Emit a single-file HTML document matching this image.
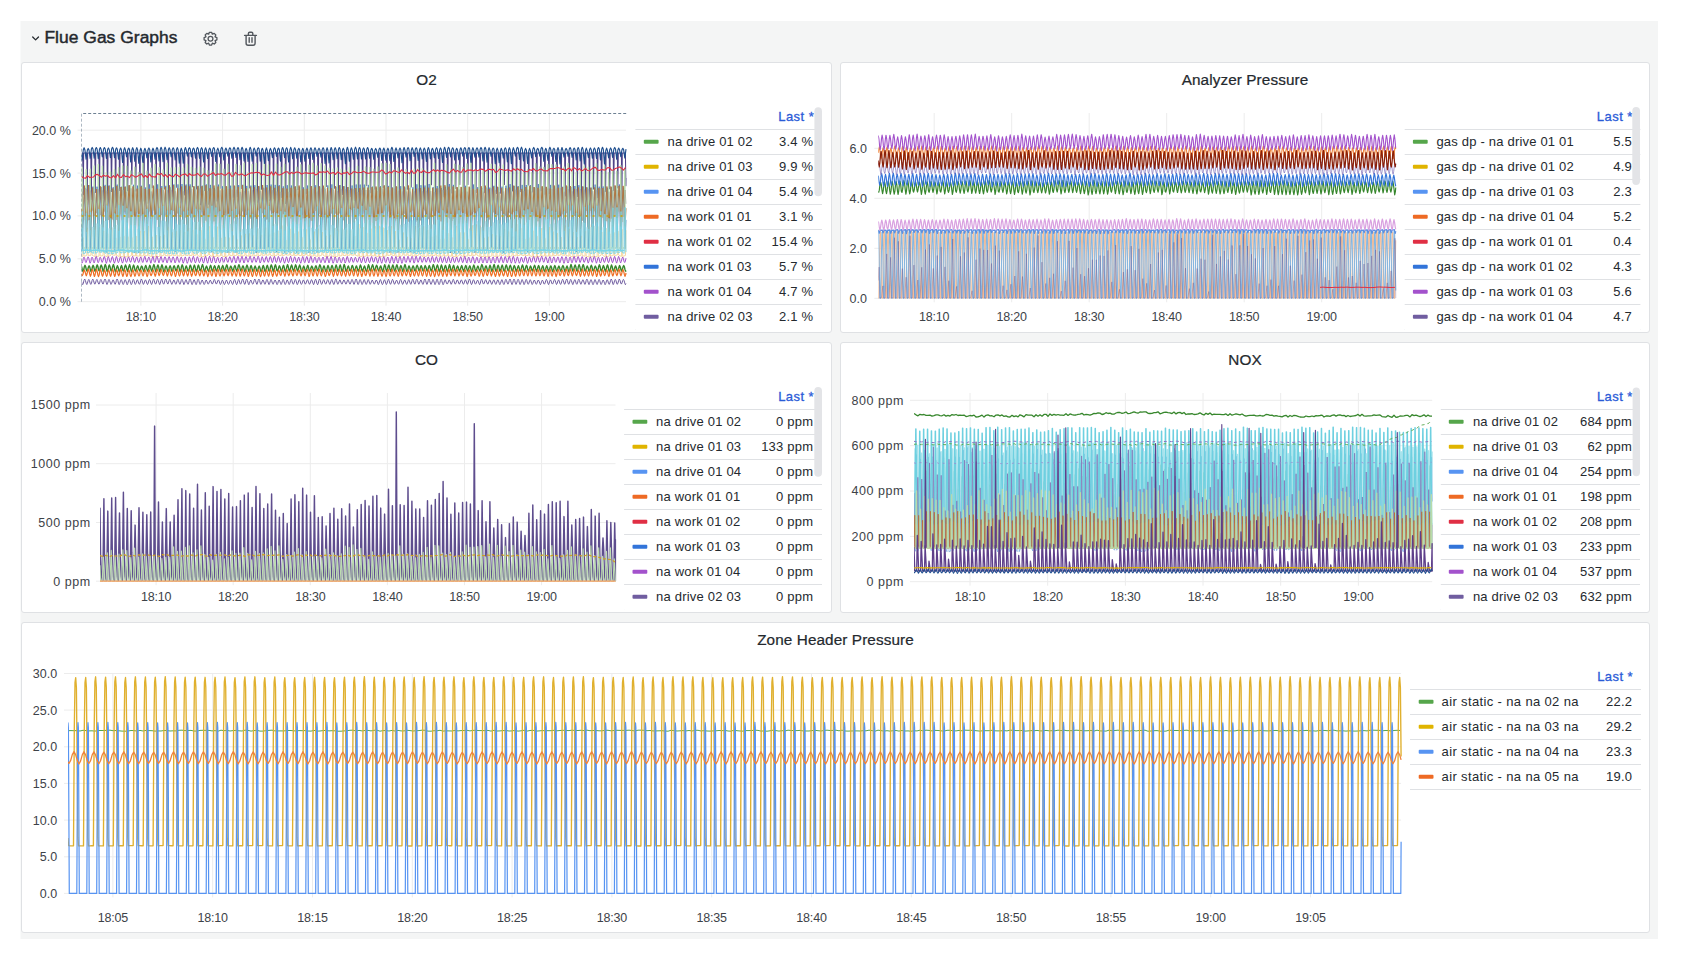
<!DOCTYPE html><html><head><meta charset="utf-8"><style>html,body{margin:0;padding:0;background:#fff;width:1682px;height:972px;overflow:hidden}svg{display:block}text{font-family:"Liberation Sans", sans-serif}</style></head><body>
<svg width="1682" height="972" viewBox="0 0 1682 972">
<rect x="20.5" y="21" width="1637.5" height="918" fill="#f4f5f5"/>
<path d="M32.7 37.0 L35.6 39.9 L38.5 37.0" fill="none" stroke="#24292e" stroke-width="1.3" stroke-linecap="round" stroke-linejoin="round"/>
<text x="44.4" y="43.2" font-size="17.4" text-anchor="start" fill="#24292e" font-weight="400" letter-spacing="0.05" stroke="#24292e" stroke-width="0.45">Flue Gas Graphs</text>
<path d="M208.66 34.16 L209.37 32.30 L211.63 32.30 L212.34 34.16 L212.41 34.19 L214.23 33.38 L215.82 34.97 L215.01 36.79 L215.04 36.86 L216.90 37.57 L216.90 39.83 L215.04 40.54 L215.01 40.61 L215.82 42.43 L214.23 44.02 L212.41 43.21 L212.34 43.24 L211.63 45.10 L209.37 45.10 L208.66 43.24 L208.59 43.21 L206.77 44.02 L205.18 42.43 L205.99 40.61 L205.96 40.54 L204.10 39.83 L204.10 37.57 L205.96 36.86 L205.99 36.79 L205.18 34.97 L206.77 33.38 L208.59 34.19Z" fill="none" stroke="#52575d" stroke-width="1.3" stroke-linejoin="round"/>
<circle cx="210.5" cy="38.7" r="2.4" fill="none" stroke="#52575d" stroke-width="1.3"/>
<g fill="none" stroke="#52575d" stroke-width="1.4" stroke-linecap="round" stroke-linejoin="round"><path d="M244.6 35.4 H256.4"/><path d="M248.4 35.2 V33.6 Q248.4 32.3 249.7 32.3 H251.5 Q252.8 32.3 252.8 33.6 V35.2"/><path d="M246.1 35.6 V43.3 Q246.1 45.3 248.1 45.3 H253.1 Q255.1 45.3 255.1 43.3 V35.6"/><path d="M249.2 37.8 V42.3"/><path d="M252 37.8 V42.3"/></g>
<rect x="21.5" y="62.5" width="810" height="270" rx="2.5" fill="#fff" stroke="#dfe1e4" stroke-width="1"/>
<rect x="840.5" y="62.5" width="809" height="270" rx="2.5" fill="#fff" stroke="#dfe1e4" stroke-width="1"/>
<rect x="21.5" y="342.5" width="810" height="270" rx="2.5" fill="#fff" stroke="#dfe1e4" stroke-width="1"/>
<rect x="840.5" y="342.5" width="809" height="270" rx="2.5" fill="#fff" stroke="#dfe1e4" stroke-width="1"/>
<rect x="21.5" y="622.5" width="1628" height="310" rx="2.5" fill="#fff" stroke="#dfe1e4" stroke-width="1"/>
<text x="426.5" y="84.7" font-size="15.3" text-anchor="middle" fill="#24292e" font-weight="400" letter-spacing="0.1" stroke="#24292e" stroke-width="0.22">O2</text>
<text x="1245.0" y="84.7" font-size="15.3" text-anchor="middle" fill="#24292e" font-weight="400" letter-spacing="0.1" stroke="#24292e" stroke-width="0.22">Analyzer Pressure</text>
<text x="426.5" y="364.7" font-size="15.3" text-anchor="middle" fill="#24292e" font-weight="400" letter-spacing="0.1" stroke="#24292e" stroke-width="0.22">CO</text>
<text x="1245.0" y="364.7" font-size="15.3" text-anchor="middle" fill="#24292e" font-weight="400" letter-spacing="0.1" stroke="#24292e" stroke-width="0.22">NOX</text>
<text x="835.5" y="644.7" font-size="15.3" text-anchor="middle" fill="#24292e" font-weight="400" letter-spacing="0.1" stroke="#24292e" stroke-width="0.22">Zone Header Pressure</text>
<line x1="77.5" y1="130.2" x2="626" y2="130.2" stroke="#ececec" stroke-width="1"/>
<text x="70.8" y="134.6" font-size="12.5" text-anchor="end" fill="#3d4248" font-weight="400" letter-spacing="0">20.0 %</text>
<line x1="77.5" y1="173.1" x2="626" y2="173.1" stroke="#ececec" stroke-width="1"/>
<text x="70.8" y="177.5" font-size="12.5" text-anchor="end" fill="#3d4248" font-weight="400" letter-spacing="0">15.0 %</text>
<line x1="77.5" y1="215.9" x2="626" y2="215.9" stroke="#ececec" stroke-width="1"/>
<text x="70.8" y="220.3" font-size="12.5" text-anchor="end" fill="#3d4248" font-weight="400" letter-spacing="0">10.0 %</text>
<line x1="77.5" y1="258.8" x2="626" y2="258.8" stroke="#ececec" stroke-width="1"/>
<text x="70.8" y="263.2" font-size="12.5" text-anchor="end" fill="#3d4248" font-weight="400" letter-spacing="0">5.0 %</text>
<line x1="77.5" y1="301.7" x2="626" y2="301.7" stroke="#ececec" stroke-width="1"/>
<text x="70.8" y="306.1" font-size="12.5" text-anchor="end" fill="#3d4248" font-weight="400" letter-spacing="0">0.0 %</text>
<line x1="140.9" y1="113" x2="140.9" y2="305.7" stroke="#ececec" stroke-width="1"/>
<text x="140.9" y="320.6" font-size="12.5" text-anchor="middle" fill="#3d4248" font-weight="400" letter-spacing="-0.2">18:10</text>
<line x1="222.6" y1="113" x2="222.6" y2="305.7" stroke="#ececec" stroke-width="1"/>
<text x="222.6" y="320.6" font-size="12.5" text-anchor="middle" fill="#3d4248" font-weight="400" letter-spacing="-0.2">18:20</text>
<line x1="304.3" y1="113" x2="304.3" y2="305.7" stroke="#ececec" stroke-width="1"/>
<text x="304.3" y="320.6" font-size="12.5" text-anchor="middle" fill="#3d4248" font-weight="400" letter-spacing="-0.2">18:30</text>
<line x1="386.0" y1="113" x2="386.0" y2="305.7" stroke="#ececec" stroke-width="1"/>
<text x="386.0" y="320.6" font-size="12.5" text-anchor="middle" fill="#3d4248" font-weight="400" letter-spacing="-0.2">18:40</text>
<line x1="467.7" y1="113" x2="467.7" y2="305.7" stroke="#ececec" stroke-width="1"/>
<text x="467.7" y="320.6" font-size="12.5" text-anchor="middle" fill="#3d4248" font-weight="400" letter-spacing="-0.2">18:50</text>
<line x1="549.4" y1="113" x2="549.4" y2="305.7" stroke="#ececec" stroke-width="1"/>
<text x="549.4" y="320.6" font-size="12.5" text-anchor="middle" fill="#3d4248" font-weight="400" letter-spacing="-0.2">19:00</text>
<line x1="874.3" y1="148.3" x2="1395.8" y2="148.3" stroke="#ececec" stroke-width="1"/>
<text x="867.0" y="152.7" font-size="12.5" text-anchor="end" fill="#3d4248" font-weight="400" letter-spacing="0">6.0</text>
<line x1="874.3" y1="198.3" x2="1395.8" y2="198.3" stroke="#ececec" stroke-width="1"/>
<text x="867.0" y="202.7" font-size="12.5" text-anchor="end" fill="#3d4248" font-weight="400" letter-spacing="0">4.0</text>
<line x1="874.3" y1="248.3" x2="1395.8" y2="248.3" stroke="#ececec" stroke-width="1"/>
<text x="867.0" y="252.7" font-size="12.5" text-anchor="end" fill="#3d4248" font-weight="400" letter-spacing="0">2.0</text>
<line x1="874.3" y1="298.3" x2="1395.8" y2="298.3" stroke="#ececec" stroke-width="1"/>
<text x="867.0" y="302.7" font-size="12.5" text-anchor="end" fill="#3d4248" font-weight="400" letter-spacing="0">0.0</text>
<line x1="934.2" y1="113" x2="934.2" y2="302.3" stroke="#ececec" stroke-width="1"/>
<text x="934.2" y="320.6" font-size="12.5" text-anchor="middle" fill="#3d4248" font-weight="400" letter-spacing="-0.2">18:10</text>
<line x1="1011.7" y1="113" x2="1011.7" y2="302.3" stroke="#ececec" stroke-width="1"/>
<text x="1011.7" y="320.6" font-size="12.5" text-anchor="middle" fill="#3d4248" font-weight="400" letter-spacing="-0.2">18:20</text>
<line x1="1089.2" y1="113" x2="1089.2" y2="302.3" stroke="#ececec" stroke-width="1"/>
<text x="1089.2" y="320.6" font-size="12.5" text-anchor="middle" fill="#3d4248" font-weight="400" letter-spacing="-0.2">18:30</text>
<line x1="1166.7" y1="113" x2="1166.7" y2="302.3" stroke="#ececec" stroke-width="1"/>
<text x="1166.7" y="320.6" font-size="12.5" text-anchor="middle" fill="#3d4248" font-weight="400" letter-spacing="-0.2">18:40</text>
<line x1="1244.2" y1="113" x2="1244.2" y2="302.3" stroke="#ececec" stroke-width="1"/>
<text x="1244.2" y="320.6" font-size="12.5" text-anchor="middle" fill="#3d4248" font-weight="400" letter-spacing="-0.2">18:50</text>
<line x1="1321.7" y1="113" x2="1321.7" y2="302.3" stroke="#ececec" stroke-width="1"/>
<text x="1321.7" y="320.6" font-size="12.5" text-anchor="middle" fill="#3d4248" font-weight="400" letter-spacing="-0.2">19:00</text>
<line x1="96" y1="405.0" x2="615.5" y2="405.0" stroke="#ececec" stroke-width="1"/>
<text x="90.8" y="409.4" font-size="12.5" text-anchor="end" fill="#3d4248" font-weight="400" letter-spacing="0.55">1500 ppm</text>
<line x1="96" y1="463.7" x2="615.5" y2="463.7" stroke="#ececec" stroke-width="1"/>
<text x="90.8" y="468.1" font-size="12.5" text-anchor="end" fill="#3d4248" font-weight="400" letter-spacing="0.55">1000 ppm</text>
<line x1="96" y1="522.5" x2="615.5" y2="522.5" stroke="#ececec" stroke-width="1"/>
<text x="90.8" y="526.9" font-size="12.5" text-anchor="end" fill="#3d4248" font-weight="400" letter-spacing="0.55">500 ppm</text>
<line x1="96" y1="581.2" x2="615.5" y2="581.2" stroke="#ececec" stroke-width="1"/>
<text x="90.8" y="585.6" font-size="12.5" text-anchor="end" fill="#3d4248" font-weight="400" letter-spacing="0.55">0 ppm</text>
<line x1="156.1" y1="393" x2="156.1" y2="585.2" stroke="#ececec" stroke-width="1"/>
<text x="156.1" y="600.8" font-size="12.5" text-anchor="middle" fill="#3d4248" font-weight="400" letter-spacing="-0.2">18:10</text>
<line x1="233.2" y1="393" x2="233.2" y2="585.2" stroke="#ececec" stroke-width="1"/>
<text x="233.2" y="600.8" font-size="12.5" text-anchor="middle" fill="#3d4248" font-weight="400" letter-spacing="-0.2">18:20</text>
<line x1="310.3" y1="393" x2="310.3" y2="585.2" stroke="#ececec" stroke-width="1"/>
<text x="310.3" y="600.8" font-size="12.5" text-anchor="middle" fill="#3d4248" font-weight="400" letter-spacing="-0.2">18:30</text>
<line x1="387.4" y1="393" x2="387.4" y2="585.2" stroke="#ececec" stroke-width="1"/>
<text x="387.4" y="600.8" font-size="12.5" text-anchor="middle" fill="#3d4248" font-weight="400" letter-spacing="-0.2">18:40</text>
<line x1="464.5" y1="393" x2="464.5" y2="585.2" stroke="#ececec" stroke-width="1"/>
<text x="464.5" y="600.8" font-size="12.5" text-anchor="middle" fill="#3d4248" font-weight="400" letter-spacing="-0.2">18:50</text>
<line x1="541.6" y1="393" x2="541.6" y2="585.2" stroke="#ececec" stroke-width="1"/>
<text x="541.6" y="600.8" font-size="12.5" text-anchor="middle" fill="#3d4248" font-weight="400" letter-spacing="-0.2">19:00</text>
<line x1="910" y1="400.3" x2="1432.2" y2="400.3" stroke="#ececec" stroke-width="1"/>
<text x="904.0" y="404.7" font-size="12.5" text-anchor="end" fill="#3d4248" font-weight="400" letter-spacing="0.55">800 ppm</text>
<line x1="910" y1="445.7" x2="1432.2" y2="445.7" stroke="#ececec" stroke-width="1"/>
<text x="904.0" y="450.1" font-size="12.5" text-anchor="end" fill="#3d4248" font-weight="400" letter-spacing="0.55">600 ppm</text>
<line x1="910" y1="491.0" x2="1432.2" y2="491.0" stroke="#ececec" stroke-width="1"/>
<text x="904.0" y="495.4" font-size="12.5" text-anchor="end" fill="#3d4248" font-weight="400" letter-spacing="0.55">400 ppm</text>
<line x1="910" y1="536.4" x2="1432.2" y2="536.4" stroke="#ececec" stroke-width="1"/>
<text x="904.0" y="540.8" font-size="12.5" text-anchor="end" fill="#3d4248" font-weight="400" letter-spacing="0.55">200 ppm</text>
<line x1="910" y1="581.7" x2="1432.2" y2="581.7" stroke="#ececec" stroke-width="1"/>
<text x="904.0" y="586.1" font-size="12.5" text-anchor="end" fill="#3d4248" font-weight="400" letter-spacing="0.55">0 ppm</text>
<line x1="970.0" y1="393" x2="970.0" y2="585.7" stroke="#ececec" stroke-width="1"/>
<text x="970.0" y="600.8" font-size="12.5" text-anchor="middle" fill="#3d4248" font-weight="400" letter-spacing="-0.2">18:10</text>
<line x1="1047.7" y1="393" x2="1047.7" y2="585.7" stroke="#ececec" stroke-width="1"/>
<text x="1047.7" y="600.8" font-size="12.5" text-anchor="middle" fill="#3d4248" font-weight="400" letter-spacing="-0.2">18:20</text>
<line x1="1125.4" y1="393" x2="1125.4" y2="585.7" stroke="#ececec" stroke-width="1"/>
<text x="1125.4" y="600.8" font-size="12.5" text-anchor="middle" fill="#3d4248" font-weight="400" letter-spacing="-0.2">18:30</text>
<line x1="1203.0" y1="393" x2="1203.0" y2="585.7" stroke="#ececec" stroke-width="1"/>
<text x="1203.0" y="600.8" font-size="12.5" text-anchor="middle" fill="#3d4248" font-weight="400" letter-spacing="-0.2">18:40</text>
<line x1="1280.7" y1="393" x2="1280.7" y2="585.7" stroke="#ececec" stroke-width="1"/>
<text x="1280.7" y="600.8" font-size="12.5" text-anchor="middle" fill="#3d4248" font-weight="400" letter-spacing="-0.2">18:50</text>
<line x1="1358.4" y1="393" x2="1358.4" y2="585.7" stroke="#ececec" stroke-width="1"/>
<text x="1358.4" y="600.8" font-size="12.5" text-anchor="middle" fill="#3d4248" font-weight="400" letter-spacing="-0.2">19:00</text>
<line x1="64" y1="673.5" x2="1401.1" y2="673.5" stroke="#ececec" stroke-width="1"/>
<text x="57.2" y="677.9" font-size="12.5" text-anchor="end" fill="#3d4248" font-weight="400" letter-spacing="0">30.0</text>
<line x1="64" y1="710.1" x2="1401.1" y2="710.1" stroke="#ececec" stroke-width="1"/>
<text x="57.2" y="714.5" font-size="12.5" text-anchor="end" fill="#3d4248" font-weight="400" letter-spacing="0">25.0</text>
<line x1="64" y1="746.8" x2="1401.1" y2="746.8" stroke="#ececec" stroke-width="1"/>
<text x="57.2" y="751.2" font-size="12.5" text-anchor="end" fill="#3d4248" font-weight="400" letter-spacing="0">20.0</text>
<line x1="64" y1="783.4" x2="1401.1" y2="783.4" stroke="#ececec" stroke-width="1"/>
<text x="57.2" y="787.8" font-size="12.5" text-anchor="end" fill="#3d4248" font-weight="400" letter-spacing="0">15.0</text>
<line x1="64" y1="820.1" x2="1401.1" y2="820.1" stroke="#ececec" stroke-width="1"/>
<text x="57.2" y="824.5" font-size="12.5" text-anchor="end" fill="#3d4248" font-weight="400" letter-spacing="0">10.0</text>
<line x1="64" y1="856.8" x2="1401.1" y2="856.8" stroke="#ececec" stroke-width="1"/>
<text x="57.2" y="861.1" font-size="12.5" text-anchor="end" fill="#3d4248" font-weight="400" letter-spacing="0">5.0</text>
<line x1="64" y1="893.4" x2="1401.1" y2="893.4" stroke="#ececec" stroke-width="1"/>
<text x="57.2" y="897.8" font-size="12.5" text-anchor="end" fill="#3d4248" font-weight="400" letter-spacing="0">0.0</text>
<line x1="112.9" y1="673" x2="112.9" y2="897.4" stroke="#ececec" stroke-width="1"/>
<text x="112.9" y="921.6" font-size="12.5" text-anchor="middle" fill="#3d4248" font-weight="400" letter-spacing="-0.2">18:05</text>
<line x1="212.7" y1="673" x2="212.7" y2="897.4" stroke="#ececec" stroke-width="1"/>
<text x="212.7" y="921.6" font-size="12.5" text-anchor="middle" fill="#3d4248" font-weight="400" letter-spacing="-0.2">18:10</text>
<line x1="312.5" y1="673" x2="312.5" y2="897.4" stroke="#ececec" stroke-width="1"/>
<text x="312.5" y="921.6" font-size="12.5" text-anchor="middle" fill="#3d4248" font-weight="400" letter-spacing="-0.2">18:15</text>
<line x1="412.3" y1="673" x2="412.3" y2="897.4" stroke="#ececec" stroke-width="1"/>
<text x="412.3" y="921.6" font-size="12.5" text-anchor="middle" fill="#3d4248" font-weight="400" letter-spacing="-0.2">18:20</text>
<line x1="512.1" y1="673" x2="512.1" y2="897.4" stroke="#ececec" stroke-width="1"/>
<text x="512.1" y="921.6" font-size="12.5" text-anchor="middle" fill="#3d4248" font-weight="400" letter-spacing="-0.2">18:25</text>
<line x1="611.9" y1="673" x2="611.9" y2="897.4" stroke="#ececec" stroke-width="1"/>
<text x="611.9" y="921.6" font-size="12.5" text-anchor="middle" fill="#3d4248" font-weight="400" letter-spacing="-0.2">18:30</text>
<line x1="711.7" y1="673" x2="711.7" y2="897.4" stroke="#ececec" stroke-width="1"/>
<text x="711.7" y="921.6" font-size="12.5" text-anchor="middle" fill="#3d4248" font-weight="400" letter-spacing="-0.2">18:35</text>
<line x1="811.5" y1="673" x2="811.5" y2="897.4" stroke="#ececec" stroke-width="1"/>
<text x="811.5" y="921.6" font-size="12.5" text-anchor="middle" fill="#3d4248" font-weight="400" letter-spacing="-0.2">18:40</text>
<line x1="911.3" y1="673" x2="911.3" y2="897.4" stroke="#ececec" stroke-width="1"/>
<text x="911.3" y="921.6" font-size="12.5" text-anchor="middle" fill="#3d4248" font-weight="400" letter-spacing="-0.2">18:45</text>
<line x1="1011.1" y1="673" x2="1011.1" y2="897.4" stroke="#ececec" stroke-width="1"/>
<text x="1011.1" y="921.6" font-size="12.5" text-anchor="middle" fill="#3d4248" font-weight="400" letter-spacing="-0.2">18:50</text>
<line x1="1110.9" y1="673" x2="1110.9" y2="897.4" stroke="#ececec" stroke-width="1"/>
<text x="1110.9" y="921.6" font-size="12.5" text-anchor="middle" fill="#3d4248" font-weight="400" letter-spacing="-0.2">18:55</text>
<line x1="1210.7" y1="673" x2="1210.7" y2="897.4" stroke="#ececec" stroke-width="1"/>
<text x="1210.7" y="921.6" font-size="12.5" text-anchor="middle" fill="#3d4248" font-weight="400" letter-spacing="-0.2">19:00</text>
<line x1="1310.5" y1="673" x2="1310.5" y2="897.4" stroke="#ececec" stroke-width="1"/>
<text x="1310.5" y="921.6" font-size="12.5" text-anchor="middle" fill="#3d4248" font-weight="400" letter-spacing="-0.2">19:05</text>
<clipPath id="c1"><rect x="81.5" y="113" width="545.5" height="189"/></clipPath>
<g clip-path="url(#c1)"><path d="M81.5 301.7V113.4H626.6" fill="none" stroke="#5d7387" stroke-width="1" stroke-dasharray="3 2"/><path d="M81.5 153l1.2 0 .5 41.7 .5-41.7 3.1 0 .4 46.7 .5-46.7 3.1 0 .5 46.4 .5-46.4 3 0 .5 39.5 .5-39.5 3.1 0 .5 53.1 .5-53.1 3.1 0 .4 52.6 .5-52.6 3.1 0 .5 58.7 .5-58.7 3 0 .5 38.5 .5-38.5 3.1 0 .5 54.5 .5-54.5 3.1 0 .4 37.5 .5-37.5 3.1 0 .5 58.9 .5-58.9 3 0 .5 37.9 .5-37.9 3.1 0 .5 31.2 .5-31.2 3 0 .5 38.1 .5-38.1 3.1 0 .5 48.2 .5-48.2 3 0 .5 47.9 .5-47.9 3.1 0 .5 50.2 .5-50.2 3.1 0 .4 34.7 .5-34.7 3.1 0 .5 60.5 .5-60.5 3.1 0 .4 52.9 .5-52.9 3.1 0 .5 36.1 .5-36.1 3.1 0 .4 53 .5-53 3.1 0 .5 44 .5-44 3 0 .5 34.2 .5-34.2 3.1 0 .5 49.8 .5-49.8 3 0 .5 41.9 .5-41.9 3.1 0 .5 57.4 .5-57.4 3.1 0 .4 33.8 .5-33.8 3.1 0 .5 35.9 .5-35.9 3 0 .5 51.7 .5-51.7 3.1 0 .5 37.5 .5-37.5 3 0 .5 51.2 .5-51.2 3.1 0 .5 57.2 .5-57.2 3.1 0 .4 47.9 .5-47.9 3.1 0 .5 35.3 .5-35.3 3 0 .5 59.3 .5-59.3 3.1 0 .5 57.2 .5-57.2 3.1 0 .4 44.3 .5-44.3 3.1 0 .5 43.7 .5-43.7 3 0 .5 35.6 .5-35.6 3.1 0 .5 58.1 .5-58.1 3.1 0 .4 35 .5-35 3.1 0 .5 48.3 .5-48.3 3.1 0 .4 49.3 .5-49.3 3.1 0 .5 36.2 .5-36.2 3 0 .5 51.9 .5-51.9 3.1 0 .5 47.5 .5-47.5 3.1 0 .4 45.7 .5-45.7 3.1 0 .5 55.6 .5-55.6 3 0 .5 44.5 .5-44.5 3.1 0 .5 50.5 .5-50.5 3 0 .5 44.3 .5-44.3 3.1 0 .5 60 .5-60 3 0 .5 36.5 .5-36.5 3.1 0 .5 61.6 .5-61.6 3 0 .5 40.5 .5-40.5 3.1 0 .5 57.5 .5-57.5 3.1 0 .4 55.3 .5-55.3 3.1 0 .5 62.1 .5-62.1 3 0 .5 60.8 .5-60.8 3.1 0 .5 33.4 .5-33.4 3.1 0 .4 53.4 .5-53.4 3.1 0 .5 35.2 .5-35.2 3 0 .5 49.8 .5-49.8 3.1 0 .5 41.5 .5-41.5 3 0 .5 61 .5-61 3.1 0 .5 43.7 .5-43.7 3 0 .5 47.4 .5-47.4 3.1 0 .5 62.9 .5-62.9 3 0 .5 60.6 .5-60.6 3.1 0 .5 32.5 .5-32.5 3 0 .5 39.8 .5-39.8 3.1 0 .5 36.2 .5-36.2 3 0 .5 52.6 .5-52.6 3.1 0 .5 34.4 .5-34.4 3 0 .5 57.7 .5-57.7 3.1 0 .5 57.6 .5-57.6 3 0 .5 48 .5-48 3.1 0 .5 53.7 .5-53.7 3 0 .5 59.4 .5-59.4 3.1 0 .5 36.2 .5-36.2 3.1 0 .4 34 .5-34 3.1 0 .5 48.2 .5-48.2 3 0 .5 47.9 .5-47.9 3.1 0 .5 55.8 .5-55.8 3 0 .5 52.7 .5-52.7 3.1 0 .5 31.7 .5-31.7 3 0 .5 60.9 .5-60.9 3.1 0 .5 62.9 .5-62.9 3 0 .5 43.7 .5-43.7 3.1 0 .5 53.8 .5-53.8 3 0 .5 40 .5-40 3.1 0 .5 35.5 .5-35.5 3 0 .5 31.6 .5-31.6 3.1 0 .5 53.9 .5-53.9 3 0 .5 31.5 .5-31.5 3.1 0 .5 60.6 .5-60.6 3 0 .5 39.6 .5-39.6 3.1 0 .5 47 .5-47 3 0 .5 39.8 .5-39.8 3.1 0 .5 50.4 .5-50.4 3 0 .5 47.2 .5-47.2 3.1 0 .5 40.4 .5-40.4 3 0 .5 40.2 .5-40.2 3.1 0 .5 31.5 .5-31.5 3 0 .5 58.9 .5-58.9 3.1 0 .5 37.9 .5-37.9 3 0 .5 62.6 .5-62.6 3.1 0 .5 38.6 .5-38.6 3 0 .5 57.5 .5-57.5 3.1 0 .5 31.9 .5-31.9 3 0 .5 39 .5-39 3.1 0 .5 53.2 .5-53.2 3.1 0 .4 37.7 .5-37.7 3.1 0 .5 41.3 .5-41.3 3.1 0 .4 40.6 .5-40.6 3.1 0 .5 58 .5-58 3 0 .5 60.8 .5-60.8 3.1 0 .5 48.2 .5-48.2 3 0 .5 42.9 .5-42.9 3.1 0 .5 52 .5-52 3.1 0 .4 60.7 .5-60.7 3.1 0 .5 43.5 .5-43.5 3.1 0 .4 61.6 .5-61.6 3.1 0 .5 61.9 .5-61.9 3.1 0 .4 59.3 .5-59.3 3.1 0 .5 35.9 .5-35.9 3.1 0 .4 44.8 .5-44.8 3.1 0 .5 60.7 .5-60.7 3 0 .5 38.6 .5-38.6 3.1 0 .5 35.8 .5-35.8 3 0 .5 37.5 .5-37.5 3.1 0 .5 35 .5-35 3.1 0 .4 56.1 .5-56.1 3.1 0 .5 32.8 .1-7.7" fill="none" stroke="#4f4388" stroke-width="1.05" stroke-linejoin="round"/><path d="M81.5 248l.2 0 .4-80.5 .4 80.5 3.3 0 .4-78.4 .4 78.4 3.2 0 .4-78.7 .4 78.7 3.2 0 .5-82 .4 82 3.2 0 .4-83.6 .4 83.6 3.3 0 .4-81.9 .4 81.9 3.2 0 .4-75.4 .4 75.4 3.2 0 .5-76.1 .4 76.1 3.2 0 .4-78.3 .4 78.3 3.3 0 .4-80.4 .4 80.4 3.2 0 .4-82 .4 82 3.2 0 .5-81.9 .4 81.9 3.2 0 .4-77.1 .4 77.1 3.2 0 .5-80.8 .4 80.8 3.2 0 .4-75.5 .4 75.5 3.2 0 .5-84.6 .4 84.6 3.2 0 .4-76.7 .4 76.7 3.3 0 .4-79.8 .4 79.8 3.2 0 .4-83.5 .4 83.5 3.3 0 .4-80.4 .4 80.4 3.2 0 .4-78 .4 78 3.3 0 .4-84.9 .4 84.9 3.2 0 .4-80.1 .4 80.1 3.2 0 .5-80.2 .4 80.2 3.2 0 .4-80.5 .4 80.5 3.2 0 .5-80 .4 80 3.2 0 .4-83.6 .4 83.6 3.3 0 .4-80.9 .4 80.9 3.2 0 .4-79.6 .4 79.6 3.2 0 .5-81 .4 81 3.2 0 .4-79.9 .4 79.9 3.2 0 .5-77.2 .4 77.2 3.2 0 .4-76.8 .4 76.8 3.3 0 .4-84 .4 84 3.2 0 .4-83.8 .4 83.8 3.2 0 .5-78.7 .4 78.7 3.2 0 .4-83.9 .4 83.9 3.3 0 .4-75.6 .4 75.6 3.2 0 .4-83.5 .4 83.5 3.2 0 .5-82.4 .4 82.4 3.2 0 .4-84.9 .4 84.9 3.3 0 .4-75.8 .4 75.8 3.2 0 .4-83.5 .4 83.5 3.3 0 .4-84.6 .4 84.6 3.2 0 .4-77.7 .4 77.7 3.2 0 .5-84.6 .4 84.6 3.2 0 .4-83 .4 83 3.3 0 .4-75.8 .4 75.8 3.2 0 .4-84 .4 84 3.2 0 .5-80.8 .4 80.8 3.2 0 .4-83.8 .4 83.8 3.2 0 .5-76.6 .4 76.6 3.2 0 .4-76.2 .4 76.2 3.2 0 .5-80.7 .4 80.7 3.2 0 .4-83.2 .4 83.2 3.2 0 .5-76.7 .4 76.7 3.2 0 .4-82.9 .4 82.9 3.3 0 .4-84.8 .4 84.8 3.2 0 .4-82.1 .4 82.1 3.2 0 .5-84.2 .4 84.2 3.2 0 .4-82 .4 82 3.3 0 .4-79.7 .4 79.7 3.2 0 .4-79.1 .4 79.1 3.2 0 .5-80.1 .4 80.1 3.2 0 .4-78.7 .4 78.7 3.2 0 .5-77.8 .4 77.8 3.2 0 .4-80.4 .4 80.4 3.2 0 .5-77.7 .4 77.7 3.2 0 .4-81.7 .4 81.7 3.2 0 .5-77.9 .4 77.9 3.2 0 .4-81.1 .4 81.1 3.2 0 .5-80.5 .4 80.5 3.2 0 .4-78.7 .4 78.7 3.2 0 .5-81 .4 81 3.2 0 .4-84.4 .4 84.4 3.2 0 .5-84.8 .4 84.8 3.2 0 .4-83.5 .4 83.5 3.2 0 .5-78.1 .4 78.1 3.2 0 .4-80 .4 80 3.2 0 .5-76.5 .4 76.5 3.2 0 .4-78.6 .4 78.6 3.3 0 .4-75.8 .4 75.8 3.2 0 .4-78.8 .4 78.8 3.2 0 .5-79.9 .4 79.9 3.2 0 .4-79.2 .4 79.2 3.2 0 .5-77.9 .4 77.9 3.2 0 .4-75.9 .4 75.9 3.2 0 .5-84.8 .4 84.8 3.2 0 .4-77.7 .4 77.7 3.2 0 .5-76.9 .4 76.9 3.2 0 .4-83.4 .4 83.4 3.2 0 .5-78.9 .4 78.9 3.2 0 .4-83.8 .4 83.8 3.2 0 .5-82.7 .4 82.7 3.2 0 .4-80.6 .4 80.6 3.2 0 .5-84.1 .4 84.1 3.2 0 .4-84.7 .4 84.7 3.2 0 .5-78.2 .4 78.2 3.2 0 .4-77.3 .4 77.3 3.2 0 .5-77.5 .4 77.5 3.2 0 .4-76.4 .4 76.4 3.2 0 .5-83.8 .4 83.8 3.2 0 .4-83.1 .4 83.1 3.2 0 .5-81.3 .4 81.3 3.2 0 .4-83.1 .4 83.1 3.2 0 .5-75.5 .4 75.5 3.2 0 .4-77.2 .4 77.2 3.2 0 .5-80.9 .4 80.9 3.2 0 .4-79.5 .4 79.5 3.2 0 .5-75.1 .4 75.1 3.2 0 .4-78.5 .4 78.5 3.2 0 .5-75.4 .4 75.4 3.2 0 .4-84.4 .4 84.4 3.3 0 .4-81 .4 81 3.2 0 .4-80.5 .4 80.5 3.3 0 .4-83.6 .4 83.6 3.2 0 .4-83.3 .4 83.3 3.2 0 .5-83 .4 83 3.2 0 .4-78.9 .4 78.9 3.2 0 .5-80.9 .4 80.9 3.2 0 .4-84.5 .4 84.5 3.3 0 .4-79.8 .4 79.8 3.2 0 .4-75.3 .4 75.3 3.3 0 .4-78.9 .4 78.9 3.2 0 .4-82 .4 82 3.3 0 .4-80.7 .4 80.7 3.2 0 .4-78.9 .4 78.9 3.3 0 .4-84.2 .4 84.2 3.2 0 .4-75.8 .4 75.8 3.2 0 .5-82 .4 82 3.2 0 .4-75.4 .4 75.4 3.2 0 .5-77.8 .4 77.8 3.2 0 .4-76.9 .4 76.9 3.3 0 .4-82.4 .4 82.4 3.2 0 .4-78.5 .4 78.5 .8 0" fill="none" stroke="#b7dbab" stroke-width="1.4" stroke-linejoin="round"/><path d="M81.5 256l1.3 .4 .6-18.8 .6 18.8 2.8-1 .7-27.7 .6 27.7 2.8-.1 .6-27.7 .6 27.7 2.8 1.2 .7-30.4 .6 30.4 2.8-.4 .6-28.7 .6 28.7 2.8-.5 .7-24.7 .6 24.7 2.8 1.1 .6-23 .6 23 2.8-1.7 .7-26.6 .6 26.6 2.8 .3 .6-17.4 .6 17.4 2.8 1.3 .7-19.7 .6 19.7 2.8 .1 .6-20.8 .6 20.8 2.8 .2 .7-20.2 .6 20.2 2.8-1.4 .6-17.9 .6 17.9 2.8 .5 .7-19.9 .6 19.9 2.8 .1 .6-25.2 .6 25.2 2.9-.4 .6-24.8 .6 24.8 2.8-.1 .6-29.7 .6 29.7 2.8 1 .7-19.8 .6 19.8 2.8 .4 .6-21.9 .6 21.9 2.9-.9 .6-20.1 .6 20.1 2.8-.8 .6-20.5 .6 20.5 2.8 .6 .7-29.1 .6 29.1 2.8-.5 .6-23 .6 23 2.8 .1 .7-24.1 .6 24.1 2.8 .7 .6-25.9 .6 25.9 2.9-.9 .6-23.4 .6 23.4 2.8 .2 .6-27.7 .6 27.7 2.8-.1 .7-25.5 .6 25.5 2.8-.3 .6-20.7 .6 20.7 2.8 1.8 .7-26.7 .6 26.7 2.8-.5 .6-17.5 .6 17.5 2.8-1.3 .7-28.8 .6 28.8 2.8 1.5 .6-19.2 .6 19.2 2.8-.3 .7-29.7 .6 29.7 2.8-.5 .6-17.9 .6 17.9 2.9 1 .6-19.9 .6 19.9 2.8-1.4 .6-17.7 .6 17.7 2.8 .3 .7-20.2 .6 20.2 2.8-.4 .6-15.8 .6 15.8 2.9 .9 .6-20.6 .6 20.6 2.8-.8 .6-21.5 .6 21.5 2.8 .8 .7-22.7 .6 22.7 2.8-.5 .6-20.1 .6 20.1 2.8 0 .7-27 .6 27 2.8-.4 .6-20.4 .6 20.4 2.9-.1 .6-27.6 .6 27.6 2.8-.1 .6-20.8 .6 20.8 2.8 1 .7-23.4 .6 23.4 2.8-1 .6-24.1 .6 24.1 2.8 .6 .7-30.2 .6 30.2 2.8-.7 .6-15 .6 15 2.8 .2 .7-26.4 .6 26.4 2.8 .3 .6-21.9 .6 21.9 2.8-.3 .7-23.7 .6 23.7 2.8 .5 .6-18.3 .6 18.3 2.9-.7 .6-25.6 .6 25.6 2.8 1 .6-16.5 .6 16.5 2.8 0 .7-24.4 .6 24.4 2.8 .3 .6-27.6 .6 27.6 2.9-1.2 .6-23.1 .6 23.1 2.8 1.7 .6-21 .6 21 2.8-1.3 .7-20.6 .6 20.6 2.8 1.2 .6-28.6 .6 28.6 2.8-.5 .7-26.5 .6 26.5 2.8-.7 .6-26.9 .6 26.9 2.9-.1 .6-25.8 .6 25.8 2.8-.3 .6-24.7 .6 24.7 2.8 .1 .7-19.1 .6 19.1 2.8 1 .6-32.1 .6 32.1 2.8 .3 .7-29.5 .6 29.5 2.8-.5 .6-23.1 .6 23.1 2.9-.3 .6-27.1 .6 27.1 2.8 .2 .6-29.7 .6 29.7 2.8 .8 .7-30.9 .6 30.9 2.8-.1 .6-29.1 .6 29.1 2.9-1 .6-25.4 .6 25.4 2.8-.5 .6-29 .6 29 2.8 .6 .7-24.6 .6 24.6 2.8 1.1 .6-17 .6 17 2.9-1.7 .6-22.5 .6 22.5 2.8 .2 .6-18.4 .6 18.4 2.9 .3 .6-17.3 .6 17.3 2.8 .5 .6-30.1 .6 30.1 2.8-1.1 .7-27 .6 27 2.8 1.7 .6-30.3 .6 30.3 2.9-.7 .6-26.1 .6 26.1 2.8-.3 .6-18.9 .6 18.9 2.8-.3 .7-19.9 .6 19.9 2.8 .9 .6-17.3 .6 17.3 2.8-.3 .7-17.3 .6 17.3 2.8-.1 .6-22.7 .6 22.7 2.9 .3 .6-18.8 .6 18.8 2.8 .6 .6-31 .6 31 2.8-1.5 .7-22.8 .6 22.8 2.8 1.3 .6-24.1 .6 24.1 2.9-1 .6-16.2 .6 16.2 2.8 0 .6-30.2 .6 30.2 2.8-.5 .7-30.6 .6 30.6 2.8 1.4 .6-30.8 .6 30.8 2.9-.1 .6-18.5 .6 18.5 2.8 .6 .6-20.1 .6 20.1 2.8-1.2 .7-21.8 .6 21.8 2.8 .9 .6-21.2 .6 21.2 2.8-1.1 .7-19.4 .6 19.4 2.8-.4 .6-26.3 .6 26.3 2.9 1.8 .6-25.5 .6 25.5 2.8-1.5 .6-18.9 .6 18.9 2.8 .4 .7-31.8 .6 31.8 2.8-.8 .6-27 .6 27 2.8 .6 .7-16.7 .6 16.7 2.8-.2 .6-17.9 .6 17.9 2.8 1.2 .7-26 .6 26 2.8 .3 .6-20.8 .6 20.8 2.8-1 .7-27.8 .6 27.8 2.8-.1 .6-17.5 .6 17.5 2.8 .2 .7-29 .6 29 2.8-.3 .6-24.2 .6 24.2 2.8-.4 .7-22.2 .6 22.2 2.8-.3 .6-18 .6 18 2.9 .3 .6-29.8 .6 29.8 2.8 .8 .6-27.3 .6 27.3 2.8 .6 .7-24.8 .6 24.8 2.8-.8 .6-18.6 .6 18.6 2.8-.6 .7-19.5 .6 19.5 2.8 .9 .6-25.4 .6 25.4 2.8 .6 .7-32.5 .6 32.5 2.8-.2 .6-30.4 .6 30.4 2.8 0 .7-30.2 .6 30.2 2.8-1.6 .6-23.1 .6 23.1 2.8 1.8 .7-28.8 .6 28.8 2.8-.9 .6-22.3 .6 22.3 2.8-.5 .7-23 .6 23 2.8-.5 .6-23.8 .6 23.8 2.8 1.5 .7-27.1 .6 27.1 2.8-1.1 .5-25.2" fill="none" stroke="#f4d598" stroke-width="0.9" stroke-linejoin="round"/><path d="M81.5 224.5l.5 26.4 2.8-63.1 1.2 60.8 2.9-63.6 1.2 66.4 2.8-64.8 1.3 62.2 2.8-62.1 1.2 62.7 2.8-62.3 1.2 60.6 2.9-62.8 1.2 67.5 2.8-67 1.2 63.2 2.9-61.4 1.2 63.6 2.8-66.2 1.2 65.7 2.9-63.6 1.2 61.3 2.8-61.4 1.2 61.1 2.9-62.4 1.2 62.2 2.8-62.7 1.3 68.1 2.8-67.3 1.2 67.3 2.8-67.1 1.3 64.8 2.8-63.1 1.2 63.6 2.8-66.7 1.2 66.1 2.9-64 1.2 61.6 2.8-63.7 1.2 67.8 2.9-66.1 1.2 62.1 2.8-62.4 1.3 62.5 2.8-61.1 1.2 62.8 2.8-65.6 1.2 67.5 2.9-67.5 1.2 64.3 2.8-64.6 1.2 67.3 2.9-66.9 1.2 65.7 2.8-65.8 1.2 65.5 2.9-63.2 1.2 63.5 2.8-64.4 1.2 64.1 2.9-64.2 1.2 64.9 2.8-66.2 1.3 65.4 2.8-64.9 1.2 67.3 2.8-64.4 1.3 59.6 2.8-62.8 1.2 66.6 2.8-64.9 1.3 60.8 2.8-60.3 1.2 65.9 2.8-67 1.2 63.4 2.9-62.8 1.2 66.3 2.8-67.5 1.2 63.7 2.9-64 1.2 66 2.8-64.9 1.2 62.6 2.9-62.9 1.2 61.6 2.8-62 1.2 67.7 2.9-66.6 1.2 62.4 2.8-61 1.2 61.4 2.9-64.1 1.2 62.2 2.8-62.6 1.3 63.6 2.8-63.3 1.2 67.3 2.8-67.1 1.2 63.4 2.9-62.1 1.2 66.1 2.8-67.3 1.2 66.4 2.9-66.1 1.2 64.9 2.8-64 1.2 66.3 2.9-65.7 1.2 63 2.8-62.6 1.3 61.8 2.8-63.7 1.2 67.3 2.8-66.6 1.3 65.4 2.8-66.3 1.2 67.2 2.8-66 1.2 62 2.9-60.8 1.2 62.1 2.8-64.4 1.2 63.2 2.9-64.2 1.2 63.8 2.8-61.4 1.2 61 2.9-62.8 1.2 64.7 2.8-63.5 1.2 63.1 2.9-62.2 1.2 61.4 2.8-63 1.2 64.1 2.9-65.1 1.2 63.8 2.8-63.7 1.2 66.8 2.9-66.8 1.2 66.4 2.8-66.1 1.3 66 2.8-64.3 1.2 62.5 2.8-61.4 1.2 63.2 2.9-64.7 1.2 61.1 2.8-61.7 1.3 63 2.8-62.7 1.2 66.7 2.8-65.1 1.2 59.9 2.9-60.7 1.2 65.9 2.8-66.4 1.2 61.4 2.9-60.1 1.2 62.1 2.8-61.7 1.3 64.3 2.8-64.9 1.2 65.3 2.8-68.3 1.2 67.5 2.9-66.6 1.2 62.6 2.8-62.3 1.2 65 2.9-66.5 1.2 65.7 2.8-62.6 1.2 62.9 2.9-63.9 1.2 62.7 2.8-60.9 1.2 60.6 2.9-61.8 1.2 64.2 2.8-66.9 1.3 69 2.8-68.1 1.2 68 2.8-65.2 1.2 64.7 2.9-65 1.2 62 2.8-63.6 1.3 63.3 2.8-61.4 1.2 59.5 2.8-62.7 1.2 68.2 2.9-65.5 1.2 64 2.8-63.3 1.2 62.2 2.9-62.8 1.2 62.4 2.8-62.1 1.2 59.8 2.9-61.6 1.2 64.7 2.8-63.3 1.2 62.3 2.9-62.8 1.2 66.1 2.8-67.1 1.2 62.5 2.9-64.1 1.2 68.1 2.8-66.3 1.2 63.4 2.9-63.2 1.2 61.6 2.8-62.8 1.3 63.5 2.8-63.4 1.2 67.2 2.8-67.2 1.2 62.5 2.9-60 1.2 62.8 2.8-66.2 1.2 67 2.9-64.4 1.2 64.2 2.8-63.8 1.3 62.4 2.8-64.6 1.2 66.6 2.8-65 1.2 64.7 2.9-66.5 1.2 64.5 2.8-62.4 1.3 62.5 2.8-62.9 1.2 63.4 2.8-62.8 1.2 62.1 2.9-63.1 1.2 66 2.8-66.8 1.2 62.9 2.9-61.6 1.2 61.3 2.8-60.4 1.2 61.2 2.9-61 1.2 62.6 2.8-65.6 1.3 65.5 2.8-63.4 1.2 63.2 2.8-63.4 1.2 62.7 2.9-61.4 1.2 60.2 2.8-60.8 1.2 59.9 2.9-61.1 1.2 61.4 2.8-62.9 1.2 66 2.9-62.9 1.2 61.3 1.3-29" fill="none" stroke="#4a7fb8" stroke-width="0.8" stroke-linejoin="round"/><path d="M81.5 208.8l.9 19 2-42.2 2.1 46.2 2-46.7 2 45 2-42.4 2.1 42 2-40.7 2 30.8 2-33.4 2.1 40.9 2-41.2 2 34.1 2-34.3 2.1 43.8 2-41.2 2 40.3 2-42.9 2 44.9 2.1-43.8 2 32.7 2-32.9 2.1 35.9 2-37.4 2 39.7 2-38.6 2.1 38.7 2-36.4 2 37.6 2-39.7 2.1 43.2 2-40.8 2 34.8 2-35 2 27.5 2.1-30.7 2 33.2 2-30 2.1 38.2 2-39.1 2 32.7 2-33.6 2 43.2 2.1-44.8 2 32.5 2-32.7 2.1 38.3 2-35.1 2 36.5 2-38.3 2.1 37.4 2-38.3 2 45.5 2-44.8 2.1 33.4 2-33.6 2 43 2-42.9 2 44.2 2.1-44.2 2 36.8 2-37.8 2 45.2 2.1-42.3 2 35.4 2-38.1 2.1 38.4 2-37.4 2 42.9 2-40.7 2.1 39.2 2-41.8 2 30.6 2-28.1 2 42.5 2.1-45.5 2 38.4 2-37.1 2 44.7 2.1-46.4 2 31.8 2-28.6 2 36.7 2.1-38.3 2 41.6 2-41 2.1 39.7 2-41.1 2 31.4 2-32.4 2 36.3 2.1-33.7 2 34.5 2-35.7 2.1 39.5 2-38.1 2 37.7 2-39.3 2.1 42.9 2-40.9 2 42.1 2-41.7 2 27.6 2.1-28.5 2 33.9 2-35 2 37.7 2.1-38.7 2 34.4 2-31.1 2 32.4 2.1-32.6 2 38.3 2-40.7 2 34.8 2.1-33.7 2 39.8 2-40.8 2.1 30.5 2-31.2 2 44.1 2-41.9 2 29.8 2.1-29.4 2 36.9 2-38.9 2 44 2.1-44.8 2 32.1 2-31.2 2 41.4 2.1-40.6 2 36.5 2-35.1 2.1 33.7 2-34.1 2 27.9 2-28 2.1 30.4 2-30.9 2 41.8 2-41.8 2.1 37.7 2-38.1 2 40.8 2-41.5 2 33.2 2.1-32.5 2 37.1 2-38.8 2 39 2.1-37.6 2 31.6 2-30.7 2 40.7 2.1-42.1 2 43.4 2-40.9 2.1 37.7 2-40 2 33.8 2-34.9 2.1 34.9 2-31.4 2 28 2-28.3 2 38.5 2.1-39.1 2 29.5 2-30 2 31.7 2.1-31.6 2 41 2-40.8 2.1 36.7 2-36.1 2 31.2 2-34.1 2.1 44.2 2-44.6 2 37.5 2-36 2.1 43.3 2-43.5 2 38.6 2-38.1 2 36.7 2.1-36.8 2 36.6 2-36.1 2 35.5 2.1-36.2 2 44.1 2-41.9 2 31.1 2.1-31.2 2 27.6 2-30.1 2.1 44.1 2-44.7 2 41 2-37.7 2 36.8 2.1-39 2 29.7 2-29.7 2 36.6 2.1-35.2 2 34 2-34 2 34.3 2.1-35 2 40.6 2-42.4 2.1 45.6 2-44.5 2 36.9 2-34.8 2.1 36.2 2-38 2 32.3 2-33.5 2 42.3 2.1-41.2 2 39.5 2-38.7 2 39.1 2.1-40.6 2 43.5 2-43 2 32 2.1-30.3 2 41.9 2-44.9 2 44.7 2.1-42.4 2 32.5 2-33 2.1 43.5 2-45.2 2 41 2-40.6 2 32.4 2.1-29.6 2 43.1 2-44.3 2 41.1 2.1-42.1 2 36.3 2-35.4 2 41.5 2.1-41.2 2 35.7 2-36 2.1 34.9 2-34.2 2 41.7 2-41.8 2 33 2.1-34.6 2 45.2 2-45.2 2 40.1 2.1-41.2 2 32.7 2-32.2 2 40.9 2.1-40.9 2 40.6 .9-18.3" fill="none" stroke="#b07840" stroke-width="1.0" stroke-linejoin="round"/><path d="M81.5 201.6l.9-9.9 2 28.4 2-31.2 2.1 31.6 2-30 2 20 2-18.7 2.1 21.3 2-23.9 2 25.9 2-24.7 2.1 21.1 2-20.8 2 29.3 2-30 2.1 29.5 2-29 2 29.4 2-31.2 2 25.6 2.1-24.4 2 21.3 2-19.3 2 25.7 2.1-29.2 2 28.6 2-27.3 2.1 22.6 2-23.7 2 26.9 2-27.2 2.1 28.5 2-26.7 2 21.4 2-20 2 19 2.1-21.8 2 31.1 2-30.9 2.1 26.2 2-24.9 2 25 2-25.2 2 26.1 2.1-26.2 2 20.8 2-19.4 2.1 22.1 2-25.2 2 26.7 2-23.6 2.1 26.2 2-27.7 2 25.9 2-26.8 2.1 28.5 2-28 2 21.4 2-22.3 2 22.6 2.1-20.4 2 29.9 2-29.6 2 21.6 2.1-24 2 32.8 2-31.9 2.1 22.5 2-21.7 2 27.1 2-27.2 2.1 25.2 2-26.2 2 26.7 2-26.1 2 28.4 2.1-28.4 2 24.5 2-22.4 2 19.4 2.1-20.3 2 24 2-23.8 2 27.3 2.1-28.2 2 27 2-28.4 2.1 21.3 2-19.2 2 22.1 2-24.7 2 31.3 2.1-29.3 2 20 2-20.3 2.1 21.9 2-20.5 2 21.8 2-21.5 2.1 25.6 2-29.1 2 26.6 2-23 2 26.5 2.1-29.8 2 25.8 2-25.3 2 22 2.1-20.7 2 27.9 2-29.4 2 27.7 2.1-25.2 2 29.3 2-32 2 22.2 2.1-19.3 2 22.3 2-25.2 2.1 30.9 2-30.5 2 29.5 2-27.8 2 22.7 2.1-23.7 2 23.7 2-22.3 2 22.2 2.1-24.3 2 31.2 2-31.2 2 26.1 2.1-25.1 2 19.9 2-20.9 2.1 29.8 2-27 2 22.2 2-24.2 2.1 20.8 2-20.7 2 24.3 2-24.3 2.1 23.6 2-24.3 2 31.7 2-29.9 2 23.2 2.1-26 2 22.3 2-22.2 2 23.2 2.1-21.3 2 26 2-27.8 2 32 2.1-29.8 2 27.8 2-26.9 2.1 22.2 2-22.2 2 30.1 2-30.1 2.1 18.9 2-19.1 2 30.4 2-33.4 2 32 2.1-29.1 2 19.1 2-19.6 2 28.3 2.1-28.1 2 19.7 2-18.8 2.1 19 2-22.6 2 33.1 2-31.5 2.1 22.2 2-22.5 2 27.9 2-28.4 2.1 31.9 2-30.3 2 23.9 2-25.1 2 21.9 2.1-19.5 2 21.8 2-22 2 24.8 2.1-26.4 2 22 2-22.1 2 21.2 2.1-21.4 2 27.6 2-25.7 2.1 21 2-24 2 30.8 2-31 2 23.8 2.1-22.4 2 25.2 2-23.1 2 18.8 2.1-19.3 2 24.1 2-27 2 24.3 2.1-21.3 2 20.5 2-22.4 2.1 20.8 2-20.6 2 28.5 2-27.5 2.1 23.2 2-24.4 2 30.2 2-28.4 2 23.8 2.1-27.1 2 33.1 2-31.9 2 26.3 2.1-27.5 2 22.1 2-21.8 2 28 2.1-27.5 2 30.5 2-30.9 2 29.3 2.1-29.8 2 26.2 2-22.5 2.1 21.3 2-23.8 2 21.1 2-18.9 2 24.4 2.1-26.9 2 27.7 2-27.6 2 31.6 2.1-31 2 21.1 2-21.9 2 21.7 2.1-19.5 2 20.1 2-21.3 2.1 27.2 2-28.7 2 29.3 2-27.2 2 30.7 2.1-29.5 2 30 2-31.6 2 25.7 2.1-26.1 2 21.9 2-21.2 2 31.6 2.1-32 .9 13.8" fill="none" stroke="#a8b0a0" stroke-width="0.8" stroke-linejoin="round"/><path d="M81.5 253.8l0 0 .7-42.3 .4 0 .7 42.3 2.2-.8 .8-39.8 .3 0 .8 39.8 2.2-.6 .7-40.2 .4 0 .7 40.2 2.3 .9 .7-37.2 .3 0 .8 37.2 2.2-1.1 .7-43 .4 0 .7 43 2.3 0 .7-35.9 .3 0 .8 35.9 2.2 1.2 .7-47.8 .4 0 .7 47.8 2.2 .6 .8-35.5 .3 0 .8 35.5 2.2-.7 .7-39.7 .4 0 .7 39.7 2.2-1 .8-47.1 .3 0 .8 47.1 2.2 .8 .7-47.3 .4 0 .7 47.3 2.2-.7 .8-44 .3 0 .8 44 2.2-.3 .7-40.6 .4 0 .7 40.6 2.3 .8 .7-36.1 .3 0 .8 36.1 2.2 .1 .7-39 .4 0 .7 39 2.2 0 .8-38.7 .3 0 .8 38.7 2.2-.1 .7-44 .4 0 .7 44 2.2 1.1 .8-35.1 .3 0 .8 35.1 2.2-.3 .7-38.8 .4 0 .7 38.8 2.2-1.1 .8-44.4 .3 0 .8 44.4 2.2 0 .7-46.6 .4 0 .7 46.6 2.3 .9 .7-42.9 .3 0 .8 42.9 2.2 .2 .7-43.3 .4 0 .7 43.3 2.2 .2 .8-37 .3 0 .8 37 2.2-1.9 .7-44.1 .4 0 .7 44.1 2.3 1.8 .7-42.2 .3 0 .8 42.2 2.2 .2 .7-43.4 .4 0 .7 43.4 2.2-1.9 .8-38.3 .3 0 .8 38.3 2.2 1.5 .7-44.8 .4 0 .7 44.8 2.2-1.4 .8-42.5 .3 0 .8 42.5 2.2 1.7 .7-38.3 .4 0 .7 38.3 2.3-1.7 .7-43.8 .3 0 .8 43.8 2.2 0 .7-46.4 .4 0 .7 46.4 2.3 1.4 .7-46.1 .3 0 .8 46.1 2.2-.5 .7-41.8 .4 0 .7 41.8 2.2-.7 .8-37.2 .3 0 .8 37.2 2.2-.1 .7-38.3 .4 0 .7 38.3 2.2-.1 .8-41.3 .3 0 .8 41.3 2.2 .2 .7-43.6 .4 0 .7 43.6 2.2 1.5 .8-37.7 .3 0 .8 37.7 2.2-1.3 .7-35.2 .4 0 .7 35.2 2.2-.2 .8-41.9 .3 0 .8 41.9 2.2 1.3 .7-39.7 .4 0 .7 39.7 2.3-1.5 .7-33.3 .3 0 .8 33.3 2.2 .2 .7-43.8 .4 0 .7 43.8 2.3 1.1 .7-43.9 .3 0 .8 43.9 2.2-.9 .7-46.6 .4 0 .7 46.6 2.3-.4 .7-39 .3 0 .8 39 2.2 .3 .7-39.1 .4 0 .7 39.1 2.2 .2 .8-41.4 .3 0 .8 41.4 2.2 1.2 .7-42.1 .4 0 .7 42.1 2.2-.8 .8-36 .3 0 .8 36 2.2-.7 .7-45.2 .4 0 .7 45.2 2.2 1.4 .8-37.4 .3 0 .8 37.4 2.2-1.3 .7-44.8 .4 0 .7 44.8 2.2 1 .8-35.3 .3 0 .8 35.3 2.2-1.1 .7-34.1 .4 0 .7 34.1 2.3 1.4 .7-40.4 .3 0 .8 40.4 2.2-1 .7-46.3 .4 0 .7 46.3 2.2-.7 .8-33.6 .3 0 .8 33.6 2.2 .4 .7-37.6 .4 0 .7 37.6 2.2 0 .8-36 .3 0 .8 36 2.2 .7 .7-44.1 .4 0 .7 44.1 2.2-.8 .8-37.3 .3 0 .8 37.3 2.2-.3 .7-43.9 .4 0 .7 43.9 2.3 1 .7-36.2 .3 0 .8 36.2 2.2 .1 .7-44.3 .4 0 .7 44.3 2.2 .6 .8-45.9 .3 0 .8 45.9 2.2-1.8 .7-43.2 .4 0 .7 43.2 2.2 .9 .8-47.1 .3 0 .8 47.1 2.2-.5 .7-42.2 .4 0 .7 42.2 2.3 .7 .7-46.3 .3 0 .8 46.3 2.2-.4 .7-35.2 .4 0 .7 35.2 2.2 1.3 .8-39.8 .3 0 .8 39.8 2.2-.6 .7-40.2 .4 0 .7 40.2 2.2-1.1 .8-46.8 .3 0 .8 46.8 2.2-.3 .7-34.3 .4 0 .7 34.3 2.2 1.4 .8-34.9 .3 0 .8 34.9 2.2-1.4 .7-38.1 .4 0 .7 38.1 2.2 1 .8-37.8 .3 0 .8 37.8 2.2-.4 .7-33.6 .4 0 .7 33.6 2.3-.4 .7-39.6 .3 0 .8 39.6 2.2 1.3 .7-35.9 .4 0 .7 35.9 2.2 0 .8-38.6 .3 0 .8 38.6 2.2 .1 .7-35.8 .4 0 .7 35.8 2.3-.9 .7-38.1 .3 0 .8 38.1 2.2 1.1 .7-36.6 .4 0 .7 36.6 2.2-1 .8-36.7 .3 0 .8 36.7 2.2 .9 .7-40.7 .4 0 .7 40.7 2.2-.5 .8-42.8 .3 0 .8 42.8 2.2 0 .7-39.7 .4 0 .7 39.7 2.3-1 .7-38.2 .3 0 .8 38.2 2.2 1.8 .7-36.7 .4 0 .7 36.7 2.2-.5 .8-43.1 .3 0 .8 43.1 2.2 0 .7-40.4 .4 0 .7 40.4 2.2-.6 .8-36.2 .3 0 .8 36.2 2.2-.7 .7-36.7 .4 0 .7 36.7 2.2-.1 .8-38.7 .3 0 .8 38.7 2.2 .9 .7-44.8 .4 0 .7 44.8 2.2 .4 .8-41.4 .3 0 .8 41.4 2.2-.2 .7-35.3 .4 0 .7 35.3 2.2-.7 .8-47.3 .3 0 .8 47.3 2.2 .1 .7-38.1 .4 0 .7 38.1 2.2-.2 .8-45 .3 0 .8 45 2.2 1.4 .7-39.6 .4 0 .7 39.6 2.3-.9 .7-35.4 .3 0 .8 35.4 2.2-.2 .7-38.4 .4 0 .7 38.4 2.2-.3 .8-41.4 .3 0 .8 41.4 2.2 1.2 .7-35.8 .4 0 .7 35.8 2.3 .2 .7-43.4 .3 0 .8 43.4 2.2-.6 .7-43.8 .4 0 .7 43.8 2.2-.9 .8-40.3 .3 0 .8 40.3 2.2 1.4 .7-36.8 .4 0 .7 36.8 2.2-.3 .8-35.1 .3 0 .8 35.1 2.2-.8 .7-45.2 .4 0 .7 45.2 2.2 .3 .8-44 .3 0 .8 44 2.2-.5 .7-41.6 .4 0 .7 41.6 2.2 .9 .8-41.4 .3 0 .8 41.4 2.2-.7 .7-35.9 .4 0 .7 35.9 2.3 1.4 .7-42.7 .3 0 .8 42.7 2.2-1.9 .7-46.7 .4 0 .7 46.7 2.2 1.6 .8-48.1 .3 0 .8 48.1 2.2-.3 .7-40.4 .4 0 .7 40.4 2.2-.8 .8-36.5 .3 0 .8 36.5 2.2-.6 .7-45.1 .4 0 .7 45.1 2.3 .9 .7-47.6 .3 0 .8 47.6 2.2 .8 .7-45.4 .4 0 .7 45.4 2.3-1.4 .7-46.6 .3 0 .8 46.6 2.2 1 .7-42 .4 0 .7 42 2.2 0 .8-39.1 .3 0 .8 39.1 2.2 .3 .7-35.2 .4 0 .7 35.2 2.2-.2 .8-45.6 .3 0 .8 45.6 2.2-.4 .7-45.5 .4 0 .7 45.5 2.2-1 .8-40.4 .3 0 .8 40.4 2.2 1.4 .7-45.9 .4 0 .7 44.6" fill="none" stroke="#7ad5e6" stroke-width="0.9" stroke-linejoin="round"/><path d="M81.5 244.2l.2 5.7 2.2 .4 .7-34 .4 0 .7 34 2.3-1.3 .7-29 .3 0 .8 29 2.2 .5 .7-22.5 .4 0 .7 22.5 2.3 .9 .7-26.8 .3 0 .8 26.8 2.2-.3 .7-25.5 .4 0 .7 25.5 2.3-.8 .7-28.3 .3 0 .8 28.3 2.2 0 .7-20.8 .4 0 .7 20.8 2.2-.2 .8-22 .3 0 .8 22 2.2 0 .7-24.1 .4 0 .7 24.1 2.2 .6 .8-29.2 .3 0 .8 29.2 2.2 1 .7-36.4 .4 0 .7 36.4 2.2-1.6 .8-20.5 .3 0 .8 20.5 2.2 .9 .7-34.5 .4 0 .7 34.5 2.3 1 .7-21.9 .3 0 .8 21.9 2.2-1.8 .7-28.4 .4 0 .7 28.4 2.3 .1 .7-30.3 .3 0 .8 30.3 2.2 .9 .7-33.6 .4 0 .7 33.6 2.3 .2 .7-35.6 .3 0 .8 35.6 2.2-1.1 .7-22.2 .4 0 .7 22.2 2.3 .5 .7-29.1 .3 0 .8 29.1 2.2 .4 .7-28.6 .4 0 .7 28.6 2.2-.4 .8-35.3 .3 0 .8 35.3 2.2 .7 .7-21 .4 0 .7 21 2.3 .5 .7-26.4 .3 0 .8 26.4 2.2-1.3 .7-29.9 .4 0 .7 29.9 2.3 .7 .7-25.6 .3 0 .8 25.6 2.2-1.2 .7-31.4 .4 0 .7 31.4 2.2 .5 .8-27.5 .3 0 .8 27.5 2.2 .9 .7-28.6 .4 0 .7 28.6 2.2-1.5 .8-21.9 .3 0 .8 21.9 2.2 .8 .7-27.6 .4 0 .7 27.6 2.2-.5 .8-28.6 .3 0 .8 28.6 2.2 .4 .7-23.4 .4 0 .7 23.4 2.3-.6 .7-26.4 .3 0 .8 26.4 2.2 .2 .7-24.3 .4 0 .7 24.3 2.3-.3 .7-30.7 .3 0 .8 30.7 2.2 .6 .7-25.5 .4 0 .7 25.5 2.3-.6 .7-27.8 .3 0 .8 27.8 2.2 .3 .7-30.9 .4 0 .7 30.9 2.2 .6 .8-20.7 .3 0 .8 20.7 2.2 0 .7-20.7 .4 0 .7 20.7 2.2-.7 .8-20.5 .3 0 .8 20.5 2.2 .4 .7-32.7 .4 0 .7 32.7 2.3 .8 .7-21.9 .3 0 .8 21.9 2.2-1.5 .7-30.7 .4 0 .7 30.7 2.2 1.5 .8-31 .3 0 .8 31 2.2-1 .7-35.4 .4 0 .7 35.4 2.2-.4 .8-25.2 .3 0 .8 25.2 2.2 1.9 .7-21 .4 0 .7 21 2.3-1 .7-35.6 .3 0 .8 35.6 2.2-.4 .7-23 .4 0 .7 23 2.2 1.1 .8-26.5 .3 0 .8 26.5 2.2-1.2 .7-27.1 .4 0 .7 27.1 2.2 .5 .8-26 .3 0 .8 26 2.2-.5 .7-20.4 .4 0 .7 20.4 2.2 1.3 .8-34.2 .3 0 .8 34.2 2.2-1.2 .7-21.6 .4 0 .7 21.6 2.3 0 .7-20.5 .3 0 .8 20.5 2.2 .4 .7-24.9 .4 0 .7 24.9 2.3 .4 .7-33 .3 0 .8 33 2.2-.8 .7-31.5 .4 0 .7 31.5 2.2 .8 .8-25.3 .3 0 .8 25.3 2.2-1.1 .7-21.1 .4 0 .7 21.1 2.2 .5 .8-31.9 .3 0 .8 31.9 2.2 .1 .7-20.2 .4 0 .7 20.2 2.2 .2 .8-26.1 .3 0 .8 26.1 2.2 .7 .7-21.4 .4 0 .7 21.4 2.2-.3 .8-29.8 .3 0 .8 29.8 2.2-.3 .7-21.8 .4 0 .7 21.8 2.3 .4 .7-27.3 .3 0 .8 27.3 2.2-.9 .7-29.8 .4 0 .7 29.8 2.3 .8 .7-27.5 .3 0 .8 27.5 2.2-1.5 .7-23.6 .4 0 .7 23.6 2.2 1.8 .8-24 .3 0 .8 24 2.2 0 .7-22.2 .4 0 .7 22.2 2.2-.7 .8-23.5 .3 0 .8 23.5 2.2-.3 .7-34.2 .4 0 .7 34.2 2.3-.1 .7-30.7 .3 0 .8 30.7 2.2 1.2 .7-25.9 .4 0 .7 25.9 2.3-.8 .7-26.1 .3 0 .8 26.1 2.2-.9 .7-26.7 .4 0 .7 26.7 2.3 1.2 .7-30.1 .3 0 .8 30.1 2.2-.9 .7-29 .4 0 .7 29 2.2 .1 .8-24.6 .3 0 .8 24.6 2.2-.3 .7-33.9 .4 0 .7 33.9 2.2 .3 .8-24.5 .3 0 .8 24.5 2.2 .9 .7-25.9 .4 0 .7 25.9 2.2 .4 .8-31.1 .3 0 .8 31.1 2.2-1.8 .7-27.3 .4 0 .7 27.3 2.3 .8 .7-33 .3 0 .8 33 2.2 .4 .7-30.8 .4 0 .7 30.8 2.3-.8 .7-30.3 .3 0 .8 30.3 2.2 1.4 .7-36.8 .4 0 .7 36.8 2.2-1.2 .8-31.2 .3 0 .8 31.2 2.2-.3 .7-28.5 .4 0 .7 28.5 2.2 0 .8-20.7 .3 0 .8 20.7 2.2 .6 .7-24.8 .4 0 .7 24.8 2.3-.7 .7-27.9 .3 0 .8 27.9 2.2 .9 .7-22.7 .4 0 .7 22.7 2.3-.7 .7-28.1 .3 0 .8 28.1 2.2 1.2 .7-23.4 .4 0 .7 23.4 2.2-1.2 .8-26.9 .3 0 .8 26.9 2.2 1 .7-30.2 .4 0 .7 30.2 2.2-.2 .8-25.7 .3 0 .8 25.7 2.2 .6 .7-28 .4 0 .7 28 2.2-.5 .8-30.8 .3 0 .8 30.8 2.2 .1 .7-31.3 .4 0 .7 31.3 2.2-.5 .8-30.2 .3 0 .8 30.2 2.2-.4 .7-33.4 .4 0 .7 33.4 2.3-.1 .7-26.8 .3 0 .8 26.8 2.2 0 .7-34.8 .4 0 .7 34.8 2.2 1.1 .8-32 .3 0 .8 32 2.2 .3 .7-27.3 .4 0 .7 27.3 2.2-1.1 .8-21.8 .3 0 .8 21.8 2.2 1 .7-31.7 .4 0 .7 31.7 2.2-1.5 .8-25 .3 0 .8 25 2.2 1.4 .7-27 .4 0 .7 27 2.3-.1 .7-30 .3 0 .8 30 2.2-.4 .7-32 .4 0 .7 32 2.3-.4 .7-29.7 .3 0 .8 29.7 2.2 0 .7-29.4 .4 0 .7 29.4 2.2 .8 .8-33.9 .3 0 .8 33.9 2.2-1.2 .7-31.3 .4 0 .7 31.3 2.2 1.5 .8-28.5 .3 0 .8 28.5 2.2-1.8 .7-21.7 .4 0 .7 21.7 2.2 1.6 .8-23.6 .3 0 .8 23.6 2.2-1 .7-23.9 .4 0 .7 23.9 2.2-.1 .8-33.4 .3 0 .8 33.4 2.2 1.1 .7-23.4 .4 0 .7 23.4 2.2-1.3 .8-21.3 .3 0 .8 21.3 2.2-.4 .7-30.1 .4 0 .7 30.1 2.2 0 .8-32.3 .3 0 .8 32.3 2.2 .3 .7-23.8 .4 0 .7 23.8 2.2 .3 .8-32.6 .3 0 .8 32.6 1.6-.2" fill="none" stroke="#a6e0ea" stroke-width="0.7" stroke-linejoin="round"/><path d="M81.5 250.5l3-.3 3-.3 3 .8 3-.5 3 0 3 .2 3 .3 3 .4 3-.6 3 .6 3 0 3-.9 3-.2 3 .1 3 .8 3-.3 3 .4 3 .1 3-.4 3-.2 3-.5 3-.1 3 1 3-.2 3 .1 3-.2 3 .1 3 0 3 .3 3-1 3 .5 3-.2 3 .6 3 .1 3-.8 3-.2 3 .2 3 .1 3 .5 3-.4 3 .4 3-.5 3 .2 3-.4 3 .6 3-.2 3 .4 3 .1 3-.5 3-.5 3 1 3 0 3-.5 3 0 3 .5 3-.8 3 0 3 .5 3 0 3 0 3 .2 3-.4 3-.1 3-.2 3 0 3 .1 3 .1 3 .4 3-.2 3-.1 3-.1 3 .3 3-.3 3 .5 3-.2 3 0 3-.4 3 .2 3 .3 3 .2 3-.5 3-.2 3 .4 3-.7 3 .3 3-.4 3 .7 3-.4 3 .2 3 .4 3-.1 3-.8 3 .5 3-.5 3 1 3-.4 3 .4 3-.7 3 .7 3-.8 3 .8 3-.5 3-.4 3 1 3-.1 3-.8 3 .5 3-.1 3-.4 3 .3 3 .7 3-.7 3 .4 3 0 3 0 3-.2 3 .4 3-.7 3 .2 3-.1 3-.4 3 .5 3 .3 3-.2 3-.5 3 .1 3 .3 3-.5 3 .1 3 .7 3-.8 3 0 3 .1 3 .4 3-.6 3 .8 3-.1 3 .2 3 0 3 0 3-.3 3-.2 3 .3 3-.5 3 .1 3 .5 3-.1 3-.5 3 .3 3 .2 3-.4 3 .5 3-.6 3 0 3 .3 3-.2 3 .6 3-.4 3-.2 3 .7 3 0 3-.1 3-.8 3 .2 3-.2 3 .8 3-.3 3-.5 3 1 3-1 3 0 3 1 3-.6 3 .5 3-.3 3-.5 3 .4 3 .3 3-.9 3 .9 3-.5" fill="none" stroke="#7ad5e6" stroke-width="1.6" stroke-linejoin="round"/><path d="M81.5 176.6l2 1.1 2 .6 2-2.7 2 1.8 2-.2 2-.2 2-2.3 2-.3 2 1.4 2 1.4 2-2 2 1 2-.8 2 2.1 2 .3 2-2.2 2 2.4 2-3.8 2 3 2 .2 2-2.9 2 2.2 2-.6 2 1.5 2-3 2 1.3 2 1.3 2-1 2-1.3 2-1 2 3.4 2-1.8 2 2 2-3.4 2 2.6 2 0 2 .4 2-3.6 2 1.3 2-1.3 2 2.8 2-1.6 2 2.4 2-2.4 2 1.6 2 .3 2-2.5 2 1.2 2 1.6 2-1.8 2-.7 2-.4 2 2.1 2-2.4 2 1.6 2-.2 2-.1 2-1.7 2 2.1 2 1 2-2.4 2 0 2 2.3 2-1.4 2-1.2 2-1.1 2 2.9 2-1.6 2 .4 2-.8 2 1.4 2 .4 2-1.7 2-1 2 3.6 2-.3 2-3.6 2 2.2 2 .4 2-1.1 2 1.2 2 .9 2-1.5 2-.8 2-.8 2 .2 2-.5 2-.1 2 .3 2 2.5 2-1.2 2 1 2 .5 2-.5 2-3.1 2 3.5 2-3.4 2 2.7 2 .2 2-.7 2-1.1 2-1.3 2 0 2 2.2 2-1.6 2 1.1 2-1.1 2-.4 2 .5 2 1.7 2-1 2-.4 2 .3 2 .3 2-.2 2-.3 2 2 2-.9 2-2.1 2 .4 2-.6 2 .7 2-1.4 2 2.8 2-.7 2-.6 2 1.8 2-2.2 2 .9 2 1.4 2-1.5 2 .2 2-1 2 2.5 2-1 2-1.9 2 .2 2 .9 2-.3 2 0 2-1.4 2 1.5 2 .5 2 .2 2-1.3 2 0 2 .2 2 .1 2-.3 2-1.9 2 1 2 2.9 2-.7 2-1.5 2 1.2 2-2.2 2 .2 2 .9 2 .7 2-2.7 2 1.8 2 1.7 2-1.2 2 1.5 2-3.6 2 3.2 2-.4 2-3.2 2 2 2 .8 2-2.1 2 1.6 2 .8 2-.2 2-1.5 2-1.5 2 1.9 2-1.5 2 1.4 2-1.1 2 .3 2 .7 2 1.1 2 .6 2-2.3 2-1.6 2 2.9 2-1.7 2 1.7 2 .2 2-3.2 2 2.8 2-1.8 2 .1 2 0 2 .8 2-1.2 2 1 2-.9 2-.7 2 .5 2 1.7 2-1.5 2-.5 2 .6 2-.6 2 3.1 2-.9 2-2.5 2 .5 2 .5 2 .4 2-.6 2 .5 2 .9 2-2.4 2 1.6 2-1.6 2 1.4 2-.9 2 1.9 2 .3 2 .3 2-2.2 2 .8 2-1.9 2 2.2 2 .2 2-1.4 2-.5 2 1.8 2-.1 2 .2 2-2.1 2-.2 2 0 2-.3 2-.8 2 .5 2 1.4 2-.3 2 1.9 2-2.1 2-.9 2 3 2-3.4 2 1 2 1.7 2-1.8 2 2.5 2-.9 2-1.8 2 2.2 2 .2 2-1.6 2-1.5 2-.2 2 2.8 2 .2 2-.9 2 .4 2 .1 2-2.3 2-.1 2 2.6 2-.2 2-1.6 2-.7 2-.8 2 1.3 2 2 2-2.9" fill="none" stroke="#e02f44" stroke-width="1.1" stroke-linejoin="round"/><path d="M81.5 216H626" fill="none" stroke="#cca300" stroke-width="1.5" stroke-dasharray="2 5"/><path d="M81.5 155.2l.6 5 1.2-10.5 .8-1.9 .8 1.9 1.2 9.4 1.3-9.1 .8-1.6 .8 1.6 1.2 8.3 1.2-9.3 .8-1.6 .8 1.6 1.2 9.1 1.3-9 .8-1.6 .8 1.6 1.2 9.5 1.2-9.4 .8-1.7 .8 1.7 1.2 7.7 1.3-7.9 .8-1.4 .8 1.4 1.2 9.5 1.2-9 .8-1.6 .8 1.6 1.2 8.1 1.3-8.8 .8-1.5 .8 1.5 1.2 8.8 1.2-8.3 .8-1.4 .8 1.4 1.2 9.8 1.3-9.4 .8-1.6 .8 1.6 1.2 12.7 1.2-12.5 .8-2.2 .8 2.2 1.2 6.9 1.3-7.4 .8-1.3 .8 1.3 1.2 12.6 1.2-12.2 .8-2.1 .8 2.1 1.3 11.5 1.2-11.7 .8-2 .8 2 1.2 13.7 1.2-12.8 .8-2.3 .8 2.3 1.2 11.8 1.3-11.9 .8-2.1 .8 2.1 1.2 7.5 1.2-8.5 .8-1.5 .8 1.5 1.2 12.5 1.3-11.7 .8-2 .8 2 1.2 8.9 1.2-10 .8-1.7 .8 1.7 1.3 11.9 1.2-11.6 .8-2.1 .8 2.1 1.2 12.2 1.2-12.2 .8-2.2 .8 2.2 1.2 10.2 1.3-10 .8-1.8 .8 1.8 1.2 7.4 1.2-7.8 .8-1.4 .8 1.4 1.2 10.8 1.3-10.5 .8-1.9 .8 1.9 1.2 13.7 1.2-12.7 .8-2.3 .8 2.3 1.2 12.6 1.3-13.3 .8-2.3 .8 2.3 1.2 6.4 1.2-7.3 .8-1.2 .8 1.2 1.2 8 1.3-7.5 .8-1.4 .8 1.4 1.2 8.7 1.2-9.1 .8-1.6 .8 1.6 1.2 9.3 1.3-9 .8-1.6 .8 1.6 1.2 12.6 1.2-12 .8-2.1 .8 2.1 1.2 8.5 1.3-8.8 .8-1.6 .8 1.6 1.2 6.8 1.2-7.6 .8-1.3 .8 1.3 1.3 12.7 1.2-11.4 .8-2 .8 2 1.2 6.7 1.2-8.1 .8-1.4 .8 1.4 1.2 11.3 1.3-10.2 .8-1.8 .8 1.8 1.2 6.3 1.2-7.1 .8-1.3 .8 1.3 1.2 9.2 1.3-9.3 .8-1.6 .8 1.6 1.2 8.5 1.2-8.4 .8-1.5 .8 1.5 1.2 10.7 1.3-10.5 .8-1.9 .8 1.9 1.2 11.8 1.2-10.8 .8-1.9 .8 1.9 1.2 11.3 1.3-12.1 .8-2.1 .8 2.1 1.2 11.8 1.2-11.3 .8-1.9 .8 1.9 1.2 6.2 1.3-7.2 .8-1.2 .8 1.2 1.2 12.3 1.2-10.9 .8-2 .8 2 1.3 13.1 1.2-13.2 .8-2.3 .8 2.3 1.2 10.5 1.2-10.5 .8-1.8 .8 1.8 1.2 7.5 1.3-8.4 .8-1.5 .8 1.5 1.2 7.2 1.2-7.1 .8-1.3 .8 1.3 1.2 11.8 1.3-11.7 .8-2 .8 2 1.2 8.1 1.2-8.3 .8-1.5 .8 1.5 1.2 12.7 1.3-12.4 .8-2.2 .8 2.2 1.2 9 1.2-9.2 .8-1.6 .8 1.6 1.3 8.7 1.2-8.4 .8-1.4 .8 1.4 1.2 12.1 1.2-11.4 .8-2.1 .8 2.1 1.3 10.7 1.2-11.1 .8-2 .8 2 1.2 8.3 1.2-8.9 .8-1.6 .8 1.6 1.2 10 1.3-9.9 .8-1.7 .8 1.7 1.2 7 1.2-7 .8-1.3 .8 1.3 1.2 7.7 1.3-8 .8-1.5 .8 1.5 1.2 14.2 1.2-13.2 .8-2.4 .8 2.4 1.2 12.7 1.3-13.1 .8-2.3 .8 2.3 1.2 9.9 1.2-10.2 .8-1.8 .8 1.8 1.2 9.1 1.3-9.3 .8-1.7 .8 1.7 1.2 10.3 1.2-9.7 .8-1.7 .8 1.7 1.3 13.9 1.2-14 .8-2.5 .8 2.5 1.2 11.5 1.2-11.4 .8-2.1 .8 2.1 1.2 9.4 1.3-10.2 .8-1.9 .8 1.9 1.2 9.8 1.2-9.6 .8-1.7 .8 1.7 1.2 9.6 1.3-9.3 .8-1.7 .8 1.7 1.2 9.3 1.2-9.6 .8-1.7 .8 1.7 1.2 8.9 1.3-8.4 .8-1.4 .8 1.4 1.2 9.3 1.2-9.1 .8-1.6 .8 1.6 1.3 7.3 1.2-7.9 .8-1.4 .8 1.4 1.2 11 1.2-10.5 .8-1.8 .8 1.8 1.3 10.2 1.2-10.1 .8-1.8 .8 1.8 1.2 10.7 1.2-11.4 .8-2 .8 2 1.2 12.2 1.3-11.5 .8-2.1 .8 2.1 1.2 8 1.2-8.4 .8-1.5 .8 1.5 1.2 13.1 1.3-12.9 .8-2.3 .8 2.3 1.2 7.4 1.2-8.2 .8-1.5 .8 1.5 1.2 11.7 1.3-11 .8-2 .8 2 1.2 6.9 1.2-7.5 .8-1.4 .8 1.4 1.2 11.3 1.3-10.6 .8-1.9 .8 1.9 1.2 9 1.2-9.1 .8-1.6 .8 1.6 1.3 11.7 1.2-11.8 .8-2.1 .8 2.1 1.2 9.2 1.2-8.9 .8-1.6 .8 1.6 1.2 7.9 1.3-8.6 .8-1.5 .8 1.5 1.2 9.2 1.2-8.9 .8-1.6 .8 1.6 1.2 12.9 1.3-12.8 .8-2.3 .8 2.3 1.2 7.9 1.2-8.7 .8-1.5 .8 1.5 1.2 8.2 1.3-7.8 .8-1.4 .8 1.4 1.2 10.7 1.2-9.8 .8-1.8 .8 1.8 1.3 9.5 1.2-10 .8-1.8 .8 1.8 1.2 6.6 1.2-7.4 .8-1.3 .8 1.3 1.3 9.7 1.2-9.4 .8-1.6 .8 1.6 1.2 13.2 1.2-12.4 .8-2.2 .8 2.2 1.2 7.2 1.3-7.9 .8-1.4 .8 1.4 1.2 8 1.2-8.3 .8-1.5 .8 1.5 1.2 12 1.3-11.6 .8-2 .8 2 1.2 12.8 1.2-12.2 .8-2.2 .8 2.2 1.2 6.6 1.3-7.2 .8-1.3 .8 1.3 1.2 14.4 1.2-13.3 .8-2.3 .8 2.3 1.2 12.3 1.3-12.2 .8-2.2 .8 2.2 1.2 7.7 1.2-8.9 .8-1.5 .8 1.5 1.3 12.6 1.2-12.1 .8-2.1 .8 2.1 1.2 13.9 1.2-13.6 .8-2.4 .8 2.4 1.2 6.1 1.3-7.6 .8-1.3 .8 1.3 1.2 10.8 1.2-10.3 .8-1.9 .8 1.9 1.2 11.8 1.3-10.6 .8-1.9 .8 1.9 1.2 13.2 1.2-12.9 .8-2.2 .8 2.2 1.2 7.4 1.3-9 .8-1.6 .8 1.6 1.2 7.6 1.2-7 .8-1.3 .8 1.3 1.3 6.6 1.2-7.6 .8-1.3 .8 1.3 1.2 12.7 1.2-11 .8-2 .8 2 1.3 10 1.2-11.1 .8-1.9 .8 1.9 1.2 7.1 1.2-6.9 .8-1.2 .8 1.2 1.2 12.1 1.3-11.8 .8-2.1 .8 2.1 1.2 14.2 1.2-13.9 .8-2.5 .8 2.5 1.2 7.2 1.3-7.5 .8-1.3 .8 1.3 1.2 6.7 1.2-7.4 .8-1.4 .8 1.4 1.2 8.4 1.3-8 .8-1.4 .8 1.4 1.2 10.5 1.2-10.5 .8-1.9 .8 1.9 1.2 11.6 1.3-11.6 .8-2.1 .8 2.1 1.2 14.5 1.2-13.4 .8-2.4 .8 2.4 1.3 7.2 1.2-8.3 .8-1.5 .8 1.5 1.2 8.8 1.2-8.8 .8-1.5 .8 1.5 1.3 9.1 1.2-9.4 .8-1.6 .8 1.6 1.2 10.8 1.2-10.7 .8-1.9 .8 1.9 1.2 14.7 1.3-13.4 .8-2.4 .8 2.4 1.2 7.3 1.2-8.4 .8-1.5 .8 1.5 1.2 8 1.3-8.5 .8-1.5 .8 1.5 1.2 10.2 1.2-9.4 .8-1.6 .8 1.6 1.3 6.9 1.2-7 .8-1.3 .8 1.3 1.2 8.4 1.2-8.9" fill="none" stroke="#1f4f8f" stroke-width="1.15" stroke-linejoin="round"/><path d="M81.5 262l.5 1.1 .7-1.5 .6-3 .7-1.5 .7 1.5 .7 3 .6 1 .7-1.5 .7-2.8 .7-1.5 .7 1.5 .6 2.8 .7 2.1 .7-1.5 .6-3.1 .7-1.5 .7 1.5 .7 3.1 .7 1.2 .6-1.7 .7-3.2 .7-1.6 .7 1.6 .6 3.2 .7 1.5 .7-1.4 .6-2.7 .7-1.4 .7 1.4 .7 2.7 .6 1.1 .7-1.5 .7-2.9 .7-1.5 .7 1.5 .6 2.9 .7 2.4 .7-1.7 .6-3.3 .7-1.7 .7 1.7 .7 3.3 .6 .9 .7-1.5 .7-3 .7-1.5 .6 1.5 .7 3 .7 2.2 .7-1.7 .7-3.3 .6-1.7 .7 1.7 .7 3.3 .6 1.2 .7-1.4 .7-3 .7-1.5 .6 1.5 .7 3 .7 1.8 .7-1.6 .6-3.2 .7-1.6 .7 1.6 .7 3.2 .6 .9 .7-1.4 .7-2.8 .7-1.4 .6 1.4 .7 2.8 .7 1.3 .7-1.5 .6-3 .7-1.5 .7 1.5 .7 3 .7 1.7 .6-1.4 .7-2.8 .7-1.4 .6 1.4 .7 2.8 .7 1.5 .7-1.4 .6-2.9 .7-1.4 .7 1.4 .7 2.9 .7 1.3 .6-1.6 .7-3 .7-1.6 .6 1.6 .7 3 .7 1.4 .7-1.3 .7-2.7 .6-1.4 .7 1.4 .7 2.7 .6 2.2 .7-1.7 .7-3.4 .7-1.7 .6 1.7 .7 3.4 .7 1 .7-1.5 .6-3.2 .7-1.6 .7 1.6 .7 3.2 .6 1.9 .7-1.6 .7-3.2 .7-1.6 .6 1.6 .7 3.2 .7 1.1 .7-1.4 .6-2.8 .7-1.4 .7 1.4 .7 2.8 .7 1.9 .6-1.6 .7-3.1 .7-1.6 .7 1.6 .6 3.1 .7 1.2 .7-1.5 .6-2.8 .7-1.4 .7 1.4 .7 2.8 .6 1.9 .7-1.6 .7-3.1 .7-1.6 .6 1.6 .7 3.1 .7 1.2 .7-1.4 .6-2.6 .7-1.4 .7 1.4 .7 2.6 .6 2.1 .7-1.6 .7-3.1 .7-1.6 .6 1.6 .7 3.1 .7 1.7 .7-1.6 .7-3.3 .6-1.6 .7 1.6 .7 3.3 .6 .9 .7-1.5 .7-3.2 .7-1.6 .6 1.6 .7 3.2 .7 1.8 .7-1.5 .6-3.1 .7-1.6 .7 1.6 .7 3.1 .6 1.3 .7-1.3 .7-2.8 .7-1.4 .6 1.4 .7 2.8 .7 1.7 .7-1.7 .6-3.4 .7-1.7 .7 1.7 .7 3.4 .7 1.8 .6-1.8 .7-3.5 .7-1.7 .6 1.7 .7 3.5 .7 1.6 .7-1.7 .6-3.2 .7-1.6 .7 1.6 .7 3.2 .7 1.7 .6-1.4 .7-3 .7-1.4 .6 1.4 .7 3 .7 1.2 .7-1.4 .6-3 .7-1.4 .7 1.4 .7 3 .7 1 .6-1.4 .7-2.8 .7-1.3 .6 1.3 .7 2.8 .7 1.4 .7-1.4 .6-2.9 .7-1.4 .7 1.4 .7 2.9 .6 1.6 .7-1.6 .7-3.1 .7-1.6 .6 1.6 .7 3.1 .7 2 .7-1.6 .6-3.4 .7-1.7 .7 1.7 .7 3.4 .6 1.2 .7-1.6 .7-3.1 .7-1.6 .6 1.6 .7 3.1 .7 2 .7-1.7 .6-3.2 .7-1.6 .7 1.6 .7 3.2 .6 1 .7-1.5 .7-3 .7-1.6 .6 1.6 .7 3 .7 1.7 .7-1.4 .6-2.9 .7-1.5 .7 1.5 .7 2.9 .6 1.2 .7-1.5 .7-3.1 .7-1.5 .6 1.5 .7 3.1 .7 2.2 .7-1.6 .7-3.1 .6-1.6 .7 1.6 .7 3.1 .6 1 .7-1.4 .7-3 .7-1.5 .6 1.5 .7 3 .7 1.4 .7-1.5 .6-2.9 .7-1.5 .7 1.5 .7 2.9 .7 1.8 .6-1.6 .7-3.1 .7-1.6 .7 1.6 .6 3.1 .7 1.4 .7-1.5 .7-3.1 .6-1.5 .7 1.5 .7 3.1 .6 1.6 .7-1.5 .7-2.9 .7-1.4 .6 1.4 .7 2.9 .7 2.1 .7-1.6 .7-3.2 .6-1.6 .7 1.6 .7 3.2 .6 1.1 .7-1.6 .7-3.3 .7-1.6 .6 1.6 .7 3.3 .7 1.4 .7-1.4 .7-2.9 .6-1.4 .7 1.4 .7 2.9 .6 1.6 .7-1.4 .7-2.8 .7-1.5 .6 1.5 .7 2.8 .7 1.9 .7-1.7 .7-3.3 .6-1.7 .7 1.7 .7 3.3 .7 1.2 .6-1.6 .7-3.1 .7-1.5 .6 1.5 .7 3.1 .7 1.9 .7-1.7 .6-3.3 .7-1.7 .7 1.7 .7 3.3 .7 1.3 .6-1.4 .7-2.7 .7-1.4 .7 1.4 .6 2.7 .7 1.5 .7-1.4 .6-2.8 .7-1.3 .7 1.3 .7 2.8 .6 1.4 .7-1.4 .7-2.8 .7-1.5 .6 1.5 .7 2.8 .7 1.5 .7-1.7 .7-3.2 .6-1.6 .7 1.6 .7 3.2 .6 1.8 .7-1.6 .7-3.3 .7-1.6 .6 1.6 .7 3.3 .7 1.9 .7-1.6 .7-3.1 .6-1.6 .7 1.6 .7 3.1 .6 1.2 .7-1.4 .7-2.9 .7-1.4 .6 1.4 .7 2.9 .7 1.4 .7-1.4 .7-2.8 .6-1.4 .7 1.4 .7 2.8 .6 1.6 .7-1.6 .7-3.4 .7-1.6 .6 1.6 .7 3.4 .7 1.2 .7-1.4 .7-2.8 .6-1.4 .7 1.4 .7 2.8 .6 1.2 .7-1.3 .7-2.6 .7-1.3 .6 1.3 .7 2.6 .7 1.2 .7-1.3 .7-2.7 .6-1.4 .7 1.4 .7 2.7 .6 1.9 .7-1.6 .7-3.1 .7-1.6 .6 1.6 .7 3.1 .7 1.6 .7-1.5 .7-3.1 .6-1.5 .7 1.5 .7 3.1 .7 1.3 .6-1.6 .7-3.1 .7-1.5 .6 1.5 .7 3.1 .7 1.2 .7-1.3 .6-2.8 .7-1.3 .7 1.3 .7 2.8 .6 2.2 .7-1.7 .7-3.3 .7-1.6 .6 1.6 .7 3.3 .7 1.7 .7-1.7 .7-3.3 .6-1.6 .7 1.6 .7 3.3 .7 1.1 .6-1.4 .7-2.8 .7-1.4 .6 1.4 .7 2.8 .7 2 .7-1.7 .7-3.5 .6-1.7 .7 1.7 .7 3.5 .6 1.7 .7-1.7 .7-3.3 .7-1.7 .6 1.7 .7 3.3 .7 1.6 .7-1.7 .6-3.3 .7-1.6 .7 1.6 .7 3.3 .6 1.9 .7-1.7 .7-3.4 .7-1.7 .6 1.7 .7 3.4 .7 .9 .7-1.6 .7-3.1 .6-1.5 .7 1.5 .7 3.1 .7 1.5 .6-1.5 .7-3.1 .7-1.5 .7 1.5 .6 3.1 .7 2.2 .7-1.7 .6-3.5 .7-1.7 .7 1.7 .7 3.5 .6 1 .7-1.5 .7-3 .7-1.5 .6 1.5 .7 3 .7 1.5 .7-1.3 .7-2.8 .6-1.3 .7 1.3 .7 2.8 .6 1.2 .7-1.3 .7-2.8 .7-1.3 .6 1.3 .7 2.8 .7 1.6 .7-1.5 .7-3.2 .6-1.6 .7 1.6 .7 3.2 .6 1.4 .7-1.4 .7-2.9 .7-1.5 .6 1.5 .7 2.9 .7 1.4 .7-1.4 .7-3 .6-1.5 .7 1.5 .7 3 .6 1.6 .7-1.5 .7-3 .7-1.5 .6 1.5 .7 3 .7 1.8 .7-1.6 .7-3.3 .6-1.6 .7 1.6 .7 3.3 .7 1.5 .6-1.5 .7-3 .7-1.5 .6 1.5 .7 3 .7 1.2 .7-1.4 .6-2.8 .7-1.4 .7 1.4 .7 2.8 .6 1.2 .7-1.4 .7-2.9 .7-1.4 .6 1.4 .7 2.9 .7 1.7 .7-1.6 .7-3.2 .6-1.6 .7 1.6 .7 3.2 .7 1.9 .6-1.5 .7-3 .7-1.4 .6 1.4 .7 3 .7 1.3 .7-1.6 .6-3.1 .7-1.5 .7 1.5 .7 3.1 .6 2 .7-1.5 .7-3 .7-1.5 .6 1.5 .7 3 .7 1.2 .7-1.5 .6-3.1 .7-1.5 .7 1.5 .7 3.1 .6 1.5 .7-1.5 .7-3 .7-1.5 .6 1.5 .7 3 .7 1.6 .7-1.6 .7-3.1 .6-1.6 .7 1.6 .7 3.1 .6 1.7 .7-1.6 .7-3 .7-1.6 .6 1.6 .7 3 .7 1.4 .7-1.5 .6-3.1 .7-1.6 .7 1.6 .7 3.1 .6 1.3 .7-1.6 .7-3.1 .7-1.6 .6 1.6 .7 3.1 .7 1.7 .7-1.6 .7-3.1 .6-1.6 .7 1.6 .7 3.1 .6 1.6 .7-1.6 .7-3.2 .7-1.6 .6 1.6 .7 3.2 .7 2 .7-1.7 .6-3.5 .7-1.7 .7 1.7 .7 3.5 .6 1.7 .7-1.6 .7-3.2 .7-1.6 .6 1.6 .7 3.2 .7 1.6 .7-1.5 .7-3.1 .6-1.5 .7 1.5 .7 3.1 .7 .8 .6-1.5 .7-3 .7-1.5 .7 1.5 .6 3 .7 2.3 .7-1.6 .7-3.2 .6-1.6 .7 1.6 .7 3.2 .6 .7 .7-1.5 .7-3 .7-1.4 .6 1.4 .7 3 .7 1.5 .7-1.5 .6-2.9 .7-1.5 .7 1.5 .7 2.9 .6 1.5 .7-1.6 .7-3 .7-1.6 .7 1.6 .6 3 .7 1.5 .7-1.4 .7-2.8 .6-1.4 .7 1.4 .7 2.8 .7 2.1 .6-1.6 .7-3.1 .7-1.6 .7 1.6 .6 3.1 .7 1.6 .7-1.6 .6-3 .7-1.5 .7 1.5 .7 3 .6 1 .7-1.3 .7-2.8 .7-1.4 .6 1.4 .7 2.8 .7 1.7 .7-1.5 .6-3.1 .7-1.6 .7 1.6 .7 3.1 .7 2 .6-1.7 .7-3.3 .7-1.6 .7 1.6 .6 3.3 .7 1.4 .7-1.5 .7-3 .6-1.5 .7 1.5 .7 3 .6 1.3 .7-1.6 .7-3.2 .7-1.6 .7 1.6 .6 3.2 .7 1.3 .7-1.5 .6-3 .7-1.5 .7 1.5 .7 3 .6 1.5 .7-1.5 .7-2.9 .7-1.5 .7 1.5 .6 2.9 .7 1.4 .7-1.4 .7-2.7 .6-1.3 .7 1.3 .7 2.7 .6 2.1 .7-1.6 .7-3.1 .7-1.6 .7 1.6 .6 3.1 .7 .9 .7-1.5 .6-3 .7-1.5 .7 1.5 .7 3 .7 2.3 .6-1.5 .7-3.1 .7-1.5 .7 1.5 .6 3.1 .7 1.3 .7-1.5 .7-2.9 .6-1.5 .7 1.5 .7 2.9 .6 1 .7-1.5 .7-3 .7-1.5 .6 1.5 .7 3 .7 1.7 .7-1.5 .7-3 .6-1.5 .7 1.5 .7 3 .6 1.5 .7-1.6 .7-3.1 .7-1.6 .6 1.6 .7 3.1 .7 2 .7-1.7 .7-3.3 .6-1.7 .7 1.7 .7 3.3 .6 1.5 .7-1.5 .7-2.9 .7-1.5 .7 1.5 .6 2.9 .7 1.1 .7-1.5 .6-2.8" fill="none" stroke="#a352cc" stroke-width="1.0" stroke-linejoin="round"/><path d="M81.5 266.7l.2 .3 .6 2.7 .7 1.8 .7-1.5 .6-3.2 .7-1.5 .7 1.5 .7 3.2 .6 1.1 .7-1.3 .7-2.7 .7-1.3 .7 1.3 .6 2.7 .7 1.9 .7-1.6 .6-3.2 .7-1.6 .7 1.6 .7 3.2 .7 1.3 .6-1.6 .7-3.3 .7-1.6 .7 1.6 .6 3.3 .7 1.1 .7-1.4 .6-3 .7-1.4 .7 1.4 .7 3 .6 2 .7-1.7 .7-3.5 .7-1.7 .7 1.7 .6 3.5 .7 1.9 .7-1.7 .6-3.4 .7-1.7 .7 1.7 .7 3.4 .6 1.1 .7-1.6 .7-3.3 .7-1.6 .6 1.6 .7 3.3 .7 2.4 .7-1.6 .7-3.1 .6-1.5 .7 1.5 .7 3.1 .6 1.5 .7-1.6 .7-3.1 .7-1.6 .6 1.6 .7 3.1 .7 .7 .7-1.4 .6-3 .7-1.5 .7 1.5 .7 3 .6 1.9 .7-1.7 .7-3.3 .7-1.7 .6 1.7 .7 3.3 .7 2.2 .7-1.7 .6-3.4 .7-1.7 .7 1.7 .7 3.4 .7 .9 .6-1.4 .7-2.6 .7-1.3 .6 1.3 .7 2.6 .7 1.3 .7-1.2 .6-2.6 .7-1.2 .7 1.2 .7 2.6 .7 1.6 .6-1.5 .7-3 .7-1.5 .6 1.5 .7 3 .7 1.3 .7-1.4 .7-3 .6-1.5 .7 1.5 .7 3 .6 1.3 .7-1.6 .7-3.3 .7-1.6 .6 1.6 .7 3.3 .7 2.3 .7-1.8 .6-3.4 .7-1.7 .7 1.7 .7 3.4 .6 1.7 .7-1.7 .7-3.5 .7-1.7 .6 1.7 .7 3.5 .7 1.9 .7-1.5 .6-3 .7-1.5 .7 1.5 .7 3 .7 1.3 .6-1.5 .7-3 .7-1.5 .7 1.5 .6 3 .7 1.3 .7-1.5 .6-2.9 .7-1.4 .7 1.4 .7 2.9 .6 1 .7-1.4 .7-2.9 .7-1.4 .6 1.4 .7 2.9 .7 2.1 .7-1.7 .6-3.5 .7-1.7 .7 1.7 .7 3.5 .6 1.8 .7-1.5 .7-2.9 .7-1.5 .6 1.5 .7 2.9 .7 1 .7-1.5 .7-3.2 .6-1.5 .7 1.5 .7 3.2 .6 1.6 .7-1.6 .7-3.1 .7-1.6 .6 1.6 .7 3.1 .7 2.1 .7-1.7 .6-3.4 .7-1.7 .7 1.7 .7 3.4 .6 .7 .7-1.5 .7-3.2 .7-1.6 .6 1.6 .7 3.2 .7 2.2 .7-1.4 .6-2.7 .7-1.4 .7 1.4 .7 2.7 .7 1.2 .6-1.5 .7-3.1 .7-1.5 .6 1.5 .7 3.1 .7 1.6 .7-1.5 .6-2.9 .7-1.4 .7 1.4 .7 2.9 .7 1.1 .6-1.4 .7-2.8 .7-1.4 .6 1.4 .7 2.8 .7 1.8 .7-1.5 .6-3 .7-1.5 .7 1.5 .7 3 .7 1.1 .6-1.6 .7-3.2 .7-1.5 .6 1.5 .7 3.2 .7 1.7 .7-1.3 .6-2.6 .7-1.3 .7 1.3 .7 2.6 .6 1.3 .7-1.4 .7-2.9 .7-1.4 .6 1.4 .7 2.9 .7 1.4 .7-1.6 .6-3.3 .7-1.6 .7 1.6 .7 3.3 .6 1.4 .7-1.3 .7-2.6 .7-1.3 .6 1.3 .7 2.6 .7 2 .7-1.7 .6-3.3 .7-1.6 .7 1.6 .7 3.3 .6 1.6 .7-1.5 .7-3 .7-1.5 .6 1.5 .7 3 .7 1.7 .7-1.4 .6-2.9 .7-1.5 .7 1.5 .7 2.9 .6 .9 .7-1.3 .7-2.6 .7-1.3 .6 1.3 .7 2.6 .7 1.9 .7-1.6 .7-3.3 .6-1.6 .7 1.6 .7 3.3 .6 1.5 .7-1.6 .7-3.3 .7-1.6 .6 1.6 .7 3.3 .7 1.1 .7-1.6 .6-3.2 .7-1.6 .7 1.6 .7 3.2 .7 2.1 .6-1.8 .7-3.5 .7-1.7 .7 1.7 .6 3.5 .7 1 .7-1.3 .7-2.6 .6-1.3 .7 1.3 .7 2.6 .6 2 .7-1.6 .7-3.2 .7-1.6 .6 1.6 .7 3.2 .7 1.6 .7-1.8 .7-3.5 .6-1.8 .7 1.8 .7 3.5 .6 1.3 .7-1.6 .7-3.1 .7-1.5 .6 1.5 .7 3.1 .7 1.7 .7-1.6 .7-3.3 .6-1.6 .7 1.6 .7 3.3 .6 1.3 .7-1.5 .7-3 .7-1.5 .6 1.5 .7 3 .7 2.3 .7-1.4 .7-2.9 .6-1.4 .7 1.4 .7 2.9 .7 1.2 .6-1.5 .7-3.2 .7-1.6 .6 1.6 .7 3.2 .7 1.1 .7-1.3 .6-2.6 .7-1.3 .7 1.3 .7 2.6 .7 1.5 .6-1.4 .7-2.9 .7-1.4 .7 1.4 .6 2.9 .7 .9 .7-1.5 .6-3 .7-1.6 .7 1.6 .7 3 .6 2.3 .7-1.5 .7-2.9 .7-1.5 .6 1.5 .7 2.9 .7 1.6 .7-1.6 .7-3.2 .6-1.5 .7 1.5 .7 3.2 .6 1.1 .7-1.4 .7-3 .7-1.5 .6 1.5 .7 3 .7 1.8 .7-1.6 .7-3.4 .6-1.7 .7 1.7 .7 3.4 .6 1.3 .7-1.6 .7-3.2 .7-1.7 .6 1.7 .7 3.2 .7 1.9 .7-1.8 .7-3.6 .6-1.8 .7 1.8 .7 3.6 .6 1.7 .7-1.4 .7-2.8 .7-1.4 .6 1.4 .7 2.8 .7 .7 .7-1.3 .7-2.8 .6-1.4 .7 1.4 .7 2.8 .6 1.9 .7-1.4 .7-2.8 .7-1.4 .6 1.4 .7 2.8 .7 1.4 .7-1.7 .7-3.2 .6-1.7 .7 1.7 .7 3.2 .6 1.5 .7-1.3 .7-2.6 .7-1.4 .6 1.4 .7 2.6 .7 1.8 .7-1.8 .7-3.5 .6-1.8 .7 1.8 .7 3.5 .7 1 .6-1.6 .7-3.2 .7-1.5 .6 1.5 .7 3.2 .7 1.5 .7-1.4 .6-2.9 .7-1.4 .7 1.4 .7 2.9 .6 1.5 .7-1.2 .7-2.6 .7-1.3 .6 1.3 .7 2.6 .7 1.8 .7-1.8 .7-3.4 .6-1.7 .7 1.7 .7 3.4 .7 1.6 .6-1.6 .7-3.2 .7-1.6 .6 1.6 .7 3.2 .7 1.6 .7-1.6 .7-3.3 .6-1.6 .7 1.6 .7 3.3 .6 1.3 .7-1.6 .7-3.1 .7-1.6 .6 1.6 .7 3.1 .7 1.8 .7-1.4 .6-2.9 .7-1.4 .7 1.4 .7 2.9 .6 1.6 .7-1.8 .7-3.4 .7-1.7 .6 1.7 .7 3.4 .7 1.9 .7-1.4 .7-2.9 .6-1.4 .7 1.4 .7 2.9 .7 1.5 .6-1.5 .7-3 .7-1.4 .7 1.4 .6 3 .7 .7 .7-1.4 .6-2.8 .7-1.5 .7 1.5 .7 2.8 .6 1.5 .7-1.3 .7-2.7 .7-1.3 .6 1.3 .7 2.7 .7 1.4 .7-1.4 .7-2.7 .6-1.4 .7 1.4 .7 2.7 .6 1.5 .7-1.4 .7-2.8 .7-1.4 .6 1.4 .7 2.8 .7 1.4 .7-1.6 .7-3.4 .6-1.6 .7 1.6 .7 3.4 .6 1.7 .7-1.6 .7-3.1 .7-1.6 .6 1.6 .7 3.1 .7 2.1 .7-1.7 .7-3.4 .6-1.7 .7 1.7 .7 3.4 .6 1.3 .7-1.5 .7-3 .7-1.5 .6 1.5 .7 3 .7 1.9 .7-1.7 .7-3.6 .6-1.8 .7 1.8 .7 3.6 .7 1.4 .6-1.5 .7-3.1 .7-1.6 .6 1.6 .7 3.1 .7 1.6 .7-1.4 .6-2.8 .7-1.4 .7 1.4 .7 2.8 .6 1 .7-1.4 .7-2.8 .7-1.4 .6 1.4 .7 2.8 .7 1.6 .7-1.5 .7-3 .6-1.5 .7 1.5 .7 3 .7 1.1 .6-1.3 .7-2.6 .7-1.3 .6 1.3 .7 2.6 .7 2.2 .7-1.7 .6-3.4 .7-1.7 .7 1.7 .7 3.4 .6 1 .7-1.3 .7-2.5 .7-1.3 .6 1.3 .7 2.5 .7 1.1 .7-1.6 .6-3.2 .7-1.6 .7 1.6 .7 3.2 .6 1.6 .7-1.3 .7-2.6 .7-1.3 .6 1.3 .7 2.6 .7 2 .7-1.7 .7-3.2 .6-1.6 .7 1.6 .7 3.2 .6 1.5 .7-1.7 .7-3.5 .7-1.8 .6 1.8 .7 3.5 .7 1.7 .7-1.5 .6-3.2 .7-1.6 .7 1.6 .7 3.2 .6 1.4 .7-1.6 .7-3.1 .7-1.6 .6 1.6 .7 3.1 .7 1.5 .7-1.6 .7-3.2 .6-1.6 .7 1.6 .7 3.2 .6 1.2 .7-1.4 .7-2.9 .7-1.4 .6 1.4 .7 2.9 .7 1.6 .7-1.3 .6-2.8 .7-1.4 .7 1.4 .7 2.8 .6 1.9 .7-1.5 .7-3 .7-1.5 .6 1.5 .7 3 .7 1.2 .7-1.7 .7-3.2 .6-1.6 .7 1.6 .7 3.2 .7 1.6 .6-1.5 .7-3 .7-1.5 .7 1.5 .6 3 .7 1.7 .7-1.3 .7-2.8 .6-1.4 .7 1.4 .7 2.8 .6 .8 .7-1.4 .7-2.9 .7-1.4 .6 1.4 .7 2.9 .7 1.8 .7-1.4 .6-2.9 .7-1.5 .7 1.5 .7 2.9 .6 1.8 .7-1.5 .7-3 .7-1.6 .7 1.6 .6 3 .7 1.2 .7-1.4 .7-2.9 .6-1.5 .7 1.5 .7 2.9 .7 1.5 .6-1.5 .7-2.8 .7-1.4 .7 1.4 .6 2.8 .7 1.5 .7-1.5 .6-3 .7-1.5 .7 1.5 .7 3 .6 1 .7-1.2 .7-2.6 .7-1.3 .6 1.3 .7 2.6 .7 1.4 .7-1.5 .6-2.9 .7-1.4 .7 1.4 .7 2.9 .7 1.9 .6-1.4 .7-2.8 .7-1.5 .7 1.5 .6 2.8 .7 1.6 .7-1.9 .7-3.6 .6-1.9 .7 1.9 .7 3.6 .6 1.2 .7-1.5 .7-3.1 .7-1.6 .7 1.6 .6 3.1 .7 1.6 .7-1.6 .6-3.3 .7-1.7 .7 1.7 .7 3.3 .6 1.8 .7-1.8 .7-3.4 .7-1.7 .7 1.7 .6 3.4 .7 1.5 .7-1.3 .7-2.6 .6-1.3 .7 1.3 .7 2.6 .6 1.7 .7-1.6 .7-3.2 .7-1.6 .7 1.6 .6 3.2 .7 1 .7-1.2 .6-2.5 .7-1.3 .7 1.3 .7 2.5 .7 1.8 .6-1.7 .7-3.4 .7-1.7 .7 1.7 .6 3.4 .7 1.3 .7-1.4 .7-2.8 .6-1.5 .7 1.5 .7 2.8 .6 1.8 .7-1.7 .7-3.3 .7-1.7 .6 1.7 .7 3.3 .7 2 .7-1.8 .7-3.4 .6-1.7 .7 1.7 .7 3.4 .6 1.1 .7-1.4 .7-2.6 .7-1.3 .6 1.3 .7 2.6 .7 1.3 .7-1.4 .7-2.7 .6-1.4 .7 1.4 .7 2.7 .6 1.4 .7-1.4 .7-2.8 .7-1.4 .7 1.4 .6 2.8 .7 1.5 .3-.7" fill="none" stroke="#37872d" stroke-width="1.4" stroke-linejoin="round"/><path d="M81.5 274.1l.1 .6 .7 .9 .7-1.4 .6-2.7 .7-1.4 .7 1.4 .7 2.7 .6 1.6 .7-1.7 .7-3.2 .7-1.7 .6 1.7 .7 3.2 .7 2.2 .7-1.8 .6-3.4 .7-1.7 .7 1.7 .7 3.4 .6 2 .7-1.8 .7-3.6 .7-1.8 .6 1.8 .7 3.6 .7 1.9 .7-1.8 .6-3.6 .7-1.8 .7 1.8 .7 3.6 .6 1.4 .7-1.5 .7-3.1 .7-1.6 .6 1.6 .7 3.1 .7 1.6 .7-1.6 .6-3.1 .7-1.6 .7 1.6 .7 3.1 .6 1.6 .7-1.8 .7-3.6 .7-1.8 .6 1.8 .7 3.6 .7 2 .7-1.7 .6-3.4 .7-1.7 .7 1.7 .7 3.4 .7 1.1 .6-1.6 .7-3.4 .7-1.6 .7 1.6 .6 3.4 .7 2.1 .7-1.6 .6-3.4 .7-1.7 .7 1.7 .7 3.4 .6 1.7 .7-1.6 .7-3.4 .7-1.6 .6 1.6 .7 3.4 .7 1.7 .7-1.8 .6-3.4 .7-1.7 .7 1.7 .7 3.4 .6 1.5 .7-1.6 .7-3.3 .7-1.7 .6 1.7 .7 3.3 .7 1.2 .7-1.5 .6-2.9 .7-1.4 .7 1.4 .7 2.9 .7 1.5 .6-1.5 .7-3 .7-1.5 .7 1.5 .6 3 .7 2.2 .7-1.7 .6-3.4 .7-1.7 .7 1.7 .7 3.4 .6 .8 .7-1.4 .7-2.9 .7-1.5 .6 1.5 .7 2.9 .7 2 .7-1.8 .6-3.5 .7-1.7 .7 1.7 .7 3.5 .6 1.1 .7-1.5 .7-3 .7-1.5 .6 1.5 .7 3 .7 1.5 .7-1.4 .7-2.8 .6-1.4 .7 1.4 .7 2.8 .6 1.9 .7-1.6 .7-3.3 .7-1.6 .6 1.6 .7 3.3 .7 1.5 .7-1.6 .6-3.1 .7-1.5 .7 1.5 .7 3.1 .6 2.1 .7-1.8 .7-3.5 .7-1.8 .6 1.8 .7 3.5 .7 1.3 .7-1.6 .6-3.1 .7-1.6 .7 1.6 .7 3.1 .7 1.5 .6-1.6 .7-3.1 .7-1.5 .6 1.5 .7 3.1 .7 1.8 .7-1.6 .6-3.3 .7-1.7 .7 1.7 .7 3.3 .6 1.8 .7-1.7 .7-3.3 .7-1.7 .6 1.7 .7 3.3 .7 1.1 .7-1.4 .6-2.8 .7-1.4 .7 1.4 .7 2.8 .7 1.7 .6-1.7 .7-3.2 .7-1.6 .6 1.6 .7 3.2 .7 1.7 .7-1.5 .7-3 .6-1.5 .7 1.5 .7 3 .6 2.1 .7-1.8 .7-3.5 .7-1.7 .6 1.7 .7 3.5 .7 1.2 .7-1.7 .6-3.4 .7-1.7 .7 1.7 .7 3.4 .6 2.2 .7-1.8 .7-3.6 .7-1.8 .6 1.8 .7 3.6 .7 1.4 .7-1.6 .6-3.4 .7-1.7 .7 1.7 .7 3.4 .7 1.4 .6-1.6 .7-3.2 .7-1.6 .7 1.6 .6 3.2 .7 1.5 .7-1.7 .6-3.3 .7-1.7 .7 1.7 .7 3.3 .6 2 .7-1.5 .7-3.1 .7-1.6 .6 1.6 .7 3.1 .7 1.6 .7-1.7 .6-3.5 .7-1.7 .7 1.7 .7 3.5 .6 1.8 .7-1.8 .7-3.6 .7-1.7 .6 1.7 .7 3.6 .7 1.5 .7-1.5 .7-3.1 .6-1.5 .7 1.5 .7 3.1 .6 2 .7-1.7 .7-3.5 .7-1.7 .6 1.7 .7 3.5 .7 1.6 .7-1.7 .6-3.4 .7-1.7 .7 1.7 .7 3.4 .6 1.4 .7-1.6 .7-3.2 .7-1.6 .6 1.6 .7 3.2 .7 2.1 .7-1.7 .7-3.4 .6-1.7 .7 1.7 .7 3.4 .7 1.2 .6-1.6 .7-3.1 .7-1.6 .6 1.6 .7 3.1 .7 1.7 .7-1.7 .6-3.3 .7-1.7 .7 1.7 .7 3.3 .6 1.9 .7-1.6 .7-3.3 .7-1.6 .6 1.6 .7 3.3 .7 1.4 .7-1.5 .7-3.1 .6-1.6 .7 1.6 .7 3.1 .7 .9 .6-1.5 .7-3 .7-1.5 .6 1.5 .7 3 .7 2.1 .7-1.7 .7-3.4 .6-1.7 .7 1.7 .7 3.4 .6 1.3 .7-1.5 .7-3 .7-1.5 .6 1.5 .7 3 .7 1.7 .7-1.6 .6-3.4 .7-1.6 .7 1.6 .7 3.4 .6 1.2 .7-1.4 .7-2.7 .7-1.4 .6 1.4 .7 2.7 .7 1.8 .7-1.7 .7-3.4 .6-1.7 .7 1.7 .7 3.4 .7 1.5 .6-1.6 .7-3.2 .7-1.6 .7 1.6 .6 3.2 .7 2.3 .7-1.8 .6-3.6 .7-1.8 .7 1.8 .7 3.6 .6 1.2 .7-1.7 .7-3.3 .7-1.7 .6 1.7 .7 3.3 .7 1.9 .7-1.7 .7-3.4 .6-1.7 .7 1.7 .7 3.4 .6 1.5 .7-1.5 .7-3 .7-1.6 .6 1.6 .7 3 .7 2.1 .7-1.6 .7-3.3 .6-1.7 .7 1.7 .7 3.3 .6 .7 .7-1.5 .7-3.1 .7-1.5 .6 1.5 .7 3.1 .7 2.3 .7-1.8 .7-3.6 .6-1.9 .7 1.9 .7 3.6 .6 1.2 .7-1.6 .7-3.1 .7-1.5 .6 1.5 .7 3.1 .7 1.8 .7-1.6 .7-3 .6-1.5 .7 1.5 .7 3 .7 1.9 .6-1.7 .7-3.3 .7-1.7 .6 1.7 .7 3.3 .7 1.2 .7-1.6 .7-3.2 .6-1.7 .7 1.7 .7 3.2 .6 1.7 .7-1.7 .7-3.4 .7-1.6 .6 1.6 .7 3.4 .7 2.1 .7-1.8 .7-3.5 .6-1.7 .7 1.7 .7 3.5 .7 2 .6-1.7 .7-3.4 .7-1.7 .6 1.7 .7 3.4 .7 .9 .7-1.6 .7-3 .6-1.5 .7 1.5 .7 3 .7 2.1 .6-1.8 .7-3.5 .7-1.8 .7 1.8 .6 3.5 .7 1.7 .7-1.8 .6-3.4 .7-1.8 .7 1.8 .7 3.4 .6 2.1 .7-1.8 .7-3.7 .7-1.8 .6 1.8 .7 3.7 .7 1.6 .7-1.5 .7-3.1 .6-1.5 .7 1.5 .7 3.1 .7 1.7 .6-1.7 .7-3.6 .7-1.8 .7 1.8 .6 3.6 .7 1.4 .7-1.7 .7-3.4 .6-1.8 .7 1.8 .7 3.4 .6 1.5 .7-1.5 .7-2.9 .7-1.5 .6 1.5 .7 2.9 .7 2 .7-1.8 .7-3.7 .6-1.8 .7 1.8 .7 3.7 .6 1.4 .7-1.6 .7-3.1 .7-1.6 .6 1.6 .7 3.1 .7 1.4 .7-1.5 .7-2.9 .6-1.5 .7 1.5 .7 2.9 .7 2.2 .6-1.7 .7-3.4 .7-1.7 .7 1.7 .6 3.4 .7 1.2 .7-1.5 .7-3 .6-1.6 .7 1.6 .7 3 .6 1.6 .7-1.7 .7-3.4 .7-1.7 .6 1.7 .7 3.4 .7 1.5 .7-1.7 .7-3.3 .6-1.6 .7 1.6 .7 3.3 .7 2.2 .6-1.7 .7-3.4 .7-1.7 .6 1.7 .7 3.4 .7 1.6 .7-1.6 .7-3.2 .6-1.6 .7 1.6 .7 3.2 .6 1.9 .7-1.8 .7-3.7 .7-1.8 .6 1.8 .7 3.7 .7 1.2 .7-1.5 .7-3 .6-1.5 .7 1.5 .7 3 .7 1.9 .6-1.8 .7-3.4 .7-1.7 .6 1.7 .7 3.4 .7 1.7 .7-1.8 .7-3.5 .6-1.7 .7 1.7 .7 3.5 .7 1.3 .6-1.7 .7-3.3 .7-1.6 .7 1.6 .6 3.3 .7 1.9 .7-1.7 .6-3.3 .7-1.7 .7 1.7 .7 3.3 .6 1.8 .7-1.5 .7-3 .7-1.5 .6 1.5 .7 3 .7 1.2 .7-1.6 .7-3 .6-1.5 .7 1.5 .7 3 .7 2.3 .6-1.7 .7-3.4 .7-1.7 .7 1.7 .6 3.4 .7 1.3 .7-1.5 .6-3.2 .7-1.5 .7 1.5 .7 3.2 .6 1 .7-1.4 .7-2.8 .7-1.4 .6 1.4 .7 2.8 .7 2.1 .7-1.6 .7-3.2 .6-1.6 .7 1.6 .7 3.2 .6 1.7 .7-1.8 .7-3.6 .7-1.8 .6 1.8 .7 3.6 .7 1.1 .7-1.6 .7-3.2 .6-1.6 .7 1.6 .7 3.2 .6 2 .7-1.5 .7-3 .7-1.6 .6 1.6 .7 3 .7 1.9 .7-1.7 .7-3.5 .6-1.8 .7 1.8 .7 3.5 .6 1.4 .7-1.6 .7-3.2 .7-1.6 .6 1.6 .7 3.2 .7 1.3 .7-1.4 .7-3 .6-1.4 .7 1.4 .7 3 .7 2 .6-1.6 .7-3.4 .7-1.7 .6 1.7 .7 3.4 .7 1.6 .7-1.6 .6-3.3 .7-1.7 .7 1.7 .7 3.3 .6 1.4 .7-1.8 .7-3.4 .7-1.7 .7 1.7 .6 3.4 .7 1.4 .7-1.7 .6-3.2 .7-1.7 .7 1.7 .7 3.2 .7 1.5 .6-1.5 .7-2.8 .7-1.4 .7 1.4 .6 2.8 .7 1.7 .7-1.7 .6-3.4 .7-1.7 .7 1.7 .7 3.4 .6 1.7 .7-1.7 .7-3.3 .7-1.7 .6 1.7 .7 3.3 .7 1.8 .7-1.6 .6-3.3 .7-1.7 .7 1.7 .7 3.3 .6 1.4 .7-1.6 .7-3.1 .7-1.5 .6 1.5 .7 3.1 .7 1.8 .7-1.6 .7-3.3 .6-1.6 .7 1.6 .7 3.3 .6 2 .7-1.7 .7-3.5 .7-1.8 .7 1.8 .6 3.5 .7 1.4 .7-1.5 .6-3.1 .7-1.5 .7 1.5 .7 3.1 .6 2 .7-1.8 .7-3.6 .7-1.7 .7 1.7 .6 3.6 .7 .8 .7-1.4 .6-2.8 .7-1.3 .7 1.3 .7 2.8 .6 1.9 .7-1.7 .7-3.4 .7-1.7 .7 1.7 .6 3.4 .7 1.3 .7-1.6 .6-3.2 .7-1.6 .7 1.6 .7 3.2 .6 1.8 .7-1.7 .7-3.3 .7-1.7 .6 1.7 .7 3.3 .7 1.4 .7-1.3 .7-2.8 .6-1.4 .7 1.4 .7 2.8 .6 2.1 .7-1.8 .7-3.6 .7-1.8 .6 1.8 .7 3.6 .7 1.5 .7-1.6 .7-3.1 .6-1.5 .7 1.5 .7 3.1 .6 1.6 .7-1.7 .7-3.5 .7-1.7 .6 1.7 .7 3.5 .7 1.5 .7-1.6 .6-3.2 .7-1.6 .7 1.6 .7 3.2 .6 2.2 .7-1.7 .7-3.4 .7-1.7 .7 1.7 .6 3.4 .7 1.3 .7-1.6 .6-3.2 .7-1.6 .7 1.6 .7 3.2 .6 1.1 .7-1.4 .7-2.9 .7-1.5 .6 1.5 .7 2.9 .7 2.2 .7-1.7 .6-3.3 .7-1.6 .7 1.6 .7 3.3 .6 1.3 .7-1.7 .7-3.3 .7-1.6 .6 1.6 .7 3.3 .7 1.3 .7-1.6 .6-3.2 .7-1.6 .7 1.6 .7 3.2 .6 1.8 .7-1.6 .7-3.1 .7-1.5 .6 1.5 .7 3.1 .7 2.2 .7-1.8 .3-1.7" fill="none" stroke="#ef6f24" stroke-width="1.2" stroke-linejoin="round"/><path d="M81.5 281.7l.5 1.8 .7 1.1 .7-1.4 .6-2.8 .7-1.4 .7 1.4 .7 2.8 .7 1.3 .6-1.3 .7-2.5 .7-1.3 .7 1.3 .6 2.5 .7 1.2 .7-1.3 .6-2.7 .7-1.3 .7 1.3 .7 2.7 .6 1.1 .7-1.2 .7-2.4 .7-1.2 .6 1.2 .7 2.4 .7 1.2 .7-1.2 .6-2.4 .7-1.2 .7 1.2 .7 2.4 .7 1.1 .6-1.3 .7-2.5 .7-1.3 .7 1.3 .6 2.5 .7 1.7 .7-1.3 .6-2.5 .7-1.3 .7 1.3 .7 2.5 .6 1.2 .7-1.1 .7-2.4 .7-1.1 .7 1.1 .6 2.4 .7 1 .7-1.3 .6-2.7 .7-1.3 .7 1.3 .7 2.7 .7 1.6 .6-1.3 .7-2.5 .7-1.2 .7 1.2 .6 2.5 .7 1.2 .7-1.2 .6-2.4 .7-1.3 .7 1.3 .7 2.4 .6 1.4 .7-1.4 .7-2.6 .7-1.4 .6 1.4 .7 2.6 .7 1.3 .7-1.3 .7-2.7 .6-1.3 .7 1.3 .7 2.7 .6 1.1 .7-1.1 .7-2.4 .7-1.2 .6 1.2 .7 2.4 .7 1 .7-1.3 .7-2.7 .6-1.3 .7 1.3 .7 2.7 .6 1.4 .7-1.2 .7-2.3 .7-1.1 .6 1.1 .7 2.3 .7 1.3 .7-1.3 .6-2.5 .7-1.3 .7 1.3 .7 2.5 .7 1.3 .6-1.4 .7-2.6 .7-1.4 .6 1.4 .7 2.6 .7 1.1 .7-1.2 .6-2.5 .7-1.2 .7 1.2 .7 2.5 .7 1.6 .6-1.4 .7-2.7 .7-1.4 .6 1.4 .7 2.7 .7 1 .7-1.3 .6-2.6 .7-1.3 .7 1.3 .7 2.6 .7 1.2 .6-1.2 .7-2.4 .7-1.3 .6 1.3 .7 2.4 .7 1.5 .7-1.1 .7-2.3 .6-1.1 .7 1.1 .7 2.3 .6 1 .7-1.2 .7-2.5 .7-1.3 .6 1.3 .7 2.5 .7 1.2 .7-1.3 .6-2.5 .7-1.2 .7 1.2 .7 2.5 .6 1.6 .7-1.3 .7-2.5 .7-1.2 .6 1.2 .7 2.5 .7 1 .7-1.4 .6-2.6 .7-1.3 .7 1.3 .7 2.6 .7 1.7 .6-1.2 .7-2.4 .7-1.3 .7 1.3 .6 2.4 .7 1.2 .7-1.4 .6-2.7 .7-1.3 .7 1.3 .7 2.7 .6 1.2 .7-1.1 .7-2.2 .7-1.1 .6 1.1 .7 2.2 .7 1.2 .7-1.1 .6-2.3 .7-1.1 .7 1.1 .7 2.3 .6 .8 .7-1 .7-2.1 .7-1 .6 1 .7 2.1 .7 .9 .7-1.1 .7-2.4 .6-1.2 .7 1.2 .7 2.4 .7 1.1 .6-1 .7-2.2 .7-1 .7 1 .6 2.2 .7 1.4 .7-1.1 .6-2.2 .7-1.1 .7 1.1 .7 2.2 .6 1.2 .7-1.2 .7-2.2 .7-1.2 .6 1.2 .7 2.2 .7 1 .7-1.1 .6-2.1 .7-1.1 .7 1.1 .7 2.1 .7 1.2 .6-1.3 .7-2.6 .7-1.3 .6 1.3 .7 2.6 .7 1.5 .7-1.3 .7-2.7 .6-1.3 .7 1.3 .7 2.7 .6 .8 .7-1.3 .7-2.6 .7-1.3 .6 1.3 .7 2.6 .7 1.5 .7-1.3 .6-2.7 .7-1.3 .7 1.3 .7 2.7 .7 1.6 .6-1.2 .7-2.3 .7-1.2 .6 1.2 .7 2.3 .7 .7 .7-1.3 .7-2.6 .6-1.3 .7 1.3 .7 2.6 .7 1.5 .6-1.3 .7-2.7 .7-1.3 .7 1.3 .6 2.7 .7 1.3 .7-1.1 .6-2.3 .7-1.1 .7 1.1 .7 2.3 .6 1 .7-1.3 .7-2.4 .7-1.2 .6 1.2 .7 2.4 .7 1.6 .7-1.3 .7-2.6 .6-1.3 .7 1.3 .7 2.6 .7 1 .6-1.1 .7-2.1 .7-1.1 .7 1.1 .6 2.1 .7 1.4 .7-1.2 .6-2.3 .7-1.1 .7 1.1 .7 2.3 .6 1.1 .7-1.3 .7-2.5 .7-1.3 .6 1.3 .7 2.5 .7 1.3 .7-1.1 .7-2.3 .6-1.2 .7 1.2 .7 2.3 .6 1.1 .7-1.3 .7-2.7 .7-1.3 .6 1.3 .7 2.7 .7 1.1 .7-1.2 .7-2.5 .6-1.2 .7 1.2 .7 2.5 .6 1.5 .7-1.3 .7-2.5 .7-1.2 .6 1.2 .7 2.5 .7 1.1 .7-1.1 .7-2.3 .6-1.1 .7 1.1 .7 2.3 .6 .9 .7-1.2 .7-2.2 .7-1.1 .6 1.1 .7 2.2 .7 1.3 .7-1.2 .7-2.3 .6-1.2 .7 1.2 .7 2.3 .7 1.5 .6-1.3 .7-2.8 .7-1.3 .6 1.3 .7 2.8 .7 1.4 .7-1.4 .6-2.9 .7-1.4 .7 1.4 .7 2.9 .6 1.1 .7-1.2 .7-2.4 .7-1.2 .6 1.2 .7 2.4 .7 1 .7-1.1 .7-2.4 .6-1.1 .7 1.1 .7 2.4 .7 1.3 .6-1.3 .7-2.4 .7-1.3 .6 1.3 .7 2.4 .7 1.4 .7-1.4 .7-2.8 .6-1.4 .7 1.4 .7 2.8 .6 1.2 .7-1.1 .7-2.2 .7-1.2 .6 1.2 .7 2.2 .7 1 .7-1.1 .6-2.1 .7-1.1 .7 1.1 .7 2.1 .6 1.1 .7-1.1 .7-2.3 .7-1.1 .6 1.1 .7 2.3 .7 1.1 .7-1.2 .7-2.4 .6-1.2 .7 1.2 .7 2.4 .6 1.4 .7-1.4 .7-2.7 .7-1.3 .6 1.3 .7 2.7 .7 1.5 .7-1.2 .6-2.6 .7-1.2 .7 1.2 .7 2.6 .6 1.2 .7-1.2 .7-2.5 .7-1.3 .6 1.3 .7 2.5 .7 1.1 .7-1.2 .7-2.4 .6-1.3 .7 1.3 .7 2.4 .6 1.1 .7-1.1 .7-2.1 .7-1.1 .6 1.1 .7 2.1 .7 1 .7-1.1 .6-2.1 .7-1 .7 1 .7 2.1 .6 1.5 .7-1.3 .7-2.5 .7-1.3 .6 1.3 .7 2.5 .7 1.3 .7-1.2 .7-2.5 .6-1.2 .7 1.2 .7 2.5 .6 1.1 .7-1.3 .7-2.6 .7-1.4 .6 1.4 .7 2.6 .7 1.1 .7-1.3 .7-2.4 .6-1.3 .7 1.3 .7 2.4 .6 1.3 .7-1.1 .7-2.1 .7-1 .6 1 .7 2.1 .7 1.1 .7-1.2 .6-2.5 .7-1.2 .7 1.2 .7 2.5 .6 1.3 .7-1.2 .7-2.2 .7-1.1 .6 1.1 .7 2.2 .7 1.2 .7-1.2 .7-2.4 .6-1.2 .7 1.2 .7 2.4 .7 1.1 .6-1.3 .7-2.5 .7-1.3 .6 1.3 .7 2.5 .7 1.2 .7-1.3 .6-2.5 .7-1.2 .7 1.2 .7 2.5 .6 1.4 .7-1.1 .7-2.2 .7-1.1 .6 1.1 .7 2.2 .7 1.2 .7-1.3 .6-2.7 .7-1.4 .7 1.4 .7 2.7 .6 1.3 .7-1.4 .7-2.6 .7-1.4 .6 1.4 .7 2.6 .7 1.4 .7-1.2 .7-2.5 .6-1.3 .7 1.3 .7 2.5 .6 1.4 .7-1.3 .7-2.7 .7-1.4 .6 1.4 .7 2.7 .7 1.3 .7-1.3 .6-2.7 .7-1.4 .7 1.4 .7 2.7 .6 1.4 .7-1.3 .7-2.5 .7-1.2 .6 1.2 .7 2.5 .7 .7 .7-1 .7-2.2 .6-1 .7 1 .7 2.2 .6 1.2 .7-1.3 .7-2.4 .7-1.3 .6 1.3 .7 2.4 .7 1.2 .7-1.1 .6-2.1 .7-1.1 .7 1.1 .7 2.1 .6 1.1 .7-1.1 .7-2.2 .7-1.1 .6 1.1 .7 2.2 .7 1.2 .7-1.1 .7-2.3 .6-1.2 .7 1.2 .7 2.3 .6 1.1 .7-1.3 .7-2.7 .7-1.3 .6 1.3 .7 2.7 .7 1.6 .7-1.2 .6-2.5 .7-1.2 .7 1.2 .7 2.5 .6 .8 .7-1 .7-2.1 .7-1 .6 1 .7 2.1 .7 1.4 .7-1.3 .6-2.8 .7-1.4 .7 1.4 .7 2.8 .6 .8 .7-1.1 .7-2.2 .7-1.2 .6 1.2 .7 2.2 .7 1.2 .7-1.1 .7-2.2 .6-1.1 .7 1.1 .7 2.2 .6 1.3 .7-1.2 .7-2.3 .7-1.1 .6 1.1 .7 2.3 .7 1.2 .7-1.1 .6-2.3 .7-1.2 .7 1.2 .7 2.3 .6 1.3 .7-1.2 .7-2.5 .7-1.3 .6 1.3 .7 2.5 .7 1.1 .7-1.3 .6-2.6 .7-1.3 .7 1.3 .7 2.6 .6 1 .7-1.3 .7-2.6 .7-1.3 .6 1.3 .7 2.6 .7 1.7 .7-1.4 .6-2.7 .7-1.4 .7 1.4 .7 2.7 .6 1.2 .7-1.3 .7-2.6 .7-1.2 .7 1.2 .6 2.6 .7 1.4 .7-1.3 .7-2.4 .6-1.3 .7 1.3 .7 2.4 .6 1.4 .7-1.3 .7-2.6 .7-1.3 .7 1.3 .6 2.6 .7 1 .7-1.1 .7-2.4 .6-1.1 .7 1.1 .7 2.4 .6 1.3 .7-1.1 .7-2.3 .7-1.1 .7 1.1 .6 2.3 .7 .9 .7-1.1 .6-2.2 .7-1 .7 1 .7 2.2 .7 1.5 .6-1.2 .7-2.3 .7-1.1 .7 1.1 .6 2.3 .7 .7 .7-1.2 .7-2.4 .6-1.2 .7 1.2 .7 2.4 .7 1.6 .6-1.2 .7-2.3 .7-1.2 .7 1.2 .6 2.3 .7 .7 .7-1.2 .7-2.3 .6-1.2 .7 1.2 .7 2.3 .6 1.6 .7-1.1 .7-2.4 .7-1.2 .6 1.2 .7 2.4 .7 1 .7-1.3 .7-2.6 .6-1.3 .7 1.3 .7 2.6 .6 1.2 .7-1.3 .7-2.7 .7-1.3 .7 1.3 .6 2.7 .7 1.3 .7-1.2 .7-2.5 .6-1.2 .7 1.2 .7 2.5 .7 1.5 .6-1.3 .7-2.4 .7-1.3 .7 1.3 .6 2.4 .7 1 .7-1.2 .6-2.6 .7-1.3 .7 1.3 .7 2.6 .7 1.2 .6-1.2 .7-2.2 .7-1.2 .7 1.2 .6 2.2 .7 1.3 .7-1.3 .6-2.7 .7-1.3 .7 1.3 .7 2.7 .7 1.5 .6-1.3 .7-2.5 .7-1.2 .7 1.2 .6 2.5 .7 1.4 .7-1.3 .7-2.6 .6-1.3 .7 1.3 .7 2.6 .7 1.1 .6-1.3 .7-2.5 .7-1.3 .7 1.3 .6 2.5 .7 1.3 .7-1.2 .7-2.2 .6-1.1 .7 1.1 .7 2.2 .6 1.4 .7-1.3 .7-2.5 .7-1.2 .7 1.2 .6 2.5 .7 1 .7-1.4 .7-2.7 .6-1.3 .7 1.3 .7 2.7 .6 1.6 .7-1.3 .7-2.6 .7-1.3 .7 1.3 .6 2.6 .7 1 .7-1.3 .7-2.7 .6-1.3 .7 1.3 .7 2.7 .7 1.1 .6-1.2 .7-2.3 .7-1.2 .7 1.2 .6 2.3 .7 1.8 .6-1.1" fill="none" stroke="#705da0" stroke-width="1.0" stroke-linejoin="round"/></g>
<clipPath id="c2"><rect x="878.3" y="113" width="518.5" height="186"/></clipPath>
<g clip-path="url(#c2)"><path d="M878.3 298.3l.3 0 1.4-66.7 .5 0 1.4 66.7 .6 0 1.3-68.5 .6 0 1.4 68.5 .6 0 1.3-66.5 .6 0 1.4 66.5 .5 0 1.4-66.6 .6 0 1.3 66.6 .6 0 1.4-68.4 .6 0 1.3 68.4 .6 0 1.4-67.5 .5 0 1.4 67.5 .6 0 1.3-65.8 .6 0 1.4 65.8 .6 0 1.3-68.7 .6 0 1.4 68.7 .5 0 1.4-67.6 .6 0 1.3 67.6 .6 0 1.4-67.8 .6 0 1.3 67.8 .6 0 1.4-65.9 .5 0 1.4 65.9 .6 0 1.3-68.1 .6 0 1.4 68.1 .6 0 1.3-67.2 .6 0 1.4 67.2 .5 0 1.4-66.3 .6 0 1.3 66.3 .6 0 1.4-68.2 .6 0 1.3 68.2 .6 0 1.4-65.8 .5 0 1.4 65.8 .6 0 1.3-66.6 .6 0 1.4 66.6 .6 0 1.3-66.8 .6 0 1.4 66.8 .5 0 1.4-66.4 .6 0 1.3 66.4 .6 0 1.4-68.2 .6 0 1.3 68.2 .6 0 1.4-68.1 .5 0 1.4 68.1 .6 0 1.3-67.8 .6 0 1.4 67.8 .6 0 1.3-67.6 .6 0 1.4 67.6 .5 0 1.4-66.3 .6 0 1.3 66.3 .6 0 1.4-65.9 .6 0 1.3 65.9 .6 0 1.4-66.4 .5 0 1.4 66.4 .6 0 1.3-68.3 .6 0 1.4 68.3 .6 0 1.3-67.2 .6 0 1.4 67.2 .5 0 1.4-68.5 .6 0 1.3 68.5 .6 0 1.4-66 .6 0 1.3 66 .6 0 1.4-66.7 .5 0 1.4 66.7 .6 0 1.3-67.6 .6 0 1.4 67.6 .6 0 1.3-66.9 .6 0 1.4 66.9 .5 0 1.4-68.2 .6 0 1.3 68.2 .6 0 1.4-66.4 .6 0 1.3 66.4 .6 0 1.4-66.4 .5 0 1.4 66.4 .6 0 1.3-68.4 .6 0 1.4 68.4 .6 0 1.3-65.9 .6 0 1.4 65.9 .5 0 1.4-68.2 .6 0 1.3 68.2 .6 0 1.4-66.7 .6 0 1.3 66.7 .6 0 1.4-67.4 .5 0 1.4 67.4 .6 0 1.3-66.4 .6 0 1.4 66.4 .6 0 1.3-67.7 .6 0 1.4 67.7 .5 0 1.4-66.9 .6 0 1.3 66.9 .6 0 1.4-68.5 .6 0 1.3 68.5 .6 0 1.4-66.6 .5 0 1.4 66.6 .6 0 1.3-65.9 .6 0 1.4 65.9 .6 0 1.3-68 .6 0 1.4 68 .5 0 1.4-65.8 .6 0 1.3 65.8 .6 0 1.4-68.8 .6 0 1.3 68.8 .6 0 1.4-68 .5 0 1.4 68 .6 0 1.3-68.7 .6 0 1.4 68.7 .6 0 1.3-66.2 .6 0 1.4 66.2 .5 0 1.4-67 .6 0 1.3 67 .6 0 1.4-68.2 .6 0 1.3 68.2 .6 0 1.4-67.9 .5 0 1.4 67.9 .6 0 1.3-67.4 .6 0 1.4 67.4 .6 0 1.3-67.2 .6 0 1.4 67.2 .5 0 1.4-67.6 .6 0 1.3 67.6 .6 0 1.4-66.6 .6 0 1.3 66.6 .6 0 1.4-66.6 .5 0 1.4 66.6 .6 0 1.3-68.4 .6 0 1.4 68.4 .6 0 1.3-66.5 .6 0 1.4 66.5 .5 0 1.4-66 .6 0 1.3 66 .6 0 1.4-67.1 .6 0 1.3 67.1 .6 0 1.4-66.2 .5 0 1.4 66.2 .6 0 1.3-67.5 .6 0 1.4 67.5 .6 0 1.3-67.7 .6 0 1.4 67.7 .5 0 1.4-67.5 .6 0 1.3 67.5 .6 0 1.4-67.2 .6 0 1.3 67.2 .6 0 1.4-66.5 .5 0 1.4 66.5 .6 0 1.3-66.3 .6 0 1.4 66.3 .6 0 1.3-67 .6 0 1.4 67 .5 0 1.4-68 .6 0 1.3 68 .6 0 1.4-66.4 .6 0 1.3 66.4 .6 0 1.4-67.6 .5 0 1.4 67.6 .6 0 1.3-67.6 .6 0 1.4 67.6 .6 0 1.3-68.2 .6 0 1.4 68.2 .5 0 1.4-66.7 .6 0 1.3 66.7 .6 0 1.4-66.5 .6 0 1.3 66.5 .6 0 1.4-68.1 .5 0 1.4 68.1 .6 0 1.3-67.4 .6 0 1.4 67.4 .6 0 1.3-66 .6 0 1.4 66 .5 0 1.4-68.3 .6 0 1.3 68.3 .6 0 1.4-67.4 .6 0 1.3 67.4 .6 0 1.4-67.4 .5 0 1.4 67.4 .6 0 1.3-68.8 .6 0 1.4 68.8 .6 0 1.3-66.5 .6 0 1.4 66.5 .5 0 1.4-66.1 .6 0 1.3 66.1 .6 0 1.4-67.6 .6 0 1.3 67.6 .6 0 1.4-68.1 .5 0 1.4 68.1 .6 0 1.3-66.3 .6 0 1.4 66.3 .6 0 1.3-67.8 .6 0 1.4 67.8 .5 0 1.4-67.1 .6 0 1.3 67.1 .6 0 1.4-67.7 .6 0 1.3 67.7 .6 0 1.4-66 .5 0 1.4 66 .6 0 1.3-67.2 .6 0 1.4 67.2 .6 0 1.3-67.9 .6 0 1.4 67.9 .5 0 1.4-66.8 .6 0 1.3 66.8 .6 0 1.4-68.1 .6 0 1.3 68.1 .6 0 1.4-66.3 .5 0 1.4 66.3 .6 0 1.3-66.7 .6 0 1.4 66.7 .6 0 1.3-65.9 .6 0 1.4 65.9 .5 0 1.4-67.8 .6 0 1.3 67.8 .6 0 1.4-66.4 .6 0 1.3 66.4 .6 0 1.4-68.1 .5 0 1.4 68.1 .6 0 1.3-65.8 .6 0 1.4 65.8 .6 0 1.3-68.7 .6 0 1.4 68.7 .5 0 1.4-68.7 .6 0 1.3 68.7 .6 0 1.4-67.2 .6 0 1.3 67.2 .6 0 1.4-68.4 .5 0 1.4 68.4 .6 0 1.3-66.4 .6 0 1.4 66.4 .6 0 1.3-67.4 .6 0 1.4 67.4 .5 0 1.4-66.7 .6 0 1.3 66.7 .6 0 1.4-66.3 .6 0 1.3 66.3 .6 0 1.4-67.8 .5 0 1.4 67.8 .6 0 1.3-68.5 .6 0 1.4 68.5 .6 0 1.3-68.6 .6 0 1.4 68.6 .5 0 1.4-66.1 .6 0 1.3 66.1 .6 0 1.4-67.6 .6 0 1.3 67.6 .6 0 1.4-66 .5 0 1.4 66 .6 0 1.3-66.3 .6 0 1.4 66.3 .6 0 1.3-66.6 .6 0 1.4 66.6 .5 0 1.4-67.6 .6 0 1.3 67.6 .6 0 1.4-66.6 .6 0 1.3 66.6 .6 0 1.4-66.6 .5 0 1.4 66.6 .6 0 1.3-67.5 .6 0 1.4 67.5 .6 0 1.3-66.4 .6 0 1.4 66.4 .5 0 1.4-68.4 .6 0 1.3 68.4 .6 0 1.4-66.2 .6 0 1.3 66.2 .6 0 1.4-68.4 .5 0 1.4 68.4 .6 0 1.3-68.1 .6 0 1.4 68.1 .6 0 1.3-65.9 .6 0 1.4 65.9 .5 0 1.2-58" fill="none" stroke="#f5b487" stroke-width="0.9" stroke-linejoin="round"/><path d="M878.3 230.1l.3 0 1.3 68.2 .6 0 1.4-66.1 .5 0 1.4 66.1 .6 0 1.3-66.6 .6 0 1.4 66.6 .6 0 1.3-67.3 .6 0 1.4 67.3 .5 0 1.4-67.2 .6 0 1.3 67.2 .6 0 1.4-66.2 .6 0 1.3 66.2 .6 0 1.4-68.8 .5 0 1.4 68.8 .6 0 1.3-68.4 .6 0 1.4 68.4 .6 0 1.3-66.6 .6 0 1.4 66.6 .5 0 1.4-66.3 .6 0 1.3 66.3 .6 0 1.4-68.2 .6 0 1.3 68.2 .6 0 1.4-68.4 .5 0 1.4 68.4 .6 0 1.3-68.5 .6 0 1.4 68.5 .6 0 1.3-68.7 .6 0 1.4 68.7 .5 0 1.4-68.7 .6 0 1.3 68.7 .6 0 1.4-68.3 .6 0 1.3 68.3 .6 0 1.4-66 .5 0 1.4 66 .6 0 1.3-66.4 .6 0 1.4 66.4 .6 0 1.3-67.1 .6 0 1.4 67.1 .5 0 1.4-66.5 .6 0 1.3 66.5 .6 0 1.4-68.1 .6 0 1.3 68.1 .6 0 1.4-68.1 .5 0 1.4 68.1 .6 0 1.3-65.8 .6 0 1.4 65.8 .6 0 1.3-68.6 .6 0 1.4 68.6 .5 0 1.4-66.4 .6 0 1.3 66.4 .6 0 1.4-66.7 .6 0 1.3 66.7 .6 0 1.4-68.6 .5 0 1.4 68.6 .6 0 1.3-68.7 .6 0 1.4 68.7 .6 0 1.3-67.6 .6 0 1.4 67.6 .5 0 1.4-68.7 .6 0 1.3 68.7 .6 0 1.4-65.9 .6 0 1.3 65.9 .6 0 1.4-65.9 .5 0 1.4 65.9 .6 0 1.3-65.9 .6 0 1.4 65.9 .6 0 1.3-66.9 .6 0 1.4 66.9 .5 0 1.4-67.3 .6 0 1.3 67.3 .6 0 1.4-67.7 .6 0 1.3 67.7 .6 0 1.4-68.2 .5 0 1.4 68.2 .6 0 1.3-67.3 .6 0 1.4 67.3 .6 0 1.3-66.3 .6 0 1.4 66.3 .5 0 1.4-68.4 .6 0 1.3 68.4 .6 0 1.4-68.8 .6 0 1.3 68.8 .6 0 1.4-65.9 .5 0 1.4 65.9 .6 0 1.3-65.9 .6 0 1.4 65.9 .6 0 1.3-67.9 .6 0 1.4 67.9 .5 0 1.4-66 .6 0 1.3 66 .6 0 1.4-68.6 .6 0 1.3 68.6 .6 0 1.4-68.3 .5 0 1.4 68.3 .6 0 1.3-68.6 .6 0 1.4 68.6 .6 0 1.3-65.9 .6 0 1.4 65.9 .5 0 1.4-66.5 .6 0 1.3 66.5 .6 0 1.4-67.4 .6 0 1.3 67.4 .6 0 1.4-67.7 .5 0 1.4 67.7 .6 0 1.3-68.7 .6 0 1.4 68.7 .6 0 1.3-68.3 .6 0 1.4 68.3 .5 0 1.4-66.2 .6 0 1.3 66.2 .6 0 1.4-66.8 .6 0 1.3 66.8 .6 0 1.4-67.7 .5 0 1.4 67.7 .6 0 1.3-67.8 .6 0 1.4 67.8 .6 0 1.3-65.9 .6 0 1.4 65.9 .5 0 1.4-67.5 .6 0 1.3 67.5 .6 0 1.4-66.1 .6 0 1.3 66.1 .6 0 1.4-66.3 .5 0 1.4 66.3 .6 0 1.3-67.2 .6 0 1.4 67.2 .6 0 1.3-68.5 .6 0 1.4 68.5 .5 0 1.4-67.3 .6 0 1.3 67.3 .6 0 1.4-66.2 .6 0 1.3 66.2 .6 0 1.4-68.6 .5 0 1.4 68.6 .6 0 1.3-65.8 .6 0 1.4 65.8 .6 0 1.3-68.6 .6 0 1.4 68.6 .5 0 1.4-65.8 .6 0 1.3 65.8 .6 0 1.4-68.1 .6 0 1.3 68.1 .6 0 1.4-66.7 .5 0 1.4 66.7 .6 0 1.3-68.2 .6 0 1.4 68.2 .6 0 1.3-66.9 .6 0 1.4 66.9 .5 0 1.4-68.7 .6 0 1.3 68.7 .6 0 1.4-66.5 .6 0 1.3 66.5 .6 0 1.4-68.5 .5 0 1.4 68.5 .6 0 1.3-66 .6 0 1.4 66 .6 0 1.3-67.4 .6 0 1.4 67.4 .5 0 1.4-67.2 .6 0 1.3 67.2 .6 0 1.4-68 .6 0 1.3 68 .6 0 1.4-68.2 .5 0 1.4 68.2 .6 0 1.3-67.6 .6 0 1.4 67.6 .6 0 1.3-66.3 .6 0 1.4 66.3 .5 0 1.4-65.9 .6 0 1.3 65.9 .6 0 1.4-68 .6 0 1.3 68 .6 0 1.4-67.1 .5 0 1.4 67.1 .6 0 1.3-67.2 .6 0 1.4 67.2 .6 0 1.3-67.2 .6 0 1.4 67.2 .5 0 1.4-67.5 .6 0 1.3 67.5 .6 0 1.4-66 .6 0 1.3 66 .6 0 1.4-65.8 .5 0 1.4 65.8 .6 0 1.3-68.8 .6 0 1.4 68.8 .6 0 1.3-68.4 .6 0 1.4 68.4 .5 0 1.4-67.5 .6 0 1.3 67.5 .6 0 1.4-65.9 .6 0 1.3 65.9 .6 0 1.4-67 .5 0 1.4 67 .6 0 1.3-68.6 .6 0 1.4 68.6 .6 0 1.3-67.9 .6 0 1.4 67.9 .5 0 1.4-67.3 .6 0 1.3 67.3 .6 0 1.4-68.7 .6 0 1.3 68.7 .6 0 1.4-67.3 .5 0 1.4 67.3 .6 0 1.3-66.2 .6 0 1.4 66.2 .6 0 1.3-66.6 .6 0 1.4 66.6 .5 0 1.4-67.8 .6 0 1.3 67.8 .6 0 1.4-67.8 .6 0 1.3 67.8 .6 0 1.4-66.4 .5 0 1.4 66.4 .6 0 1.3-66.9 .6 0 1.4 66.9 .6 0 1.3-66.8 .6 0 1.4 66.8 .5 0 1.4-68.8 .6 0 1.3 68.8 .6 0 1.4-68 .6 0 1.3 68 .6 0 1.4-67 .5 0 1.4 67 .6 0 1.3-68 .6 0 1.4 68 .6 0 1.3-66.9 .6 0 1.4 66.9 .5 0 1.4-66.2 .6 0 1.3 66.2 .6 0 1.4-68.6 .6 0 1.3 68.6 .6 0 1.4-67.8 .5 0 1.4 67.8 .6 0 1.3-66.8 .6 0 1.4 66.8 .6 0 1.3-66.9 .6 0 1.4 66.9 .5 0 1.4-68.6 .6 0 1.3 68.6 .6 0 1.4-66.7 .6 0 1.3 66.7 .6 0 1.4-66.5 .5 0 1.4 66.5 .6 0 1.3-68.3 .6 0 1.4 68.3 .6 0 1.3-66.9 .6 0 1.4 66.9 .5 0 1.4-68.4 .6 0 1.3 68.4 .6 0 1.4-67.2 .6 0 1.3 67.2 .6 0 1.4-68.2 .5 0 1.4 68.2 .6 0 1.3-67.5 .6 0 1.4 67.5 .6 0 1.3-66 .6 0 1.4 66 .5 0 1.4-66.3 .6 0 1.3 66.3 .6 0 1.4-68 .6 0 1.3 68 .6 0 1.4-66.6 .5 0 1.4 66.6 .6 0 1.3-67.8 .6 0 1.4 67.8 .6 0 1.3-67.1 .6 0 1.2 59.3" fill="none" stroke="#86b6e0" stroke-width="1.05" stroke-linejoin="round"/><path d="M878.3 280.5l.7-13.4 .7 30.9 1.6 0 1.6-12.1 .7 12.1 1.6 0 1.5-44.1 .8 44.1 1.6 0 1.5-40.6 .8 40.6 1.5 0 1.6-60.3 .8 60.3 1.5 0 1.6-56.7 .7 56.7 1.6 0 1.6-29.4 .7 29.4 1.6 0 1.5-20.8 .8 20.8 1.6 0 1.5-62.3 .8 62.3 1.5 0 1.6-32.9 .8 32.9 1.5 0 1.6-18 .7 18 1.6 0 1.6-30.7 .7 30.7 1.6 0 1.5-48.5 .8 48.5 1.6 0 1.5-53.6 .8 53.6 1.5 0 1.6-29.6 .8 29.6 1.5 0 1.6-42.5 .7 42.5 1.6 0 1.6-51.1 .7 51.1 1.6 0 1.5-31.1 .8 31.1 1.6 0 1.5-17.3 .8 17.3 1.5 0 1.6-59 .8 59 1.5 0 1.6-11.6 .7 11.6 1.6 0 1.6-41.7 .7 41.7 1.6 0 1.5-45.5 .8 45.5 1.6 0 1.5-60.6 .8 60.6 1.5 0 1.6-7.2 .8 7.2 1.5 0 1.6-38.3 .7 38.3 1.6 0 1.6-49.5 .7 49.5 1.6 0 1.5-48.2 .8 48.2 1.6 0 1.5-48 .8 48 1.5 0 1.6-34.5 .8 34.5 1.5 0 1.6-52.4 .7 52.4 1.6 0 1.6-47.4 .7 47.4 1.6 0 1.5-12.3 .8 12.3 1.6 0 1.5-8.1 .8 8.1 1.5 0 1.6-13.8 .8 13.8 1.5 0 1.6-22 .7 22 1.6 0 1.6-46.7 .7 46.7 1.6 0 1.5-21.5 .8 21.5 1.6 0 1.5-44.2 .8 44.2 1.5 0 1.6-10 .8 10 1.5 0 1.6-50.4 .7 50.4 1.6 0 1.6-62.5 .7 62.5 1.6 0 1.5-35.9 .8 35.9 1.6 0 1.5-14.5 .8 14.5 1.5 0 1.6-20.2 .8 20.2 1.5 0 1.6-24.3 .7 24.3 1.6 0 1.6-56.8 .7 56.8 1.6 0 1.5-6.9 .8 6.9 1.6 0 1.5-17.2 .8 17.2 1.5 0 1.6-57.1 .8 57.1 1.5 0 1.6-30.4 .7 30.4 1.6 0 1.6-50 .7 50 1.6 0 1.5-23.8 .8 23.8 1.6 0 1.5-21.9 .8 21.9 1.5 0 1.6-29.8 .8 29.8 1.5 0 1.6-38.3 .7 38.3 1.6 0 1.6-38.2 .7 38.2 1.6 0 1.5-42.5 .8 42.5 1.6 0 1.5-42.1 .8 42.1 1.5 0 1.6-47.6 .8 47.6 1.5 0 1.6-16.1 .7 16.1 1.6 0 1.6-52.9 .7 52.9 1.6 0 1.5-8.7 .8 8.7 1.6 0 1.5-25.9 .8 25.9 1.5 0 1.6-28.7 .8 28.7 1.5 0 1.6-51.9 .7 51.9 1.6 0 1.6-27.9 .7 27.9 1.6 0 1.5-49.2 .8 49.2 1.6 0 1.5-19.4 .8 19.4 1.5 0 1.6-14.7 .8 14.7 1.5 0 1.6-34 .7 34 1.6 0 1.6-7.9 .7 7.9 1.6 0 1.5-45.5 .8 45.5 1.6 0 1.5-48.2 .8 48.2 1.5 0 1.6-12.5 .8 12.5 1.5 0 1.6-63.9 .7 63.9 1.6 0 1.6-55.7 .7 55.7 1.6 0 1.5-63.8 .8 63.8 1.6 0 1.5-60 .8 60 1.5 0 1.6-29.9 .8 29.9 1.5 0 1.6-9.4 .7 9.4 1.6 0 1.6-15.2 .7 15.2 1.6 0 1.5-29.5 .8 29.5 1.6 0 1.5-39.3 .8 39.3 1.5 0 1.6-38.3 .8 38.3 1.5 0 1.6-6.5 .7 6.5 1.6 0 1.6-63.3 .7 63.3 1.6 0 1.5-34.1 .8 34.1 1.6 0 1.5-41.6 .8 41.6 1.5 0 1.6-47.1 .8 47.1 1.5 0 1.6-38.5 .7 38.5 1.6 0 1.6-52.5 .7 52.5 1.6 0 1.5-23.9 .8 23.9 1.6 0 1.5-52.7 .8 52.7 1.5 0 1.6-64.3 .8 64.3 1.5 0 1.6-52 .7 52 1.6 0 1.6-43.8 .7 43.8 1.6 0 1.5-39.6 .8 39.6 1.6 0 1.5-14.4 .8 14.4 1.5 0 1.6-50 .8 50 1.5 0 1.6-12.3 .7 12.3 1.6 0 1.6-18.4 .7 18.4 1.6 0 1.5-51.9 .8 51.9 1.6 0 1.5-12.2 .8 12.2 1.5 0 1.6-43.9 .8 43.9 1.5 0 1.6-59.3 .7 59.3 1.6 0 1.6-32.3 .7 32.3 1.6 0 1.5-17.4 .8 17.4 1.6 0 1.5-62.2 .8 62.2 1.5 0 1.6-23.4 .8 23.4 1.5 0 1.6-45.9 .7 45.9 1.6 0 1.6-57.5 .7 57.5 1.6 0 1.5-58.6 .8 58.6 1.6 0 1.5-39.3 .8 39.3 1.5 0 1.6-60.4 .8 60.4 1.5 0 1.6-20.7 .7 20.7 1.6 0 1.6-17.9 .7 17.9 1.6 0 1.5-8.9 .8 8.9 1.6 0 1.5-31.4 .8 31.4 1.5 0 1.6-61.6 .8 61.6 1.5 0 1.6-47.8 .7 47.8 1.6 0 1.6-20.6 .7 20.6 1.6 0 1.5-22 .8 22 1.6 0 1.5-15.2 .8 15.2 1.5 0 1.6-37.1 .8 37.1 1.5 0 1.6-34 .7 34 1.6 0 1.6-35 .7 35 1.6 0 1.5-42.1 .8 42.1 1.6 0 1.5-48.2 .8 48.2 1.5 0 1.6-46.6 .8 46.6 1.5 0 1.6-9.7 .7 9.7 1.6 0 1.6-15.1 .7 15.1 1.6 0 1.5-27.1 .8 27.1 1.6 0 1.5-59.7 .8 59.7 0 0" fill="none" stroke="#5e4e90" stroke-width="0.7" stroke-opacity="0.5" stroke-linejoin="round"/><path d="M878.3 230.2l.9 3 1-3.2 .9 .3 1-.3 1 2.8 .9-2.7 1 .2 1-.2 1 3 .9-3.2 1 .4 1-.4 .9 3.4 1-3.2 1 .3 .9-.3 1 2.7 1-3.1 1 .3 .9-.3 1 3.5 1-3.3 .9 .3 1-.3 1 3.4 .9-3.6 1 .4 1-.4 1 3.8 .9-4 1 .4 1-.4 .9 3.7 1-3.5 1 .4 .9-.4 1 2.8 1-2.6 1 .3 .9-.3 1 2.7 1-3 .9 .3 1-.3 1 3.2 .9-3.2 1 .3 1-.3 1 3.1 .9-3.2 1 .4 1-.4 .9 3.8 1-3.8 1 .4 .9-.4 1 3.2 1-3.2 1 .4 .9-.4 1 3.9 1-3.6 .9 .4 1-.4 1 3.5 .9-3.2 1 .3 1-.3 1 2.9 .9-3.3 1 .4 1-.4 .9 3.2 1-3.2 1 .3 .9-.3 1 3.4 1-3 1 .3 .9-.3 1 2.9 1-3 .9 .3 1-.3 1 3.4 .9-3.4 1 .3 1-.3 1 3.2 .9-3.4 1 .4 1-.4 .9 2.8 1-2.9 1 .3 .9-.3 1 3.7 1-3.6 1 .3 .9-.3 1 3.4 1-3.5 .9 .3 1-.3 1 3.4 .9-3.5 1 .4 1-.4 1 3.7 .9-3.3 1 .3 1-.3 .9 2.5 1-2.6 1 .3 .9-.3 1 2.7 1-2.5 1 .2 .9-.2 1 2.6 1-3.1 .9 .3 1-.3 1 3.8 .9-3.5 1 .3 1-.3 1 2.6 .9-2.7 1 .3 1-.3 .9 3.5 1-3.7 1 .4 .9-.4 1 3.7 1-3.6 1 .3 .9-.3 1 3.2 1-3.2 .9 .4 1-.4 1 2.9 .9-2.9 1 .3 1-.3 1 3.3 .9-3.1 1 .3 1-.3 .9 3.1 1-3.4 1 .3 .9-.3 1 3.5 1-3.4 1 .3 .9-.3 1 3.7 1-3.8 .9 .3 1-.3 1 3.7 .9-3.7 1 .3 1-.3 1 3.5 .9-3.4 1 .3 1-.3 .9 3.3 1-3.1 1 .3 1-.3 .9 3.4 1-3.8 1 .4 .9-.4 1 3.9 1-3.5 .9 .3 1-.3 1 2.7 .9-2.7 1 .3 1-.3 1 3.4 .9-3.6 1 .4 1-.4 .9 3.7 1-3.8 1 .4 1-.4 .9 3.4 1-3.4 1 .4 .9-.4 1 3.7 1-3.6 .9 .3 1-.3 1 3 .9-2.6 1 .3 1-.3 1 2.8 .9-3.1 1 .3 1-.3 .9 3.4 1-3.6 1 .4 1-.4 .9 3.7 1-3.4 1 .4 .9-.4 1 3.1 1-3 .9 .3 1-.3 1 3.4 1-3.8 .9 .3 1-.3 1 3.9 .9-3.7 1 .4 1-.4 .9 3.5 1-3.4 1 .3 1-.3 .9 3.6 1-3.5 1 .3 .9-.3 1 2.7 1-3.1 .9 .3 1-.3 1 3.3 .9-3.2 1 .3 1-.3 1 3 .9-2.9 1 .3 1-.3 .9 3.2 1-3.3 1 .4 .9-.4 1 3.6 1-3.7 1 .4 .9-.4 1 3.3 1-3.1 .9 .3 1-.3 1 3.3 .9-3.1 1 .3 1-.3 1 3.1 .9-3.6 1 .4 1-.4 .9 3.6 1-3.4 1 .4 1-.4 .9 3.2 1-3.1 1 .4 .9-.4 1 2.9 1-2.7 .9 .3 1-.3 1 2.9 .9-3.2 1 .3 1-.3 1 3.3 .9-3.5 1 .4 1-.4 .9 3.3 1-2.7 1 .3 1-.3 .9 2.5 1-2.9 1 .3 .9-.3 1 3.6 1-3.5 .9 .3 1-.3 1 3.3 .9-3.1 1 .3 1-.3 1 3.3 .9-3.5 1 .3 1-.3 .9 3 1-3.3 1 .3 1-.3 .9 3.7 1-3.6 1 .3 .9-.3 1 3.4 1-3.4 .9 .3 1-.3 1 3.6 1-3.4 .9 .3 1-.3 1 2.8 .9-2.7 1 .2 1-.2 .9 2.7 1-2.9 1 .3 .9-.3 1 3.1 1-2.8 1 .2 .9-.2 1 3.1 1-3.5 .9 .4 1-.4 1 3.2 .9-3 1 .3 1-.3 1 3.5 .9-3.6 1 .4 1-.4 .9 3.6 1-3.8 1 .4 .9-.4 1 3.1 1-2.6 1 .2 .9-.2 1 2.9 1-3.4 .9 .4 1-.4 1 3.2 .9-2.9 1 .2 1-.2 1 2.8 .9-2.9 1 .3 1-.3 .9 3.8 1-4 1 .4 1-.4 .9 3.4 1-3.2 1 .3 .9-.3 1 3 1-2.6 .9 .2 1-.2 1 2.7 .9-3.2 1 .3 1-.3 1 3.3 .9-3.4 1 .4 1-.4 .9 3.5 1-3.4 1 .3 1-.3 .9 3.4 1-3.4 1 .3 .9-.3 1 3.8 1-3.6 .9 .4 1-.4 1 3.3 .9-3.5 1 .4 1-.4 1 2.9 .9-2.9 1 .3 1-.3 .9 3.4 1-3.5 1 .4 1-.4 .9 3.2 1-2.6 1 .2 .9-.2 1 2.7 1-3.2 .9 .3 1-.3 1 3.7 1-3.6 .9 .3 1-.3 1 3.4 .9-3.3 1 .3 1-.3 .9 3.2 1-3.5 1 .4 .9-.4 1 3.7 1-3.5 1 .3 .9-.3 1 3.7 1-3.3 .9 .3 1-.3 1 2.8 .9-2.9 1 .3 1-.3 1 3.5 .9-3.9 1 .4 1-.4 .9 3.2 1-2.8 1 .3 .9-.3 1 3.4 1-3.8 1 .4 .9-.4 1 3.1 1-2.7 .9 .3 1-.3 1 2.6 .9-3 1 .3 1-.3 1 3.1 .9-3 1 .3 1-.3 .9 3.3 1-3.4 1 .3 1-.3 .9 3.1 1-2.6 1 .3 .9-.3 1 2.9 1-3.2 .9 .3 1-.3 1 3 .9-2.7 1 .3 1-.3 1 3 .9-3.3 1 .3 1-.3 .9 2.8 1-2.7 1 .3 1-.3 .9 2.9 1-2.8 1 .3 .9-.3 1 2.6 1-2.8 .9 .3 1-.3 1 3.5 .9-3.4 1 .3 1-.3 1 3.6 .9-3.4 1 .3 1-.3 .9 3.1 1-3.7 1 .4 1-.4 .9 3.9 1-3.6 1 .4 .9-.4 1 3.1 1-3.2 .9 .3 1-.3 1 2.8 1-2.9 .9 .3 1-.3 1 3.1 .9-3.1 1 .4 1-.4 .9 3.7 .6-2.2" fill="none" stroke="#5b8fe0" stroke-width="1.3" stroke-linejoin="round"/><path d="M878.3 221.4l.3 1.1 .7 4.8 .6 3 .6-2.6 .7-5.1 .6-2.5 .7 2.5 .6 5.1 .7 2.4 .6-2.5 .7-5.1 .6-2.5 .7 2.5 .6 5.1 .7 1.7 .6-2.4 .7-4.9 .6-2.4 .6 2.4 .7 4.9 .6 2.6 .7-2.4 .6-4.9 .7-2.4 .6 2.4 .7 4.9 .6 2.6 .7-2.5 .6-5.1 .7-2.6 .6 2.6 .7 5.1 .6 2.6 .6-2.5 .7-5.2 .6-2.6 .7 2.6 .6 5.2 .7 2.8 .6-2.5 .7-4.9 .6-2.5 .7 2.5 .6 4.9 .7 2 .6-2.4 .7-4.9 .6-2.4 .6 2.4 .7 4.9 .6 3 .7-2.8 .6-5.4 .7-2.8 .6 2.8 .7 5.4 .6 2 .7-2.5 .6-5 .7-2.5 .6 2.5 .7 5 .6 3.2 .6-2.7 .7-5.3 .6-2.7 .7 2.7 .6 5.3 .7 2.1 .6-2.5 .7-4.8 .6-2.5 .7 2.5 .6 4.8 .7 2.6 .6-2.4 .7-4.8 .6-2.4 .6 2.4 .7 4.8 .6 2.3 .7-2.5 .6-5 .7-2.4 .6 2.4 .7 5 .6 2.7 .7-2.4 .6-4.7 .7-2.4 .6 2.4 .7 4.7 .6 2.1 .6-2.3 .7-4.7 .6-2.4 .7 2.4 .6 4.7 .7 2.6 .6-2.6 .7-5.3 .6-2.6 .7 2.6 .6 5.3 .7 2.4 .6-2.5 .7-5.1 .6-2.5 .6 2.5 .7 5.1 .6 3.2 .7-2.5 .6-5 .7-2.5 .6 2.5 .7 5 .6 2.5 .7-2.6 .6-5.4 .7-2.6 .6 2.6 .7 5.4 .6 1.9 .6-2.5 .7-5.1 .6-2.5 .7 2.5 .6 5.1 .7 2.9 .6-2.7 .7-5.4 .6-2.7 .7 2.7 .6 5.4 .7 3.1 .6-2.9 .7-5.8 .6-2.9 .6 2.9 .7 5.8 .6 2.1 .7-2.6 .6-5.3 .7-2.7 .6 2.7 .7 5.3 .6 2.6 .7-2.7 .6-5.4 .7-2.7 .6 2.7 .7 5.4 .6 2.7 .6-2.5 .7-5.2 .6-2.6 .7 2.6 .6 5.2 .7 3.2 .6-2.7 .7-5.3 .6-2.7 .7 2.7 .6 5.3 .7 2.4 .6-2.7 .7-5.4 .6-2.6 .6 2.6 .7 5.4 .6 2.3 .7-2.5 .6-5 .7-2.5 .6 2.5 .7 5 .6 3 .7-2.8 .6-5.6 .7-2.9 .6 2.9 .7 5.6 .6 2.7 .6-2.7 .7-5.5 .6-2.8 .7 2.8 .6 5.5 .7 2.8 .6-2.7 .7-5.4 .6-2.7 .7 2.7 .6 5.4 .7 2.1 .6-2.6 .7-5.3 .6-2.7 .6 2.7 .7 5.3 .6 3.3 .7-2.7 .6-5.3 .7-2.6 .6 2.6 .7 5.3 .6 2 .7-2.3 .6-4.7 .7-2.4 .6 2.4 .7 4.7 .6 2.5 .6-2.7 .7-5.2 .6-2.7 .7 2.7 .6 5.2 .7 2.4 .6-2.6 .7-5.1 .6-2.5 .7 2.5 .6 5.1 .7 3.2 .6-2.5 .7-4.9 .6-2.5 .6 2.5 .7 4.9 .6 2.2 .7-2.6 .6-5.1 .7-2.5 .6 2.5 .7 5.1 .6 2.4 .7-2.4 .6-4.9 .7-2.4 .6 2.4 .7 4.9 .6 2.6 .6-2.6 .7-5.2 .6-2.6 .7 2.6 .6 5.2 .7 2.6 .6-2.4 .7-4.9 .6-2.4 .7 2.4 .6 4.9 .7 3.1 .6-2.9 .7-5.7 .6-2.9 .6 2.9 .7 5.7 .6 2.4 .7-2.8 .6-5.5 .7-2.7 .6 2.7 .7 5.5 .6 3.1 .7-2.5 .6-5 .7-2.5 .6 2.5 .7 5 .6 1.8 .6-2.4 .7-4.9 .6-2.4 .7 2.4 .6 4.9 .7 2.6 .6-2.6 .7-5.1 .6-2.6 .7 2.6 .6 5.1 .7 2.9 .6-2.7 .7-5.3 .6-2.7 .6 2.7 .7 5.3 .6 2.8 .7-2.8 .6-5.4 .7-2.7 .6 2.7 .7 5.4 .6 2.6 .7-2.7 .6-5.3 .7-2.6 .6 2.6 .7 5.3 .6 2.6 .6-2.7 .7-5.4 .6-2.8 .7 2.8 .6 5.4 .7 2.7 .6-2.8 .7-5.4 .6-2.7 .7 2.7 .6 5.4 .7 3 .6-2.6 .7-5.4 .6-2.6 .6 2.6 .7 5.4 .6 2.4 .7-2.4 .6-4.8 .7-2.5 .6 2.5 .7 4.8 .6 2.2 .7-2.5 .6-5.1 .7-2.5 .6 2.5 .7 5.1 .6 2.9 .6-2.6 .7-5.1 .6-2.6 .7 2.6 .6 5.1 .7 2.8 .6-2.8 .7-5.4 .6-2.7 .7 2.7 .6 5.4 .7 2.9 .6-2.6 .7-5.3 .6-2.6 .6 2.6 .7 5.3 .6 1.8 .7-2.5 .6-4.9 .7-2.4 .6 2.4 .7 4.9 .6 2.9 .7-2.4 .6-4.9 .7-2.4 .6 2.4 .7 4.9 .6 2.6 .6-2.6 .7-5.1 .6-2.6 .7 2.6 .6 5.1 .7 2.6 .6-2.6 .7-5.1 .6-2.6 .7 2.6 .6 5.1 .7 2.3 .6-2.5 .7-5.2 .6-2.6 .6 2.6 .7 5.2 .6 2.6 .7-2.8 .6-5.6 .7-2.8 .6 2.8 .7 5.6 .6 2.8 .7-2.6 .6-5.3 .7-2.6 .6 2.6 .7 5.3 .6 2.5 .6-2.5 .7-5.1 .6-2.6 .7 2.6 .6 5.1 .7 2.8 .6-2.7 .7-5.4 .6-2.7 .7 2.7 .6 5.4 .7 2.6 .6-2.7 .7-5.5 .6-2.7 .6 2.7 .7 5.5 .6 3.1 .7-2.7 .6-5.3 .7-2.6 .6 2.6 .7 5.3 .6 2.4 .7-2.6 .6-5.1 .7-2.5 .6 2.5 .7 5.1 .6 1.9 .6-2.6 .7-5.2 .6-2.6 .7 2.6 .6 5.2 .7 3 .6-2.6 .7-5.2 .6-2.6 .7 2.6 .6 5.2 .7 2.6 .6-2.6 .7-5.1 .6-2.6 .6 2.6 .7 5.1 .6 2.8 .7-2.5 .6-5.1 .7-2.5 .6 2.5 .7 5.1 .6 2.6 .7-2.7 .6-5.4 .7-2.6 .6 2.6 .7 5.4 .6 2.8 .6-2.5 .7-5.1 .6-2.6 .7 2.6 .6 5.1 .7 2.7 .6-2.9 .7-5.9 .6-2.9 .7 2.9 .6 5.9 .7 2.5 .6-2.8 .7-5.5 .6-2.7 .6 2.7 .7 5.5 .6 3.1 .7-2.6 .6-5 .7-2.5 .6 2.5 .7 5 .6 2.4 .7-2.7 .6-5.5 .7-2.7 .6 2.7 .7 5.5 .6 2.9 .6-2.7 .7-5.4 .6-2.7 .7 2.7 .6 5.4 .7 2.5 .6-2.8 .7-5.5 .6-2.8 .7 2.8 .6 5.5 .7 2.2 .6-2.4 .7-4.7 .6-2.4 .6 2.4 .7 4.7 .6 3.2 .7-2.8 .6-5.5 .7-2.7 .6 2.7 .7 5.5 .6 2 .7-2.6 .6-5.1 .7-2.6 .6 2.6 .7 5.1 .6 3.4 .6-2.8 .7-5.6 .6-2.8 .7 2.8 .6 5.6 .7 2.6 .6-2.7 .7-5.5 .6-2.7 .7 2.7 .6 5.5 .7 2.9 .6-2.7 .7-5.6 .6-2.8 .6 2.8 .7 5.6 .6 2.7 .7-2.7 .6-5.4 .7-2.7 .6 2.7 .7 5.4 .6 1.8 .7-2.5 .6-5 .7-2.6 .6 2.6 .7 5 .6 2.9 .6-2.7 .7-5.4 .6-2.8 .7 2.8 .6 5.4 .7 2.4 .6-2.5 .7-4.9 .6-2.5 .7 2.5 .6 4.9 .7 3.1 .6-2.5 .7-5.2 .6-2.5 .6 2.5 .7 5.2 .6 2.1 .7-2.7 .6-5.3 .7-2.7 .6 2.7 .7 5.3 .6 2.9 .7-2.5 .6-5 .7-2.5 .6 2.5 .7 5 .6 2.2 .6-2.4 .7-4.7 .6-2.4 .7 2.4 .6 4.7 .7 3.2 .6-2.8 .7-5.6 .6-2.8 .7 2.8 .6 5.6 .7 1.9 .6-2.4 .7-5 .6-2.5 .6 2.5 .7 5 .6 2.5 .7-2.4 .6-4.7 .7-2.4 .6 2.4 .7 4.7 .6 2.8 .7-2.7 .6-5.3 .7-2.6 .6 2.6 .7 5.3 .6 3 .6-2.6 .7-5.2 .6-2.6 .7 2.6 .6 5.2 .7 2.4 .6-2.8 .7-5.6 .6-2.8 .7 2.8 .6 5.6 .7 2.5 .6-2.7 .7-5.2 .6-2.7 .6 2.7 .7 5.2 .6 3.2 .7-2.8 .6-5.6 .7-2.8 .6 2.8 .7 5.6 .6 2 .7-2.5 .6-5.1 .7-2.5 .6 2.5 .7 5.1 .6 2.7 .6-2.5 .7-5 .6-2.4 .7 2.4 .6 5 .7 2.6 .6-2.7 .7-5.5 .6-2.7 .7 2.7 .6 5.5 .7 3 .6-2.5 .7-4.9 .6-2.5 .6 2.5 .7 4.9 .6 2.5 .7-2.6 .6-5.3 .7-2.6 .6 2.6 .7 5.3 .6 2 .7-2.6 .6-5.3 .7-2.6 .6 2.6 .7 5.3 .6 3.2 .6-2.5 .7-4.9 .6-2.5 .7 2.5 .6 4.9 .7 2.3 .6-2.4 .7-4.8 .6-2.4 .7 2.4 .6 4.8 .7 2 .6-2.6 .7-5.2 .6-2.5 .6 2.5 .7 5.2 .6 2.8 .7-2.5 .6-4.9 .7-2.5 .6 2.5 .7 4.9 .6 2.6 .7-2.5 .6-5 .7-2.6 .6 2.6 .7 5 .6 2.2 .6-2.5 .7-4.8 .6-2.4 .7 2.4 .6 4.8 .7 3.1 .6-2.8 .7-5.5 .6-2.8 .7 2.8 .6 5.5 .7 2.3 .6-2.6 .7-5.1 .6-2.5 .6 2.5 .7 5.1 .6 2.9 .7-2.6 .6-5.2 .7-2.6 .6 2.6 .7 5.2 .6 3.1 .7-2.9 .6-5.7 .7-2.9 .6 2.9 .7 5.7 .6 2.5 .6-2.6 .7-5.3 .6-2.6 .7 2.6 .6 5.3 .7 2.6 .6-2.7 .7-5.4 .6-2.7 .7 2.7 .6 5.4 .7 2.9 .6-2.6 .7-5 .6-2.6 .6 2.6 .7 5 .6 1.8 .7-2.5 .6-5.1 .7-2.5 .6 2.5 .7 5.1 .6 2.5 .7-2.4 .6-4.9 .7-2.5 .6 2.5 .7 4.9 .6 3.1 .6-2.7 .7-5.4 .6-2.7 .7 2.7 .6 5.4 .7 3 .6-2.6 .7-5.3 .6-2.6 .7 2.6 .6 5.3 .7 2.3 .6-2.8 .7-5.6 .6-2.8 .6 2.8 .7 5.6 .6 2.4 .7-2.4 .6-4.9 .7-2.4 .6 2.4 .7 4.9 .6 2.6 .7-2.7 .6-5.4 .7-2.7 .6 2.7 .7 5.4 .6 2.2 .6-2.4 .7-4.7 .6-2.4 .7 2.4 .6 4.7 .7 2.7 .6-2.7 .7-5.4 .6-2.7 .7 2.7 .6 5.4 .7 2.9 .6-2.5 .7-5 .6-2.6 .6 2.6 .7 5 .5 2" fill="none" stroke="#d9a0e0" stroke-width="1.2" stroke-linejoin="round"/><path d="M1320 287.4l3-.3 3 .3 3 .1 3 0 3-.2 3 .1 3-.2 3 .1 3-.2 3 .3 3 0 3-.2 3 0 3 .2 3-.1 3 .3 3 0 3-.1 3-.4 3-.1 3 .2 3 0 3 .2 3 .1 3-.2" fill="none" stroke="#e02f44" stroke-width="1.0" stroke-linejoin="round"/><path d="M878.3 190.9l.4 1.5 .6-2.6 .7-5.1 .6-2.6 .7 2.6 .6 5.1 .7 3.8 .6-3 .7-5.9 .6-3 .7 3 .6 5.9 .7 3 .6-3.2 .7-6.2 .6-3.1 .6 3.1 .7 6.2 .6 3.7 .7-3.2 .6-6.3 .7-3.1 .6 3.1 .7 6.3 .6 3.3 .7-3.1 .6-6.3 .7-3.2 .6 3.2 .7 6.3 .6 3.3 .6-3.3 .7-6.6 .6-3.3 .7 3.3 .6 6.6 .7 1.3 .6-3 .7-5.9 .6-2.9 .7 2.9 .6 5.9 .7 4.7 .6-3.4 .7-6.7 .6-3.4 .6 3.4 .7 6.7 .6 3.2 .7-3.1 .6-6.2 .7-3.1 .6 3.1 .7 6.2 .6 1.3 .7-2.6 .6-5.1 .7-2.5 .6 2.5 .7 5.1 .6 2.5 .6-2.5 .7-5 .6-2.5 .7 2.5 .6 5 .7 4.9 .6-3.4 .7-6.8 .6-3.5 .7 3.5 .6 6.8 .7 3.1 .6-3.1 .7-6.2 .6-3 .6 3 .7 6.2 .6 1.3 .7-2.7 .6-5.3 .7-2.7 .6 2.7 .7 5.3 .6 2.7 .7-2.6 .6-5 .7-2.6 .6 2.6 .7 5 .6 4.3 .6-3 .7-5.8 .6-2.9 .7 2.9 .6 5.8 .7 1.1 .6-2.8 .7-5.6 .6-2.8 .7 2.8 .6 5.6 .7 4.5 .6-3.1 .7-6.1 .6-3.1 .6 3.1 .7 6.1 .6 1.7 .7-2.5 .6-5.2 .7-2.6 .6 2.6 .7 5.2 .6 4.5 .7-3.3 .6-6.8 .7-3.4 .6 3.4 .7 6.8 .6 1.2 .6-2.6 .7-5.4 .6-2.7 .7 2.7 .6 5.4 .7 3.4 .6-2.9 .7-5.7 .6-2.9 .7 2.9 .6 5.7 .7 3.2 .6-3.1 .7-6.1 .6-3.1 .6 3.1 .7 6.1 .6 1.7 .7-2.9 .6-5.7 .7-2.8 .6 2.8 .7 5.7 .6 4.2 .7-2.9 .6-5.8 .7-2.8 .6 2.8 .7 5.8 .6 2.8 .6-2.9 .7-5.7 .6-2.8 .7 2.8 .6 5.7 .7 3.2 .6-2.8 .7-5.8 .6-2.8 .7 2.8 .6 5.8 .7 3.2 .6-3.3 .7-6.4 .6-3.3 .6 3.3 .7 6.4 .6 1.7 .7-3 .6-5.9 .7-3 .6 3 .7 5.9 .6 2.7 .7-2.5 .6-5 .7-2.5 .6 2.5 .7 5 .6 5 .6-3.2 .7-6.3 .6-3.2 .7 3.2 .6 6.3 .7 .9 .6-2.6 .7-5.3 .6-2.7 .7 2.7 .6 5.3 .7 2.7 .6-2.6 .7-5.1 .6-2.5 .6 2.5 .7 5.1 .6 4.2 .7-3.1 .6-6 .7-3 .6 3 .7 6 .6 2.9 .7-3.1 .6-6.3 .7-3.2 .6 3.2 .7 6.3 .6 3.8 .6-3 .7-6.1 .6-3.1 .7 3.1 .6 6.1 .7 1.2 .6-2.8 .7-5.8 .6-2.8 .7 2.8 .6 5.8 .7 4.3 .6-3.1 .7-6.2 .6-3.1 .6 3.1 .7 6.2 .6 2.1 .7-3 .6-5.9 .7-3 .6 3 .7 5.9 .6 4.7 .7-3.5 .6-7 .7-3.4 .6 3.4 .7 7 .6 1.2 .6-2.7 .7-5.4 .6-2.7 .7 2.7 .6 5.4 .7 2.9 .6-2.6 .7-5.3 .6-2.7 .7 2.7 .6 5.3 .7 2.8 .6-2.7 .7-5.4 .6-2.7 .6 2.7 .7 5.4 .6 2.8 .7-2.7 .6-5.5 .7-2.7 .6 2.7 .7 5.5 .6 3.9 .7-3.1 .6-6.2 .7-3.1 .6 3.1 .7 6.2 .6 1.4 .6-2.9 .7-6 .6-3 .7 3 .6 6 .7 2.4 .6-2.8 .7-5.7 .6-2.8 .7 2.8 .6 5.7 .7 4.7 .6-3.4 .7-6.7 .6-3.4 .6 3.4 .7 6.7 .6 2.1 .7-2.8 .6-5.6 .7-2.8 .6 2.8 .7 5.6 .6 2.6 .7-2.9 .6-5.7 .7-2.8 .6 2.8 .7 5.7 .6 3.1 .6-2.7 .7-5.5 .6-2.7 .7 2.7 .6 5.5 .7 2.4 .6-2.5 .7-5 .6-2.5 .7 2.5 .6 5 .7 3.9 .6-3 .7-6 .6-3 .6 3 .7 6 .6 2.9 .7-3.1 .6-6.1 .7-3.1 .6 3.1 .7 6.1 .6 4.3 .7-3.2 .6-6.3 .7-3.2 .6 3.2 .7 6.3 .6 2.8 .6-3.5 .7-7 .6-3.5 .7 3.5 .6 7 .7 2.8 .6-2.9 .7-5.7 .6-2.9 .7 2.9 .6 5.7 .7 3 .6-3.1 .7-6.3 .6-3.1 .6 3.1 .7 6.3 .6 3.1 .7-3.2 .6-6.6 .7-3.3 .6 3.3 .7 6.6 .6 3.5 .7-3.1 .6-6.1 .7-3 .6 3 .7 6.1 .6 1.1 .6-2.7 .7-5.4 .6-2.7 .7 2.7 .6 5.4 .7 4.3 .6-3.2 .7-6.3 .6-3.2 .7 3.2 .6 6.3 .7 3.4 .6-2.9 .7-5.9 .6-3 .6 3 .7 5.9 .6 3.6 .7-3.4 .6-6.9 .7-3.4 .6 3.4 .7 6.9 .6 1.2 .7-2.6 .6-5.2 .7-2.6 .6 2.6 .7 5.2 .6 3.9 .6-2.9 .7-5.9 .6-2.9 .7 2.9 .6 5.9 .7 3.7 .6-3.4 .7-6.8 .6-3.4 .7 3.4 .6 6.8 .7 2.6 .6-3.2 .7-6.4 .6-3.2 .6 3.2 .7 6.4 .6 3.8 .7-3.2 .6-6.3 .7-3.1 .6 3.1 .7 6.3 .6 1.5 .7-2.8 .6-5.7 .7-2.8 .6 2.8 .7 5.7 .6 3.9 .6-3.2 .7-6.5 .6-3.2 .7 3.2 .6 6.5 .7 1.9 .6-2.8 .7-5.6 .6-2.8 .7 2.8 .6 5.6 .7 2.5 .6-2.7 .7-5.4 .6-2.7 .6 2.7 .7 5.4 .6 5.3 .7-3.2 .6-6.4 .7-3.1 .6 3.1 .7 6.4 .6 .6 .7-2.6 .6-5 .7-2.5 .6 2.5 .7 5 .6 4.5 .6-3 .7-6.2 .6-3.1 .7 3.1 .6 6.2 .7 1 .6-2.6 .7-5 .6-2.6 .7 2.6 .6 5 .7 3.1 .6-2.7 .7-5.2 .6-2.7 .6 2.7 .7 5.2 .6 3.1 .7-3 .6-5.9 .7-3 .6 3 .7 5.9 .6 2.5 .7-2.6 .6-5.2 .7-2.6 .6 2.6 .7 5.2 .6 2.8 .6-2.7 .7-5.2 .6-2.7 .7 2.7 .6 5.2 .7 3.5 .6-3.2 .7-6.4 .6-3.2 .7 3.2 .6 6.4 .7 3.7 .6-3.2 .7-6.2 .6-3.1 .6 3.1 .7 6.2 .6 1.3 .7-2.5 .6-5 .7-2.6 .6 2.6 .7 5 .6 3.2 .7-3.1 .6-6.2 .7-3.1 .6 3.1 .7 6.2 .6 4.6 .6-3.1 .7-6.2 .6-3.1 .7 3.1 .6 6.2 .7 2 .6-3.1 .7-6.2 .6-3.1 .7 3.1 .6 6.2 .7 3.5 .6-3 .7-6 .6-3 .6 3 .7 6 .6 3.5 .7-3.2 .6-6.3 .7-3.2 .6 3.2 .7 6.3 .6 2.8 .7-3 .6-5.9 .7-3 .6 3 .7 5.9 .6 1.9 .6-3 .7-5.9 .6-2.9 .7 2.9 .6 5.9 .7 3.9 .6-2.9 .7-5.8 .6-2.9 .7 2.9 .6 5.8 .7 3.8 .6-3.1 .7-6.1 .6-3.1 .6 3.1 .7 6.1 .6 2 .7-2.9 .6-5.7 .7-2.9 .6 2.9 .7 5.7 .6 1.9 .7-2.8 .6-5.5 .7-2.8 .6 2.8 .7 5.5 .6 2.7 .6-2.5 .7-5.1 .6-2.5 .7 2.5 .6 5.1 .7 5.3 .6-3.3 .7-6.6 .6-3.4 .7 3.4 .6 6.6 .7 2.6 .6-3.3 .7-6.6 .6-3.3 .6 3.3 .7 6.6 .6 3.4 .7-3.5 .6-6.9 .7-3.4 .6 3.4 .7 6.9 .6 2.2 .7-3 .6-6 .7-3 .6 3 .7 6 .6 4.5 .6-3.5 .7-6.9 .6-3.5 .7 3.5 .6 6.9 .7 1.4 .6-3 .7-5.9 .6-3 .7 3 .6 5.9 .7 5 .6-3.3 .7-6.8 .6-3.4 .6 3.4 .7 6.8 .6 3.5 .7-3.4 .6-6.9 .7-3.4 .6 3.4 .7 6.9 .6 3.2 .7-3.4 .6-6.9 .7-3.4 .6 3.4 .7 6.9 .6 3.6 .6-3.1 .7-6.2 .6-3.1 .7 3.1 .6 6.2 .7 3 .6-3.2 .7-6.4 .6-3.2 .7 3.2 .6 6.4 .7 3.3 .6-3.1 .7-6.3 .6-3.1 .6 3.1 .7 6.3 .6 3.3 .7-3.5 .6-7 .7-3.4 .6 3.4 .7 7 .6 3.1 .7-3.1 .6-6.3 .7-3.1 .6 3.1 .7 6.3 .6 1.6 .6-3 .7-6.2 .6-3.1 .7 3.1 .6 6.2 .7 4.7 .6-3.3 .7-6.7 .6-3.4 .7 3.4 .6 6.7 .7 2.2 .6-2.9 .7-5.7 .6-2.8 .6 2.8 .7 5.7 .6 2.8 .7-3.2 .6-6.3 .7-3.1 .6 3.1 .7 6.3 .6 3.8 .7-3.2 .6-6.3 .7-3.1 .6 3.1 .7 6.3 .6 1.9 .6-2.7 .7-5.6 .6-2.7 .7 2.7 .6 5.6 .7 4.6 .6-3.4 .7-7 .6-3.4 .7 3.4 .6 7 .7 3.1 .6-3.1 .7-6.3 .6-3.1 .6 3.1 .7 6.3 .6 2.3 .7-3.2 .6-6.4 .7-3.2 .6 3.2 .7 6.4 .6 3.6 .7-3.3 .6-6.5 .7-3.2 .6 3.2 .7 6.5 .6 2.1 .6-2.7 .7-5.3 .6-2.7 .7 2.7 .6 5.3 .7 2.7 .6-3 .7-6.2 .6-3 .7 3 .6 6.2 .7 4.7 .6-3 .7-6.1 .6-3 .6 3 .7 6.1 .6 1.4 .7-2.9 .6-5.9 .7-2.9 .6 2.9 .7 5.9 .6 3.6 .7-2.9 .6-5.9 .7-2.9 .6 2.9 .7 5.9 .6 1.3 .6-2.5 .7-5.2 .6-2.6 .7 2.6 .6 5.2 .7 3.2 .6-2.6 .7-5.2 .6-2.6 .7 2.6 .6 5.2 .7 3.1 .6-2.7 .7-5.5 .6-2.7 .6 2.7 .7 5.5 .6 2.9 .7-3 .6-5.8 .7-2.9 .6 2.9 .7 5.8 .6 1.7 .7-2.8 .6-5.7 .7-2.8 .6 2.8 .7 5.7 .6 3.6 .6-2.9 .7-5.9 .6-3 .7 3 .6 5.9 .7 2.5 .6-2.8 .7-5.6 .6-2.9 .7 2.9 .6 5.6 .7 2.6 .6-2.7 .7-5.4 .6-2.7 .6 2.7 .7 5.4 .6 5.3 .7-3.2 .4-4.1" fill="none" stroke="#37872d" stroke-width="1.2" stroke-linejoin="round"/><path d="M878.3 175.7l.1 .6 .7 6.4 .6 2.5 .6-3 .7-5.8 .6-3 .7 3 .6 5.8 .7 3.9 .6-3 .7-5.8 .6-2.9 .7 2.9 .6 5.8 .7 3.3 .6-3.3 .7-6.6 .6-3.3 .6 3.3 .7 6.6 .6 2.3 .7-3.1 .6-6.1 .7-3.1 .6 3.1 .7 6.1 .6 2.7 .7-2.7 .6-5.5 .7-2.8 .6 2.8 .7 5.5 .6 2.4 .6-2.9 .7-5.6 .6-2.8 .7 2.8 .6 5.6 .7 4.1 .6-3 .7-5.9 .6-2.9 .7 2.9 .6 5.9 .7 2.1 .6-2.7 .7-5.4 .6-2.7 .6 2.7 .7 5.4 .6 3.9 .7-3.3 .6-6.6 .7-3.3 .6 3.3 .7 6.6 .6 3.3 .7-2.9 .6-5.9 .7-3 .6 3 .7 5.9 .6 2 .6-3 .7-6 .6-3 .7 3 .6 6 .7 4.2 .6-3.2 .7-6.4 .6-3.2 .7 3.2 .6 6.4 .7 1.5 .6-2.9 .7-5.8 .6-2.9 .6 2.9 .7 5.8 .6 4.4 .7-3 .6-6.1 .7-3 .6 3 .7 6.1 .6 2.9 .7-2.9 .6-5.9 .7-2.9 .6 2.9 .7 5.9 .6 2.4 .6-2.7 .7-5.4 .6-2.7 .7 2.7 .6 5.4 .7 2.4 .6-2.9 .7-5.6 .6-2.8 .7 2.8 .6 5.6 .7 3.8 .6-3 .7-6.1 .6-3 .6 3 .7 6.1 .6 3 .7-3 .6-6.1 .7-3 .6 3 .7 6.1 .6 2.7 .7-3.2 .6-6.5 .7-3.2 .6 3.2 .7 6.5 .6 2.3 .6-2.9 .7-5.8 .6-2.8 .7 2.8 .6 5.8 .7 2.6 .6-2.9 .7-5.6 .6-2.8 .7 2.8 .6 5.6 .7 2.9 .6-2.8 .7-5.6 .6-2.8 .6 2.8 .7 5.6 .6 3.9 .7-3.1 .6-6 .7-3.1 .6 3.1 .7 6 .6 2.5 .7-2.9 .6-6 .7-3 .6 3 .7 6 .6 2.7 .6-2.5 .7-5.2 .6-2.5 .7 2.5 .6 5.2 .7 3.3 .6-2.9 .7-5.9 .6-2.9 .7 2.9 .6 5.9 .7 1.9 .6-2.6 .7-5.2 .6-2.6 .6 2.6 .7 5.2 .6 2.6 .7-2.8 .6-5.5 .7-2.8 .6 2.8 .7 5.5 .6 4.5 .7-3.1 .6-6.1 .7-3.1 .6 3.1 .7 6.1 .6 2.2 .6-2.8 .7-5.7 .6-2.8 .7 2.8 .6 5.7 .7 3.4 .6-2.9 .7-5.9 .6-2.9 .7 2.9 .6 5.9 .7 1.7 .6-3 .7-6 .6-3 .6 3 .7 6 .6 3.1 .7-2.9 .6-5.8 .7-3 .6 3 .7 5.8 .6 2.7 .7-2.5 .6-5.1 .7-2.5 .6 2.5 .7 5.1 .6 3.9 .6-3.2 .7-6.4 .6-3.2 .7 3.2 .6 6.4 .7 2.7 .6-3 .7-6.1 .6-3 .7 3 .6 6.1 .7 3.5 .6-3.1 .7-6.3 .6-3.1 .6 3.1 .7 6.3 .6 1.8 .7-2.9 .6-5.8 .7-2.9 .6 2.9 .7 5.8 .6 3.5 .7-3 .6-6.1 .7-3.1 .6 3.1 .7 6.1 .6 3.1 .6-2.8 .7-5.5 .6-2.7 .7 2.7 .6 5.5 .7 2.4 .6-3 .7-6 .6-3 .7 3 .6 6 .7 4.2 .6-3.1 .7-6.3 .6-3.2 .6 3.2 .7 6.3 .6 1.3 .7-2.9 .6-5.9 .7-2.9 .6 2.9 .7 5.9 .6 2.9 .7-2.6 .6-5.3 .7-2.6 .6 2.6 .7 5.3 .6 4 .6-3.1 .7-6.2 .6-3.1 .7 3.1 .6 6.2 .7 1.6 .6-2.7 .7-5.5 .6-2.7 .7 2.7 .6 5.5 .7 4.6 .6-3.1 .7-6.3 .6-3.1 .6 3.1 .7 6.3 .6 3 .7-2.9 .6-5.9 .7-3 .6 3 .7 5.9 .6 1 .7-2.5 .6-5.1 .7-2.6 .6 2.6 .7 5.1 .6 3.9 .6-3 .7-6 .6-2.9 .7 2.9 .6 6 .7 2.1 .6-2.7 .7-5.4 .6-2.7 .7 2.7 .6 5.4 .7 2.4 .6-2.7 .7-5.5 .6-2.7 .6 2.7 .7 5.5 .6 3.4 .7-2.6 .6-5.3 .7-2.7 .6 2.7 .7 5.3 .6 3.5 .7-3.3 .6-6.4 .7-3.2 .6 3.2 .7 6.4 .6 2.5 .6-3.1 .7-6.1 .6-3 .7 3 .6 6.1 .7 3.9 .6-2.9 .7-5.8 .6-3 .7 3 .6 5.8 .7 1.7 .6-2.7 .7-5.5 .6-2.7 .6 2.7 .7 5.5 .6 3.3 .7-3.1 .6-6.3 .7-3.1 .6 3.1 .7 6.3 .6 3.4 .7-3 .6-6 .7-3 .6 3 .7 6 .6 3.1 .6-3.1 .7-6 .6-3 .7 3 .6 6 .7 1.5 .6-2.7 .7-5.5 .6-2.8 .7 2.8 .6 5.5 .7 2.7 .6-2.4 .7-4.9 .6-2.4 .6 2.4 .7 4.9 .6 4.2 .7-3 .6-5.8 .7-2.9 .6 2.9 .7 5.8 .6 1.8 .7-3 .6-6.1 .7-3 .6 3 .7 6.1 .6 4.2 .6-2.9 .7-5.7 .6-2.9 .7 2.9 .6 5.7 .7 1.3 .6-2.7 .7-5.4 .6-2.7 .7 2.7 .6 5.4 .7 2.6 .6-2.5 .7-5.1 .6-2.6 .6 2.6 .7 5.1 .6 3.9 .7-3.2 .6-6.4 .7-3.2 .6 3.2 .7 6.4 .6 2.7 .7-2.9 .6-5.7 .7-2.9 .6 2.9 .7 5.7 .6 2.4 .6-2.6 .7-5.2 .6-2.6 .7 2.6 .6 5.2 .7 2.9 .6-3 .7-6 .6-3 .7 3 .6 6 .7 3.3 .6-2.8 .7-5.6 .6-2.8 .6 2.8 .7 5.6 .6 2.1 .7-2.8 .6-5.7 .7-2.9 .6 2.9 .7 5.7 .6 4.4 .7-3.1 .6-6.1 .7-3.1 .6 3.1 .7 6.1 .6 2 .6-2.9 .7-5.7 .6-2.9 .7 2.9 .6 5.7 .7 2.2 .6-2.8 .7-5.7 .6-2.9 .7 2.9 .6 5.7 .7 3.3 .6-2.8 .7-5.5 .6-2.8 .6 2.8 .7 5.5 .6 2.6 .7-2.9 .6-5.9 .7-2.9 .6 2.9 .7 5.9 .6 2.5 .7-2.6 .6-5.2 .7-2.6 .6 2.6 .7 5.2 .6 3 .6-2.6 .7-5.1 .6-2.6 .7 2.6 .6 5.1 .7 3.8 .6-3.3 .7-6.6 .6-3.3 .7 3.3 .6 6.6 .7 2.1 .6-2.7 .7-5.4 .6-2.7 .6 2.7 .7 5.4 .6 2.6 .7-2.9 .6-5.9 .7-2.9 .6 2.9 .7 5.9 .6 4.4 .7-3.1 .6-6.2 .7-3.1 .6 3.1 .7 6.2 .6 2.1 .6-2.7 .7-5.5 .6-2.7 .7 2.7 .6 5.5 .7 3.4 .6-3.2 .7-6.4 .6-3.2 .7 3.2 .6 6.4 .7 1.8 .6-2.7 .7-5.5 .6-2.7 .6 2.7 .7 5.5 .6 3.3 .7-2.8 .6-5.8 .7-2.9 .6 2.9 .7 5.8 .6 3.5 .7-3 .6-5.8 .7-3 .6 3 .7 5.8 .6 3.5 .6-3.4 .7-6.7 .6-3.3 .7 3.3 .6 6.7 .7 2.2 .6-2.9 .7-5.9 .6-2.9 .7 2.9 .6 5.9 .7 3.8 .6-3.2 .7-6.4 .6-3.2 .6 3.2 .7 6.4 .6 1.9 .7-2.8 .6-5.5 .7-2.8 .6 2.8 .7 5.5 .6 3.2 .7-2.9 .6-6 .7-2.9 .6 2.9 .7 6 .6 2.6 .6-2.6 .7-5.1 .6-2.6 .7 2.6 .6 5.1 .7 3 .6-2.7 .7-5.4 .6-2.7 .7 2.7 .6 5.4 .7 2.9 .6-3.1 .7-6.3 .6-3.2 .6 3.2 .7 6.3 .6 4 .7-3 .6-5.9 .7-3 .6 3 .7 5.9 .6 2.9 .7-2.9 .6-5.8 .7-2.9 .6 2.9 .7 5.8 .6 2.7 .6-3.2 .7-6.5 .6-3.3 .7 3.3 .6 6.5 .7 2.5 .6-3.1 .7-6 .6-3.1 .7 3.1 .6 6 .7 2.9 .6-3.1 .7-6.1 .6-3.1 .6 3.1 .7 6.1 .6 3.1 .7-2.6 .6-5.2 .7-2.6 .6 2.6 .7 5.2 .6 2.3 .7-2.6 .6-5.3 .7-2.6 .6 2.6 .7 5.3 .6 3 .6-2.9 .7-5.8 .6-3 .7 3 .6 5.8 .7 3.9 .6-2.9 .7-5.7 .6-2.9 .7 2.9 .6 5.7 .7 2.1 .6-2.8 .7-5.6 .6-2.9 .6 2.9 .7 5.6 .6 2 .7-2.8 .6-5.7 .7-2.8 .6 2.8 .7 5.7 .6 4.4 .7-3.1 .6-6.1 .7-3.1 .6 3.1 .7 6.1 .6 2.3 .6-2.8 .7-5.6 .6-2.8 .7 2.8 .6 5.6 .7 1.8 .6-2.6 .7-5.3 .6-2.6 .7 2.6 .6 5.3 .7 3.5 .6-2.7 .7-5.5 .6-2.7 .6 2.7 .7 5.5 .6 2 .7-2.5 .6-5 .7-2.5 .6 2.5 .7 5 .6 2.4 .7-2.9 .6-5.7 .7-2.8 .6 2.8 .7 5.7 .6 3.9 .6-2.9 .7-5.7 .6-2.8 .7 2.8 .6 5.7 .7 2.2 .6-3 .7-5.9 .6-3 .7 3 .6 5.9 .7 4.3 .6-3.2 .7-6.5 .6-3.2 .6 3.2 .7 6.5 .6 2.6 .7-2.9 .6-5.8 .7-2.9 .6 2.9 .7 5.8 .6 2.5 .7-2.8 .6-5.6 .7-2.8 .6 2.8 .7 5.6 .6 3 .6-2.6 .7-5.4 .6-2.7 .7 2.7 .6 5.4 .7 2 .6-2.6 .7-5.3 .6-2.7 .7 2.7 .6 5.3 .7 2.7 .6-2.8 .7-5.7 .6-2.8 .6 2.8 .7 5.7 .6 3.6 .7-3 .6-6.2 .7-3.1 .6 3.1 .7 6.2 .6 2.3 .7-2.6 .6-5.4 .7-2.7 .6 2.7 .7 5.4 .6 2.1 .6-2.7 .7-5.4 .6-2.7 .7 2.7 .6 5.4 .7 4.6 .6-2.9 .7-5.8 .6-2.9 .7 2.9 .6 5.8 .7 1 .6-2.8 .7-5.6 .6-2.9 .6 2.9 .7 5.6 .6 3.2 .7-2.5 .6-5.2 .7-2.5 .6 2.5 .7 5.2 .6 3.8 .7-2.9 .6-5.8 .7-2.9 .6 2.9 .7 5.8 .6 1.8 .6-3 .7-6 .6-3 .7 3 .6 6 .7 4 .6-3 .7-5.9 .6-3 .7 3 .6 5.9 .7 2.5 .6-2.7 .7-5.4 .6-2.7 .6 2.7 .7 5.4 .6 2.8 .1-.3" fill="none" stroke="#3274d9" stroke-width="1.15" stroke-linejoin="round"/><path d="M878.3 165.6l0-.1 .7-2.8 .6 2.8 .7 5.5 .6 3.7 .6-3.2 .7-6.4 .6-3.1 .7 3.1 .6 6.4 .7 2 .6-3 .7-5.9 .6-2.9 .7 2.9 .6 5.9 .7 2.7 .6-2.9 .7-5.8 .6-2.9 .6 2.9 .7 5.8 .6 3 .7-2.7 .6-5.3 .7-2.7 .6 2.7 .7 5.3 .6 4.4 .7-3 .6-6 .7-3 .6 3 .7 6 .6 1.8 .6-2.9 .7-5.7 .6-2.8 .7 2.8 .6 5.7 .7 3.5 .6-3 .7-6.1 .6-3 .7 3 .6 6.1 .7 1.7 .6-2.4 .7-5 .6-2.4 .6 2.4 .7 5 .6 3.5 .7-3.1 .6-6.2 .7-3.1 .6 3.1 .7 6.2 .6 2 .7-2.8 .6-5.7 .7-2.8 .6 2.8 .7 5.7 .6 4.6 .6-3.3 .7-6.5 .6-3.3 .7 3.3 .6 6.5 .7 2.7 .6-2.7 .7-5.4 .6-2.7 .7 2.7 .6 5.4 .7 1.5 .6-2.7 .7-5.4 .6-2.6 .6 2.6 .7 5.4 .6 3.6 .7-2.7 .6-5.2 .7-2.7 .6 2.7 .7 5.2 .6 2.1 .7-2.8 .6-5.7 .7-2.8 .6 2.8 .7 5.7 .6 2.9 .6-3 .7-5.9 .6-2.9 .7 2.9 .6 5.9 .7 3.8 .6-2.7 .7-5.6 .6-2.8 .7 2.8 .6 5.6 .7 2.3 .6-3.1 .7-6.1 .6-3 .6 3 .7 6.1 .6 3.6 .7-2.8 .6-5.7 .7-2.8 .6 2.8 .7 5.7 .6 2.7 .7-3 .6-6 .7-3 .6 3 .7 6 .6 3.4 .6-3 .7-5.9 .6-2.9 .7 2.9 .6 5.9 .7 2.5 .6-2.9 .7-5.7 .6-2.9 .7 2.9 .6 5.7 .7 2.2 .6-2.8 .7-5.5 .6-2.7 .6 2.7 .7 5.5 .6 3.9 .7-2.9 .6-5.8 .7-2.9 .6 2.9 .7 5.8 .6 2 .7-2.6 .6-5.2 .7-2.7 .6 2.7 .7 5.2 .6 3.6 .6-3.3 .7-6.5 .6-3.2 .7 3.2 .6 6.5 .7 1.9 .6-2.8 .7-5.6 .6-2.9 .7 2.9 .6 5.6 .7 2.5 .6-2.5 .7-4.9 .6-2.5 .6 2.5 .7 4.9 .6 3.8 .7-2.9 .6-5.8 .7-2.9 .6 2.9 .7 5.8 .6 3.6 .7-3.2 .6-6.3 .7-3.2 .6 3.2 .7 6.3 .6 1.6 .6-2.9 .7-5.8 .6-2.9 .7 2.9 .6 5.8 .7 3.2 .6-2.6 .7-5.2 .6-2.6 .7 2.6 .6 5.2 .7 3.1 .6-3.1 .7-6.3 .6-3.1 .6 3.1 .7 6.3 .6 2.8 .7-3.1 .6-6.1 .7-3 .6 3 .7 6.1 .6 3.4 .7-3.1 .6-6.2 .7-3.1 .6 3.1 .7 6.2 .6 2.3 .6-2.7 .7-5.2 .6-2.6 .7 2.6 .6 5.2 .7 4 .6-3 .7-5.9 .6-3 .7 3 .6 5.9 .7 1.9 .6-2.7 .7-5.3 .6-2.7 .6 2.7 .7 5.3 .6 2.6 .7-2.9 .6-6 .7-3 .6 3 .7 6 .6 2.9 .7-2.6 .6-5.3 .7-2.6 .6 2.6 .7 5.3 .6 3.4 .6-3.1 .7-6.1 .6-3.1 .7 3.1 .6 6.1 .7 3.5 .6-2.9 .7-5.7 .6-2.8 .7 2.8 .6 5.7 .7 1.8 .6-2.6 .7-5 .6-2.5 .6 2.5 .7 5 .6 2.5 .7-2.9 .6-5.9 .7-3 .6 3 .7 5.9 .6 3.4 .7-2.6 .6-5.4 .7-2.7 .6 2.7 .7 5.4 .6 2.8 .6-2.9 .7-5.7 .6-2.9 .7 2.9 .6 5.7 .7 2.7 .6-3 .7-5.9 .6-2.9 .7 2.9 .6 5.9 .7 2.6 .6-2.8 .7-5.6 .6-2.8 .6 2.8 .7 5.6 .6 3.3 .7-2.7 .6-5.3 .7-2.6 .6 2.6 .7 5.3 .6 1.7 .7-2.7 .6-5.5 .7-2.8 .6 2.8 .7 5.5 .6 4.5 .6-3 .7-6 .6-3 .7 3 .6 6 .7 1.2 .6-2.6 .7-5.4 .6-2.6 .7 2.6 .6 5.4 .7 3.8 .6-2.7 .7-5.5 .6-2.7 .6 2.7 .7 5.5 .6 1.6 .7-2.5 .6-4.9 .7-2.4 .6 2.4 .7 4.9 .6 3.8 .7-3.1 .6-6.1 .7-3.1 .6 3.1 .7 6.1 .6 2.7 .6-2.7 .7-5.4 .6-2.7 .7 2.7 .6 5.4 .7 2.1 .6-2.6 .7-5.3 .6-2.6 .7 2.6 .6 5.3 .7 3.2 .6-3.1 .7-6.2 .6-3.1 .6 3.1 .7 6.2 .6 2.5 .7-2.7 .6-5.6 .7-2.8 .6 2.8 .7 5.6 .6 2.5 .7-2.5 .6-4.9 .7-2.4 .6 2.4 .7 4.9 .6 2.7 .6-2.9 .7-5.7 .6-2.8 .7 2.8 .6 5.7 .7 3.6 .6-2.9 .7-5.8 .6-2.8 .7 2.8 .6 5.8 .7 2.3 .6-2.8 .7-5.7 .6-2.8 .6 2.8 .7 5.7 .6 3.2 .7-2.7 .6-5.2 .7-2.7 .6 2.7 .7 5.2 .6 1.9 .7-2.5 .6-4.8 .7-2.5 .6 2.5 .7 4.8 .6 4.2 .6-3 .7-6 .6-2.9 .7 2.9 .6 6 .7 2.7 .6-3.1 .7-6.1 .6-3 .7 3 .6 6.1 .7 3.4 .6-2.9 .7-6 .6-2.9 .6 2.9 .7 6 .6 2.4 .7-3 .6-5.9 .7-3 .6 3 .7 5.9 .6 2 .7-2.6 .6-5.2 .7-2.6 .6 2.6 .7 5.2 .6 3.7 .6-3.2 .7-6.5 .6-3.2 .7 3.2 .6 6.5 .7 2.3 .6-2.7 .7-5.5 .6-2.7 .7 2.7 .6 5.5 .7 2.5 .6-2.9 .7-5.8 .6-2.8 .6 2.8 .7 5.8 .6 2.9 .7-3 .6-5.8 .7-3 .6 3 .7 5.8 .6 2.8 .7-2.7 .6-5.4 .7-2.7 .6 2.7 .7 5.4 .6 3.5 .6-2.8 .7-5.5 .6-2.8 .7 2.8 .6 5.5 .7 2.4 .6-2.9 .7-5.9 .6-2.9 .7 2.9 .6 5.9 .7 4.1 .6-3 .7-5.9 .6-3 .6 3 .7 5.9 .6 2.6 .7-2.9 .6-5.7 .7-2.8 .6 2.8 .7 5.7 .6 2.1 .7-2.7 .6-5.4 .7-2.7 .6 2.7 .7 5.4 .6 2.7 .6-2.6 .7-5.4 .6-2.7 .7 2.7 .6 5.4 .7 3.6 .6-3.2 .7-6.5 .6-3.3 .7 3.3 .6 6.5 .7 3.2 .6-3.2 .7-6.4 .6-3.2 .6 3.2 .7 6.4 .6 1.6 .7-2.8 .6-5.6 .7-2.8 .6 2.8 .7 5.6 .6 3.9 .7-2.7 .6-5.4 .7-2.7 .6 2.7 .7 5.4 .6 3.5 .6-3.3 .7-6.5 .6-3.2 .7 3.2 .6 6.5 .7 2.3 .6-2.6 .7-5.2 .6-2.6 .7 2.6 .6 5.2 .7 3.5 .6-2.9 .7-5.8 .6-2.8 .6 2.8 .7 5.8 .6 1.6 .7-2.8 .6-5.7 .7-2.9 .6 2.9 .7 5.7 .6 2.6 .7-2.8 .6-5.6 .7-2.8 .6 2.8 .7 5.6 .6 3.3 .6-2.6 .7-5.4 .6-2.6 .7 2.6 .6 5.4 .7 3.1 .6-3.1 .7-6.2 .6-3.1 .7 3.1 .6 6.2 .7 2.2 .6-2.8 .7-5.4 .6-2.7 .6 2.7 .7 5.4 .6 4.2 .7-3.1 .6-6.1 .7-3.1 .6 3.1 .7 6.1 .6 2.9 .7-2.9 .6-5.8 .7-2.9 .6 2.9 .7 5.8 .6 3.1 .6-3.1 .7-6.1 .6-3 .7 3 .6 6.1 .7 2.1 .6-2.9 .7-5.6 .6-2.8 .7 2.8 .6 5.6 .7 3.7 .6-3.1 .7-6.2 .6-3.1 .6 3.1 .7 6.2 .6 1.9 .7-2.5 .6-5.1 .7-2.5 .6 2.5 .7 5.1 .6 3.1 .7-2.8 .6-5.5 .7-2.8 .6 2.8 .7 5.5 .6 2.1 .6-2.9 .7-5.8 .6-2.9 .7 2.9 .6 5.8 .7 3.1 .6-2.8 .7-5.5 .6-2.7 .7 2.7 .6 5.5 .7 2.4 .6-2.8 .7-5.4 .6-2.8 .6 2.8 .7 5.4 .6 4.6 .7-3.1 .6-6.2 .7-3.1 .6 3.1 .7 6.2 .6 1.2 .7-2.4 .6-4.9 .7-2.5 .6 2.5 .7 4.9 .6 3 .6-2.9 .7-5.8 .6-3 .7 3 .6 5.8 .7 3.6 .6-2.9 .7-5.6 .6-2.9 .7 2.9 .6 5.6 .7 2.2 .6-2.6 .7-5.3 .6-2.7 .6 2.7 .7 5.3 .6 3.8 .7-3.2 .6-6.2 .7-3.1 .6 3.1 .7 6.2 .6 2.4 .7-3.1 .6-6.2 .7-3.1 .6 3.1 .7 6.2 .6 3.3 .6-3 .7-6 .6-3 .7 3 .6 6 .7 3.1 .6-2.8 .7-5.6 .6-2.8 .7 2.8 .6 5.6 .7 2.2 .6-2.7 .7-5.4 .6-2.7 .6 2.7 .7 5.4 .6 3.9 .7-3.3 .6-6.4 .7-3.3 .6 3.3 .7 6.4 .6 3 .7-3 .6-6 .7-3 .6 3 .7 6 .6 3.3 .6-3.3 .7-6.6 .6-3.3 .7 3.3 .6 6.6 .7 2.2 .6-3 .7-5.9 .6-3 .7 3 .6 5.9 .7 2.7 .6-2.5 .7-5.1 .6-2.5 .6 2.5 .7 5.1 .6 3.1 .7-3 .6-5.8 .7-3 .6 3 .7 5.8 .6 3.8 .7-3.3 .6-6.6 .7-3.3 .6 3.3 .7 6.6 .6 1.4 .6-2.4 .7-5 .6-2.5 .7 2.5 .6 5 .7 3.5 .6-2.7 .7-5.4 .6-2.7 .7 2.7 .6 5.4 .7 2.6 .6-2.6 .7-5.3 .6-2.6 .6 2.6 .7 5.3 .6 2.3 .7-2.9 .6-5.8 .7-2.9 .6 2.9 .7 5.8 .6 4 .7-3.1 .6-6 .7-3 .6 3 .7 6 .6 1.4 .6-2.9 .7-5.7 .6-2.9 .7 2.9 .6 5.7 .7 2.8 .6-2.5 .7-4.9 .6-2.5 .7 2.5 .6 4.9 .7 3.8 .6-3.1 .7-6.3 .6-3.1 .6 3.1 .7 6.3 .6 3.4 .7-2.9 .6-5.7 .7-2.8 .6 2.8 .7 5.7 .6 2.6 .7-2.9 .6-5.8 .7-2.8 .6 2.8 .7 5.8 .6 2.5 .6-2.8 .7-5.4 .6-2.7 .7 2.7 .6 5.4 .7 2.7 .6-2.6 .7-5.2 .6-2.5 .7 2.5 .6 5.2 .7 3 .6-2.8 .7-5.6 .6-2.9 .6 2.9 .2 1.3" fill="none" stroke="#8b7cc0" stroke-width="0.8" stroke-linejoin="round"/><path d="M878.3 152.9l.3-3 .7-3.1 .6 3.1 .7 6.2 .6 2.2 .6-2.7 .7-5.2 .6-2.7 .7 2.7 .6 5.2 .7 1.6 .6-2.6 .7-5 .6-2.6 .7 2.6 .6 5 .7 3.7 .6-2.6 .7-5.2 .6-2.6 .6 2.6 .7 5.2 .6 .9 .7-2.6 .6-5.2 .7-2.7 .6 2.7 .7 5.2 .6 3.5 .7-2.5 .6-4.9 .7-2.4 .6 2.4 .7 4.9 .6 4 .6-3.2 .7-6.3 .6-3.2 .7 3.2 .6 6.3 .7 3.5 .6-3.1 .7-6.1 .6-3 .7 3 .6 6.1 .7 3.2 .6-2.9 .7-5.7 .6-2.9 .6 2.9 .7 5.7 .6 .3 .7-2.2 .6-4.4 .7-2.3 .6 2.3 .7 4.4 .6 3.3 .7-2.9 .6-5.8 .7-2.9 .6 2.9 .7 5.8 .6 2.9 .6-2.9 .7-5.9 .6-3 .7 3 .6 5.9 .7 3.7 .6-2.9 .7-5.8 .6-2.9 .7 2.9 .6 5.8 .7 1 .6-2.6 .7-5.2 .6-2.5 .6 2.5 .7 5.2 .6 3.8 .7-2.6 .6-5.2 .7-2.6 .6 2.6 .7 5.2 .6 1.9 .7-2.8 .6-5.5 .7-2.8 .6 2.8 .7 5.5 .6 3.1 .6-2.9 .7-5.7 .6-2.9 .7 2.9 .6 5.7 .7 2.8 .6-2.4 .7-4.9 .6-2.5 .7 2.5 .6 4.9 .7 2 .6-2.7 .7-5.2 .6-2.6 .6 2.6 .7 5.2 .6 4.4 .7-3.1 .6-6.2 .7-3.1 .6 3.1 .7 6.2 .6 1.1 .7-2.5 .6-5.2 .7-2.6 .6 2.6 .7 5.2 .6 4 .6-2.7 .7-5.4 .6-2.8 .7 2.8 .6 5.4 .7 2.9 .6-3.1 .7-6.2 .6-3.1 .7 3.1 .6 6.2 .7 2 .6-2.8 .7-5.6 .6-2.8 .6 2.8 .7 5.6 .6 3.6 .7-2.9 .6-5.7 .7-2.9 .6 2.9 .7 5.7 .6 3.5 .7-3 .6-5.8 .7-2.9 .6 2.9 .7 5.8 .6 2.4 .6-2.9 .7-6 .6-3 .7 3 .6 6 .7 2.8 .6-3 .7-6 .6-3 .7 3 .6 6 .7 1.7 .6-2.3 .7-4.5 .6-2.3 .6 2.3 .7 4.5 .6 2.5 .7-2.7 .6-5.5 .7-2.8 .6 2.8 .7 5.5 .6 4.3 .7-3 .6-6.2 .7-3 .6 3 .7 6.2 .6 1.8 .6-2.6 .7-5.1 .6-2.6 .7 2.6 .6 5.1 .7 4.5 .6-3.3 .7-6.6 .6-3.4 .7 3.4 .6 6.6 .7 2.4 .6-3 .7-6.2 .6-3.1 .6 3.1 .7 6.2 .6 3.4 .7-3 .6-6 .7-3.1 .6 3.1 .7 6 .6 1 .7-2.5 .6-5 .7-2.5 .6 2.5 .7 5 .6 4.2 .6-3.1 .7-6.1 .6-3 .7 3 .6 6.1 .7 2.2 .6-2.5 .7-5 .6-2.5 .7 2.5 .6 5 .7 3.9 .6-2.9 .7-5.8 .6-2.8 .6 2.8 .7 5.8 .6 1.8 .7-2.6 .6-5.3 .7-2.6 .6 2.6 .7 5.3 .6 1.6 .7-2.5 .6-5.1 .7-2.5 .6 2.5 .7 5.1 .6 3 .6-2.8 .7-5.5 .6-2.8 .7 2.8 .6 5.5 .7 2 .6-2.6 .7-5.3 .6-2.6 .7 2.6 .6 5.3 .7 5.4 .6-3.1 .7-6.4 .6-3.1 .6 3.1 .7 6.4 .6 1.2 .7-2.6 .6-5.1 .7-2.5 .6 2.5 .7 5.1 .6 3.8 .7-2.7 .6-5.5 .7-2.7 .6 2.7 .7 5.5 .6 3.2 .6-3.2 .7-6.6 .6-3.3 .7 3.3 .6 6.6 .7 1.2 .6-2.6 .7-5.2 .6-2.6 .7 2.6 .6 5.2 .7 2.8 .6-2.6 .7-5.1 .6-2.6 .6 2.6 .7 5.1 .6 2.4 .7-2.3 .6-4.7 .7-2.4 .6 2.4 .7 4.7 .6 2.6 .7-2.4 .6-4.9 .7-2.4 .6 2.4 .7 4.9 .6 4.2 .6-3 .7-6 .6-3 .7 3 .6 6 .7 1 .6-2.8 .7-5.6 .6-2.8 .7 2.8 .6 5.6 .7 5 .6-2.9 .7-5.8 .6-3 .6 3 .7 5.8 .6 1.4 .7-3 .6-5.9 .7-3 .6 3 .7 5.9 .6 3.8 .7-3.1 .6-6.1 .7-3 .6 3 .7 6.1 .6 2.1 .6-2.5 .7-4.9 .6-2.4 .7 2.4 .6 4.9 .7 4 .6-2.9 .7-5.8 .6-2.9 .7 2.9 .6 5.8 .7 .3 .6-2.3 .7-4.7 .6-2.4 .6 2.4 .7 4.7 .6 3.9 .7-2.7 .6-5.4 .7-2.8 .6 2.8 .7 5.4 .6 .9 .7-2.1 .6-4.4 .7-2.2 .6 2.2 .7 4.4 .6 2.6 .6-2.7 .7-5.5 .6-2.8 .7 2.8 .6 5.5 .7 4.2 .6-2.8 .7-5.5 .6-2.7 .7 2.7 .6 5.5 .7 3 .6-3.2 .7-6.2 .6-3.1 .6 3.1 .7 6.2 .6 1.7 .7-2.5 .6-5.1 .7-2.5 .6 2.5 .7 5.1 .6 3.6 .7-2.7 .6-5.4 .7-2.7 .6 2.7 .7 5.4 .6 .9 .6-2.3 .7-4.6 .6-2.3 .7 2.3 .6 4.6 .7 2.9 .6-2.6 .7-5.2 .6-2.6 .7 2.6 .6 5.2 .7 2.5 .6-2.5 .7-5 .6-2.5 .6 2.5 .7 5 .6 2.8 .7-2.5 .6-5 .7-2.5 .6 2.5 .7 5 .6 2.6 .7-2.8 .6-5.6 .7-2.8 .6 2.8 .7 5.6 .6 2.9 .6-2.7 .7-5.5 .6-2.7 .7 2.7 .6 5.5 .7 2.6 .6-2.4 .7-4.7 .6-2.3 .7 2.3 .6 4.7 .7 3.3 .6-2.7 .7-5.2 .6-2.7 .6 2.7 .7 5.2 .6 2.8 .7-2.6 .6-5.2 .7-2.6 .6 2.6 .7 5.2 .6 2.2 .7-2.8 .6-5.5 .7-2.7 .6 2.7 .7 5.5 .6 2.1 .6-2.7 .7-5.4 .6-2.7 .7 2.7 .6 5.4 .7 4.6 .6-3 .7-6.2 .6-3 .7 3 .6 6.2 .7 2.3 .6-2.7 .7-5.3 .6-2.6 .6 2.6 .7 5.3 .6 2.3 .7-2.9 .6-5.9 .7-2.9 .6 2.9 .7 5.9 .6 3.4 .7-2.7 .6-5.6 .7-2.7 .6 2.7 .7 5.6 .6 3.4 .6-3.1 .7-6.2 .6-3.1 .7 3.1 .6 6.2 .7 .7 .6-2.4 .7-4.8 .6-2.3 .7 2.3 .6 4.8 .7 4.4 .6-3.2 .7-6.4 .6-3.2 .6 3.2 .7 6.4 .6 3.2 .7-2.8 .6-5.6 .7-2.8 .6 2.8 .7 5.6 .6 .6 .7-2.4 .6-4.7 .7-2.4 .6 2.4 .7 4.7 .6 2.5 .6-2.4 .7-4.9 .6-2.5 .7 2.5 .6 4.9 .7 2.5 .6-2.4 .7-4.9 .6-2.5 .7 2.5 .6 4.9 .7 2.8 .6-2.6 .7-5.1 .6-2.6 .6 2.6 .7 5.1 .6 3.7 .7-2.7 .6-5.4 .7-2.7 .6 2.7 .7 5.4 .6 2.2 .7-2.9 .6-5.8 .7-2.9 .6 2.9 .7 5.8 .6 2.5 .6-2.7 .7-5.3 .6-2.7 .7 2.7 .6 5.3 .7 2.7 .6-2.8 .7-5.5 .6-2.8 .7 2.8 .6 5.5 .7 4.7 .6-3.1 .7-6.4 .6-3.2 .6 3.2 .7 6.4 .6 .2 .7-2.5 .6-5 .7-2.5 .6 2.5 .7 5 .6 4.8 .7-2.8 .6-5.7 .7-2.9 .6 2.9 .7 5.7 .6 1.9 .6-2.9 .7-5.9 .6-3 .7 3 .6 5.9 .7 2.5 .6-2.4 .7-4.9 .6-2.4 .7 2.4 .6 4.9 .7 1.8 .6-2.7 .7-5.3 .6-2.7 .6 2.7 .7 5.3 .6 3.7 .7-3 .6-5.9 .7-3 .6 3 .7 5.9 .6 4.3 .7-2.9 .6-5.7 .7-2.9 .6 2.9 .7 5.7 .6 .7 .6-2.3 .7-4.6 .6-2.4 .7 2.4 .6 4.6 .7 4.7 .6-2.9 .7-6 .6-3 .7 3 .6 6 .7 2.3 .6-3.1 .7-6.3 .6-3.2 .6 3.2 .7 6.3 .6 1.5 .7-2.6 .6-5.1 .7-2.6 .6 2.6 .7 5.1 .6 2.5 .7-2.4 .6-4.7 .7-2.3 .6 2.3 .7 4.7 .6 3 .6-2.6 .7-5.2 .6-2.6 .7 2.6 .6 5.2 .7 2.6 .6-2.4 .7-4.9 .6-2.5 .7 2.5 .6 4.9 .7 2.2 .6-2.5 .7-4.8 .6-2.5 .6 2.5 .7 4.8 .6 4.1 .7-2.9 .6-6 .7-2.9 .6 2.9 .7 6 .6 .5 .7-2.2 .6-4.4 .7-2.2 .6 2.2 .7 4.4 .6 2.5 .6-2.7 .7-5.4 .6-2.7 .7 2.7 .6 5.4 .7 4.8 .6-3.2 .7-6.4 .6-3.1 .7 3.1 .6 6.4 .7 .7 .6-2.2 .7-4.5 .6-2.2 .6 2.2 .7 4.5 .6 4.9 .7-3.2 .6-6.3 .7-3.1 .6 3.1 .7 6.3 .6 1.5 .7-2.6 .6-5 .7-2.5 .6 2.5 .7 5 .6 3.7 .6-3.1 .7-6 .6-3 .7 3 .6 6 .7 1.1 .6-2.6 .7-5.2 .6-2.6 .7 2.6 .6 5.2 .7 3.2 .6-2.8 .7-5.6 .6-2.9 .6 2.9 .7 5.6 .6 4.2 .7-3 .6-6 .7-2.9 .6 2.9 .7 6 .6 2.4 .7-2.9 .6-5.8 .7-2.9 .6 2.9 .7 5.8 .6 2.4 .6-2.5 .7-5.1 .6-2.6 .7 2.6 .6 5.1 .7 4 .6-2.8 .7-5.8 .6-2.8 .7 2.8 .6 5.8 .7 1.7 .6-2.6 .7-5.1 .6-2.6 .6 2.6 .7 5.1 .6 2 .7-2.5 .6-5.1 .7-2.6 .6 2.6 .7 5.1 .6 2.5 .7-2.4 .6-4.8 .7-2.4 .6 2.4 .7 4.8 .6 2.7 .6-2.9 .7-5.8 .6-2.9 .7 2.9 .6 5.8 .7 4 .6-3.1 .7-6.3 .6-3.1 .7 3.1 .6 6.3 .7 3.4 .6-2.9 .7-5.7 .6-2.8 .6 2.8 .7 5.7 .6 2.9 .7-3.2 .6-6.5 .7-3.3 .6 3.3 .7 6.5 .6 1.5 .7-2.8 .6-5.7 .7-2.8 .6 2.8 .7 5.7 .6 2 .6-2.4 .7-4.9 .6-2.4 .7 2.4 .6 4.9 .7 4.1 .6-3.1 .7-6.1 .6-3 .7 3 .6 6.1 .7 3.3 .6-2.9 .7-5.9 .6-3 .5 2.3" fill="none" stroke="#ef843c" stroke-width="1.1" stroke-linejoin="round"/><path d="M878.3 160.5l.3 3.2 .6 3.3 .6-3.9 .7-7.9 .6-3.9 .7 3.9 .6 7.9 .7 3.9 .6-4.2 .7-8.3 .6-4.2 .7 4.2 .6 8.3 .7 4.9 .6-4.3 .7-8.5 .6-4.2 .6 4.2 .7 8.5 .6 4.3 .7-3.8 .6-7.6 .7-3.8 .6 3.8 .7 7.6 .6 3 .7-3.7 .6-7.3 .7-3.7 .6 3.7 .7 7.3 .6 4 .6-3.6 .7-7.3 .6-3.6 .7 3.6 .6 7.3 .7 5.4 .6-4.5 .7-9 .6-4.6 .7 4.6 .6 9 .7 4.8 .6-4.2 .7-8.4 .6-4.2 .6 4.2 .7 8.4 .6 1.9 .7-3.9 .6-7.7 .7-3.9 .6 3.9 .7 7.7 .6 5.8 .7-4 .6-7.9 .7-3.9 .6 3.9 .7 7.9 .6 2.4 .6-4 .7-8.2 .6-4 .7 4 .6 8.2 .7 5.8 .6-4 .7-7.9 .6-4 .7 4 .6 7.9 .7 2 .6-4.1 .7-8.3 .6-4.1 .6 4.1 .7 8.3 .6 6.1 .7-4.5 .6-8.9 .7-4.4 .6 4.4 .7 8.9 .6 3.4 .7-3.8 .6-7.5 .7-3.8 .6 3.8 .7 7.5 .6 4.8 .6-4.2 .7-8.3 .6-4.2 .7 4.2 .6 8.3 .7 4.6 .6-4.2 .7-8.5 .6-4.2 .7 4.2 .6 8.5 .7 4 .6-4.2 .7-8.5 .6-4.3 .6 4.3 .7 8.5 .6 3.6 .7-4.5 .6-9.1 .7-4.5 .6 4.5 .7 9.1 .6 5.4 .7-4.1 .6-8.2 .7-4.2 .6 4.2 .7 8.2 .6 2.5 .6-4 .7-7.8 .6-3.9 .7 3.9 .6 7.8 .7 3 .6-3.8 .7-7.5 .6-3.8 .7 3.8 .6 7.5 .7 5.6 .6-4.4 .7-8.7 .6-4.4 .6 4.4 .7 8.7 .6 3.7 .7-3.8 .6-7.6 .7-3.8 .6 3.8 .7 7.6 .6 3 .7-3.9 .6-7.7 .7-3.9 .6 3.9 .7 7.7 .6 3.8 .6-3.9 .7-7.8 .6-3.9 .7 3.9 .6 7.8 .7 6.2 .6-4.3 .7-8.6 .6-4.4 .7 4.4 .6 8.6 .7 1.8 .6-3.5 .7-7 .6-3.5 .6 3.5 .7 7 .6 5.4 .7-4.3 .6-8.4 .7-4.2 .6 4.2 .7 8.4 .6 3.2 .7-4.2 .6-8.2 .7-4.1 .6 4.1 .7 8.2 .6 3.8 .6-3.7 .7-7.6 .6-3.8 .7 3.8 .6 7.6 .7 3.3 .6-3.4 .7-6.9 .6-3.5 .7 3.5 .6 6.9 .7 3.6 .6-3.7 .7-7.5 .6-3.7 .6 3.7 .7 7.5 .6 5.1 .7-4.3 .6-8.5 .7-4.3 .6 4.3 .7 8.5 .6 3.4 .7-4 .6-8 .7-4 .6 4 .7 8 .6 4.2 .6-3.7 .7-7.2 .6-3.7 .7 3.7 .6 7.2 .7 4.6 .6-4.2 .7-8.4 .6-4.2 .7 4.2 .6 8.4 .7 4.3 .6-4.3 .7-8.5 .6-4.2 .6 4.2 .7 8.5 .6 2.7 .7-4.2 .6-8.4 .7-4.2 .6 4.2 .7 8.4 .6 6.7 .7-4.2 .6-8.4 .7-4.3 .6 4.3 .7 8.4 .6 1.6 .6-3.8 .7-7.4 .6-3.8 .7 3.8 .6 7.4 .7 5.9 .6-4.1 .7-8.1 .6-4 .7 4 .6 8.1 .7 1.9 .6-4.1 .7-8.1 .6-4.1 .6 4.1 .7 8.1 .6 5.1 .7-4 .6-7.9 .7-4 .6 4 .7 7.9 .6 3 .7-3.6 .6-7.3 .7-3.7 .6 3.7 .7 7.3 .6 5.7 .6-4.4 .7-8.7 .6-4.4 .7 4.4 .6 8.7 .7 4.6 .6-4.4 .7-9 .6-4.4 .7 4.4 .6 9 .7 4.4 .6-4.5 .7-8.9 .6-4.5 .6 4.5 .7 8.9 .6 3.2 .7-4.1 .6-8.3 .7-4.2 .6 4.2 .7 8.3 .6 5 .7-4 .6-8 .7-4 .6 4 .7 8 .6 2.1 .6-3.7 .7-7.5 .6-3.7 .7 3.7 .6 7.5 .7 6 .6-4.2 .7-8.5 .6-4.2 .7 4.2 .6 8.5 .7 2.4 .6-4 .7-8.1 .6-4 .6 4 .7 8.1 .6 6 .7-4.7 .6-9.2 .7-4.7 .6 4.7 .7 9.2 .6 4.9 .7-4.6 .6-9.1 .7-4.5 .6 4.5 .7 9.1 .6 3.3 .6-4 .7-8 .6-4 .7 4 .6 8 .7 4.4 .6-4.1 .7-8.4 .6-4.2 .7 4.2 .6 8.4 .7 4.7 .6-4.3 .7-8.6 .6-4.3 .6 4.3 .7 8.6 .6 4.4 .7-4.3 .6-8.6 .7-4.3 .6 4.3 .7 8.6 .6 3.4 .7-4.6 .6-9 .7-4.5 .6 4.5 .7 9 .6 5.5 .6-4.6 .7-9.3 .6-4.6 .7 4.6 .6 9.3 .7 2.6 .6-4.3 .7-8.5 .6-4.3 .7 4.3 .6 8.5 .7 5.5 .6-4.3 .7-8.7 .6-4.3 .6 4.3 .7 8.7 .6 4.4 .7-4 .6-8.1 .7-4 .6 4 .7 8.1 .6 4.8 .7-4.2 .6-8.5 .7-4.2 .6 4.2 .7 8.5 .6 3.9 .6-4.5 .7-8.9 .6-4.5 .7 4.5 .6 8.9 .7 2.2 .6-3.6 .7-7.2 .6-3.6 .7 3.6 .6 7.2 .7 6.4 .6-4.5 .7-9.1 .6-4.5 .6 4.5 .7 9.1 .6 4.2 .7-4.4 .6-8.7 .7-4.4 .6 4.4 .7 8.7 .6 2.9 .7-3.8 .6-7.6 .7-3.8 .6 3.8 .7 7.6 .6 2.8 .6-3.9 .7-7.8 .6-3.9 .7 3.9 .6 7.8 .7 5.8 .6-4.6 .7-9.2 .6-4.6 .7 4.6 .6 9.2 .7 4.2 .6-4.3 .7-8.5 .6-4.2 .6 4.2 .7 8.5 .6 3.3 .7-4 .6-8 .7-4 .6 4 .7 8 .6 5.5 .7-4.1 .6-8.4 .7-4.2 .6 4.2 .7 8.4 .6 3.7 .6-4 .7-8 .6-4 .7 4 .6 8 .7 3.4 .6-4 .7-8 .6-4 .7 4 .6 8 .7 3.1 .6-3.7 .7-7.4 .6-3.7 .6 3.7 .7 7.4 .6 5.4 .7-4.2 .6-8.3 .7-4.1 .6 4.1 .7 8.3 .6 4.6 .7-4 .6-8 .7-3.9 .6 3.9 .7 8 .6 3.8 .6-4 .7-7.8 .6-4 .7 4 .6 7.8 .7 3.8 .6-4.4 .7-8.9 .6-4.4 .7 4.4 .6 8.9 .7 5 .6-4.3 .7-8.5 .6-4.3 .6 4.3 .7 8.5 .6 3.6 .7-4.5 .6-9 .7-4.5 .6 4.5 .7 9 .6 4.3 .7-4.3 .6-8.6 .7-4.3 .6 4.3 .7 8.6 .6 4.3 .6-3.8 .7-7.8 .6-3.8 .7 3.8 .6 7.8 .7 3.2 .6-4.4 .7-8.7 .6-4.4 .7 4.4 .6 8.7 .7 3.7 .6-3.8 .7-7.7 .6-3.8 .6 3.8 .7 7.7 .6 5.9 .7-4.7 .6-9.4 .7-4.8 .6 4.8 .7 9.4 .6 3.4 .7-4.1 .6-8.4 .7-4.2 .6 4.2 .7 8.4 .6 4.2 .6-4 .7-7.9 .6-4 .7 4 .6 7.9 .7 4.2 .6-4.3 .7-8.6 .6-4.3 .7 4.3 .6 8.6 .7 5.4 .6-4.2 .7-8.3 .6-4.2 .6 4.2 .7 8.3 .6 4.3 .7-4.7 .6-9.4 .7-4.7 .6 4.7 .7 9.4 .6 3.6 .7-4.3 .6-8.7 .7-4.4 .6 4.4 .7 8.7 .6 3 .6-3.5 .7-7 .6-3.5 .7 3.5 .6 7 .7 5.2 .6-4.3 .7-8.6 .6-4.2 .7 4.2 .6 8.6 .7 4.6 .6-4.1 .7-8.1 .6-4.1 .6 4.1 .7 8.1 .6 3.2 .7-4.4 .6-8.8 .7-4.4 .6 4.4 .7 8.8 .6 5.7 .7-4.4 .6-8.9 .7-4.4 .6 4.4 .7 8.9 .6 3 .6-4.3 .7-8.6 .6-4.3 .7 4.3 .6 8.6 .7 4.6 .6-3.9 .7-7.7 .6-3.9 .7 3.9 .6 7.7 .7 5.1 .6-4.7 .7-9.5 .6-4.7 .6 4.7 .7 9.5 .6 2.3 .7-3.5 .6-7 .7-3.4 .6 3.4 .7 7 .6 4.7 .7-4.1 .6-8.1 .7-4 .6 4 .7 8.1 .6 4.6 .6-4.4 .7-8.6 .6-4.4 .7 4.4 .6 8.6 .7 3.5 .6-3.8 .7-7.5 .6-3.8 .7 3.8 .6 7.5 .7 4.5 .6-4.6 .7-9.2 .6-4.5 .6 4.5 .7 9.2 .6 2.8 .7-3.5 .6-7.1 .7-3.5 .6 3.5 .7 7.1 .6 5.2 .7-4 .6-8.1 .7-4 .6 4 .7 8.1 .6 3.7 .6-4 .7-7.9 .6-4 .7 4 .6 7.9 .7 3.5 .6-4.1 .7-8.2 .6-4.1 .7 4.1 .6 8.2 .7 4.1 .6-4.1 .7-8.4 .6-4.1 .6 4.1 .7 8.4 .6 5.9 .7-4.1 .6-8.4 .7-4.2 .6 4.2 .7 8.4 .6 2.9 .7-4.5 .6-9 .7-4.5 .6 4.5 .7 9 .6 5.7 .6-4.2 .7-8.5 .6-4.2 .7 4.2 .6 8.5 .7 3.3 .6-3.9 .7-7.7 .6-3.9 .7 3.9 .6 7.7 .7 4.3 .6-4.3 .7-8.4 .6-4.3 .6 4.3 .7 8.4 .6 3 .7-3.9 .6-7.8 .7-3.9 .6 3.9 .7 7.8 .6 4.2 .7-4.3 .6-8.7 .7-4.3 .6 4.3 .7 8.7 .6 3.5 .6-4.2 .7-8.3 .6-4.2 .7 4.2 .6 8.3 .7 5.8 .6-4.4 .7-8.7 .6-4.4 .7 4.4 .6 8.7 .7 5.3 .6-4.2 .7-8.4 .6-4.2 .6 4.2 .7 8.4 .6 2.1 .7-4.3 .6-8.5 .7-4.3 .6 4.3 .7 8.5 .6 5.9 .7-4.1 .6-8.2 .7-4.2 .6 4.2 .7 8.2 .6 2.7 .6-3.8 .7-7.7 .6-3.8 .7 3.8 .6 7.7 .7 5.5 .6-4.5 .7-9 .6-4.5 .7 4.5 .6 9 .7 3 .6-4 .7-8 .6-3.9 .6 3.9 .7 8 .6 5.2 .7-4.2 .6-8.5 .7-4.2 .6 4.2 .7 8.5 .6 4.7 .7-4.8 .6-9.5 .7-4.8 .6 4.8 .7 9.5 .6 2.1 .6-4.1 .7-8.2 .6-4.1 .7 4.1 .6 8.2 .7 6.6 .6-4.6 .7-9.2 .6-4.6 .7 4.6 .6 9.2 .7 2 .6-4 .7-8.2 .6-4 .6 4 .7 8.2 .6 3.9 .6-3.3" fill="none" stroke="#8a1f08" stroke-width="1.25" stroke-linejoin="round"/><path d="M878.3 135.5l.6 3.3 .7 7 .6 3.7 .6-3.6 .7-7.3 .6-3.6 .7 3.6 .6 7.3 .7 3.7 .6-3.6 .7-7.2 .6-3.6 .7 3.6 .6 7.2 .7 2.7 .6-3.4 .7-6.7 .6-3.3 .6 3.3 .7 6.7 .6 3.3 .7-3.5 .6-7.2 .7-3.6 .6 3.6 .7 7.2 .6 4 .7-3 .6-6.1 .7-3.1 .6 3.1 .7 6.1 .6 3.5 .6-3.5 .7-7 .6-3.5 .7 3.5 .6 7 .7 4.3 .6-3.4 .7-6.9 .6-3.4 .7 3.4 .6 6.9 .7 2.7 .6-3.7 .7-7.5 .6-3.8 .6 3.8 .7 7.5 .6 3.6 .7-3.6 .6-7.3 .7-3.6 .6 3.6 .7 7.3 .6 4.5 .7-4.1 .6-8.2 .7-4.1 .6 4.1 .7 8.2 .6 2.9 .6-3.3 .7-6.6 .6-3.3 .7 3.3 .6 6.6 .7 3.8 .6-3.5 .7-7.1 .6-3.5 .7 3.5 .6 7.1 .7 3.8 .6-3.8 .7-7.7 .6-3.9 .6 3.9 .7 7.7 .6 4 .7-3.4 .6-6.8 .7-3.4 .6 3.4 .7 6.8 .6 1.8 .7-3.4 .6-6.9 .7-3.4 .6 3.4 .7 6.9 .6 4 .6-3.5 .7-7.1 .6-3.5 .7 3.5 .6 7.1 .7 3.9 .6-3.8 .7-7.4 .6-3.7 .7 3.7 .6 7.4 .7 4 .6-3.3 .7-6.6 .6-3.4 .6 3.4 .7 6.6 .6 3.9 .7-3.5 .6-7 .7-3.5 .6 3.5 .7 7 .6 2 .7-3.2 .6-6.4 .7-3.2 .6 3.2 .7 6.4 .6 4.3 .6-3.5 .7-7.2 .6-3.6 .7 3.6 .6 7.2 .7 3.3 .6-3.7 .7-7.6 .6-3.7 .7 3.7 .6 7.6 .7 3.9 .6-3.8 .7-7.7 .6-3.9 .6 3.9 .7 7.7 .6 3.4 .7-3.7 .6-7.5 .7-3.7 .6 3.7 .7 7.5 .6 3.7 .7-3.9 .6-7.8 .7-3.9 .6 3.9 .7 7.8 .6 3.4 .6-3.2 .7-6.4 .6-3.3 .7 3.3 .6 6.4 .7 3.1 .6-3.2 .7-6.5 .6-3.2 .7 3.2 .6 6.5 .7 4.3 .6-3.6 .7-7.2 .6-3.6 .6 3.6 .7 7.2 .6 3.3 .7-3.9 .6-7.6 .7-3.8 .6 3.8 .7 7.6 .6 3.6 .7-3.2 .6-6.3 .7-3.2 .6 3.2 .7 6.3 .6 4.2 .6-3.8 .7-7.4 .6-3.7 .7 3.7 .6 7.4 .7 2.7 .6-3.1 .7-6.3 .6-3.2 .7 3.2 .6 6.3 .7 3.3 .6-3.3 .7-6.7 .6-3.3 .6 3.3 .7 6.7 .6 2.4 .7-3.5 .6-7 .7-3.5 .6 3.5 .7 7 .6 4.9 .7-3.6 .6-7.3 .7-3.7 .6 3.7 .7 7.3 .6 3.6 .6-3.7 .7-7.5 .6-3.7 .7 3.7 .6 7.5 .7 3.9 .6-4 .7-8.2 .6-4.1 .7 4.1 .6 8.2 .7 2.7 .6-3.3 .7-6.6 .6-3.3 .6 3.3 .7 6.6 .6 3.8 .7-3.4 .6-6.8 .7-3.4 .6 3.4 .7 6.8 .6 3.3 .7-3.3 .6-6.7 .7-3.4 .6 3.4 .7 6.7 .6 4 .6-3.8 .7-7.6 .6-3.9 .7 3.9 .6 7.6 .7 2.2 .6-3.4 .7-7 .6-3.5 .7 3.5 .6 7 .7 4.1 .6-3.1 .7-6.1 .6-3.1 .6 3.1 .7 6.1 .6 4.3 .7-3.6 .6-7.2 .7-3.6 .6 3.6 .7 7.2 .6 2.1 .7-3.1 .6-6.1 .7-3 .6 3 .7 6.1 .6 3 .6-3.7 .7-7.2 .6-3.6 .7 3.6 .6 7.2 .7 5 .6-3.8 .7-7.6 .6-3.8 .7 3.8 .6 7.6 .7 3 .6-3.7 .7-7.3 .6-3.6 .6 3.6 .7 7.3 .6 2.9 .7-3.6 .6-7.1 .7-3.5 .6 3.5 .7 7.1 .6 3.7 .7-3.6 .6-7.4 .7-3.6 .6 3.6 .7 7.4 .6 3.6 .6-3.6 .7-7 .6-3.6 .7 3.6 .6 7 .7 4.5 .6-3.5 .7-7.1 .6-3.5 .7 3.5 .6 7.1 .7 4.1 .6-3.5 .7-6.8 .6-3.5 .6 3.5 .7 6.8 .6 3 .7-3.5 .6-7 .7-3.5 .6 3.5 .7 7 .6 2.4 .7-3.6 .6-7.2 .7-3.6 .6 3.6 .7 7.2 .6 5.3 .6-3.4 .7-6.8 .6-3.3 .7 3.3 .6 6.8 .7 2.4 .6-3.2 .7-6.3 .6-3.2 .7 3.2 .6 6.3 .7 4.3 .6-4 .7-7.8 .6-3.9 .6 3.9 .7 7.8 .6 2.3 .7-3.6 .6-7.1 .7-3.6 .6 3.6 .7 7.1 .6 3.7 .7-3.7 .6-7.3 .7-3.6 .6 3.6 .7 7.3 .6 4.6 .6-3.7 .7-7.5 .6-3.8 .7 3.8 .6 7.5 .7 4.4 .6-3.7 .7-7.4 .6-3.7 .7 3.7 .6 7.4 .7 3 .6-3.4 .7-6.7 .6-3.3 .6 3.3 .7 6.7 .6 3.5 .7-3.2 .6-6.4 .7-3.2 .6 3.2 .7 6.4 .6 2.2 .7-3.4 .6-6.6 .7-3.3 .6 3.3 .7 6.6 .6 4.3 .6-3.2 .7-6.4 .6-3.2 .7 3.2 .6 6.4 .7 2.9 .6-3.6 .7-7.1 .6-3.6 .7 3.6 .6 7.1 .7 3.4 .6-3.2 .7-6.3 .6-3.2 .6 3.2 .7 6.3 .6 3.6 .7-3.8 .6-7.6 .7-3.8 .6 3.8 .7 7.6 .6 4.7 .7-4 .6-8.1 .7-4 .6 4 .7 8.1 .6 3 .6-3.3 .7-6.5 .6-3.3 .7 3.3 .6 6.5 .7 4 .6-3.7 .7-7.5 .6-3.7 .7 3.7 .6 7.5 .7 3.2 .6-3.3 .7-6.8 .6-3.3 .6 3.3 .7 6.8 .6 2.3 .7-3.1 .6-6.1 .7-3.1 .6 3.1 .7 6.1 .6 4.6 .7-3.7 .6-7.4 .7-3.6 .6 3.6 .7 7.4 .6 2.3 .6-3.5 .7-7 .6-3.6 .7 3.6 .6 7 .7 4.9 .6-3.9 .7-7.9 .6-3.9 .7 3.9 .6 7.9 .7 2.3 .6-3.5 .7-7.2 .6-3.6 .6 3.6 .7 7.2 .6 4.4 .7-3.5 .6-7.1 .7-3.5 .6 3.5 .7 7.1 .6 3.2 .7-3.4 .6-6.8 .7-3.4 .6 3.4 .7 6.8 .6 4.2 .6-3.3 .7-6.6 .6-3.3 .7 3.3 .6 6.6 .7 3.8 .6-4 .7-7.9 .6-4 .7 4 .6 7.9 .7 3.5 .6-4 .7-7.9 .6-4 .6 4 .7 7.9 .6 3.1 .7-3.4 .6-6.8 .7-3.5 .6 3.5 .7 6.8 .6 3 .7-3.1 .6-6.1 .7-3.1 .6 3.1 .7 6.1 .6 4.8 .6-3.6 .7-7.1 .6-3.6 .7 3.6 .6 7.1 .7 3 .6-3.5 .7-7.1 .6-3.6 .7 3.6 .6 7.1 .7 3.9 .6-3.6 .7-7.3 .6-3.6 .6 3.6 .7 7.3 .6 2.8 .7-3.3 .6-6.7 .7-3.4 .6 3.4 .7 6.7 .6 4.3 .7-3.6 .6-7.1 .7-3.5 .6 3.5 .7 7.1 .6 2 .6-3 .7-6 .6-3 .7 3 .6 6 .7 3.8 .6-3.7 .7-7.3 .6-3.7 .7 3.7 .6 7.3 .7 4.6 .6-3.7 .7-7.5 .6-3.7 .6 3.7 .7 7.5 .6 2.5 .7-3.7 .6-7.5 .7-3.8 .6 3.8 .7 7.5 .6 4.9 .7-3.5 .6-7 .7-3.4 .6 3.4 .7 7 .6 3.1 .6-3.8 .7-7.5 .6-3.7 .7 3.7 .6 7.5 .7 3 .6-3.2 .7-6.3 .6-3.2 .7 3.2 .6 6.3 .7 4.4 .6-3.7 .7-7.3 .6-3.6 .6 3.6 .7 7.3 .6 2.3 .7-3.6 .6-7.2 .7-3.7 .6 3.7 .7 7.2 .6 3.5 .7-3.1 .6-6.2 .7-3.1 .6 3.1 .7 6.2 .6 4.3 .6-3.3 .7-6.7 .6-3.3 .7 3.3 .6 6.7 .7 2.6 .6-3.3 .7-6.6 .6-3.3 .7 3.3 .6 6.6 .7 3 .6-3.3 .7-6.6 .6-3.3 .6 3.3 .7 6.6 .6 3 .7-3.4 .6-6.7 .7-3.4 .6 3.4 .7 6.7 .6 3.2 .7-3.1 .6-6 .7-3 .6 3 .7 6 .6 4 .6-3.4 .7-6.9 .6-3.5 .7 3.5 .6 6.9 .7 4.1 .6-3.8 .7-7.8 .6-3.8 .7 3.8 .6 7.8 .7 2.7 .6-3.1 .7-6.2 .6-3.1 .6 3.1 .7 6.2 .6 3.3 .7-3.4 .6-7 .7-3.5 .6 3.5 .7 7 .6 4.5 .7-3.7 .6-7.5 .7-3.8 .6 3.8 .7 7.5 .6 2.8 .6-3.6 .7-7.4 .6-3.7 .7 3.7 .6 7.4 .7 2.6 .6-3.2 .7-6.4 .6-3.2 .7 3.2 .6 6.4 .7 4.9 .6-3.4 .7-6.9 .6-3.4 .6 3.4 .7 6.9 .6 3.5 .7-3.6 .6-7.4 .7-3.6 .6 3.6 .7 7.4 .6 3 .7-3.5 .6-6.9 .7-3.5 .6 3.5 .7 6.9 .6 3.2 .6-3.4 .7-7 .6-3.4 .7 3.4 .6 7 .7 3.9 .6-3.7 .7-7.5 .6-3.7 .7 3.7 .6 7.5 .7 2.4 .6-3.2 .7-6.4 .6-3.3 .6 3.3 .7 6.4 .6 3.5 .7-3.7 .6-7.4 .7-3.7 .6 3.7 .7 7.4 .6 4.1 .7-3.7 .6-7.3 .7-3.7 .6 3.7 .7 7.3 .6 3.3 .6-3.3 .7-6.6 .6-3.3 .7 3.3 .6 6.6 .7 2.9 .6-3.5 .7-7.1 .6-3.6 .7 3.6 .6 7.1 .7 3.6 .6-3.3 .7-6.8 .6-3.4 .6 3.4 .7 6.8 .6 4 .7-3.3 .6-6.6 .7-3.3 .6 3.3 .7 6.6 .6 3.8 .7-3.5 .6-6.8 .7-3.4 .6 3.4 .7 6.8 .6 3.2 .6-3.8 .7-7.7 .6-3.8 .7 3.8 .6 7.7 .7 4.4 .6-3.8 .7-7.4 .6-3.8 .7 3.8 .6 7.4 .7 4 .6-4 .7-8.1 .6-4 .6 4 .7 8.1 .6 3.4 .7-3.2 .6-6.6 .7-3.3 .6 3.3 .7 6.6 .6 3 .7-3.6 .6-7.1 .7-3.6 .6 3.6 .7 7.1 .6 4.3 .6-3.8 .7-7.5 .6-3.8 .7 3.8 .6 7.5 .7 3.1 .6-3.6 .7-7.1 .6-3.6 .7 3.6 .6 7.1 .7 4.4 .6-3.8 .7-7.8 .6-3.9 .6 3.9 .7 7.8 .2 1.2" fill="none" stroke="#a352cc" stroke-width="1.1" stroke-linejoin="round"/></g>
<clipPath id="c3"><rect x="100.0" y="393" width="516.5" height="189"/></clipPath>
<g clip-path="url(#c3)"><path d="M100 580.5l0-24.1 0-48.2 .6 48.2 .9 20.1 .8 4 .6 0 .3-27.3 .7-54.5 .6 54.5 .9 23.3 .8 4 .6 0 .3-26.4 .7-43 .6 43 .9 22.4 .8 4 .6 0 .3-28.2 .7-54.3 .6 54.3 .9 24.2 .8 4 .6 0 .3-31.4 .7-51.7 .6 51.7 .9 27.4 .8 4 .6 0 .3-29.6 .7-37.9 .6 37.9 .9 25.6 .8 4 .6 0 .3-32.1 .7-56.1 .6 56.1 .9 28.1 .8 4 .6 0 .3-28.4 .7-43.6 .6 43.6 .9 24.4 .8 4 .6 0 .3-27.6 .7-42.2 .6 42.2 .9 23.6 .8 4 .6 0 .3-25.4 .7-30 .6 30 .9 21.4 .8 4 .6 0 .3-32.2 .7-40.5 .6 40.5 .9 28.2 .8 4 .6 0 .3-25.4 .7-42.9 .6 42.9 .9 21.4 .8 4 .6 0 .3-31.2 .7-34.5 .6 34.5 .9 27.2 .8 4 .6 0 .3-22.9 .7-45.7 .6 45.7 .9 18.9 .8 4 .6 0 .3-24.9 .7-129.5 .6 129.5 .9 20.9 .8 4 .6 0 .3-31.2 .7-47.3 .6 47.3 .9 27.2 .8 4 .6 0 .3-24.1 .7-34.4 .6 34.4 .9 20.1 .8 4 .6 0 .3-32 .7-39.9 .6 39.9 .9 28 .8 4 .6 0 .3-27 .7-31.5 .6 31.5 .9 23 .8 4 .6 0 .3-32 .7-33.3 .6 33.3 .9 28 .8 4 .6 0 .3-28.7 .7-52.1 .6 52.1 .9 24.7 .8 4 .6 0 .3-27.4 .7-64.4 .6 64.4 .9 23.4 .8 4 .6 0 .3-26 .7-63.9 .6 63.9 .9 22 .8 4 .6 0 .3-26.8 .7-59.8 .6 59.8 .9 22.8 .8 4 .6 0 .3-26.2 .7-46 .6 46 .9 22.2 .8 4 .6 0 .3-30.7 .7-65.6 .6 65.6 .9 26.7 .8 4 .6 0 .3-30.7 .7-39.9 .6 39.9 .9 26.7 .8 4 .6 0 .3-26.1 .7-61.7 .6 61.7 .9 22.1 .8 4 .6 0 .3-23.6 .7-50.6 .6 50.6 .9 19.6 .8 4 .6 0 .3-27.5 .7-66.4 .6 66.4 .9 23.5 .8 4 .6 0 .3-27.1 .7-62 .6 62 .9 23.1 .8 4 .6 0 .3-31.8 .7-59.2 .6 59.2 .9 27.8 .8 4 .6 0 .3-26 .7-55.6 .6 55.6 .9 22 .8 4 .6 0 .3-25.4 .7-61.6 .6 61.6 .9 21.4 .8 4 .6 0 .3-30.3 .7-43.3 .6 43.3 .9 26.3 .8 4 .6 0 .3-31.5 .7-42.4 .6 42.4 .9 27.5 .8 4 .6 0 .3-26.4 .7-53.3 .6 53.3 .9 22.4 .8 4 .6 0 .3-24 .7-61.4 .6 61.4 .9 20 .8 4 .6 0 .3-27.4 .7-60.1 .6 60.1 .9 23.4 .8 4 .6 0 .3-28.2 .7-44.9 .6 44.9 .9 24.2 .8 4 .6 0 .3-27.8 .7-66.2 .6 66.2 .9 23.8 .8 4 .6 0 .3-30.4 .7-56.3 .6 56.3 .9 26.4 .8 4 .6 0 .3-28.4 .7-43.7 .6 43.7 .9 24.4 .8 4 .6 0 .3-26.7 .7-49.9 .6 49.9 .9 22.7 .8 4 .6 0 .3-30.3 .7-56.3 .6 56.3 .9 26.3 .8 4 .6 0 .3-28 .7-42.3 .6 42.3 .9 24 .8 4 .6 0 .3-30.5 .7-32.7 .6 32.7 .9 26.5 .8 4 .6 0 .3-23.8 .7-43.2 .6 43.2 .9 19.8 .8 4 .6 0 .3-23.7 .7-33.3 .6 33.3 .9 19.7 .8 4 .6 0 .3-23.9 .7-57.7 .6 57.7 .9 19.9 .8 4 .6 0 .3-29.4 .6-56.4 .7 56.4 .9 25.4 .8 4 .6 0 .3-24 .6-54.7 .7 54.7 .9 20 .8 4 .6 0 .3-29.8 .6-62.4 .7 62.4 .9 25.8 .8 4 .6 0 .3-24.8 .6-60.6 .7 60.6 .9 20.8 .8 4 .6 0 .3-25.2 .6-43 .7 43 .9 21.2 .8 4 .6 0 .3-27.7 .6-57.1 .7 57.1 .9 23.7 .8 4 .6 0 .3-22.8 .6-40.3 .7 40.3 .9 18.8 .8 4 .6 0 .3-24.5 .6-39.2 .7 39.2 .9 20.5 .8 4 .6 0 .3-27.2 .6-27.4 .7 27.4 .9 23.2 .8 4 .6 0 .3-26 .6-41 .7 41 .9 22 .8 4 .6 0 .3-23.1 .6-49.2 .7 49.2 .9 19.1 .8 4 .6 0 .3-27.4 .6-33.9 .7 33.9 .9 23.4 .8 4 .6 0 .3-23.9 .6-47.9 .7 47.9 .9 19.9 .8 4 .6 0 .3-31.4 .6-33.2 .7 33.2 .9 27.4 .8 4 .6 0 .3-29.1 .6-47.5 .7 47.5 .9 25.1 .8 4 .6 0 .3-25.6 .6-27.9 .7 27.9 .9 21.6 .8 4 .6 0 .3-28 .6-42.7 .7 42.7 .9 24 .8 4 .6 0 .3-23.1 .6-52.9 .7 52.9 .9 19.1 .8 4 .6 0 .3-31.2 .6-48.9 .7 48.9 .9 27.2 .8 4 .6 0 .3-31 .6-43.6 .7 43.6 .9 27 .8 4 .6 0 .3-29.9 .6-54.3 .7 54.3 .9 25.9 .8 4 .6 0 .3-26.2 .6-58.8 .7 58.8 .9 22.2 .8 4 .6 0 .3-32.2 .6-40.2 .7 40.2 .9 28.2 .8 4 .6 0 .3-30.4 .6-36 .7 36 .9 26.4 .8 4 .6 0 .3-28.8 .6-62.5 .7 62.5 .9 24.8 .8 4 .6 0 .3-25.4 .6-49.3 .7 49.3 .9 21.4 .8 4 .6 0 .3-25.9 .6-142.6 .7 142.6 .9 21.9 .8 4 .6 0 .3-29.9 .6-45.8 .7 45.8 .9 25.9 .8 4 .6 0 .3-24.8 .6-50.2 .7 50.2 .9 20.8 .8 4 .6 0 .3-25.2 .6-68.1 .7 68.1 .9 21.2 .8 4 .6 0 .3-23.4 .6-55.9 .7 55.9 .9 19.4 .8 4 .6 0 .3-30 .6-41.6 .7 41.6 .9 26 .8 4 .6 0 .3-27.6 .6-44 .7 44 .9 23.6 .8 4 .6 0 .3-27 .6-36.1 .7 36.1 .9 23 .8 4 .6 0 .3-30.7 .6-49.1 .7 49.1 .9 26.7 .8 4 .6 0 .3-27.9 .6-47.3 .7 47.3 .9 23.9 .8 4 .6 0 .3-24.7 .6-56.3 .7 56.3 .9 20.7 .8 4 .6 0 .3-26.5 .6-60.6 .7 60.6 .9 22.5 .8 4 .6 0 .3-26.8 .6-72.3 .7 72.3 .9 22.8 .8 4 .6 0 .3-24.2 .6-58.4 .7 58.4 .9 20.2 .8 4 .6 0 .3-26 .6-40.3 .7 40.3 .9 22 .8 4 .6 0 .3-23.2 .6-54.3 .7 54.3 .9 19.2 .8 4 .6 0 .3-26.1 .6-41.4 .7 41.4 .9 22.1 .8 4 .6 0 .3-26.2 .6-51.8 .7 51.8 .9 22.2 .8 4 .6 0 .3-26.2 .6-52.2 .7 52.2 .9 22.2 .8 4 .6 0 .3-25.6 .6-51 .7 51 .9 21.6 .8 4 .6 0 .3-31.7 .6-125 .7 125 .9 27.7 .8 4 .6 0 .3-24.3 .6-45.6 .7 45.6 .9 20.3 .8 4 .6 0 .3-26 .6-53.8 .7 53.8 .9 22 .8 4 .6 0 .3-31.8 .6-26.9 .7 26.9 .9 27.8 .8 4 .6 0 .3-23.8 .6-55 .7 55 .9 19.8 .8 4 .6 0 .3-29.6 .6-23 .7 23 .9 25.6 .8 4 .6 0 .3-29.1 .6-31.9 .7 31.9 .9 25.1 .8 4 .6 0 .3-24.3 .6-31.4 .7 31.4 .9 20.3 .8 4 .6 0 .3-23.1 .6-19.8 .7 19.8 .9 19.1 .8 4 .6 0 .3-23.1 .6-33.8 .7 33.8 .9 19.1 .8 4 .6 0 .3-24.6 .6-38.9 .7 38.9 .9 20.6 .8 4 .6 0 .3-31.5 .6-26.9 .7 26.9 .9 27.5 .8 4 .6 0 .3-28.7 .6-20.6 .7 20.6 .9 24.7 .8 4 .6 0 .3-28.3 .6-16.7 .7 16.7 .9 24.3 .8 4 .6 0 .3-25 .6-42.3 .7 42.3 .9 21 .8 4 .6 0 .3-26.9 .6-48.7 .7 48.7 .9 22.9 .8 4 .6 0 .3-31.9 .6-28.8 .7 28.8 .9 27.9 .8 4 .6 0 .3-24.8 .6-44.9 .7 44.9 .9 20.8 .8 4 .6 0 .3-28.8 .6-37.6 .7 37.6 .9 24.8 .8 4 .6 0 .3-30.6 .6-45.4 .7 45.4 .9 26.6 .8 4 .6 0 .3-30.5 .6-48.2 .7 48.2 .9 26.5 .8 4 .6 0 .3-28.2 .6-49.6 .7 49.6 .9 24.2 .8 4 .6 0 .3-24.9 .6-54.4 .7 54.4 .9 20.9 .8 4 .6 0 .3-30.8 .6-33.1 .7 33.1 .9 26.8 .8 4 .6 0 .3-25.1 .6-54.2 .7 54.2 .9 21.1 .8 4 .6 0 .3-31.8 .6-23.7 .7 23.7 .9 27.8 .8 4 .6 0 .3-31.7 .6-29.4 .7 29.4 .9 27.7 .8 4 .6 0 .3-31.9 .6-30.2 .7 30.2 .9 27.9 .8 4 .6 0 .3-26.8 .6-36.6 .7 36.6 .9 22.8 .8 4 .6 0 .3-32.1 .6-21.8 .7 21.8 .9 28.1 .8 4 .6 0 .3-24.3 .6-46.8 .7 46.8 .9 20.3 .8 4 .6 0 .3-24.1 .6-40.3 .7 40.3 .9 20.1 .8 4 .6 0 .3-27.5 .6-39.8 .7 39.8 .9 23.5 .8 4 .6 0 .3-30.5 .6-12.1 .7 12.1 .9 26.5 .8 4 .6 0 .3-25.6 .6-34.1 .7 34.1 .9 21.6 .8 4 .6 0 .3-30.8 .6-27.2 .7 27.2 .9 26.8 .8 4 .6 0 .3-23.9 .6-33.6 .7 33.6 .1 19.9 0 4 0 0 0-30.9 0-9.9 0 9.9 0 26.9 0 4" fill="none" stroke="#5e4d8e" stroke-width="1.45" stroke-linejoin="round"/><path d="M100 565.2l.6 16 1.6 0 1.2-24.1 1.1 24.1 1.6 0 1.2-28.4 1.1 28.4 1.6 0 1.2-30.8 1.1 30.8 1.6 0 1.2-25.5 1.1 25.5 1.6 0 1.2-27.1 1.1 27.1 1.6 0 1.2-31.4 1.1 31.4 1.6 0 1.2-30.7 1.1 30.7 1.6 0 1.2-23.6 1.1 23.6 1.6 0 1.2-33.1 1.1 33.1 1.6 0 1.2-24.2 1.1 24.2 1.6 0 1.2-27.3 1.1 27.3 1.6 0 1.2-24.6 1.1 24.6 1.6 0 1.2-25 1.1 25 1.6 0 1.2-25 1.1 25 1.6 0 1.2-23.8 1.1 23.8 1.6 0 1.2-22.7 1.1 22.7 1.6 0 1.2-24 1.1 24 1.6 0 1.2-24.1 1.1 24.1 1.6 0 1.2-34.4 1.1 34.4 1.6 0 1.2-29.8 1.1 29.8 1.6 0 1.2-30.2 1.1 30.2 1.6 0 1.2-34 1.1 34 1.6 0 1.2-35.4 1.1 35.4 1.6 0 1.2-28.4 1.1 28.4 1.6 0 1.2-31.5 1.1 31.5 1.6 0 1.2-35.3 1.1 35.3 1.6 0 1.2-26.8 1.1 26.8 1.6 0 1.2-23.9 1.1 23.9 1.6 0 1.2-21.2 1.1 21.2 1.6 0 1.2-26.9 1.1 26.9 1.6 0 1.2-28.8 1.1 28.8 1.6 0 1.2-22.4 1.1 22.4 1.6 0 1.2-23.8 1.1 23.8 1.6 0 1.2-30.5 1.1 30.5 1.6 0 1.2-27.8 1.1 27.8 1.6 0 1.2-28.2 1.1 28.2 1.6 0 1.2-33.6 1.1 33.6 1.6 0 1.2-27.8 1.1 27.8 1.6 0 1.2-21.5 1.1 21.5 1.6 0 1.2-29.8 1.1 29.8 1.6 0 1.2-27.7 1.1 27.7 1.6 0 1.2-28.4 1.1 28.4 1.6 0 1.2-32.5 1.1 32.5 1.6 0 1.2-34.8 1.1 34.8 1.6 0 1.2-30.4 1.1 30.4 1.6 0 1.2-35.4 1.1 35.4 1.6 0 1.2-21.9 1.1 21.9 1.6 0 1.2-26.6 1.1 26.6 1.6 0 1.2-25.6 1.1 25.6 1.6 0 1.2-29.2 1.1 29.2 1.6 0 1.2-32.7 1.1 32.7 1.6 0 1.2-26.5 1.1 26.5 1.6 0 1.2-29.6 1.1 29.6 1.6 0 1.2-24.8 1.1 24.8 1.6 0 1.2-24.7 1.1 24.7 1.6 0 1.2-24.8 1.1 24.8 1.6 0 1.2-23.5 1.1 23.5 1.6 0 1.2-32.1 1.1 32.1 1.6 0 1.2-26.7 1.1 26.7 1.6 0 1.2-28.4 1.1 28.4 1.6 0 1.2-25.3 1.1 25.3 1.6 0 1.2-27.5 1.1 27.5 1.6 0 1.2-35.1 1.1 35.1 1.6 0 1.2-33.8 1.1 33.8 1.6 0 1.2-36.3 1.1 36.3 1.6 0 1.2-31.9 1.1 31.9 1.6 0 1.2-32.8 1.1 32.8 1.6 0 1.2-25.1 1.1 25.1 1.6 0 1.2-21.9 1.1 21.9 1.6 0 1.2-29.5 1.1 29.5 1.6 0 1.2-24.7 1.1 24.7 1.6 0 1.2-24 1.1 24 1.6 0 1.2-25.4 1.1 25.4 1.6 0 1.2-27.8 1.1 27.8 1.6 0 1.2-26.5 1.1 26.5 1.6 0 1.2-25.5 1.1 25.5 1.6 0 1.2-35.5 1.1 35.5 1.6 0 1.2-26.9 1.1 26.9 1.6 0 1.2-27.4 1.1 27.4 1.6 0 1.2-24.9 1.1 24.9 1.6 0 1.2-23.4 1.1 23.4 1.6 0 1.2-27 1.1 27 1.6 0 1.2-28.8 1.1 28.8 1.6 0 1.2-33.9 1.1 33.9 1.6 0 1.2-23.7 1.1 23.7 1.6 0 1.2-36 1.1 36 1.6 0 1.2-35.3 1.1 35.3 1.6 0 1.2-28.2 1.1 28.2 1.6 0 1.2-26.7 1.1 26.7 1.6 0 1.2-29 1.1 29 1.6 0 1.2-24.1 1.1 24.1 1.6 0 1.2-24.5 1.1 24.5 1.6 0 1.2-29.4 1.1 29.4 1.6 0 1.2-36.1 1.1 36.1 1.6 0 1.2-33.9 1.1 33.9 1.6 0 1.2-34.1 1.1 34.1 1.6 0 1.2-34.6 1.1 34.6 1.6 0 1.2-35.7 1.1 35.7 1.6 0 1.2-24.3 1.1 24.3 1.6 0 1.2-37.1 1.1 37.1 1.6 0 1.2-23.9 1.1 23.9 1.6 0 1.2-35.9 1.1 35.9 1.6 0 1.2-24.7 1.1 24.7 1.6 0 1.2-35.1 1.1 35.1 1.6 0 1.2-29.6 1.1 29.6 1.6 0 1.2-35.9 1.1 35.9 1.6 0 1.2-26.3 1.1 26.3 1.6 0 1.2-31.1 1.1 31.1 1.6 0 1.2-29.1 1.1 29.1 1.6 0 1.2-26.3 1.1 26.3 1.6 0 1.2-34.6 1.1 34.6 1.6 0 1.2-29.4 1.1 29.4 1.6 0 1.2-28.7 1.1 28.7 1.6 0 1.2-31.9 1.1 31.9 1.6 0 1.2-22.5 1.1 22.5 1.6 0 1.2-35.6 1.1 35.6 1.6 0 1.2-25 1.1 25 1.6 0 1.2-22.9 1.1 22.9 1.6 0 1.2-26.3 1.1 26.3 1.6 0 1.2-30.8 1.1 30.8 1.6 0 1.2-34.5 1.1 34.5 1.6 0 1.2-26.5 1.1 26.5 1.6 0 1.2-25 1.1 25 1.6 0 1.2-32.4 1.1 32.4 1.6 0 1.2-29.2 1.1 29.2 1.6 0 1.2-35.3 1.1 35.3 1.6 0 1.2-25.7 1.1 25.7 1.6 0 1.2-33.5 1.1 33.5 1.6 0 1.2-24.8 1.1 24.8 1.6 0 1.2-29.8 1.1 29.8 1.6 0 1.2-33.5 1.1 33.5 1.6 0 1.2-22.3 1.1 22.3 .1 0" fill="none" stroke="#bcdcb0" stroke-width="1.1" stroke-linejoin="round"/><path d="M100 555.7l2.5 .6 2.5-.9 2.5 .5 2.5 .5 2.5-.9 2.5 .5 2.5 0 2.5 .2 2.5-1.6 2.5 .2 2.5 1.7 2.5-.5 2.5-1 2.5 1 2.5-1.2 2.5 .4 2.5 .2 2.5-.4 2.5-.2 2.5 .7 2.5 .3 2.5-.7 2.5 .7 2.5 .7 2.5-1.9 2.5 .5 2.5-.4 2.5 1.2 2.5-.6 2.5 .1 2.5-.4 2.5 1.1 2.5-.1 2.5-.6 2.5 .7 2.5-1.1 2.5 .2 2.5 1.2 2.5-1.4 2.5-.2 2.5-.2 2.5 1.2 2.5 .3 2.5-1.5 2.5 .9 2.5-.2 2.5-.1 2.5-.2 2.5 .3 2.5-.5 2.5 1.5 2.5-1.4 2.5 .7 2.5 .2 2.5 0 2.5-.4 2.5 .1 2.5 .9 2.5-1.6 2.5 .1 2.5 .2 2.5 .9 2.5-.7 2.5 0 2.5-.6 2.5 .1 2.5 1 2.5-.8 2.5 .4 2.5-.4 2.5 .1 2.5-.2 2.5 1.4 2.5-.6 2.5-.2 2.5-.5 2.5 1.2 2.5-.6 2.5-.8 2.5 .1 2.5 1.5 2.5-1.3 2.5 .2 2.5-.6 2.5 1.5 2.5-1.2 2.5 .6 2.5 .3 2.5-.3 2.5-.3 2.5-.3 2.5 .9 2.5-.9 2.5 .7 2.5 .7 2.5-.1 2.5-.5 2.5-.1 2.5-.9 2.5 1.3 2.5 .2 2.5-1.1 2.5-.6 2.5 1 2.5-.2 2.5 .8 2.5-.2 2.5-.6 2.5 .2 2.5-.1 2.5 .3 2.5 0 2.5 0 2.5-.9 2.5 1.2 2.5-1.5 2.5 .4 2.5 .6 2.5-1 2.5 1.1 2.5-.6 2.5 .1 2.5-.5 2.5 .6 2.5 .4 2.5-1.1 2.5 1.6 2.5 .3 2.5-1 2.5 .1 2.5 .5 2.5-.3 2.5 0 2.5-.3 2.5 0 2.5-.3 2.5-.5 2.5 1.4 2.5-.3 2.5-1.3 2.5 1.6 2.5 .4 2.5-1.2 2.5 1 2.5-1.4 2.5 .9 2.5 .3 2.5-.8 2.5-.2 2.5-.3 2.5 .8 2.5-.5 2.5 .4 2.5 .2 2.5-.7 2.5 .3 2.5-.7 2.5 1.2 2.5 .2 2.5-.9 2.5-.2 2.5 .9 2.5-.4 2.5 .7 2.5-.1 2.5-.6 2.5 0 2.5 .3 2.5 0 2.5-.2 2.5 .1 2.5-.4 2.5 .7 2.5-.4 2.5-.7 2.5 1 2.5-.7 2.5 .1 2.5 .5 2.5 .5 2.5-.9 2.5 0 2.5 .5 2.5 .4 2.5-.1 2.5 .4 2.5-1.9 2.5 1 2.5-.4 2.5 0 2.5-.1 2.5 .6 2.5 .3 2.5-.2 2.5-1.2 2.5 .8 2.5 1.4 2.5-.3 2.5 .4 2.5 .8 2.5 1.1 2.5 .1 2.5 .3 2.5 .3 2.5 .9 2.5 1.7" fill="none" stroke="#d0a020" stroke-width="1.2" stroke-linejoin="round" stroke-dasharray="3 2"/><path d="M100 581.2H615.5" stroke="#f9a060" stroke-width="1.2"/></g>
<clipPath id="c4"><rect x="914.0" y="393" width="519.2" height="189"/></clipPath>
<g clip-path="url(#c4)"><path d="M914 547.7l1.7 3.6 .9-96.6 .3 0 .9 96.6 1.8-6.6 .9-85.7 .3 0 .9 85.7 1.8-.1 .9-94.4 .3 0 .9 94.4 1.8 0 .9-87.5 .3 0 .9 87.5 1.8 6.1 .9-93.9 .3 0 .9 93.9 1.8-4.9 .9-85.3 .3 0 .9 85.3 1.8 5.2 .9-98.7 .3 0 .9 98.7 1.8-4.8 .9-88.4 .3 0 .9 88.4 1.8 5.6 .9-90.2 .3 0 .9 90.2 1.8-.8 .9-92.5 .3 0 .9 92.5 1.8-5.2 .9-89 .3 0 .9 89 1.8 1.6 .9-90.2 .3 0 .9 90.2 1.8 .5 .9-97.6 .3 0 .9 97.6 1.8 3.3 .9-103.6 .3 0 .9 103.6 1.8-4.5 .9-94.4 .3 0 .9 94.4 1.8 5 .9-102.8 .3 0 .9 102.8 1.8-3.1 .9-86.5 .3 0 .9 86.5 1.8 .3 .9-87.1 .3 0 .9 87.1 1.8-1.7 .9-93.2 .3 0 .9 93.2 1.8-.2 .9-94.1 .3 0 .9 94.1 1.8-.2 .9-98.6 .3 0 .9 98.6 1.8 5.1 .9-93.2 .3 0 .9 93.2 1.8-2.5 .9-93.9 .3 0 .9 93.9 1.8-3.8 .9-95 .3 0 .9 95 1.8 6.1 .9-91.5 .3 0 .9 91.5 1.8-4.1 .9-88.7 .3 0 .9 88.7 1.8 4.1 .9-104 .3 0 .9 104 1.8-4.8 .9-93.5 .3 0 .9 93.5 1.8-.2 .9-91.1 .3 0 .9 91.1 1.8-.3 .9-97.5 .3 0 .9 97.5 1.8 4.6 .9-97.2 .3 0 .9 97.2 1.8-.6 .9-101.3 .3 0 .9 101.3 1.8-3.9 .9-91.6 .3 0 .9 91.6 1.8-2.2 .9-90.7 .3 0 .9 90.7 1.8 1.1 .9-92.1 .3 0 .9 92.1 1.8 .9 .9-86.8 .3 0 .9 86.8 1.8 1.8 .9-97.1 .3 0 .9 97.1 1.8 .6 .9-94.1 .3 0 .9 94.1 1.8-2.9 .9-86.4 .3 0 .9 86.4 1.8 2.9 .9-101.5 .3 0 .9 101.5 1.8-.4 .9-94.9 .3 0 .9 94.9 1.8-3.6 .9-82.2 .3 0 .9 82.2 1.8 4.3 .9-86.1 .3 0 .9 86.1 1.8-1.2 .9-93.8 .3 0 .9 93.8 1.8-2.5 .9-87.7 .3 0 .9 87.7 1.8 2.6 .9-98 .3 0 .9 98 1.8 2.8 .9-94.3 .3 0 .9 94.3 1.8-6 .9-82 .3 0 .9 82 1.8 2.6 .9-85.5 .3 0 .9 85.5 1.8 0 .9-99.5 .3 0 .9 99.5 1.8 1.1 .9-94.9 .3 0 .9 94.9 1.8 1.8 .9-95.3 .3 0 .9 95.3 1.8-3.2 .9-93.4 .3 0 .9 93.4 1.8 .9 .9-89.2 .3 0 .9 89.2 1.8 2.5 .9-97 .3 0 .9 97 1.8-5.3 .9-97.9 .3 0 .9 97.9 1.8 3.7 .9-98 .3 0 .9 98 1.8 2 .9-97 .3 0 .9 97 1.8 .9 .9-103.5 .3 0 .9 103.5 1.8-1 .9-101.8 .3 0 .9 101.8 1.8-4.7 .9-92.4 .3 0 .9 92.4 1.8 .2 .9-92 .3 0 .9 92 1.8 1.8 .9-91.1 .3 0 .9 91.1 1.8-3.8 .9-87.4 .3 0 .9 87.4 1.8 2.8 .9-90.1 .3 0 .9 90.1 1.8-.6 .9-86.3 .3 0 .9 86.3 1.8-.7 .9-97.3 .3 0 .9 97.3 1.8 4.1 .9-92.6 .3 0 .9 92.6 1.8-4.3 .9-93 .3 0 .9 93 1.8 1.8 .9-97.1 .3 0 .9 97.1 1.8 1.2 .9-94.7 .3 0 .9 94.7 1.8 .1 .9-89.3 .3 0 .9 89.3 1.8-3.1 .9-94.2 .3 0 .9 94.2 1.8 3.8 .9-92.8 .3 0 .9 92.8 1.8 .4 .9-98.3 .3 0 .9 98.3 1.8-4 .9-97.9 .3 0 .9 97.9 1.8 .8 .9-95.4 .3 0 .9 95.4 1.8 3.4 .9-97.4 .3 0 .9 97.4 1.8 .4 .9-101.4 .3 0 .9 101.4 1.8-4 .9-92.5 .3 0 .9 92.5 1.8-.4 .9-91.3 .3 0 .9 91.3 1.8 5.9 .9-97.5 .3 0 .9 97.5 1.8-6.2 .9-89.1 .3 0 .9 89.1 1.8 2.6 .9-87.9 .3 0 .9 87.9 1.8-3.6 .9-85.9 .3 0 .9 85.9 1.8 4.2 .9-97.1 .3 0 .9 97.1 1.8-1.8 .9-98.5 .3 0 .9 98.5 1.8 4.4 .9-99.6 .3 0 .9 99.6 1.8-4 .9-90 .3 0 .9 90 1.8 2.5 .9-93.2 .3 0 .9 93.2 1.8-2.6 .9-90 .3 0 .9 90 1.8 .9 .9-96.1 .3 0 .9 96.1 1.8 2.4 .9-101.2 .3 0 .9 101.2 1.8-5.3 .9-90.8 .3 0 .9 90.8 1.8 2.6 .9-99.1 .3 0 .9 99.1 1.8 2 .9-87.7 .3 0 .9 87.7 1.8-1.3 .9-92.3 .3 0 .9 92.3 1.8-2.3 .9-97.4 .3 0 .9 97.4 1.8 .4 .9-88.2 .3 0 .9 88.2 1.8 4.2 .9-98 .3 0 .9 98 1.8-4.2 .9-94.3 .3 0 .9 94.3 1.8 1.6 .9-97 .3 0 .9 97 1.8-.2 .9-87.9 .3 0 .9 87.9 1.8-2.8 .9-87.6 .3 0 .9 87.6 1.8 1 .9-96.1 .3 0 .9 96.1 1.8 1.1 .9-90.3 .3 0 .9 90.3 1.8-.1 .9-94 .3 0 .9 94 1.8 1.7 .9-94 .3 0 .9 94 1.8 1.6 .9-88 .3 0 .9 88 1.8 .8 .9-93.9 .3 0 .9 93.9 1.8-6.2 .9-91.3 .3 0 .9 91.3 1.8 1.1 .9-90.8 .3 0 .9 90.8 1.8-1.5 .9-82.8 .3 0 .9 82.8 1.8 1.2 .9-94.8 .3 0 .9 94.8 1.8 5.1 .9-97.4 .3 0 .9 97.4 1.8-6.8 .9-95.5 .3 0 .9 95.5 1.8 4.7 .9-101.9 .3 0 .9 101.9 1.8 .7 .9-100.9 .3 0 .9 100.9 1.8-5.1 .9-89.4 .3 0 .9 89.4 1.8 .8 .9-98.2 .3 0 .9 98.2 1.8 3 .9-98.8 .3 0 .9 98.8 1.8-1 .9-85.1 .3 0 .9 85.1 1.8 3.4 .9-89.7 .3 0 .9 89.7 1.8-2.9 .9-90.8 .3 0 .9 90.8 1.8-.5 .9-88.4 .3 0 .9 88.4 1.8 4.4 .9-103.7 .3 0 .9 103.7 1.8-7.7 .9-89.8 .3 0 .9 89.8 1.8 4.6 .9-91.8 .3 0 .9 91.8 1.8-3.1 .9-96.1 .3 0 .9 96.1 1.8 1.7 .9-87.4 .3 0 .9 87.4 1.8 0 .9-88 .3 0 .9 88 1.8 .4 .9-87.7 .3 0 .9 87.7 1.8-2.8 .9-87.6 .3 0 .5 44.2" fill="none" stroke="#7aa8e0" stroke-width="0.75" stroke-linejoin="round"/><path d="M914 548l.4 0 .6-55.4 .6 55.4 2.7 0 .6-53.4 .6 53.4 2.7 0 .6-58.9 .6 58.9 2.7 0 .6-77 .6 77 2.7 0 .6-63.4 .6 63.4 2.7 0 .6-57.2 .6 57.2 2.7 0 .6-61.4 .6 61.4 2.7 0 .6-62.6 .6 62.6 2.7 0 .6-81.1 .6 81.1 2.7 0 .6-81.6 .6 81.6 2.7 0 .6-76.4 .6 76.4 2.7 0 .6-58.6 .6 58.6 2.7 0 .6-71.1 .6 71.1 2.7 0 .6-60.7 .6 60.7 2.7 0 .6-72.2 .6 72.2 2.7 0 .6-72.1 .6 72.1 2.7 0 .6-77.6 .6 77.6 2.7 0 .6-69 .6 69 2.7 0 .6-81.3 .6 81.3 2.7 0 .6-62.8 .6 62.8 2.7 0 .6-82.1 .6 82.1 2.7 0 .6-73.9 .6 73.9 2.7 0 .6-56.4 .6 56.4 2.7 0 .6-63.7 .6 63.7 2.7 0 .6-75.9 .6 75.9 2.7 0 .6-63.3 .6 63.3 2.7 0 .6-78.5 .6 78.5 2.7 0 .6-55.4 .6 55.4 2.7 0 .6-71.8 .6 71.8 2.7 0 .6-58.2 .6 58.2 2.7 0 .6-79.2 .6 79.2 2.7 0 .6-55.4 .6 55.4 2.7 0 .6-77.9 .6 77.9 2.7 0 .6-66.1 .6 66.1 2.7 0 .6-53.9 .6 53.9 2.7 0 .6-62.8 .6 62.8 2.7 0 .6-67.5 .6 67.5 2.7 0 .6-60.6 .6 60.6 2.7 0 .6-62.8 .6 62.8 2.7 0 .6-58.3 .6 58.3 2.7 0 .6-61.1 .6 61.1 2.7 0 .6-73.2 .6 73.2 2.7 0 .6-79.2 .6 79.2 2.7 0 .6-71.4 .6 71.4 2.7 0 .6-70.5 .6 70.5 2.7 0 .6-55.1 .6 55.1 2.7 0 .6-64.6 .6 64.6 2.7 0 .6-53.5 .6 53.5 2.7 0 .6-62.2 .6 62.2 2.7 0 .6-66.1 .6 66.1 2.7 0 .6-74.1 .6 74.1 2.7 0 .6-53.3 .6 53.3 2.7 0 .6-63.5 .6 63.5 2.7 0 .6-68.9 .6 68.9 2.7 0 .6-53.6 .6 53.6 2.7 0 .6-81.6 .6 81.6 2.7 0 .6-67.6 .6 67.6 2.7 0 .6-61.2 .6 61.2 2.7 0 .6-53.7 .6 53.7 2.7 0 .6-70.8 .6 70.8 2.7 0 .6-78.1 .6 78.1 2.7 0 .6-58 .6 58 2.7 0 .6-66.1 .6 66.1 2.7 0 .6-83 .6 83 2.7 0 .6-78.5 .6 78.5 2.7 0 .6-80.4 .6 80.4 2.7 0 .6-70.3 .6 70.3 2.7 0 .6-74.5 .6 74.5 2.7 0 .6-60.3 .6 60.3 2.7 0 .6-55.6 .6 55.6 2.7 0 .6-74.7 .6 74.7 2.7 0 .6-64.6 .6 64.6 2.7 0 .6-58.1 .6 58.1 2.7 0 .6-76.9 .6 76.9 2.7 0 .6-75.2 .6 75.2 2.7 0 .6-58.6 .6 58.6 2.7 0 .6-82 .6 82 2.7 0 .6-82.7 .6 82.7 2.7 0 .6-73 .6 73 2.7 0 .6-78.1 .6 78.1 2.7 0 .6-60.4 .6 60.4 2.7 0 .6-53.8 .6 53.8 2.7 0 .6-53.2 .6 53.2 2.7 0 .6-55.8 .6 55.8 2.7 0 .6-58.7 .6 58.7 2.7 0 .6-72.3 .6 72.3 2.7 0 .6-72.5 .6 72.5 2.7 0 .6-56.3 .6 56.3 2.7 0 .6-60.4 .6 60.4 2.7 0 .6-70.5 .6 70.5 2.7 0 .6-67.7 .6 67.7 2.7 0 .6-71.3 .6 71.3 2.7 0 .6-69.6 .6 69.6 2.7 0 .6-71.3 .6 71.3 2.7 0 .6-67.4 .6 67.4 2.7 0 .6-76.8 .6 76.8 2.7 0 .6-82.3 .6 82.3 2.7 0 .6-75.9 .6 75.9 2.7 0 .6-60.8 .6 60.8 2.7 0 .6-66.5 .6 66.5 2.7 0 .6-55.9 .6 55.9 2.7 0 .6-59.7 .6 59.7 2.7 0 .6-67.3 .6 67.3 2.7 0 .6-63.3 .6 63.3 2.7 0 .6-61.9 .6 61.9 2.7 0 .6-61.9 .6 61.9 2.7 0 .6-70 .6 70 2.7 0 .6-81.1 .6 81.1 2.7 0 .6-70 .6 70 2.7 0 .6-59.2 .6 59.2 2.7 0 .6-68.2 .6 68.2 2.7 0 .6-73.3 .6 73.3 2.7 0 .6-72.2 .6 72.2 2.7 0 .6-56.6 .6 56.6 2.7 0 .6-53.5 .6 53.5 2.7 0 .6-60.7 .6 60.7 2.7 0 .6-61.3 .6 61.3 2.7 0 .6-79.7 .6 79.7 2.7 0 .6-77.6 .6 77.6 2.7 0 .6-54.3 .6 54.3 2.7 0 .6-59.9 .6 59.9 2.7 0 .6-82.2 .6 82.2 2.7 0 .6-60.9 .6 60.9 2.7 0 .6-62.6 .6 62.6 2.7 0 .6-63.6 .6 63.6 2.7 0 .6-69 .6 69 2.7 0 .6-56.4 .6 56.4 2.7 0 .6-69.4 .6 69.4 2.7 0 .6-71.7 .6 71.7 2.7 0 .6-55.2 .6 55.2 2.7 0 .6-77.8 .6 77.8 2.7 0 .6-58.5 .6 58.5 2.7 0 .6-82.1 .6 82.1 1.8 0" fill="none" stroke="#b7dbab" stroke-width="1.2" stroke-linejoin="round"/><path d="M914 448.3l.8 69.3 1.8 .2 .9-72.9 .3 0 .9 72.9 1.8-3 .9-62 .3 0 .9 62 1.8-.7 .9-66 .3 0 .9 66 1.8-1.1 .9-59.5 .3 0 .9 59.5 1.8 4.9 .9-73.8 .3 0 .9 73.8 1.8-5.2 .9-65 .3 0 .9 65 1.8 2.4 .9-63.8 .3 0 .9 63.8 1.8-1 .9-65 .3 0 .9 65 1.8-1.1 .9-68.4 .3 0 .9 68.4 1.8-.5 .9-64 .3 0 .9 64 1.8 2.9 .9-66 .3 0 .9 66 1.8 2.2 .9-71.9 .3 0 .9 71.9 1.8-3.5 .9-66.5 .3 0 .9 66.5 1.8 3.6 .9-72 .3 0 .9 72 1.8-4 .9-66.6 .3 0 .9 66.6 1.8 2.4 .9-70.7 .3 0 .9 70.7 1.8-3.1 .9-62.2 .3 0 .9 62.2 1.8 2.5 .9-66.6 .3 0 .9 66.6 1.8-3.4 .9-67.1 .3 0 .9 67.1 1.8 .5 .9-66.2 .3 0 .9 66.2 1.8 4.8 .9-63.5 .3 0 .9 63.5 1.8-.3 .9-70.7 .3 0 .9 70.7 1.8-1.7 .9-62.6 .3 0 .9 62.6 1.8-1.3 .9-67.3 .3 0 .9 67.3 1.8 2.2 .9-70.2 .3 0 .9 70.2 1.8-1.5 .9-68.5 .3 0 .9 68.5 1.8 2.1 .9-68.7 .3 0 .9 68.7 1.8-4.3 .9-70.4 .3 0 .9 70.4 1.8 3.3 .9-72.5 .3 0 .9 72.5 1.8 .1 .9-71.3 .3 0 .9 71.3 1.8-.8 .9-69.1 .3 0 .9 69.1 1.8 .7 .9-72.3 .3 0 .9 72.3 1.8-1.4 .9-64.6 .3 0 .9 64.6 1.8-.9 .9-59.7 .3 0 .9 59.7 1.8 4.3 .9-64.3 .3 0 .9 64.3 1.8-.3 .9-64.3 .3 0 .9 64.3 1.8-2.2 .9-63.3 .3 0 .9 63.3 1.8-1 .9-71.6 .3 0 .9 71.6 1.8 3.2 .9-64.6 .3 0 .9 64.6 1.8-4.1 .9-67 .3 0 .9 67 1.8-.1 .9-62.8 .3 0 .9 62.8 1.8-.4 .9-61.2 .3 0 .9 61.2 1.8-.8 .9-65.4 .3 0 .9 65.4 1.8 4.5 .9-68.9 .3 0 .9 68.9 1.8-3.9 .9-70.4 .3 0 .9 70.4 1.8 3.3 .9-73.2 .3 0 .9 73.2 1.8-2.4 .9-64.5 .3 0 .9 64.5 1.8 .2 .9-71.5 .3 0 .9 71.5 1.8 2.9 .9-66.1 .3 0 .9 66.1 1.8-1.1 .9-72.5 .3 0 .9 72.5 1.8-.8 .9-61.3 .3 0 .9 61.3 1.8 .2 .9-70 .3 0 .9 70 1.8 2.5 .9-71.4 .3 0 .9 71.4 1.8-2.5 .9-71.1 .3 0 .9 71.1 1.8 2.1 .9-67 .3 0 .9 67 1.8-2 .9-67.3 .3 0 .9 67.3 1.8-1.2 .9-66.5 .3 0 .9 66.5 1.8 1.1 .9-72.9 .3 0 .9 72.9 1.8 1.2 .9-65.2 .3 0 .9 65.2 1.8-4.1 .9-68.6 .3 0 .9 68.6 1.8 4.1 .9-70.1 .3 0 .9 70.1 1.8-3.5 .9-62.4 .3 0 .9 62.4 1.8 5.1 .9-71.7 .3 0 .9 71.7 1.8-2.3 .9-67 .3 0 .9 67 1.8-.3 .9-66.1 .3 0 .9 66.1 1.8 2.2 .9-65.2 .3 0 .9 65.2 1.8-.2 .9-67 .3 0 .9 67 1.8-.7 .9-65.5 .3 0 .9 65.5 1.8-.1 .9-66.3 .3 0 .9 66.3 1.8 .1 .9-73.9 .3 0 .9 73.9 1.8-3.6 .9-63.2 .3 0 .9 63.2 1.8 1.5 .9-69.7 .3 0 .9 69.7 1.8 1.4 .9-71.5 .3 0 .9 71.5 1.8 .6 .9-70.7 .3 0 .9 70.7 1.8 1 .9-71.7 .3 0 .9 71.7 1.8 .3 .9-71.9 .3 0 .9 71.9 1.8-1.1 .9-73.1 .3 0 .9 73.1 1.8-1.7 .9-68.7 .3 0 .9 68.7 1.8 2.2 .9-66.7 .3 0 .9 66.7 1.8-1.8 .9-72 .3 0 .9 72 1.8-.3 .9-70.2 .3 0 .9 70.2 1.8-2.5 .9-62.2 .3 0 .9 62.2 1.8 2.7 .9-61.3 .3 0 .9 61.3 1.8 1.8 .9-74.6 .3 0 .9 74.6 1.8 .6 .9-69.3 .3 0 .9 69.3 1.8 .2 .9-72.2 .3 0 .9 72.2 1.8-3.1 .9-64.5 .3 0 .9 64.5 1.8-1.3 .9-66.6 .3 0 .9 66.6 1.8 .5 .9-67.9 .3 0 .9 67.9 1.8 1.2 .9-67.2 .3 0 .9 67.2 1.8 2.1 .9-72.3 .3 0 .9 72.3 1.8-3.9 .9-67.9 .3 0 .9 67.9 1.8-1.4 .9-66 .3 0 .9 66 1.8 2.1 .9-71 .3 0 .9 71 1.8 1 .9-72.1 .3 0 .9 72.1 1.8 1.7 .9-63.5 .3 0 .9 63.5 1.8-1.1 .9-71.3 .3 0 .9 71.3 1.8-2.8 .9-70.2 .3 0 .9 70.2 1.8 .2 .9-60.9 .3 0 .9 60.9 1.8 3.5 .9-64.3 .3 0 .9 64.3 1.8-2.4 .9-65.5 .3 0 .9 65.5 1.8 2.1 .9-66.4 .3 0 .9 66.4 1.8-.4 .9-73.5 .3 0 .9 73.5 1.8 2.1 .9-69.1 .3 0 .9 69.1 1.8-4.3 .9-67.8 .3 0 .9 67.8 1.8 2.9 .9-63.5 .3 0 .9 63.5 1.8-4.4 .9-67.6 .3 0 .9 67.6 1.8 .1 .9-62.5 .3 0 .9 62.5 1.8 3.3 .9-66.2 .3 0 .9 66.2 1.8-2.5 .9-66.1 .3 0 .9 66.1 1.8 4.2 .9-71.4 .3 0 .9 71.4 1.8-4.1 .9-68.7 .3 0 .9 68.7 1.8 3.6 .9-72 .3 0 .9 72 1.8-.6 .9-66.8 .3 0 .9 66.8 1.8 .7 .9-74.2 .3 0 .9 74.2 1.8-3.1 .9-60.3 .3 0 .9 60.3 1.8 1.2 .9-72 .3 0 .9 72 1.8-2.3 .9-68.5 .3 0 .9 68.5 1.8 3.3 .9-70.1 .3 0 .9 70.1 1.8-3.4 .9-67.4 .3 0 .9 67.4 1.8 4.2 .9-66.2 .3 0 .9 66.2 1.8-1.9 .9-69.7 .3 0 .9 69.7 1.8-2.3 .9-69.3 .3 0 .9 69.3 1.8 4.7 .9-67.9 .3 0 .9 67.9 1.8-5.2 .9-60.7 .3 0 .9 60.7 1.8 5.6 .9-70.9 .3 0 .9 70.9 1.8-.3 .9-71.4 .3 0 .9 71.4 1.8-3.3 .9-67.2 .3 0 .9 67.2 1.8 1 .9-68.6 .3 0 .9 68.6 1.8-1.7 .9-70.4 .3 0 .9 70.4 1.8 .4 .9-65 .3 0 .9 65 1.8 3.4 .9-66.8 .3 0 .9 66.8 1.8-2.1 .8-63.6" fill="none" stroke="#a6e3ec" stroke-width="1.0" stroke-linejoin="round"/><path d="M914 523l.8 .9 .9-95 .3 0 .9 95 1.8-3 .9-89.7 .3 0 .9 89.7 1.8 1 .9-92.7 .3 0 .9 92.7 1.8-.5 .9-92.4 .3 0 .9 92.4 1.8-1.4 .9-89.2 .3 0 .9 89.2 1.8 4.4 .9-93.3 .3 0 .9 93.3 1.8-1.6 .9-93.8 .3 0 .9 93.8 1.8-1.2 .9-93.7 .3 0 .9 93.7 1.8 1.8 .9-94.6 .3 0 .9 94.6 1.8-2.6 .9-87.9 .3 0 .9 87.9 1.8 .2 .9-88.1 .3 0 .9 88.1 1.8 1.7 .9-91.1 .3 0 .9 91.1 1.8 .1 .9-94.7 .3 0 .9 94.7 1.8 .5 .9-94.7 .3 0 .9 94.7 1.8-1.9 .9-93.6 .3 0 .9 93.6 1.8-2 .9-90.2 .3 0 .9 90.2 1.8-.3 .9-89.8 .3 0 .9 89.8 1.8 5 .9-91.1 .3 0 .9 91.1 1.8-2.6 .9-93.9 .3 0 .9 93.9 1.8-.4 .9-93.7 .3 0 .9 93.7 1.8-.8 .9-89.6 .3 0 .9 89.6 1.8 2.4 .9-95.5 .3 0 .9 95.5 1.8-.8 .9-92.4 .3 0 .9 92.4 1.8-.5 .9-93.6 .3 0 .9 93.6 1.8 0 .9-93.8 .3 0 .9 93.8 1.8 1.7 .9-92.2 .3 0 .9 92.2 1.8-.3 .9-93.4 .3 0 .9 93.4 1.8 1.9 .9-95.5 .3 0 .9 95.5 1.8-4.5 .9-91 .3 0 .9 91 1.8 4.3 .9-96.6 .3 0 .9 96.6 1.8-.9 .9-91 .3 0 .9 91 1.8 .5 .9-94.3 .3 0 .9 94.3 1.8-2.4 .9-89.5 .3 0 .9 89.5 1.8 1.6 .9-91.5 .3 0 .9 91.5 1.8-3.2 .9-89.5 .3 0 .9 89.5 1.8 3.3 .9-95 .3 0 .9 95 1.8-3.2 .9-88.2 .3 0 .9 88.2 1.8 2.2 .9-92.9 .3 0 .9 92.9 1.8-.5 .9-93.4 .3 0 .9 93.4 1.8-1.4 .9-92.9 .3 0 .9 92.9 1.8 .9 .9-93.5 .3 0 .9 93.5 1.8 3 .9-91.7 .3 0 .9 91.7 1.8-1.9 .9-95 .3 0 .9 95 1.8 .1 .9-94.7 .3 0 .9 94.7 1.8-1.4 .9-93.4 .3 0 .9 93.4 1.8 .8 .9-94.5 .3 0 .9 94.5 1.8-1.3 .9-92.3 .3 0 .9 92.3 1.8 1.1 .9-89.2 .3 0 .9 89.2 1.8 .7 .9-90.8 .3 0 .9 90.8 1.8 .9 .9-93.2 .3 0 .9 93.2 1.8-4 .9-92.1 .3 0 .9 92.1 1.8 .4 .9-89.7 .3 0 .9 89.7 1.8 1.2 .9-88.4 .3 0 .9 88.4 1.8-.8 .9-92.4 .3 0 .9 92.4 1.8 2.6 .9-92.2 .3 0 .9 92.2 1.8-3.5 .9-90.2 .3 0 .9 90.2 1.8 2.4 .9-89.8 .3 0 .9 89.8 1.8 2 .9-91.5 .3 0 .9 91.5 1.8-1.5 .9-89.6 .3 0 .9 89.6 1.8-.4 .9-93.1 .3 0 .9 93.1 1.8-2 .9-87.8 .3 0 .9 87.8 1.8 3.1 .9-92.2 .3 0 .9 92.2 1.8 2 .9-94.1 .3 0 .9 94.1 1.8-4 .9-89.7 .3 0 .9 89.7 1.8 3.7 .9-96.5 .3 0 .9 96.5 1.8 .1 .9-95.2 .3 0 .9 95.2 1.8-5 .9-89.7 .3 0 .9 89.7 1.8 4 .9-93.8 .3 0 .9 93.8 1.8-3.1 .9-89 .3 0 .9 89 1.8-1 .9-88.6 .3 0 .9 88.6 1.8 1.6 .9-90.5 .3 0 .9 90.5 1.8 .8 .9-93.3 .3 0 .9 93.3 1.8-1.8 .9-88.3 .3 0 .9 88.3 1.8 1.5 .9-93 .3 0 .9 93 1.8 .9 .9-91 .3 0 .9 91 1.8-3.1 .9-89.8 .3 0 .9 89.8 1.8 .4 .9-88.3 .3 0 .9 88.3 1.8-.6 .9-87.3 .3 0 .9 87.3 1.8 3.1 .9-92.3 .3 0 .9 92.3 1.8-.2 .9-93.5 .3 0 .9 93.5 1.8-.5 .9-93.7 .3 0 .9 93.7 1.8-.6 .9-90.5 .3 0 .9 90.5 1.8 1.6 .9-93.8 .3 0 .9 93.8 1.8 0 .9-91 .3 0 .9 91 1.8 1 .9-96.7 .3 0 .9 96.7 1.8-1.7 .9-94 .3 0 .9 94 1.8 1.9 .9-93.4 .3 0 .9 93.4 1.8-2.3 .9-90.9 .3 0 .9 90.9 1.8 .5 .9-93.9 .3 0 .9 93.9 1.8 2.4 .9-97.2 .3 0 .9 97.2 1.8-5.3 .9-90.4 .3 0 .9 90.4 1.8 .7 .9-90.7 .3 0 .9 90.7 1.8 2.8 .9-93.4 .3 0 .9 93.4 1.8 2.1 .9-95.8 .3 0 .9 95.8 1.8-.2 .9-91.7 .3 0 .9 91.7 1.8-2.3 .9-90.5 .3 0 .9 90.5 1.8-2.8 .9-86.9 .3 0 .9 86.9 1.8 2.2 .9-92.7 .3 0 .9 92.7 1.8 2.8 .9-95.1 .3 0 .9 95.1 1.8-5 .9-92.3 .3 0 .9 92.3 1.8 4.3 .9-95.7 .3 0 .9 95.7 1.8-1 .9-95.3 .3 0 .9 95.3 1.8 1.1 .9-91.1 .3 0 .9 91.1 1.8-2.7 .9-89.4 .3 0 .9 89.4 1.8 3.2 .9-96 .3 0 .9 96 1.8-2.6 .9-88.8 .3 0 .9 88.8 1.8 2.9 .9-94.3 .3 0 .9 94.3 1.8-2.4 .9-95.2 .3 0 .9 95.2 1.8 1.7 .9-91.3 .3 0 .9 91.3 1.8-1.6 .9-94 .3 0 .9 94 1.8-2.6 .9-89 .3 0 .9 89 1.8 3.4 .9-92.6 .3 0 .9 92.6 1.8 .8 .9-96.8 .3 0 .9 96.8 1.8-5 .9-91.4 .3 0 .9 91.4 1.8 1.9 .9-93.6 .3 0 .9 93.6 1.8-.5 .9-92.2 .3 0 .9 92.2 1.8 3.5 .9-93.7 .3 0 .9 93.7 1.8-3.7 .9-90.2 .3 0 .9 90.2 1.8-.3 .9-87 .3 0 .9 87 1.8-.4 .9-91.1 .3 0 .9 91.1 1.8 2.9 .9-90 .3 0 .9 90 1.8 .5 .9-95.1 .3 0 .9 95.1 1.8-.2 .9-91.3 .3 0 .9 91.3 1.8 1.9 .9-93.8 .3 0 .9 93.8 1.8-4.1 .9-88.5 .3 0 .9 88.5 1.8 2.7 .9-90.8 .3 0 .9 90.8 1.8-3 .9-88.2 .3 0 .9 88.2 1.8 1.7 .9-93.6 .3 0 .9 93.6 1.8-1.4 .9-92.9 .3 0 .9 92.9 1.8 3.9 .9-96.5 .3 0 .9 96.5 1.8-1.6 .9-94.3 .3 0 .9 94.3 1.8-2.3 .9-91.4 .3 0 .9 91.4 1.8 3.6 .9-96.7 .3 0 .9 96.7 .5-.7" fill="none" stroke="#6ed0e0" stroke-width="1.25" stroke-linejoin="round"/><path d="M914 493.1l.5 52.9 2.7 0 .6-68.7 .6 68.7 2.7 0 .6-66.9 .6 66.9 2.7 0 .6-86.8 .6 86.8 2.7 0 .6-83.1 .6 83.1 2.7 0 .6-99.2 .6 99.2 2.7 0 .6-71.4 .6 71.4 2.7 0 .6-70.7 .6 70.7 2.7 0 .6-35.4 .6 35.4 2.7 0 .6-86.8 .6 86.8 2.7 0 .6-41.1 .6 41.1 2.7 0 .6-45.1 .6 45.1 2.7 0 .6-34.4 .6 34.4 2.7 0 .6-85.8 .6 85.8 2.7 0 .6-82 .6 82 2.7 0 .6-97.6 .6 97.6 2.7 0 .6-84.4 .6 84.4 2.7 0 .6-58.1 .6 58.1 2.7 0 .6-46.1 .6 46.1 2.7 0 .6-33 .6 33 2.7 0 .6-91 .6 91 2.7 0 .6-47.4 .6 47.4 2.7 0 .6-51.4 .6 51.4 2.7 0 .6-40.9 .6 40.9 2.7 0 .6-72.3 .6 72.3 2.7 0 .6-73.5 .6 73.5 2.7 0 .6-50.7 .6 50.7 2.7 0 .6-72.3 .6 72.3 2.7 0 .6-66.7 .6 66.7 2.7 0 .6-36.3 .6 36.3 2.7 0 .6-62.6 .6 62.6 2.7 0 .6-74 .6 74 2.7 0 .6-72.5 .6 72.5 2.7 0 .6-48.6 .6 48.6 2.7 0 .6-35.7 .6 35.7 2.7 0 .6-63.5 .6 63.5 2.7 0 .6-94.7 .6 94.7 2.7 0 .6-97.8 .6 97.8 2.7 0 .6-50.4 .6 50.4 2.7 0 .6-52.4 .6 52.4 2.7 0 .6-71.9 .6 71.9 2.7 0 .6-59.7 .6 59.7 2.7 0 .6-59.6 .6 59.6 2.7 0 .6-90.1 .6 90.1 2.7 0 .6-86.6 .6 86.6 2.7 0 .6-84.3 .6 84.3 2.7 0 .6-32.6 .6 32.6 2.7 0 .6-91.6 .6 91.6 2.7 0 .6-48.3 .6 48.3 2.7 0 .6-72.1 .6 72.1 2.7 0 .6-81.9 .6 81.9 2.7 0 .6-67.8 .6 67.8 2.7 0 .6-38.5 .6 38.5 2.7 0 .6-89 .6 89 2.7 0 .6-75.5 .6 75.5 2.7 0 .6-96.3 .6 96.3 2.7 0 .6-96.1 .6 96.1 2.7 0 .6-66.6 .6 66.6 2.7 0 .6-56.7 .6 56.7 2.7 0 .6-57.2 .6 57.2 2.7 0 .6-64.1 .6 64.1 2.7 0 .6-69.3 .6 69.3 2.7 0 .6-100.9 .6 100.9 2.7 0 .6-60.7 .6 60.7 2.7 0 .6-75.1 .6 75.1 2.7 0 .6-67.1 .6 67.1 2.7 0 .6-78 .6 78 2.7 0 .6-70 .6 70 2.7 0 .6-67.2 .6 67.2 2.7 0 .6-40.9 .6 40.9 2.7 0 .6-35.7 .6 35.7 2.7 0 .6-87.8 .6 87.8 2.7 0 .6-55.6 .6 55.6 2.7 0 .6-53.1 .6 53.1 2.7 0 .6-48.8 .6 48.8 2.7 0 .6-46.2 .6 46.2 2.7 0 .6-58.8 .6 58.8 2.7 0 .6-85.3 .6 85.3 2.7 0 .6-66.7 .6 66.7 2.7 0 .6-75 .6 75 2.7 0 .6-40.7 .6 40.7 2.7 0 .6-38.4 .6 38.4 2.7 0 .6-86.1 .6 86.1 2.7 0 .6-43.1 .6 43.1 2.7 0 .6-46.5 .6 46.5 2.7 0 .6-73.6 .6 73.6 2.7 0 .6-73.2 .6 73.2 2.7 0 .6-86 .6 86 2.7 0 .6-70.4 .6 70.4 2.7 0 .6-49.2 .6 49.2 2.7 0 .6-93.1 .6 93.1 2.7 0 .6-96.7 .6 96.7 2.7 0 .6-84 .6 84 2.7 0 .6-80.5 .6 80.5 2.7 0 .6-89.9 .6 89.9 2.7 0 .6-65.5 .6 65.5 2.7 0 .6-33.5 .6 33.5 2.7 0 .6-51.8 .6 51.8 2.7 0 .6-72.2 .6 72.2 2.7 0 .6-89.4 .6 89.4 2.7 0 .6-81 .6 81 2.7 0 .6-73.3 .6 73.3 2.7 0 .6-58.6 .6 58.6 2.7 0 .6-98.8 .6 98.8 2.7 0 .6-31.1 .6 31.1 2.7 0 .6-42 .6 42 2.7 0 .6-89 .6 89 2.7 0 .6-47.8 .6 47.8 2.7 0 .6-79.4 .6 79.4 2.7 0 .6-79.7 .6 79.7 2.7 0 .6-58.1 .6 58.1 2.7 0 .6-59.3 .6 59.3 2.7 0 .6-100.9 .6 100.9 2.7 0 .6-92.8 .6 92.8 2.7 0 .6-46.7 .6 46.7 2.7 0 .6-49 .6 49 2.7 0 .6-74 .6 74 2.7 0 .6-99.4 .6 99.4 2.7 0 .6-56.4 .6 56.4 2.7 0 .6-78.7 .6 78.7 2.7 0 .6-31.1 .6 31.1 2.7 0 .6-83 .6 83 2.7 0 .6-33.8 .6 33.8 2.7 0 .6-71.4 .6 71.4 2.7 0 .6-91.1 .6 91.1 2.7 0 .6-82.3 .6 82.3 2.7 0 .6-65.6 .6 65.6 2.7 0 .6-82.9 .6 82.9 2.7 0 .6-58.7 .6 58.7 2.7 0 .6-48.4 .6 48.4 2.7 0 .6-84.7 .6 84.7 2.7 0 .6-94.3 .6 94.3 2.7 0 .6-56.4 .6 56.4 2.7 0 .2-21.4" fill="none" stroke="#7a6ab0" stroke-width="0.6" stroke-linejoin="round"/><path d="M914 444.3l2.5-.2 2.5 .9 2.5-.7 2.5 .1 2.5 .1 2.5-.4 2.5 .5 2.5 .4 2.5-1.3 2.5 .8 2.5-.5 2.5 .6 2.5 0 2.5-.9 2.5 .1 2.5 .6 2.5 .6 2.5-.1 2.5 0 2.5-1.1 2.5 .4 2.5 .3 2.5-.3 2.5-.2 2.5 1.1 2.5-.5 2.5-.4 2.5 .2 2.5 .3 2.5 .1 2.5 0 2.5-.7 2.5 1 2.5-.3 2.5-.8 2.5-.1 2.5 .4 2.5-.3 2.5 1 2.5-1.4 2.5 1.3 2.5-1 2.5 1 2.5-.6 2.5-.5 2.5 1.4 2.5-.9 2.5 .9 2.5-1.1 2.5-.1 2.5 .5 2.5-.6 2.5 .6 2.5 .2 2.5-.1 2.5-1 2.5 1.1 2.5-.7 2.5 .3 2.5 .7 2.5 0 2.5-1.2 2.5-.1 2.5 1.1 2.5-.5 2.5 .4 2.5-.1 2.5 .6 2.5-.2 2.5 .2 2.5-.2 2.5-.5 2.5-.2 2.5-.4 2.5 1 2.5-.5 2.5 0 2.5-.3 2.5 0 2.5 .3 2.5 .2 2.5-.5 2.5-.3 2.5 .8 2.5 .5 2.5-.6 2.5 .7 2.5-1.3 2.5 1 2.5-.4 2.5-.8 2.5 .2 2.5 .9 2.5 .1 2.5-1.1 2.5 .9 2.5 .3 2.5-1 2.5 .9 2.5-1.1 2.5 0 2.5 1.1 2.5 .1 2.5-.3 2.5-.3 2.5 .2 2.5-.1 2.5 .1 2.5 .5 2.5-.7 2.5-.4 2.5 0 2.5 .4 2.5 .4 2.5-.6 2.5-.2 2.5-.1 2.5 .9 2.5-1.2 2.5 .6 2.5-.3 2.5 .9 2.5 0 2.5-.1 2.5-.9 2.5 .2 2.5 0 2.5 1.1 2.5 0 2.5-.3 2.5-.3 2.5-.2 2.5 .2 2.5 0 2.5-.3 2.5-.3 2.5-.2 2.5 .3 2.5-.1 2.5 .9 2.5 .1 2.5-1 2.5 1.1 2.5-.2 2.5-.6 2.5 .6 2.5-.4 2.5 .2 2.5 .2 2.5 .3 2.5-.6 2.5-.6 2.5 .7 2.5 .1 2.5-.3 2.5-.2 2.5 1 2.5-.1 2.5-.3 2.5-.4 2.5 .3 2.5-.8 2.5-.2 2.5 .3 2.5 .6 2.5 .5 2.5-.3 2.5-.2 2.5-.9 2.5 1.2 2.5-1.2 2.5 .2 2.5 .6 2.5 .4 2.5-1.2 2.5 1.1 2.5-.2 2.5 0 2.5-.1 2.5 .7 2.5-.3 2.5-1.2 2.5 1.4 2.5-.5 2.5 .6 2.5-.1 2.5-1.5 2.5-1.6 2.5 .2 2.5-2.6 2.5-.9 2.5-1.1 2.5-.1 2.5-2.2 2.5-.4 2.5-1.7 2.5-.5 2.5-1.5 2.5-.5 2.5-1.4 2.5-.6 2.5-2.5 2.5-1.1 2.5-.4 2.5-.7 2.5-.9 2.5-2.5" fill="none" stroke="#56a64b" stroke-width="0.9" stroke-linejoin="round" stroke-dasharray="3 3"/><path d="M914 441.3l2.5 .6 2.5-.3 2.5 .3 2.5-.3 2.5 1 2.5-.5 2.5 .3 2.5 .3 2.5-.7 2.5-.1 2.5-.5 2.5 1.1 2.5-1.2 2.5 .5 2.5-.3 2.5 .9 2.5-.5 2.5 .1 2.5 0 2.5 .5 2.5 .3 2.5-1 2.5 .8 2.5-.3 2.5 0 2.5 .5 2.5-1.3 2.5 .2 2.5 .3 2.5-.3 2.5 0 2.5-.2 2.5 1.2 2.5 .1 2.5-.2 2.5-.1 2.5-.7 2.5-.1 2.5 .1 2.5-.6 2.5 .2 2.5 .6 2.5-.1 2.5 .3 2.5-.1 2.5-.7 2.5 1.2 2.5-.7 2.5 .1 2.5-.2 2.5 0 2.5 .9 2.5 0 2.5-1.2 2.5 1.2 2.5-.2 2.5 0 2.5-.8 2.5 .9 2.5-.5 2.5-.2 2.5-.6 2.5 .7 2.5-.5 2.5 .2 2.5 .9 2.5-.9 2.5 .8 2.5-.7 2.5-.4 2.5 .4 2.5-.3 2.5-.1 2.5 .9 2.5 0 2.5-.8 2.5 .9 2.5-.3 2.5-.7 2.5 0 2.5 .9 2.5 .4 2.5-.2 2.5-.3 2.5-.9 2.5 1.1 2.5-1.1 2.5 1.1 2.5-1.1 2.5 1.5 2.5-.8 2.5-.5 2.5-.1 2.5 .2 2.5 .7 2.5-.7 2.5-.3 2.5 1.1 2.5-.9 2.5 0 2.5 0 2.5-.1 2.5 .2 2.5-.3 2.5-.1 2.5 .2 2.5 .4 2.5 .9 2.5-.2 2.5-.4 2.5-.6 2.5 1.2 2.5-1.1 2.5 .4 2.5 .1 2.5-.2 2.5-.3 2.5 1 2.5-1.2 2.5 .3 2.5 .6 2.5-.7 2.5-.4 2.5 .1 2.5 1.1 2.5-.4 2.5-.2 2.5 .7 2.5-.3 2.5-.7 2.5 0 2.5 1.1 2.5-.7 2.5 .2 2.5-.3 2.5 .9 2.5-.5 2.5 .3 2.5-.7 2.5 .5 2.5-1 2.5 .1 2.5 .3 2.5 0 2.5 1 2.5-1.1 2.5 .5 2.5 .5 2.5-.5 2.5 .5 2.5-.3 2.5 .1 2.5-1 2.5 .3 2.5 .9 2.5-.8 2.5 .6 2.5-.2 2.5 .6 2.5-.7 2.5 .6 2.5-.2 2.5-.2 2.5 .4 2.5-.4 2.5-.4 2.5 .6 2.5-.2 2.5-.2 2.5 .3 2.5-.3 2.5 .5 2.5-.6 2.5 .6 2.5-.7 2.5 .6 2.5-1.2 2.5 1.4 2.5-1.3 2.5 .4 2.5-.2 2.5 .9 2.5-.2 2.5-.4 2.5-.6 2.5 .7 2.5 .6 2.5 0 2.5-.9 2.5 1.1 2.5-1.1 2.5 1 2.5-1.3 2.5-.1 2.5 .9 2.5-.5 2.5 .5 2.5-.2 2.5-.5 2.5 1.1 2.5-1.4 2.5 .5 2.5 .4 2.5 .1 2.5-.5 2.5-.1 2.5-.1" fill="none" stroke="#8a78c0" stroke-width="1.0" stroke-linejoin="round" stroke-dasharray="3 3"/><path d="M914 462.8l2.5 .9 2.5-1.2 2.5 .2 2.5 .2 2.5-.3 2.5 .1 2.5 .8 2.5-.5 2.5-.7 2.5 1.3 2.5-1 2.5 .9 2.5-1.2 2.5 1 2.5-.2 2.5 .1 2.5 .6 2.5-.4 2.5-.7 2.5 .2 2.5-.6 2.5 .9 2.5-.4 2.5-.4 2.5 .8 2.5 .2 2.5-1.1 2.5 1 2.5 0 2.5-.9 2.5 1 2.5-1 2.5-.2 2.5 1.3 2.5 .1 2.5-.6 2.5 .7 2.5-.5 2.5 .4 2.5-.7 2.5 0 2.5 .8 2.5-.6 2.5-.1 2.5 .6 2.5-.2 2.5 0 2.5-.6 2.5 .9 2.5-.6 2.5-.6 2.5 .6 2.5 0 2.5-.7 2.5 0 2.5 .8 2.5 0 2.5-.9 2.5 .7 2.5-.2 2.5 .6 2.5-.1 2.5-1 2.5 .8 2.5-.8 2.5 0 2.5 .3 2.5 1 2.5-.1 2.5-.3 2.5-.5 2.5 .7 2.5-1.1 2.5 .7 2.5-.7 2.5 0 2.5 1.4 2.5-1 2.5-.3 2.5 .5 2.5 .8 2.5-.4 2.5-1 2.5 .6 2.5 .8 2.5-.9 2.5 .1 2.5 .3 2.5 .5 2.5-.2 2.5-.8 2.5 .5 2.5-.1 2.5-.5 2.5-.2 2.5 .2 2.5-.1 2.5 .2 2.5 .8 2.5-1 2.5 .5 2.5 .8 2.5-.3 2.5-.6 2.5-.7 2.5 .9 2.5 .2 2.5-.1 2.5 .2 2.5-.5 2.5 .1 2.5 .3 2.5-.8 2.5 .4 2.5 .4 2.5-.4 2.5 .1 2.5-.6 2.5 1.3 2.5-1 2.5 .7 2.5-.4 2.5 .4 2.5-.1 2.5-.3 2.5 .7 2.5-.1 2.5-.3 2.5-.1 2.5-.7 2.5-.2 2.5 1.3 2.5-1 2.5 .3 2.5 .1 2.5-.3 2.5 .9 2.5-.4 2.5-.8 2.5 1.3 2.5-1.3 2.5 1 2.5-1.1 2.5 1.5 2.5-.3 2.5-.4 2.5-.3 2.5 .8 2.5-1 2.5 .6 2.5-.7 2.5-.1 2.5-.1 2.5 .2 2.5-.3 2.5 .6 2.5-.4 2.5 .5 2.5 .4 2.5 .1 2.5-.6 2.5 .2 2.5-.1 2.5 .3 2.5-.8 2.5 .7 2.5-.1 2.5-.4 2.5 .5 2.5 .2 2.5-.7 2.5 .5 2.5-.2 2.5 .2 2.5 .2 2.5 .4 2.5-.7 2.5 0 2.5-.8 2.5 1.2 2.5-.1 2.5-.9 2.5 0 2.5 .3 2.5 0 2.5 .9 2.5-1.1 2.5 1.2 2.5-1 2.5 .1 2.5 1 2.5-.1 2.5-.3 2.5-.6 2.5-.1 2.5 .4 2.5 .2 2.5-.1 2.5-.1 2.5-.7 2.5 1.2 2.5-.7 2.5 .8 2.5-1.4 2.5 .8 2.5-.8 2.5 0" fill="none" stroke="#9a8ad0" stroke-width="0.8" stroke-linejoin="round" stroke-dasharray="2 4"/><path d="M914 548l.2 0 .6-32.8 .6 32.8 2.7 0 .6-32.7 .6 32.7 2.7 0 .6-27.8 .6 27.8 2.7 0 .6-36.6 .6 36.6 2.7 0 .6-36.7 .6 36.7 2.7 0 .6-35.8 .6 35.8 2.7 0 .6-33.9 .6 33.9 2.7 0 .6-28.2 .6 28.2 2.7 0 .6-30.5 .6 30.5 2.7 0 .6-29.7 .6 29.7 2.7 0 .6-35.5 .6 35.5 2.7 0 .6-36.9 .6 36.9 2.7 0 .6-29.4 .6 29.4 2.7 0 .6-30.5 .6 30.5 2.7 0 .6-33.1 .6 33.1 2.7 0 .6-33.4 .6 33.4 2.7 0 .6-28.9 .6 28.9 2.7 0 .6-28.4 .6 28.4 2.7 0 .6-36.7 .6 36.7 2.7 0 .6-28.3 .6 28.3 2.7 0 .6-29.6 .6 29.6 2.7 0 .6-33 .6 33 2.7 0 .6-28.3 .6 28.3 2.7 0 .6-35.7 .6 35.7 2.7 0 .6-31.6 .6 31.6 2.7 0 .6-27.5 .6 27.5 2.7 0 .6-31.5 .6 31.5 2.7 0 .6-36.4 .6 36.4 2.7 0 .6-33.2 .6 33.2 2.7 0 .6-28.2 .6 28.2 2.7 0 .6-35.6 .6 35.6 2.7 0 .6-32.1 .6 32.1 2.7 0 .6-32.2 .6 32.2 2.7 0 .6-31.1 .6 31.1 2.7 0 .6-30.2 .6 30.2 2.7 0 .6-29.1 .6 29.1 2.7 0 .6-30.5 .6 30.5 2.7 0 .6-36.3 .6 36.3 2.7 0 .6-32.4 .6 32.4 2.7 0 .6-34.1 .6 34.1 2.7 0 .6-30.3 .6 30.3 2.7 0 .6-28 .6 28 2.7 0 .6-36.8 .6 36.8 2.7 0 .6-31.9 .6 31.9 2.7 0 .6-30.8 .6 30.8 2.7 0 .6-36.4 .6 36.4 2.7 0 .6-34.8 .6 34.8 2.7 0 .6-29.4 .6 29.4 2.7 0 .6-27.4 .6 27.4 2.7 0 .6-27.5 .6 27.5 2.7 0 .6-30.1 .6 30.1 2.7 0 .6-28.6 .6 28.6 2.7 0 .6-30.8 .6 30.8 2.7 0 .6-30.4 .6 30.4 2.7 0 .6-27.4 .6 27.4 2.7 0 .6-28.7 .6 28.7 2.7 0 .6-36 .6 36 2.7 0 .6-28 .6 28 2.7 0 .6-34.1 .6 34.1 2.7 0 .6-33.9 .6 33.9 2.7 0 .6-28.7 .6 28.7 2.7 0 .6-30.1 .6 30.1 2.7 0 .6-30.2 .6 30.2 2.7 0 .6-33.9 .6 33.9 2.7 0 .6-34.6 .6 34.6 2.7 0 .6-29.6 .6 29.6 2.7 0 .6-36.9 .6 36.9 2.7 0 .6-29.8 .6 29.8 2.7 0 .6-33.9 .6 33.9 2.7 0 .6-31.2 .6 31.2 2.7 0 .6-29.4 .6 29.4 2.7 0 .6-33 .6 33 2.7 0 .6-27.2 .6 27.2 2.7 0 .6-36.4 .6 36.4 2.7 0 .6-32.9 .6 32.9 2.7 0 .6-33.7 .6 33.7 2.7 0 .6-34.8 .6 34.8 2.7 0 .6-31.8 .6 31.8 2.7 0 .6-32.4 .6 32.4 2.7 0 .6-36 .6 36 2.7 0 .6-36.6 .6 36.6 2.7 0 .6-35.4 .6 35.4 2.7 0 .6-32.9 .6 32.9 2.7 0 .6-35.6 .6 35.6 2.7 0 .6-31.7 .6 31.7 2.7 0 .6-31.6 .6 31.6 2.7 0 .6-27.4 .6 27.4 2.7 0 .6-33.5 .6 33.5 2.7 0 .6-31.6 .6 31.6 2.7 0 .6-35.5 .6 35.5 2.7 0 .6-31.5 .6 31.5 2.7 0 .6-36.5 .6 36.5 2.7 0 .6-29.3 .6 29.3 2.7 0 .6-31.2 .6 31.2 2.7 0 .6-33.2 .6 33.2 2.7 0 .6-36.9 .6 36.9 2.7 0 .6-31.2 .6 31.2 2.7 0 .6-29.6 .6 29.6 2.7 0 .6-33.6 .6 33.6 2.7 0 .6-31.7 .6 31.7 2.7 0 .6-32.8 .6 32.8 2.7 0 .6-28.1 .6 28.1 2.7 0 .6-27.7 .6 27.7 2.7 0 .6-31.5 .6 31.5 2.7 0 .6-34.9 .6 34.9 2.7 0 .6-36.7 .6 36.7 2.7 0 .6-29.8 .6 29.8 2.7 0 .6-31.3 .6 31.3 2.7 0 .6-27.8 .6 27.8 2.7 0 .6-34.4 .6 34.4 2.7 0 .6-34.2 .6 34.2 2.7 0 .6-31.9 .6 31.9 2.7 0 .6-27.6 .6 27.6 2.7 0 .6-31 .6 31 2.7 0 .6-28.5 .6 28.5 2.7 0 .6-33.7 .6 33.7 2.7 0 .6-31.9 .6 31.9 2.7 0 .6-32 .6 32 2.7 0 .6-31.4 .6 31.4 2.7 0 .6-32 .6 32 2.7 0 .6-30.1 .6 30.1 2.7 0 .6-35.6 .6 35.6 2.7 0 .6-29.2 .6 29.2 2.7 0 .6-35.4 .6 35.4 2.7 0 .6-33 .6 33 2.7 0 .6-29.7 .6 29.7 2.7 0 .6-32.8 .6 32.8 2.7 0 .6-30 .6 30 2.7 0 .6-27.5 .6 27.5 2.7 0 .6-32.4 .6 32.4 2.7 0 .6-36.2 .6 36.2 2.7 0 .6-36.8 .6 36.8 2.7 0 .6-36.2 .6 36.2 2 0" fill="none" stroke="#c0672a" stroke-width="0.7" stroke-linejoin="round"/><path d="M914 548l2 0 .6-57.1 .6 57.1 2.7 0 .6-39 .6 39 2.7 0 .6-51.6 .6 51.6 2.7 0 .6-49 .6 49 2.7 0 .6-49.3 .6 49.3 2.7 0 .6-47.9 .6 47.9 2.7 0 .6-47.7 .6 47.7 2.7 0 .6-40.3 .6 40.3 2.7 0 .6-37.1 .6 37.1 2.7 0 .6-53.5 .6 53.5 2.7 0 .6-39 .6 39 2.7 0 .6-36.4 .6 36.4 2.7 0 .6-37.8 .6 37.8 2.7 0 .6-42.3 .6 42.3 2.7 0 .6-52 .6 52 2.7 0 .6-43.4 .6 43.4 2.7 0 .6-57.5 .6 57.5 2.7 0 .6-48.1 .6 48.1 2.7 0 .6-43.3 .6 43.3 2.7 0 .6-41.3 .6 41.3 2.7 0 .6-48.9 .6 48.9 2.7 0 .6-54.5 .6 54.5 2.7 0 .6-58.7 .6 58.7 2.7 0 .6-57 .6 57 2.7 0 .6-36 .6 36 2.7 0 .6-53.1 .6 53.1 2.7 0 .6-52.6 .6 52.6 2.7 0 .6-52.3 .6 52.3 2.7 0 .6-57.4 .6 57.4 2.7 0 .6-55.8 .6 55.8 2.7 0 .6-50.1 .6 50.1 2.7 0 .6-54.5 .6 54.5 2.7 0 .6-57.8 .6 57.8 2.7 0 .6-57.1 .6 57.1 2.7 0 .6-56.9 .6 56.9 2.7 0 .6-53.1 .6 53.1 2.7 0 .6-43.3 .6 43.3 2.7 0 .6-45.1 .6 45.1 2.7 0 .6-43.6 .6 43.6 2.7 0 .6-52.9 .6 52.9 2.7 0 .6-37 .6 37 2.7 0 .6-43.1 .6 43.1 2.7 0 .6-55.5 .6 55.5 2.7 0 .6-48.2 .6 48.2 2.7 0 .6-44.3 .6 44.3 2.7 0 .6-38.8 .6 38.8 2.7 0 .6-47.8 .6 47.8 2.7 0 .6-53.9 .6 53.9 2.7 0 .6-49.8 .6 49.8 2.7 0 .6-40.2 .6 40.2 2.7 0 .6-40.7 .6 40.7 2.7 0 .6-38.7 .6 38.7 2.7 0 .6-50.8 .6 50.8 2.7 0 .6-57.1 .6 57.1 2.7 0 .6-45.6 .6 45.6 2.7 0 .6-57.6 .6 57.6 2.7 0 .6-41.1 .6 41.1 2.7 0 .6-56.3 .6 56.3 2.7 0 .6-55.5 .6 55.5 2.7 0 .6-58 .6 58 2.7 0 .6-39.1 .6 39.1 2.7 0 .6-59.7 .6 59.7 2.7 0 .6-57.2 .6 57.2 2.7 0 .6-43.9 .6 43.9 2.7 0 .6-37.5 .6 37.5 2.7 0 .6-52.2 .6 52.2 2.7 0 .6-53.5 .6 53.5 2.7 0 .6-55.4 .6 55.4 2.7 0 .6-40 .6 40 2.7 0 .6-47 .6 47 2.7 0 .6-49.3 .6 49.3 2.7 0 .6-49.5 .6 49.5 2.7 0 .6-43.5 .6 43.5 2.7 0 .6-45.6 .6 45.6 2.7 0 .6-59 .6 59 2.7 0 .6-48.5 .6 48.5 2.7 0 .6-37.7 .6 37.7 2.7 0 .6-37.7 .6 37.7 2.7 0 .6-50.9 .6 50.9 2.7 0 .6-38.2 .6 38.2 2.7 0 .6-51.5 .6 51.5 2.7 0 .6-58.9 .6 58.9 2.7 0 .6-44.4 .6 44.4 2.7 0 .6-48 .6 48 2.7 0 .6-40 .6 40 2.7 0 .6-58.6 .6 58.6 2.7 0 .6-55 .6 55 2.7 0 .6-55 .6 55 2.7 0 .6-59.9 .6 59.9 2.7 0 .6-43.2 .6 43.2 2.7 0 .6-43.5 .6 43.5 2.7 0 .6-54 .6 54 2.7 0 .6-49.5 .6 49.5 2.7 0 .6-50.5 .6 50.5 2.7 0 .6-47.2 .6 47.2 2.7 0 .6-51.7 .6 51.7 2.7 0 .6-37.3 .6 37.3 2.7 0 .6-41.9 .6 41.9 2.7 0 .6-56.9 .6 56.9 2.7 0 .6-43.5 .6 43.5 2.7 0 .6-36.9 .6 36.9 2.7 0 .6-47.3 .6 47.3 2.7 0 .6-53.6 .6 53.6 2.7 0 .6-54.9 .6 54.9 2.7 0 .6-50.1 .6 50.1 2.7 0 .6-52.6 .6 52.6 2.7 0 .6-48 .6 48 2.7 0 .6-41.8 .6 41.8 2.7 0 .6-48.9 .6 48.9 2.7 0 .6-56.5 .6 56.5 2.7 0 .6-55.9 .6 55.9 2.7 0 .6-50.3 .6 50.3 2.7 0 .6-41.7 .6 41.7 2.7 0 .6-44.9 .6 44.9 2.7 0 .6-43.5 .6 43.5 2.7 0 .6-37.8 .6 37.8 2.7 0 .6-57.8 .6 57.8 2.7 0 .6-47.3 .6 47.3 2.7 0 .6-54.9 .6 54.9 2.7 0 .6-41.9 .6 41.9 2.7 0 .6-43.7 .6 43.7 2.7 0 .6-36.2 .6 36.2 2.7 0 .6-38.8 .6 38.8 2.7 0 .6-57 .6 57 2.7 0 .6-55.9 .6 55.9 2.7 0 .6-41.7 .6 41.7 2.7 0 .6-50.1 .6 50.1 2.7 0 .6-50.9 .6 50.9 2.7 0 .6-51.5 .6 51.5 2.7 0 .6-40.4 .6 40.4 2.7 0 .6-47.1 .6 47.1 2.7 0 .6-43.2 .6 43.2 2.7 0 .6-53.3 .6 53.3 .2 0" fill="none" stroke="#b7dbab" stroke-width="1.2" stroke-linejoin="round"/><path d="M914 571l0-23.6 .8 23.6 1.9 0 .6-35.6 1.4 35.6 1.9 0 .6-29.7 1.4 29.7 1.9 0 .6-25.3 1.4 25.3 1.9 0 .6-9.9 1.4 9.9 1.9 0 .6-37.2 1.4 37.2 1.9 0 .6-26 1.4 26 1.9 0 .6-26.7 1.4 26.7 1.9 0 .6-31.8 1.4 31.8 1.9 0 .6-11.8 1.4 11.8 1.9 0 .6-30.8 1.4 30.8 1.9 0 .6-24.9 1.4 24.9 1.9 0 .6-32.1 1.4 32.1 1.9 0 .6-25.2 1.4 25.2 1.9 0 .6-30.6 1.4 30.6 1.9 0 .6-25.4 1.4 25.4 1.9 0 .6-32.7 1.4 32.7 1.9 0 .6-30.5 1.4 30.5 1.9 0 .6-26.8 1.4 26.8 1.9 0 .6-44.6 1.4 44.6 1.9 0 .6-44.3 1.4 44.3 1.9 0 .6-25.5 1.4 25.5 1.9 0 .6-50.8 1.4 50.8 1.9 0 .6-29.7 1.4 29.7 1.9 0 .6-38.3 1.4 38.3 1.9 0 .6-32.4 1.4 32.4 1.9 0 .6-32.8 1.4 32.8 1.9 0 .6-15.7 1.4 15.7 1.9 0 .6-34.7 1.4 34.7 1.9 0 .6-24.2 1.4 24.2 1.9 0 .6-9.8 1.4 9.8 1.9 0 .6-43 1.4 43 1.9 0 .6-31.4 1.4 31.4 1.9 0 .6-39.2 1.4 39.2 1.9 0 .6-31.5 1.4 31.5 1.9 0 .6-27.1 1.4 27.1 1.9 0 .6-26.7 1.4 26.7 1.9 0 .6-23.4 1.4 23.4 1.9 0 .6-45.9 1.4 45.9 1.9 0 .6-28.2 1.4 28.2 1.9 0 .6-9 1.4 9 1.9 0 .6-29.1 1.4 29.1 1.9 0 .6-28.9 1.4 28.9 1.9 0 .6-35.9 1.4 35.9 1.9 0 .6-27.4 1.4 27.4 1.9 0 .6-24.4 1.4 24.4 1.9 0 .6-29.2 1.4 29.2 1.9 0 .6-29.2 1.4 29.2 1.9 0 .6-31.8 1.4 31.8 1.9 0 .6-30.9 1.4 30.9 1.9 0 .6-30.4 1.4 30.4 1.9 0 .6-11.4 1.4 11.4 1.9 0 .6-7 1.4 7 1.9 0 .6-30.2 1.4 30.2 1.9 0 .6-26.3 1.4 26.3 1.9 0 .6-32.4 1.4 32.4 1.9 0 .6-32.1 1.4 32.1 1.9 0 .6-36.6 1.4 36.6 1.9 0 .6-32.8 1.4 32.8 1.9 0 .6-31.2 1.4 31.2 1.9 0 .6-28.5 1.4 28.5 1.9 0 .6-47.3 1.4 47.3 1.9 0 .6-24.2 1.4 24.2 1.9 0 .6-28.4 1.4 28.4 1.9 0 .6-38.9 1.4 38.9 1.9 0 .6-29.2 1.4 29.2 1.9 0 .6-36.6 1.4 36.6 1.9 0 .6-45.5 1.4 45.5 1.9 0 .6-32.5 1.4 32.5 1.9 0 .6-46.4 1.4 46.4 1.9 0 .6-31.1 1.4 31.1 1.9 0 .6-28.3 1.4 28.3 1.9 0 .6-29 1.4 29 1.9 0 .6-25.7 1.4 25.7 1.9 0 .6-30.5 1.4 30.5 1.9 0 .6-31.3 1.4 31.3 1.9 0 .6-25.7 1.4 25.7 1.9 0 .6-51.4 1.4 51.4 1.9 0 .6-31.5 1.4 31.5 1.9 0 .6-37.8 1.4 37.8 1.9 0 .6-31.2 1.4 31.2 1.9 0 .6-31.8 1.4 31.8 1.9 0 .6-32.5 1.4 32.5 1.9 0 .6-30.3 1.4 30.3 1.9 0 .6-39 1.4 39 1.9 0 .6-29.1 1.4 29.1 1.9 0 .6-26.7 1.4 26.7 1.9 0 .6-30.9 1.4 30.9 1.9 0 .6-50.4 1.4 50.4 1.9 0 .6-6.7 1.4 6.7 1.9 0 .6-29.4 1.4 29.4 1.9 0 .6-44.4 1.4 44.4 1.9 0 .6-28.7 1.4 28.7 1.9 0 .6-6.9 1.4 6.9 1.9 0 .6-24.4 1.4 24.4 1.9 0 .6-30.5 1.4 30.5 1.9 0 .6-9.4 1.4 9.4 1.9 0 .6-32 1.4 32 1.9 0 .6-26.1 1.4 26.1 1.9 0 .6-30.4 1.4 30.4 1.9 0 .6-34.7 1.4 34.7 1.9 0 .6-23.8 1.4 23.8 1.9 0 .6-25 1.4 25 1.9 0 .6-7.4 1.4 7.4 1.9 0 .6-46.8 1.4 46.8 1.9 0 .6-29.5 1.4 29.5 1.9 0 .6-32.7 1.4 32.7 1.9 0 .6-6.1 1.4 6.1 1.9 0 .6-26.4 1.4 26.4 1.9 0 .6-32.5 1.4 32.5 1.9 0 .6-47.5 1.4 47.5 1.9 0 .6-35.6 1.4 35.6 1.9 0 .6-24.1 1.4 24.1 1.9 0 .6-25.5 1.4 25.5 1.9 0 .6-28.7 1.4 28.7 1.9 0 .6-25.7 1.4 25.7 1.9 0 .6-31.3 1.4 31.3 1.9 0 .6-23.6 1.4 23.6 1.9 0 .6-29.1 1.4 29.1 1.9 0 .6-32.3 1.4 32.3 1.9 0 .6-49.2 1.4 49.2 1.9 0 .6-28.5 1.4 28.5 1.9 0 .6-30.2 1.4 30.2 1.9 0 .6-28.3 1.4 28.3 1.9 0 .6-28.2 1.4 28.2 1.9 0 .6-24.4 1.4 24.4 1.9 0 .6-30.5 1.4 30.5 1.9 0 .6-31.8 1.4 31.8 1.9 0 .6-35.3 1.4 35.3 1.9 0 .6-24.6 1.4 24.6 1.9 0 .6-39.4 1.4 39.4 1.9 0 .6-25.8 1.4 25.8 1.9 0 .6-8.5 1.4 8.5 1.9 0 .6-27.4 .1 27.4 0 0 0-10.3 0 10.3" fill="none" stroke="#5e3f8a" stroke-width="1.3" stroke-linejoin="round"/><path d="M924.8 548l.6-108.6 .6 108.6" fill="none" stroke="#5e3f8a" stroke-width="1.1" stroke-linejoin="round"/><path d="M975.5 548l.6-106 .6 106" fill="none" stroke="#5e3f8a" stroke-width="1.1" stroke-linejoin="round"/><path d="M995 548l.6-118.7 .6 118.7" fill="none" stroke="#5e3f8a" stroke-width="1.1" stroke-linejoin="round"/><path d="M1057.4 548l.6-112.9 .6 112.9" fill="none" stroke="#5e3f8a" stroke-width="1.1" stroke-linejoin="round"/><path d="M1065.2 548l.6-120.3 .6 120.3" fill="none" stroke="#5e3f8a" stroke-width="1.1" stroke-linejoin="round"/><path d="M1119.8 548l.6-110.9 .6 110.9" fill="none" stroke="#5e3f8a" stroke-width="1.1" stroke-linejoin="round"/><path d="M1154.9 548l.6-104.4 .6 104.4" fill="none" stroke="#5e3f8a" stroke-width="1.1" stroke-linejoin="round"/><path d="M1174.4 548l.6-103.5 .6 103.5" fill="none" stroke="#5e3f8a" stroke-width="1.1" stroke-linejoin="round"/><path d="M1190 548l.6-119.5 .6 119.5" fill="none" stroke="#5e3f8a" stroke-width="1.1" stroke-linejoin="round"/><path d="M1221.2 548l.6-123.4 .6 123.4" fill="none" stroke="#5e3f8a" stroke-width="1.1" stroke-linejoin="round"/><path d="M1248.5 548l.6-119.7 .6 119.7" fill="none" stroke="#5e3f8a" stroke-width="1.1" stroke-linejoin="round"/><path d="M1260.2 548l.6-114.7 .6 114.7" fill="none" stroke="#5e3f8a" stroke-width="1.1" stroke-linejoin="round"/><path d="M1303.1 548l.6-115.5 .6 115.5" fill="none" stroke="#5e3f8a" stroke-width="1.1" stroke-linejoin="round"/><path d="M1314.8 548l.6-117.8 .6 117.8" fill="none" stroke="#5e3f8a" stroke-width="1.1" stroke-linejoin="round"/><path d="M1396.7 548l.6-115.5 .6 115.5" fill="none" stroke="#5e3f8a" stroke-width="1.1" stroke-linejoin="round"/><path d="M914 568l2.5-.3 2.5 .1 2.5-.2 2.5 .5 2.5-.5 2.5 .3 2.5 0 2.5 0 2.5-.2 2.5 0 2.5 0 2.5-.2 2.5 .2 2.5 0 2.5 .3 2.5-.2 2.5-.2 2.5-.1 2.5 .2 2.5 .4 2.5-.6 2.5 .3 2.5 .2 2.5-.4 2.5 .4 2.5 0 2.5 0 2.5-.4 2.5 .5 2.5-.5 2.5 .4 2.5 0 2.5-.2 2.5 .2 2.5 0 2.5 0 2.5-.3 2.5 .4 2.5-.2 2.5-.2 2.5-.1 2.5 .4 2.5 .1 2.5-.1 2.5-.1 2.5 0 2.5-.2 2.5-.1 2.5 .5 2.5-.1 2.5-.2 2.5 .2 2.5-.4 2.5 0 2.5 .1 2.5 .3 2.5-.3 2.5-.1 2.5 0 2.5 0 2.5 .4 2.5 .1 2.5-.6 2.5 .4 2.5-.3 2.5 .4 2.5-.3 2.5 .2 2.5-.4 2.5 .3 2.5 0 2.5-.2 2.5 .5 2.5-.3 2.5 .1 2.5-.3 2.5 .1 2.5 .3 2.5-.2 2.5 .3 2.5-.2 2.5 .2 2.5-.4 2.5 .1 2.5 .2 2.5-.5 2.5 .3 2.5-.3 2.5 .1 2.5 .2 2.5-.2 2.5-.1 2.5 0 2.5 .4 2.5 .1 2.5-.1 2.5-.2 2.5 .2 2.5-.4 2.5 .5 2.5-.2 2.5 0 2.5 .1 2.5-.3 2.5 .2 2.5 0 2.5 0 2.5 0 2.5-.1 2.5 .2 2.5-.2 2.5 .4 2.5-.4 2.5 .3 2.5-.2 2.5 .2 2.5 0 2.5-.2 2.5 .3 2.5-.1 2.5-.4 2.5 .1 2.5-.1 2.5 .2 2.5 0 2.5 0 2.5 .2 2.5-.3 2.5 .3 2.5-.2 2.5 .1 2.5-.3 2.5 .3 2.5-.3 2.5 .3 2.5-.2 2.5 .3 2.5 0 2.5-.5 2.5 .5 2.5-.2 2.5-.2 2.5 .3 2.5-.1 2.5 .3 2.5-.2 2.5-.3 2.5 .3 2.5-.3 2.5 0 2.5 0 2.5-.1 2.5 .3 2.5 .3 2.5-.3 2.5-.1 2.5-.2 2.5 .3 2.5-.1 2.5-.1 2.5 .4 2.5-.1 2.5-.4 2.5 .3 2.5 0 2.5 .2 2.5-.4 2.5 0 2.5 .4 2.5-.4 2.5 .2 2.5-.2 2.5 0 2.5 .4 2.5-.4 2.5 .4 2.5-.4 2.5 .3 2.5 0 2.5 .1 2.5 0 2.5-.2 2.5 .3 2.5-.4 2.5 0 2.5 .2 2.5-.3 2.5 .1 2.5-.2 2.5 .4 2.5-.1 2.5-.1 2.5 0 2.5 0 2.5 0 2.5 0 2.5 .1 2.5 .3 2.5-.6 2.5 .4 2.5-.1 2.5 .3 2.5-.2 2.5-.1 2.5 .2 2.5-.4 2.5 .1" fill="none" stroke="#e0b400" stroke-width="1.1" stroke-linejoin="round"/><path d="M914 572.3l.5 .5 .6-.8 .7-1.5 .7-.8 .6 .8 .7 1.5 .6 1.3 .6-.9 .7-1.8 .7-.9 .6 .9 .6 1.8 .7 .6 .6-1 .7-1.8 .6-1 .7 1 .6 1.8 .7 .8 .7-.9 .6-1.8 .7-.9 .6 .9 .7 1.8 .6 .9 .7-.8 .6-1.7 .7-.8 .6 .8 .7 1.7 .6 1 .6-.8 .7-1.8 .7-.8 .6 .8 .6 1.8 .7 1.1 .6-1 .7-2 .7-1 .6 1 .6 2 .7 .6 .6-.9 .7-1.8 .7-.9 .6 .9 .6 1.8 .7 .8 .7-.8 .6-1.7 .7-.8 .6 .8 .7 1.7 .6 .9 .6-.9 .7-1.9 .7-.9 .6 .9 .7 1.9 .6 1.3 .6-1 .7-1.9 .7-1 .6 1 .7 1.9 .6 1.1 .6-1 .7-1.8 .7-.9 .6 .9 .6 1.8 .7 .8 .6-1 .7-2 .6-1 .7 1 .6 2 .7 .7 .7-.9 .6-1.8 .7-1 .6 1 .7 1.8 .6 1.2 .7-.9 .6-1.9 .7-1 .6 1 .7 1.9 .6 .7 .6-1 .7-1.9 .7-1 .6 1 .6 1.9 .7 1 .6-.9 .7-1.8 .7-1 .6 1 .6 1.8 .7 .7 .6-.9 .7-1.8 .7-.9 .6 .9 .6 1.8 .7 1.1 .7-.9 .6-1.8 .7-1 .6 1 .7 1.8 .6 1 .6-.9 .7-1.8 .7-1 .6 1 .7 1.8 .6 1.1 .6-1 .7-2 .7-1 .6 1 .7 2 .6 .6 .6-.9 .7-1.8 .7-.9 .6 .9 .6 1.8 .7 .9 .6-.8 .7-1.8 .6-.9 .7 .9 .6 1.8 .7 1 .7-1 .6-1.9 .7-.9 .6 .9 .7 1.9 .6 .8 .7-.9 .6-1.6 .7-.8 .6 .8 .7 1.6 .6 1.2 .6-1 .7-1.8 .7-.9 .6 .9 .6 1.8 .7 1 .6-.9 .7-1.8 .7-.9 .6 .9 .6 1.8 .7 .5 .6-.9 .7-1.8 .7-.9 .6 .9 .6 1.8 .7 1.2 .7-.9 .6-1.8 .7-.9 .6 .9 .7 1.8 .6 .9 .6-.9 .7-1.9 .6-.9 .7 .9 .6 1.9 .7 .8 .7-1 .6-1.8 .7-1 .6 1 .7 1.8 .6 1.3 .7-.9 .6-1.8 .7-.9 .6 .9 .7 1.8 .6 .7 .7-.9 .6-1.9 .6-.9 .7 .9 .6 1.9 .7 .7 .7-.9 .6-1.7 .7-.8 .6 .8 .7 1.7 .6 .9 .7-.8 .6-1.8 .6-.8 .7 .8 .6 1.8 .7 .9 .7-.9 .6-1.8 .7-.9 .6 .9 .6 1.8 .7 1.2 .7-1 .6-2 .7-1 .6 1 .7 2 .6 .8 .7-.9 .6-2 .7-.9 .6 .9 .6 2 .7 .9 .7-.9 .6-1.7 .7-.9 .6 .9 .7 1.7 .6 .9 .6-.9 .7-1.7 .6-.8 .7 .8 .6 1.7 .7 .8 .7-.9 .6-1.8 .7-.9 .6 .9 .7 1.8 .6 1.1 .7-1 .6-1.9 .7-.9 .6 .9 .7 1.9 .6 1 .7-1 .6-1.9 .6-1 .7 1 .6 1.9 .7 .6 .7-.9 .6-1.7 .7-.8 .6 .8 .7 1.7 .6 .9 .7-.9 .6-1.8 .6-.9 .7 .9 .6 1.8 .7 1.3 .7-1 .6-1.8 .7-.9 .6 .9 .6 1.8 .7 1.1 .7-.9 .6-1.9 .7-1 .6 1 .7 1.9 .6 .7 .7-.9 .6-1.9 .7-1 .6 1 .6 1.9 .7 .9 .7-1 .6-1.9 .7-.9 .6 .9 .7 1.9 .6 .8 .6-.9 .7-1.7 .6-.9 .7 .9 .6 1.7 .7 1.2 .7-1 .6-1.9 .7-1 .6 1 .7 1.9 .6 1 .7-.9 .6-1.9 .7-1 .6 1 .7 1.9 .6 .7 .7-.9 .6-1.6 .6-.9 .7 .9 .6 1.6 .7 .7 .7-.9 .6-1.8 .7-.8 .6 .8 .7 1.8 .6 1.1 .7-.9 .6-1.7 .6-.9 .7 .9 .6 1.7 .7 .9 .7-.9 .6-1.6 .7-.8 .6 .8 .6 1.6 .7 .8 .7-.9 .6-1.8 .7-.8 .6 .8 .7 1.8 .6 1.1 .7-.9 .6-1.8 .7-.9 .6 .9 .6 1.8 .7 .8 .7-1 .6-1.9 .7-.9 .6 .9 .7 1.9 .6 1.2 .6-.9 .7-1.8 .6-.9 .7 .9 .6 1.8 .7 .8 .7-.8 .6-1.8 .7-.9 .6 .9 .7 1.8 .6 .7 .7-.9 .6-1.8 .7-.9 .6 .9 .7 1.8 .6 1 .7-1 .6-1.9 .6-1 .7 1 .6 1.9 .7 1.2 .7-1 .6-2.1 .7-1.1 .6 1.1 .7 2.1 .6 .5 .7-.8 .6-1.6 .6-.8 .7 .8 .6 1.6 .7 1.1 .7-1 .6-1.9 .7-1 .6 1 .6 1.9 .7 1.2 .7-1 .6-2.1 .7-1 .6 1 .7 2.1 .6 .8 .7-1 .6-2 .7-1 .6 1 .6 2 .7 .8 .7-.9 .6-1.7 .7-.9 .6 .9 .7 1.7 .6 1.2 .6-1 .7-2 .6-1 .7 1 .6 2 .7 1.1 .7-1 .6-1.9 .7-.9 .6 .9 .7 1.9 .6 .9 .7-.9 .6-1.7 .7-.9 .6 .9 .7 1.7 .6 .8 .7-1 .6-2 .6-1 .7 1 .6 2 .7 .7 .7-.8 .6-1.6 .7-.8 .6 .8 .7 1.6 .6 .9 .7-.9 .6-1.8 .6-.9 .7 .9 .6 1.8 .7 1.2 .7-.9 .6-1.8 .7-1 .6 1 .6 1.8 .7 1 .7-1 .6-1.9 .7-1 .6 1 .7 1.9 .6 .7 .7-.8 .6-1.7 .7-.9 .6 .9 .6 1.7 .7 .6 .7-.9 .6-1.8 .7-.8 .6 .8 .7 1.8 .6 1.5 .6-1.1 .7-2 .6-1.1 .7 1.1 .6 2 .7 1 .7-1 .6-1.9 .7-.9 .6 .9 .7 1.9 .6 .9 .7-.9 .6-1.9 .7-.9 .6 .9 .7 1.9 .6 .8 .7-.9 .6-1.7 .6-.9 .7 .9 .6 1.7 .7 .6 .7-.9 .6-1.7 .7-.9 .6 .9 .7 1.7 .6 1.4 .7-1 .6-1.8 .6-1 .7 1 .6 1.8 .7 .9 .7-.9 .6-1.9 .7-.9 .6 .9 .6 1.9 .7 .7 .7-.9 .6-1.8 .7-.8 .6 .8 .7 1.8 .6 1 .7-.8 .6-1.8 .7-.9 .6 .9 .6 1.8 .7 .6 .7-.9 .6-1.8 .7-.9 .6 .9 .7 1.8 .6 1 .6-.9 .7-1.9 .6-1 .7 1 .6 1.9 .7 1.1 .7-.9 .6-1.9 .7-1 .6 1 .7 1.9 .6 .5 .7-.8 .6-1.6 .7-.8 .6 .8 .7 1.6 .6 1.1 .7-.9 .6-1.7 .6-.9 .7 .9 .6 1.7 .7 1 .7-.9 .6-2 .7-1 .6 1 .7 2 .6 .7 .7-.9 .6-1.8 .6-.9 .7 .9 .6 1.8 .7 1.3 .7-1 .6-1.9 .7-.9 .6 .9 .6 1.9 .7 1 .7-1 .6-2 .7-1 .6 1 .7 2 .6 .7 .7-.9 .6-2 .7-.9 .6 .9 .6 2 .7 .9 .7-.9 .6-1.8 .7-1 .6 1 .7 1.8 .6 1.1 .6-1 .7-1.8 .6-.9 .7 .9 .6 1.8 .7 1 .7-1 .6-2 .7-1 .6 1 .7 2 .6 .9 .7-1 .6-2 .7-1.1 .6 1.1 .7 2 .6 .8 .7-.9 .6-1.8 .6-.8 .7 .8 .6 1.8 .7 .7 .7-.8 .6-1.6 .7-.8 .6 .8 .7 1.6 .6 1.1 .7-.9 .6-2 .6-1 .7 1 .6 2 .7 .9 .7-.9 .6-1.8 .7-.8 .6 .8 .6 1.8 .7 .7 .7-.8 .6-1.7 .7-.8 .6 .8 .7 1.7 .6 1.1 .7-.9 .6-1.9 .7-1 .6 1 .6 1.9 .7 .6 .7-.8 .6-1.8 .7-.8 .6 .8 .7 1.8 .6 .8 .6-.9 .7-1.9 .6-1 .7 1 .6 1.9 .7 1.3 .7-1 .6-2 .7-1 .6 1 .7 2 .6 1 .7-1 .6-1.9 .7-1 .6 1 .7 1.9 .6 .8 .7-.9 .6-1.9 .6-1 .7 1 .6 1.9 .7 1.1 .7-.9 .6-1.9 .7-.9 .6 .9 .7 1.9 .6 .6 .7-.9 .6-1.8 .6-.9 .7 .9 .6 1.8 .7 .9 .7-.9 .6-1.6 .7-.9 .6 .9 .6 1.6 .7 1 .7-.9 .6-1.8 .7-.9 .6 .9 .7 1.8 .6 .9 .7-1 .6-1.9 .7-1 .6 1 .6 1.9 .7 .9 .7-.9 .6-1.7 .7-.8 .6 .8 .7 1.7 .6 1.1 .6-1 .7-2 .6-1 .7 1 .6 2 .7 .7 .7-.8 .6-1.7 .7-.8 .6 .8 .7 1.7 .6 1.2 .7-.9 .6-1.9 .7-.9 .6 .9 .7 1.9 .6 .5 .7-.9 .6-1.7 .6-.9 .7 .9 .6 1.7 .7 1.1 .7-1 .6-1.8 .7-.9 .6 .9 .7 1.8 .6 .9 .7-.9 .6-1.7 .6-.9 .7 .9 .6 1.7 .7 1 .7-1 .6-2 .7-1 .6 1 .6 2 .7 .7 .7-.9 .6-1.8 .7-.9 .6 .9 .7 1.8 .6 1.4 .7-.9 .6-1.9 .7-.9 .6 .9 .6 1.9 .7 .8 .7-1 .6-1.9 .7-1 .6 1 .7 1.9 .6 .9 .6-.9 .7-1.8 .6-.9 .7 .9 .6 1.8 .7 .7 .7-.8 .6-1.6 .7-.8 .6 .8 .7 1.6 .6 1.3 .7-1.1 .6-2.1 .7-1.1 .6 1.1 .7 2.1 .6 .7 .7-1 .6-1.8 .6-.9 .7 .9 .3 .8" fill="none" stroke="#1f4f8f" stroke-width="1.05" stroke-linejoin="round"/><path d="M914 413.5l2 1.3 2 1 2-1.5 2 .5 2-.3 2 .9 2 0 2-.2 2 1 2-.6 2-.8 2 .1 2 .7 2 .2 2-1.1 2 1.4 2-.8 2 .8 2-1.5 2 .5 2-.6 2 1 2-.4 2 .3 2-.3 2 1.5 2-.5 2-.6 2 .4 2-.8 2 1.9 2-.1 2-.8 2-1 2 2 2-1.8 2-.4 2 .9 2-.1 2 1.1 2-1.7 2-.2 2 .9 2-.9 2 1.5 2-.5 2 .9 2 .2 2-1.7 2 1.3 2-.8 2 1.1 2-2.1 2 .8 2 1.3 2-2.3 2 .6 2-.1 2 .1 2 1.5 2-2 2 1.5 2-1.4 2 1.4 2-1.8 2-.1 2 2 2-2.4 2 1.5 2-1.1 2 .8 2-.6 2 .6 2 .1 2 .1 2-1.6 2 1.7 2-1.5 2 .8 2 .5 2-.2 2-.6 2-.2 2-.9 2 1.7 2-.7 2 .4 2 .4 2-.7 2-1 2 .3 2-.8 2 .2 2 1.4 2-.5 2-1.3 2 .8 2-.3 2 1 2 0 2-1.2 2-.7 2 .2 2 .9 2-.5 2-.9 2 1.7 2-.3 2-.7 2-.8 2 .8 2 .5 2-1.2 2 .1 2-.2 2 0 2 1.4 2 .2 2-.2 2-.7 2 .1 2-.9 2 2 2-.7 2-.8 2-.1 2 .4 2 .2 2 .8 2-1.5 2 1.8 2-1.3 2-.2 2 1.2 2-1.1 2 2 2-.7 2 .2 2-.4 2 .9 2-.1 2-.6 2-1 2 1.3 2 .9 2-1.8 2 1.2 2-1.4 2 1.8 2-.6 2 .1 2 .1 2-.1 2 .4 2 0 2-.8 2 1.5 2-1.7 2 1.5 2-.7 2-.7 2 .5 2 .5 2-.8 2 1.3 2 .8 2-.5 2-.3 2 .1 2-.2 2 .7 2-.1 2-.4 2 .6 2-.2 2-1.3 2 .2 2 .6 2-.1 2 1 2-.5 2 .5 2 .1 2 .6 2-1 2-.6 2 1.7 2-1.5 2 1 2-1.2 2 .4 2 .6 2 .7 2 .1 2 0 2-1.1 2 .6 2 0 2-.6 2 .6 2-.9 2 .1 2-.3 2-.4 2 1.9 2-1 2-.1 2 .4 2-1 2-.5 2 1.3 2-1 2-.2 2 .7 2-.3 2 1.3 2-1.1 2 1 2-.4 2-.3 2-.3 2-1.1 2 1.7 2-1.8 2 1.6 2 .3 2-.3 2-.1 2-.2 2-.8 2 .6 2-.2 2-.2 2 1.6 2 .2 2 .3 2-1.6 2 1.2 2 .6 2-2 2 2.1 2-.4 2-1 2 .2 2-.4 2-.5 2 .1 2 1.5 2-2.2 2 .9 2-.5 2 .8 2 .7 2-.8 2-1 2 1.8 2-1.5 2 1.1 2 0" fill="none" stroke="#37872d" stroke-width="1.3" stroke-linejoin="round"/></g>
<clipPath id="c5"><rect x="68.0" y="672" width="1334.1" height="223"/></clipPath>
<g clip-path="url(#c5)"><path d="M68 730.7l3-.1 3 .1 3-.1 3 .4 3-.7 3 .3 3 .3 3-.1 3 .3 3-.6 3 0 3 0 3-.2 3-.1 3 .5 3-.2 3 .3 3 .3 3 .1 3-.2 3-.5 3 .1 3 .5 3-.7 3 .6 3-.6 3 .2 3 .1 3 .4 3-.2 3 .1 3-.5 3 0 3 .5 3-.2 3 .1 3-.6 3-.1 3 .4 3-.1 3-.1 3 .6 3 .1 3-.7 3-.1 3 .1 3 0 3 .5 3-.3 3 .6 3-1 3 .5 3-.4 3 .7 3-.4 3-.2 3 .4 3 .2 3-.8 3 .2 3 .7 3-.5 3-.3 3 .8 3 0 3-.5 3-.2 3-.2 3 .7 3 0 3 0 3 0 3-.4 3 0 3 .2 3 .3 3-.4 3 .1 3-.1 3 .4 3 .1 3-.7 3 .7 3-.1 3-.4 3-.2 3 .5 3-.2 3 .1 3 .4 3 0 3-.3 3-.2 3-.4 3-.1 3 .8 3-.6 3 .5 3-.4 3-.1 3 .5 3-.6 3-.1 3 1 3-.6 3-.1 3 .5 3-.6 3 .6 3-.6 3 .5 3 0 3-.6 3 .3 3 .4 3-.3 3-.1 3-.4 3 .1 3 .8 3 .1 3-.5 3 .1 3-.5 3 .8 3-.3 3 .1 3 .1 3-.6 3 .5 3-.3 3-.1 3-.2 3 .6 3-.5 3-.1 3 .3 3 0 3 0 3-.2 3 .7 3-.8 3 .7 3-.1 3-.3 3-.1 3 .5 3-.1 3-.5 3 .7 3-.3 3-.5 3 .8 3-.6 3-.2 3 .8 3-.2 3-.3 3 .1 3 0 3 0 3-.4 3 .5 3-.3 3-.2 3 .2 3 .1 3-.4 3 .3 3 0 3-.2 3 .3 3-.4 3 .5 3-.2 3 0 3 .3 3 0 3-.5 3 0 3 .5 3-.3 3-.2 3 .1 3 0 3 0 3-.2 3 .3 3 .5 3-.8 3 0 3 .1 3 .4 3-.2 3 .4 3 0 3-.1 3-.1 3 .3 3 .2 3-.9 3 .3 3 .4 3-.2 3-.2 3 .3 3-.4 3 .5 3-.7 3 0 3 .7 3-.4 3 .4 3 .1 3-.2 3-.1 3-.3 3 .2 3-.3 3 .6 3 .2 3-1 3 .5 3 .3 3 .1 3-.5 3 0 3-.1 3-.3 3 .2 3 .7 3-.2 3 .3 3-.4 3-.6 3 .4 3 .5 3-.4 3 .3 3-.8 3 .3 3 .1 3 0 3-.2 3 .5 3 .1 3 0 3-.4 3-.3 3 .4 3 .3 3-.5 3-.3 3 .3 3-.1 3-.2 3 .6 3-.6 3 .8 3 .1 3-.1 3-.1 3 0 3 .1 3-.3 3 .1 3-.6 3 .4 3 .6 3-1 3 .4 3 .5 3-.4 3 .4 3-.4 3-.2 3 .6 3-.6 3 .5 3-.1 3 .3 3-.4 3 .1 3-.7 3 .7 3-.7 3 .2 3 .5 3-.5 3 .1 3 .3 3 .4 3-.9 3 0 3 .5 3 .1 3-.5 3 .4 3-.6 3 .1 3 0 3 .2 3 .3 3 .3 3-.4 3 0 3 0 3-.4 3 .5 3 .1 3-.1 3-.2 3 .3 3-.7 3 .1 3 .3 3 0 3-.1 3 .6 3-.2 3-.3 3 .2 3-.4 3 .5 3 0 3-.5 3 .4 3-.1 3 .1 3-.6 3 .4 3-.4 3 .5 3-.1 3 .1 3-.5 3 .2 3 .2 3 .2 3-.1 3-.3 3 .7 3-.9 3 .7 3 .1 3 .1 3-.9 3 .5 3-.2 3-.3 3 .5 3 .4 3-.4 3 .4 3-.9 3 .8 3-.5 3 0 3-.3 3 1 3-.2 3-.3 3-.1 3 .5 3 .1 3-.1 3-.9 3 .2 3 .1 3 0 3 .2 3-.3 3-.2 3 .8 3-.7 3 .7 3-.4 3 .2 3 .3 3-.1 3-.7 3 0 3 .4 3 .1 3 .2 3-.5 3 .5 3-.2 3 .1 3-.6 3 .2 3 .1 3 .1 3-.2 3 .4 3 .1 3-.6 3 .1 3 .3 3 .1 3-.2 3-.2 3 0 3 .7 3-1 3 .8 3-.7 3 .7 3-.5 3 .6 3-.7 3 .2 3-.2 3 .5 3-.1 3 .3 3-.6 3-.1 3 .1 3 .3 3-.5 3-.1 3 .7 3-.1 3 0 3 .3 3-.3 3 .2 3 .1 3-.1 3-.3 3-.1 3 .3 3-.6 3-.1 3 .1 3 0 3 .6 3-.4 3 0 3 .5 3-.5 3-.2 3 .2" fill="none" stroke="#56a64b" stroke-width="1.0" stroke-linejoin="round"/><path d="M68 838.1l.5 7.5 2.2 .2 2.8 0 .8-117.7 .7-45.4 .7-5.1 .7 10.1 1.5 149.7 .6 8.4 2.2 .1 2.8 0 .8-117.9 .7-45.5 .7-5 .7 10.1 1.4 149.9 .6 8.4 2.2-.1 2.8 0 .8-118.3 .7-45.6 .7-5.1 .7 10.2 1.5 150.4 .6 8.4 2.2 .1 2.8 0 .8-118.2 .7-45.5 .7-5.1 .7 10.1 1.5 150.3 .6 8.4 2.1-.1 2.8 0 .8-118.3 .7-45.7 .7-5 .7 10.1 1.5 150.4 .6 8.5 2.2-.1 2.8 0 .8-117.7 .7-45.4 .7-5.1 .7 10.1 1.5 149.7 .6 8.4 2.2-.1 2.7 0 .8-118.2 .7-45.6 .7-5 .7 10.1 1.5 150.3 .6 8.4 2.2 .1 2.8 0 .8-118.1 .7-45.5 .7-5.1 .7 10.1 1.5 150.2 .6 8.4 2.2 .1 2.7 0 .8-118.1 .7-45.5 .7-5.1 .7 10.2 1.5 150 .6 8.5 2.2-.2 2.8 0 .8-118.2 .7-45.7 .7-5 .7 10.1 1.5 150.4 .6 8.4 2.2 .1 2.8 0 .8-118.1 .7-45.6 .6-5 .7 10.1 1.5 150.2 .6 8.4 2.2 .1 2.8 0 .8-118 .7-45.5 .7-5.1 .7 10.1 1.5 150 .6 8.5 2.2 0 2.8 0 .8-118.1 .7-45.5 .7-5.1 .7 10.1 1.5 150.2 .5 8.4 2.2-.1 2.8 0 .8-117.9 .7-45.4 .7-5.1 .7 10.1 1.5 149.9 .6 8.4 2.2 .2 2.8 0 .8-118 .7-45.5 .7-5.1 .7 10.1 1.5 150.1 .6 8.4 2.1-.3 2.8 0 .8-118.1 .7-45.5 .7-5 .7 10.1 1.5 150 .6 8.5 2.2 .3 2.8 0 .8-117.8 .7-45.4 .7-5.1 .7 10.1 1.5 149.8 .6 8.4 2.2-.2 2.7 0 .8-118.2 .7-45.6 .7-5 .7 10.1 1.5 150.2 .6 8.5 2.2-.1 2.8 0 .8-118.2 .7-45.5 .7-5.1 .7 10.1 1.5 150.2 .6 8.5 2.2 0 2.8 0 .8-117.6 .6-45.3 .7-5.1 .7 10.1 1.5 149.5 .6 8.4 2.2 .3 2.8 0 .8-118.2 .7-45.6 .7-5.1 .7 10.1 1.5 150.4 .6 8.4 2.2-.3 2.8 0 .8-117.6 .7-45.4 .7-5 .7 10.1 1.4 149.5 .6 8.4 2.2 .2 2.8 0 .8-117.8 .7-45.4 .7-5 .7 10.1 1.5 149.7 .6 8.4 2.2-.1 2.8 0 .8-117.7 .7-45.4 .7-5.1 .7 10.1 1.5 149.7 .6 8.4 2.1 .2 2.8 0 .8-118 .7-45.5 .7-5.1 .7 10.1 1.5 150 .6 8.5 2.2-.1 2.8 0 .8-117.9 .7-45.5 .7-5 .7 10.1 1.5 149.9 .6 8.4 2.2-.1 2.7 0 .8-117.6 .7-45.4 .7-5.1 .7 10.1 1.5 149.6 .6 8.4 2.2-.1 2.8 0 .8-118 .7-45.5 .7-5 .7 10.1 1.5 150 .6 8.4 2.2 .1 2.7 0 .8-118 .7-45.5 .7-5.1 .7 10.2 1.5 150 .6 8.4 2.2 .2 2.8 0 .8-118.4 .7-45.7 .7-5.1 .7 10.2 1.5 150.5 .6 8.5 2.2-.2 2.8 0 .8-118 .7-45.5 .6-5.1 .7 10.1 1.5 150.1 .6 8.4 2.2 0 2.8 0 .8-117.9 .7-45.5 .7-5 .7 10.1 1.5 149.9 .6 8.4 2.2 .1 2.8 0 .8-117.9 .7-45.6 .7-5 .7 10.1 1.5 150 .5 8.4 2.2 0 2.8 0 .8-118.2 .7-45.5 .7-5.1 .7 10.2 1.5 150.1 .6 8.5 2.2 .2 2.8 0 .8-118 .7-45.5 .7-5 .7 10.1 1.5 149.9 .6 8.5 2.1-.2 2.8 0 .8-118.3 .7-45.7 .7-5.1 .7 10.2 1.5 150.5 .6 8.4 2.2-.1 2.8 0 .8-117.8 .7-45.5 .7-5 .7 10.1 1.5 149.8 .6 8.4 2.2-.1 2.7 0 .8-117.9 .7-45.6 .7-5 .7 10.1 1.5 150 .6 8.4 2.2 .1 2.8 0 .8-118.2 .7-45.6 .7-5.1 .7 10.1 1.5 150.4 .6 8.4 2.2 .2 2.8 0 .8-117.8 .6-45.5 .7-5 .7 10.1 1.5 149.8 .6 8.4 2.2-.2 2.8 0 .8-118.2 .7-45.6 .7-5.1 .7 10.2 1.5 150.2 .6 8.5 2.2 0 2.8 0 .8-117.8 .7-45.5 .7-5 .7 10.1 1.4 149.7 .6 8.5 2.2-.1 2.8 0 .8-117.7 .7-45.4 .7-5.1 .7 10.1 1.5 149.7 .6 8.4 2.2 .3 2.8 0 .8-118.4 .7-45.7 .7-5 .7 10.1 1.5 150.6 .6 8.4 2.1-.1 2.8 0 .8-117.9 .7-45.5 .7-5 .7 10.1 1.5 149.9 .6 8.4 2.2 0 2.8 0 .8-117.9 .7-45.5 .7-5.1 .7 10.1 1.5 150 .6 8.4 2.2-.1 2.7 0 .8-118.2 .7-45.6 .7-5.1 .7 10.1 1.5 150.3 .6 8.5 2.2 .2 2.8 0 .8-118.3 .7-45.7 .7-5.1 .7 10.2 1.5 150.5 .6 8.4 2.2 0 2.7 0 .8-117.9 .7-45.5 .7-5 .7 10.1 1.5 149.9 .6 8.4 2.2-.2 2.8 0 .8-118 .7-45.5 .7-5.1 .7 10.2 1.5 150 .6 8.4 2.2 0 2.8 0 .8-118.2 .7-45.5 .6-5.1 .7 10.1 1.5 150.2 .6 8.5 2.2 .2 2.8 0 .8-118.4 .7-45.7 .7-5.1 .7 10.2 1.5 150.5 .6 8.5 2.2-.3 2.8 0 .8-117.6 .7-45.3 .7-5.1 .7 10.1 1.5 149.5 .5 8.4 2.2 .1 2.8 0 .8-117.9 .7-45.5 .7-5 .7 10.1 1.5 149.9 .6 8.4 2.2 .1 2.8 0 .8-117.9 .7-45.5 .7-5 .7 10.1 1.5 149.9 .6 8.4 2.1 .1 2.8 0 .8-117.9 .7-45.5 .7-5 .7 10.1 1.5 149.9 .6 8.4 2.2-.2 2.8 0 .8-118.1 .7-45.5 .7-5.1 .7 10.1 1.5 150.1 .6 8.5 2.2 .3 2.7 0 .8-117.9 .7-45.5 .7-5 .7 10.1 1.5 149.8 .6 8.5 2.2-.3 2.8 0 .8-118.1 .7-45.6 .7-5 .7 10.1 1.5 150.2 .6 8.4 2.2 0 2.8 0 .8-117.7 .6-45.5 .7-5 .7 10.1 1.5 149.7 .6 8.4 2.2-.1 2.8 0 .8-118.2 .7-45.6 .7-5.1 .7 10.1 1.5 150.4 .6 8.4 2.2 0 2.8 0 .8-118.1 .7-45.6 .7-5 .7 10.1 1.4 150.2 .6 8.4 2.2 .3 2.8 0 .8-118.4 .7-45.6 .7-5.1 .7 10.2 1.5 150.5 .6 8.4 2.2-.3 2.8 0 .8-117.7 .7-45.5 .7-5 .7 10.1 1.5 149.7 .6 8.4 2.1 .3 2.8 0 .8-117.8 .7-45.4 .7-5.1 .7 10.1 1.5 149.8 .6 8.4 2.2 0 2.8 0 .8-117.8 .7-45.5 .7-5 .7 10.1 1.5 149.8 .6 8.4 2.2 0 2.7 0 .8-117.8 .7-45.4 .7-5.1 .7 10.1 1.5 149.8 .6 8.4 2.2-.2 2.8 0 .8-117.7 .7-45.4 .7-5.1 .7 10.1 1.5 149.7 .6 8.4 2.2-.1 2.7 0 .8-118.1 .7-45.5 .7-5.1 .7 10.1 1.5 150.1 .6 8.5 2.2 .3 2.8 0 .8-118.2 .7-45.5 .7-5.1 .7 10.1 1.5 150.3 .6 8.4 2.2-.1 2.8 0 .8-117.9 .7-45.5 .6-5 .7 10.1 1.5 149.8 .6 8.5 2.2-.1 2.8 0 .8-118.3 .7-45.6 .7-5.1 .7 10.2 1.5 150.4 .6 8.4 2.2 .2 2.8 0 .8-118.3 .7-45.7 .7-5 .7 10.1 1.5 150.4 .5 8.5 2.2 0 2.8 0 .8-118.1 .7-45.5 .7-5.1 .7 10.1 1.5 150.2 .6 8.4 2.2-.1 2.8 0 .8-117.7 .7-45.4 .7-5 .7 10 1.5 149.7 .6 8.4 2.1-.1 2.8 0 .8-117.8 .7-45.4 .7-5.1 .7 10.1 1.5 149.8 .6 8.4 2.2-.1 2.8 0 .8-117.7 .7-45.4 .7-5 .7 10.1 1.5 149.6 .6 8.4 2.2 .1 2.7 0 .8-117.7 .7-45.4 .7-5.1 .7 10.1 1.5 149.7 .6 8.4 2.2 0 2.8 0 .8-117.7 .7-45.4 .7-5.1 .7 10.1 1.5 149.7 .6 8.4 2.2 .2 2.8 0 .8-118.3 .6-45.7 .7-5 .7 10.1 1.5 150.5 .6 8.4 2.2-.2 2.8 0 .8-117.6 .7-45.4 .7-5.1 .7 10.1 1.5 149.6 .6 8.4 2.2 0 2.8 0 .8-118.3 .7-45.6 .7-5.1 .7 10.2 1.4 150.4 .6 8.4 2.2 0 2.8 0 .8-118 .7-45.6 .7-5 .7 10.1 1.5 150 .6 8.5 2.2 0 2.8 0 .8-117.9 .7-45.5 .7-5 .7 10.1 1.5 149.9 .6 8.4 2.1 .1 2.8 0 .8-118.3 .7-45.6 .7-5.1 .7 10.1 1.5 150.5 .6 8.4 2.2-.2 2.8 0 .8-118.1 .7-45.6 .7-5 .7 10.1 1.5 150.1 .6 8.5 2.2 .3 2.7 0 .8-118.3 .7-45.7 .7-5 .7 10.1 1.5 150.5 .6 8.4 2.2 0 2.8 0 .8-118 .7-45.5 .7-5 .7 10.1 1.5 149.9 .6 8.5 2.2-.2 2.7 0 .8-117.7 .7-45.4 .7-5 .7 10.1 1.5 149.6 .6 8.4 2.2 .2 2.8 0 .8-117.9 .7-45.4 .7-5.1 .7 10.1 1.5 149.9 .6 8.4 2.2 0 2.8 0 .8-118.1 .7-45.6 .6-5 .7 10.1 1.5 150.2 .6 8.4 2.2-.3 2.8 0 .8-117.6 .7-45.4 .7-5 .7 10.1 1.5 149.5 .6 8.4 2.2 0 2.8 0 .8-118.2 .7-45.5 .7-5.1 .7 10.2 1.5 150.1 .5 8.5 2.2 .1 2.8 0 .8-118.1 .7-45.5 .7-5 .7 10.1 1.5 150.1 .6 8.4 2.2 .1 2.8 0 .8-118.4 .7-45.6 .7-5.1 .7 10.2 1.5 150.4 .6 8.5 2.1-.2 2.8 0 .8-117.8 .7-45.4 .7-5.1 .7 10.1 1.5 149.8 .6 8.4 2.2 0 2.8 0 .8-118 .7-45.6 .7-5 .7 10.1 1.5 150.1 .6 8.4 2.2 .2 2.7 0 .8-118 .7-45.5 .7-5.1 .7 10.1 1.5 150.1 .6 8.4 2.2 .1 2.8 0 .8-117.8 .7-45.5 .7-5 .7 10.1 1.5 149.8 .6 8.4 2.2-.3 2.8 0 .8-118.2 .6-45.6 .7-5 .7 10.1 1.5 150.2 .6 8.5 2.2 .4 2.8 0 .8-118.3 .7-45.6 .7-5 .7 10.1 1.5 150.3 .6 8.5 2.2-.2 2.8 0 .8-118.4 .7-45.6 .7-5.1 .7 10.2 1.4 150.4 .6 8.5 2.2 .1 2.8 0 .8-118.1 .7-45.6 .7-5 .7 10.1 1.5 150.2 .6 8.4 2.2-.1 2.8 0 .8-117.9 .7-45.4 .7-5.1 .7 10.1 1.5 149.9 .6 8.4 2.1 .1 2.8 0 .8-118.5 .7-45.6 .7-5.1 .7 10.1 1.5 150.6 .6 8.5 2.2 0 2.8 0 .8-117.9 .7-45.5 .7-5 .7 10.1 1.5 149.9 .6 8.4 2.2-.1 2.7 0 .8-117.8 .7-45.4 .7-5.1 .7 10.1 1.5 149.8 .6 8.4 2.2 .1 2.8 0 .8-118.2 .7-45.7 .7-5 .7 10.1 1.5 150.4 .6 8.4 2.2 0 2.7 0 .8-118.2 .7-45.5 .7-5.1 .7 10.1 1.5 150.3 .6 8.4 2.2 0 2.8 0 .8-118 .7-45.5 .7-5.1 .7 10.1 1.5 150.1 .6 8.4 2.2-.1 2.8 0 .8-117.9 .7-45.5 .7-5 .6 10.1 1.5 149.9 .6 8.4 2.2-.2 2.8 0 .8-118 .7-45.6 .7-5 .7 10.1 1.5 150.1 .6 8.4 2.2 0 2.8 0 .8-118.1 .7-45.6 .7-5.1 .7 10.2 1.5 150.2 .5 8.4 2.2 .1 2.8 0 .8-117.8 .7-45.4 .7-5 .7 10.1 1.5 149.7 .6 8.4 2.2 0 2.8 0 .8-118.2 .7-45.5 .7-5.1 .7 10.1 1.5 150.2 .6 8.5 2.1 .1 2.8 0 .8-117.9 .7-45.5 .7-5.1 .7 10.1 1.5 150 .6 8.4 2.2-.1 2.8 0 .8-117.7 .7-45.3 .7-5.1 .7 10.1 1.5 149.6 .6 8.4 2.2 .2 2.7 0 .8-118.1 .7-45.6 .7-5 .7 10.1 1.5 150.1 .6 8.5 2.2-.3 2.8 0 .8-117.9 .7-45.5 .7-5 .7 10.1 1.5 149.9 .6 8.4 2.2 0 2.8 0 .8-117.8 .6-45.5 .7-5 .7 10.1 1.5 149.8 .6 8.4 2.2 .3 2.8 0 .8-118.3 .7-45.6 .7-5 .7 10.1 1.5 150.4 .6 8.4 2.2-.3 2.8 0 .8-117.9 .7-45.4 .7-5.1 .7 10.1 1.4 149.9 .6 8.4 2.2 .3 2.8 0 .8-118.4 .7-45.7 .7-5.1 .7 10.2 1.5 150.5 .6 8.5 2.2 0 2.8 0 .8-117.8 .7-45.5 .7-5 .7 10.1 1.5 149.8 .6 8.4 2.1 0 2.8 0 .8-118.3 .7-45.7 .7-5 .7 10.1 1.5 150.5 .6 8.4 2.2-.3 2.8 0 .8-117.8 .7-45.4 .7-5.1 .7 10.1 1.5 149.7 .6 8.5 2.2 .1 2.7 0 .8-117.7 .7-45.4 .7-5.1 .7 10.1 1.5 149.7 .6 8.4 2.2-.1 2.8 0 .8-117.7 .7-45.5 .7-5 .7 10.1 1.5 149.7 .6 8.4 2.2 .3 2.7 0 .8-118 .7-45.6 .7-5.1 .7 10.2 1.5 150.1 .6 8.4 2.2-.1 2.8 0 .8-118.2 .7-45.6 .7-5.1 .7 10.1 1.5 150.3 .6 8.5 2.2 0 2.8 0 .8-117.7 .7-45.4 .7-5.1 .6 10.1 1.5 149.7 .6 8.4 2.2 0 2.8 0 .8-117.8 .7-45.4 .7-5.1 .7 10.1 1.5 149.8 .6 8.4 2.2-.2 2.8 0 .8-118 .7-45.5 .7-5 .7 10.1 1.5 149.9 .5 8.5 2.2 0 2.8 0 .8-117.8 .7-45.4 .7-5 .7 10.1 .7 69" fill="none" stroke="#e0b02e" stroke-width="1.35" stroke-linejoin="round"/><path d="M68 723.6l0-.8 .4 5.1 .9 165.5 3.5 0 4 0 .9-165.7 .3-5.2 .4 5.2 .9 165.7 3.5 0 4 0 .9-165.6 .3-5.1 .4 5.1 .8 165.6 3.5 0 4 0 .9-165.8 .3-5.1 .4 5.1 .9 165.8 3.5 0 4 0 .9-165.9 .3-5.2 .4 5.2 .9 165.9 3.4 0 4 0 .9-165.8 .3-5.1 .4 5.1 .9 165.8 3.5 0 4 0 .9-165.7 .3-5.1 .4 5.1 .9 165.7 3.5 0 3.9 0 .9-165.4 .3-5.1 .4 5.1 .9 165.4 3.5 0 4 0 .9-165.7 .3-5.1 .4 5.1 .9 165.7 3.5 0 3.9 0 .9-165.5 .3-5.1 .4 5.1 .9 165.5 3.5 0 4 0 .9-165.5 .3-5.1 .4 5.1 .9 165.5 3.5 0 4 0 .9-165.6 .3-5.1 .3 5.1 .9 165.6 3.5 0 4 0 .9-165.4 .3-5.1 .4 5.1 .9 165.4 3.5 0 4 0 .9-165.7 .3-5.1 .4 5.1 .9 165.7 3.4 0 4 0 .9-165.6 .3-5.1 .4 5.1 .9 165.6 3.5 0 4 0 .9-165.8 .3-5.2 .4 5.2 .9 165.8 3.4 0 4 0 .9-165.5 .3-5.2 .4 5.2 .9 165.5 3.5 0 4 0 .9-165.6 .3-5.2 .4 5.2 .9 165.6 3.5 0 3.9 0 .9-165.9 .3-5.1 .4 5.1 .9 165.9 3.5 0 4 0 .9-165.5 .3-5.1 .4 5.1 .9 165.5 3.5 0 4 0 .8-165.6 .3-5.1 .4 5.1 .9 165.6 3.5 0 4 0 .9-165.7 .3-5.1 .4 5.1 .9 165.7 3.5 0 4 0 .9-165.7 .3-5.1 .4 5.1 .8 165.7 3.5 0 4 0 .9-165.8 .3-5.1 .4 5.1 .9 165.8 3.5 0 4 0 .9-165.8 .3-5.1 .4 5.1 .9 165.8 3.4 0 4 0 .9-165.6 .3-5.1 .4 5.1 .9 165.6 3.5 0 4 0 .9-165.9 .3-5.1 .4 5.1 .9 165.9 3.5 0 3.9 0 .9-165.4 .3-5.2 .4 5.2 .9 165.4 3.5 0 4 0 .9-165.6 .3-5.1 .4 5.1 .9 165.6 3.5 0 3.9 0 .9-165.9 .3-5.1 .4 5.1 .9 165.9 3.5 0 4 0 .9-165.6 .3-5.1 .4 5.1 .9 165.6 3.5 0 4 0 .9-165.6 .2-5.1 .4 5.1 .9 165.6 3.5 0 4 0 .9-165.5 .3-5.1 .4 5.1 .9 165.5 3.5 0 4 0 .9-165.7 .3-5.1 .4 5.1 .9 165.7 3.4 0 4 0 .9-165.5 .3-5.1 .4 5.1 .9 165.5 3.5 0 4 0 .9-165.9 .3-5.2 .4 5.2 .9 165.9 3.4 0 4 0 .9-165.6 .3-5.1 .4 5.1 .9 165.6 3.5 0 4 0 .9-165.9 .3-5.2 .4 5.2 .9 165.9 3.5 0 3.9 0 .9-165.5 .3-5.2 .4 5.2 .9 165.5 3.5 0 4 0 .9-165.4 .3-5.1 .4 5.1 .9 165.4 3.5 0 4 0 .8-165.6 .3-5.1 .4 5.1 .9 165.6 3.5 0 4 0 .9-165.7 .3-5.1 .4 5.1 .9 165.7 3.5 0 4 0 .9-165.7 .3-5.2 .4 5.2 .8 165.7 3.5 0 4 0 .9-165.9 .3-5.1 .4 5.1 .9 165.9 3.5 0 4 0 .9-165.9 .3-5.1 .4 5.1 .9 165.9 3.4 0 4 0 .9-165.4 .3-5.1 .4 5.1 .9 165.4 3.5 0 4 0 .9-165.6 .3-5.1 .4 5.1 .9 165.6 3.5 0 3.9 0 .9-165.5 .3-5.2 .4 5.2 .9 165.5 3.5 0 4 0 .9-165.8 .3-5.1 .4 5.1 .9 165.8 3.5 0 3.9 0 .9-165.9 .3-5.1 .4 5.1 .9 165.9 3.5 0 4 0 .9-165.6 .3-5.1 .4 5.1 .9 165.6 3.5 0 4 0 .9-165.6 .3-5.1 .3 5.1 .9 165.6 3.5 0 4 0 .9-165.6 .3-5.1 .4 5.1 .9 165.6 3.5 0 4 0 .9-165.5 .3-5.1 .4 5.1 .9 165.5 3.4 0 4 0 .9-165.4 .3-5.1 .4 5.1 .9 165.4 3.5 0 4 0 .9-165.8 .3-5.1 .4 5.1 .9 165.8 3.4 0 4 0 .9-165.9 .3-5.1 .4 5.1 .9 165.9 3.5 0 4 0 .9-165.5 .3-5.1 .4 5.1 .9 165.5 3.5 0 3.9 0 .9-165.4 .3-5.1 .4 5.1 .9 165.4 3.5 0 4 0 .9-165.8 .3-5.2 .4 5.2 .9 165.8 3.5 0 4 0 .8-165.6 .3-5.1 .4 5.1 .9 165.6 3.5 0 4 0 .9-165.4 .3-5.1 .4 5.1 .9 165.4 3.5 0 4 0 .9-165.4 .3-5.2 .4 5.2 .8 165.4 3.5 0 4 0 .9-165.7 .3-5.1 .4 5.1 .9 165.7 3.5 0 4 0 .9-165.6 .3-5.1 .4 5.1 .9 165.6 3.4 0 4 0 .9-165.4 .3-5.1 .4 5.1 .9 165.4 3.5 0 4 0 .9-165.7 .3-5.1 .4 5.1 .9 165.7 3.5 0 3.9 0 .9-165.4 .3-5.1 .4 5.1 .9 165.4 3.5 0 4 0 .9-165.4 .3-5.1 .4 5.1 .9 165.4 3.5 0 3.9 0 .9-165.8 .3-5.2 .4 5.2 .9 165.8 3.5 0 4 0 .9-165.6 .3-5.1 .4 5.1 .9 165.6 3.5 0 4 0 .9-165.7 .3-5.1 .3 5.1 .9 165.7 3.5 0 4 0 .9-165.7 .3-5.1 .4 5.1 .9 165.7 3.5 0 4 0 .9-165.6 .3-5.1 .4 5.1 .9 165.6 3.4 0 4 0 .9-165.4 .3-5.1 .4 5.1 .9 165.4 3.5 0 4 0 .9-165.8 .3-5.1 .4 5.1 .9 165.8 3.4 0 4 0 .9-165.6 .3-5.2 .4 5.2 .9 165.6 3.5 0 4 0 .9-165.9 .3-5.1 .4 5.1 .9 165.9 3.5 0 3.9 0 .9-165.8 .3-5.1 .4 5.1 .9 165.8 3.5 0 4 0 .9-165.7 .3-5.1 .4 5.1 .9 165.7 3.5 0 4 0 .8-165.5 .3-5.1 .4 5.1 .9 165.5 3.5 0 4 0 .9-165.4 .3-5.1 .4 5.1 .9 165.4 3.5 0 4 0 .9-165.4 .3-5.1 .4 5.1 .8 165.4 3.5 0 4 0 .9-165.8 .3-5.1 .4 5.1 .9 165.8 3.5 0 4 0 .9-165.9 .3-5.1 .4 5.1 .9 165.9 3.4 0 4 0 .9-165.9 .3-5.1 .4 5.1 .9 165.9 3.5 0 4 0 .9-165.9 .3-5.2 .4 5.2 .9 165.9 3.5 0 3.9 0 .9-165.9 .3-5.2 .4 5.2 .9 165.9 3.5 0 4 0 .9-165.5 .3-5.1 .4 5.1 .9 165.5 3.5 0 3.9 0 .9-165.7 .3-5.1 .4 5.1 .9 165.7 3.5 0 4 0 .9-165.5 .3-5.1 .4 5.1 .9 165.5 3.5 0 4 0 .9-165.6 .3-5.1 .3 5.1 .9 165.6 3.5 0 4 0 .9-165.4 .3-5.2 .4 5.2 .9 165.4 3.5 0 4 0 .9-165.6 .3-5.1 .4 5.1 .9 165.6 3.4 0 4 0 .9-165.8 .3-5.2 .4 5.2 .9 165.8 3.5 0 4 0 .9-165.7 .3-5.1 .4 5.1 .9 165.7 3.4 0 4 0 .9-165.7 .3-5.1 .4 5.1 .9 165.7 3.5 0 4 0 .9-165.7 .3-5.1 .4 5.1 .9 165.7 3.5 0 3.9 0 .9-165.8 .3-5.1 .4 5.1 .9 165.8 3.5 0 4 0 .9-165.8 .3-5.1 .4 5.1 .9 165.8 3.5 0 4 0 .8-165.9 .3-5.2 .4 5.2 .9 165.9 3.5 0 4 0 .9-165.8 .3-5.2 .4 5.2 .9 165.8 3.5 0 4 0 .9-165.6 .3-5.1 .4 5.1 .8 165.6 3.5 0 4 0 .9-166 .3-5.1 .4 5.1 .9 166 3.5 0 4 0 .9-165.5 .3-5.1 .4 5.1 .9 165.5 3.4 0 4 0 .9-165.9 .3-5.1 .4 5.1 .9 165.9 3.5 0 4 0 .9-165.7 .3-5.1 .4 5.1 .9 165.7 3.5 0 3.9 0 .9-165.9 .3-5.2 .4 5.2 .9 165.9 3.5 0 4 0 .9-165.6 .3-5.1 .4 5.1 .9 165.6 3.5 0 3.9 0 .9-165.5 .3-5.1 .4 5.1 .9 165.5 3.5 0 4 0 .9-165.5 .3-5.1 .4 5.1 .9 165.5 3.5 0 4 0 .9-165.5 .2-5.2 .4 5.2 .9 165.5 3.5 0 4 0 .9-165.5 .3-5.1 .4 5.1 .9 165.5 3.5 0 4 0 .9-165.9 .3-5.1 .4 5.1 .9 165.9 3.4 0 4 0 .9-165.6 .3-5.1 .4 5.1 .9 165.6 3.5 0 4 0 .9-165.8 .3-5.1 .4 5.1 .9 165.8 3.4 0 4 0 .9-165.5 .3-5.1 .4 5.1 .9 165.5 3.5 0 4 0 .9-165.4 .3-5.1 .4 5.1 .9 165.4 3.5 0 3.9 0 .9-165.4 .3-5.1 .4 5.1 .9 165.4 3.5 0 4 0 .9-165.6 .3-5.1 .4 5.1 .9 165.6 3.5 0 4 0 .8-165.6 .3-5.1 .4 5.1 .9 165.6 3.5 0 4 0 .9-165.6 .3-5.1 .4 5.1 .9 165.6 3.5 0 4 0 .9-165.6 .3-5.1 .4 5.1 .8 165.6 3.5 0 4 0 .9-165.6 .3-5.1 .4 5.1 .9 165.6 3.5 0 4 0 .9-165.7 .3-5.1 .4 5.1 .9 165.7 3.4 0 4 0 .9-165.6 .3-5.1 .4 5.1 .9 165.6 3.5 0 4 0 .9-165.8 .3-5.2 .4 5.2 .9 165.8 3.5 0 3.9 0 .9-165.7 .3-5.1 .4 5.1 .9 165.7 3.5 0 4 0 .9-165.6 .3-5.1 .4 5.1 .9 165.6 3.5 0 3.9 0 .9-165.7 .3-5.1 .4 5.1 .9 165.7 3.5 0 4 0 .9-165.8 .3-5.2 .4 5.2 .9 165.8 3.5 0 4 0 .9-165.9 .3-5.1 .3 5.1 .9 165.9 3.5 0 4 0 .9-165.7 .3-5.1 .4 5.1 .9 165.7 3.5 0 4 0 .9-165.5 .3-5.2 .4 5.2 .9 165.5 3.4 0 4 0 .3-51.7" fill="none" stroke="#5794f2" stroke-width="1.2" stroke-linejoin="round"/><path d="M68 761.9l1 1.5 1.7-3 1.6-5.8 1.7-3 1.6 3 1.7 5.8 1.7 3.6 1.6-3.1 1.7-6 1.6-3.1 1.7 3.1 1.7 6 1.6 2.6 1.7-2.9 1.6-5.8 1.7-2.9 1.6 2.9 1.7 5.8 1.7 3.1 1.6-2.9 1.7-5.8 1.6-2.9 1.7 2.9 1.7 5.8 1.6 2.9 1.7-2.9 1.6-5.9 1.7-2.9 1.7 2.9 1.6 5.9 1.7 3 1.6-3 1.7-6 1.7-3 1.6 3 1.7 6 1.6 2.8 1.7-2.8 1.6-5.8 1.7-2.8 1.7 2.8 1.6 5.8 1.7 3 1.6-3 1.7-5.9 1.7-2.9 1.6 2.9 1.7 5.9 1.6 2.6 1.7-2.8 1.7-5.6 1.6-2.8 1.7 2.8 1.6 5.6 1.7 2.8 1.7-2.8 1.6-5.7 1.7-2.8 1.6 2.8 1.7 5.7 1.7 2.8 1.6-2.8 1.7-5.8 1.6-2.9 1.7 2.9 1.6 5.8 1.7 3.2 1.7-3 1.6-5.9 1.7-2.9 1.6 2.9 1.7 5.9 1.7 2.6 1.6-2.9 1.7-5.8 1.6-2.9 1.7 2.9 1.7 5.8 1.6 3.1 1.7-2.9 1.6-5.9 1.7-3 1.7 3 1.6 5.9 1.7 2.7 1.6-2.9 1.7-5.9 1.6-2.9 1.7 2.9 1.7 5.9 1.6 3.3 1.7-3 1.6-5.9 1.7-2.9 1.7 2.9 1.6 5.9 1.7 2.8 1.6-3 1.7-6 1.7-3 1.6 3 1.7 6 1.6 3.2 1.7-2.9 1.7-5.8 1.6-2.9 1.7 2.9 1.6 5.8 1.7 2.9 1.6-3 1.7-5.9 1.7-3 1.6 3 1.7 5.9 1.6 3 1.7-3 1.7-5.8 1.6-3 1.7 3 1.6 5.8 1.7 2.6 1.7-2.8 1.6-5.8 1.7-2.8 1.6 2.8 1.7 5.8 1.7 3.1 1.6-3 1.7-6 1.6-3 1.7 3 1.7 6 1.6 2.8 1.7-2.9 1.6-5.9 1.7-2.9 1.6 2.9 1.7 5.9 1.7 3 1.6-3 1.7-5.8 1.6-3 1.7 3 1.7 5.8 1.6 3.3 1.7-2.9 1.6-5.9 1.7-2.9 1.7 2.9 1.6 5.9 1.7 2.7 1.6-3 1.7-6 1.7-3 1.6 3 1.7 6 1.6 3.2 1.7-2.9 1.6-5.9 1.7-3 1.7 3 1.6 5.9 1.7 2.4 1.6-2.8 1.7-5.7 1.7-2.8 1.6 2.8 1.7 5.7 1.6 2.8 1.7-2.8 1.7-5.7 1.6-2.8 1.7 2.8 1.6 5.7 1.7 3.1 1.7-2.9 1.6-5.7 1.7-2.9 1.6 2.9 1.7 5.7 1.6 2.9 1.7-3 1.7-6 1.6-3 1.7 3 1.6 6 1.7 3 1.7-2.9 1.6-5.8 1.7-2.8 1.6 2.8 1.7 5.8 1.7 2.8 1.6-2.9 1.7-5.8 1.6-2.9 1.7 2.9 1.7 5.8 1.6 2.9 1.7-2.9 1.6-5.8 1.7-2.9 1.7 2.9 1.6 5.8 1.7 2.9 1.6-3 1.7-5.9 1.6-2.9 1.7 2.9 1.7 5.9 1.6 2.8 1.7-2.8 1.6-5.6 1.7-2.8 1.7 2.8 1.6 5.6 1.7 3.1 1.6-2.9 1.7-5.7 1.7-2.9 1.6 2.9 1.7 5.7 1.6 3 1.7-3 1.7-6 1.6-3 1.7 3 1.6 6 1.7 2.6 1.6-2.8 1.7-5.6 1.7-2.8 1.6 2.8 1.7 5.6 1.6 3.3 1.7-2.9 1.7-5.9 1.6-2.9 1.7 2.9 1.6 5.9 1.7 2.6 1.7-2.9 1.6-5.8 1.7-2.9 1.6 2.9 1.7 5.8 1.7 3.1 1.6-3 1.7-6 1.6-3 1.7 3 1.7 6 1.6 2.7 1.7-2.9 1.6-5.9 1.7-2.9 1.6 2.9 1.7 5.9 1.7 3.1 1.6-3 1.7-5.9 1.6-2.9 1.7 2.9 1.7 5.9 1.6 3.2 1.7-3 1.6-5.8 1.7-3 1.7 3 1.6 5.8 1.7 2.5 1.6-2.9 1.7-5.8 1.7-2.9 1.6 2.9 1.7 5.8 1.6 3.1 1.7-2.8 1.6-5.7 1.7-2.9 1.7 2.9 1.6 5.7 1.7 3.1 1.6-3 1.7-6 1.7-3 1.6 3 1.7 6 1.6 3 1.7-3.1 1.7-6.1 1.6-3 1.7 3 1.6 6.1 1.7 2.6 1.7-2.8 1.6-5.6 1.7-2.8 1.6 2.8 1.7 5.6 1.7 2.9 1.6-2.9 1.7-5.6 1.6-2.9 1.7 2.9 1.6 5.6 1.7 3.3 1.7-3 1.6-6 1.7-3 1.6 3 1.7 6 1.7 2.7 1.6-3 1.7-6 1.6-2.9 1.7 2.9 1.7 6 1.6 2.8 1.7-2.8 1.6-5.6 1.7-2.8 1.7 2.8 1.6 5.6 1.7 3.3 1.6-3.1 1.7-6.1 1.6-3 1.7 3 1.7 6.1 1.6 2.8 1.7-2.9 1.6-5.8 1.7-2.9 1.7 2.9 1.6 5.8 1.7 2.9 1.6-3 1.7-6 1.7-3 1.6 3 1.7 6 1.6 3.3 1.7-3 1.7-5.9 1.6-3 1.7 3 1.6 5.9 1.7 2.6 1.6-2.8 1.7-5.7 1.7-2.8 1.6 2.8 1.7 5.7 1.6 2.9 1.7-2.9 1.7-5.6 1.6-2.9 1.7 2.9 1.6 5.6 1.7 3.1 1.7-2.9 1.6-5.8 1.7-2.9 1.6 2.9 1.7 5.8 1.7 2.7 1.6-2.9 1.7-5.8 1.6-2.9 1.7 2.9 1.7 5.8 1.6 3.1 1.7-2.9 1.6-6 1.7-2.9 1.6 2.9 1.7 6 1.7 2.8 1.6-2.9 1.7-5.9 1.6-2.9 1.7 2.9 1.7 5.9 1.6 3.1 1.7-2.9 1.6-5.9 1.7-2.9 1.7 2.9 1.6 5.9 1.7 2.6 1.6-2.9 1.7-5.9 1.7-3 1.6 3 1.7 5.9 1.6 3.1 1.7-2.9 1.6-6 1.7-3 1.7 3 1.6 6 1.7 2.6 1.6-2.9 1.7-5.8 1.7-3 1.6 3 1.7 5.8 1.6 2.9 1.7-2.9 1.7-5.9 1.6-2.9 1.7 2.9 1.6 5.9 1.7 3 1.7-2.9 1.6-5.9 1.7-2.9 1.6 2.9 1.7 5.9 1.7 2.7 1.6-2.8 1.7-5.6 1.6-2.8 1.7 2.8 1.6 5.6 1.7 2.9 1.7-2.8 1.6-5.7 1.7-2.8 1.6 2.8 1.7 5.7 1.7 3.1 1.6-2.9 1.7-5.8 1.6-2.9 1.7 2.9 1.7 5.8 1.6 2.9 1.7-2.9 1.6-5.8 1.7-2.9 1.7 2.9 1.6 5.8 1.7 2.7 1.6-2.9 1.7-5.7 1.6-2.9 1.7 2.9 1.7 5.7 1.6 3 1.7-3 1.6-6 1.7-3 1.7 3 1.6 6 1.7 3.2 1.6-2.9 1.7-6 1.7-2.9 1.6 2.9 1.7 6 1.6 2.4 1.7-2.8 1.7-5.7 1.6-2.8 1.7 2.8 1.6 5.7 1.7 3.1 1.6-2.8 1.7-5.8 1.7-2.9 1.6 2.9 1.7 5.8 1.6 2.8 1.7-3 1.7-6 1.6-3 1.7 3 1.6 6 1.7 2.9 1.7-2.9 1.6-5.8 1.7-3 1.6 3 1.7 5.8 1.7 3 1.6-3 1.7-5.8 1.6-3 1.7 3 1.7 5.8 1.6 2.7 1.7-2.9 1.6-5.7 1.7-2.9 1.6 2.9 1.7 5.7 1.7 3 1.6-2.8 1.7-5.7 1.6-2.8 1.7 2.8 1.7 5.7 1.6 2.9 1.7-2.9 1.6-5.7 1.7-2.8 1.7 2.8 1.6 5.7 1.7 2.9 1.6-3 1.7-5.8 1.7-2.9 1.6 2.9 1.7 5.8 1.6 2.8 1.7-2.8 1.6-5.7 1.7-2.8 1.7 2.8 1.6 5.7 1.7 2.8 1.6-2.8 1.7-5.7 1.7-2.8 1.6 2.8 1.7 5.7 1.6 3.2 1.7-3 1.7-5.9 1.6-2.9 1.7 2.9 1.6 5.9 1.7 2.7 1.7-2.8 1.6-5.7 1.7-2.8 1.6 2.8 1.7 5.7 1.7 3.1 1.6-3 1.7-5.9 1.6-3 1.7 3 1.6 5.9 1.7 3.1 1.7-3.1 1.6-6.1 1.7-3.1 1.6 3.1 1.7 6.1 1.7 3 1.6-3 1.7-6.1 1.6-3 1.7 3 1.7 6.1 1.6 2.9 1.7-2.9 1.6-5.8 1.7-2.9 1.7 2.9 1.6 5.8 1.7 3.1 1.6-3 1.7-6.2 1.6-3 1.7 3 1.7 6.2 1.6 2.9 1.7-2.9 1.6-5.9 1.7-2.9 1.7 2.9 1.6 5.9 1.7 2.8 1.6-3 1.7-6 1.7-3 1.6 3 1.7 6 1.6 3.2 1.7-3 1.7-6.2 1.6-3 1.7 3 1.6 6.2 1.7 2.8 1.6-3 1.7-6 1.7-3 1.6 3 1.7 6 1.6 3.2 1.7-3 1.7-6.1 1.6-3.1 1.7 3.1 1.6 6.1 1.7 2.8 1.7-3 1.6-5.9 1.7-3 1.6 3 1.7 5.9 1.7 2.9 1.6-2.9 1.7-5.8 1.6-2.9 1.7 2.9 1.7 5.8 1.6 2.8 1.7-2.9 1.6-5.9 1.7-2.9 1.6 2.9 1.7 5.9 1.7 2.9 1.6-2.9 1.7-5.8 1.6-2.9 1.7 2.9 1.7 5.8 1.6 3.1 1.7-3 1.6-6 1.7-3 1.7 3 1.6 6 1.7 2.9 1.6-2.9 1.7-5.8 1.7-2.9 1.6 2.9 1.7 5.8 1.6 2.9 1.7-2.9 1.6-6 1.7-2.9 1.7 2.9 1.6 6 1.7 3.2 1.6-3 1.7-6.1 1.7-3 1.6 3 1.7 6.1 1.6 2.9 1.7-3 1.7-6.1 1.6-3 1.7 3 1.6 6.1 1.7 2.9 1.7-2.9 1.6-5.8 1.7-2.9 1.6 2.9 1.7 5.8 1.6 3 1.7-2.9 1.7-6 1.6-2.9 1.7 2.9 1.6 6 1.7 2.7 1.7-2.8 1.6-5.8 1.7-2.8 1.6 2.8 1.7 5.8 1.7 3.1 1.6-2.9 1.7-6 1.6-3 1.7 3 1.7 6 1.6 2.7 1.7-2.9 1.6-5.8 1.7-2.9 1.7 2.9 1.6 5.8 1.7 2.9 1.6-2.9 1.7-5.7 1.6-2.9 1.7 2.9 1.7 5.7 1.6 2.9 1.7-2.9 1.6-5.9 1.7-3 1.7 3 1.6 5.9 1.7 2.7 1.6-2.9 1.7-5.8 1.7-2.9 1.6 2.9 1.7 5.8 1.6 3.1 1.7-3 1.7-5.9 1.6-3 1.7 3 1.6 5.9 1.7 2.9 1.6-2.9 1.7-5.9 1.7-3 1.6 3 1.7 5.9 1.6 3 1.7-2.9 1.7-5.9 1.6-3 1.7 3 1.6 5.9 1.7 3.1 1.7-2.9 1.6-5.9 1.7-3 1.6 3 1.7 5.9 1.7 2.8 1.6-2.9 1.7-5.8 1.6-3 1.7 3 1.7 5.8 1.6 2.5 1.7-2.8 1.6-5.7 1.7-2.8 1.6 2.8 1.7 5.7 1.7 3.3 1.6-3 1.7-5.9 1.6-3 1.7 3 1.7 5.9 1.6 2.5 1.7-2.9 1.6-5.8 1.7-2.9 1.7 2.9 1.6 5.8 1.7 3 1.6-2.9 1.7-5.6 1.7-2.8 1.6 2.8 1.7 5.6 1.6 2.9 1.7-2.9 1.6-5.8 1.7-2.9 1.7 2.9 1.6 5.8 1.7 2.8 1.6-2.9 1.7-5.7 1.7-2.8 1.6 2.8 1.7 5.7 1.6 3.2 1.7-3 1.7-6 1.6-3 1.7 3 1.6 6 1.7 2.8 1.7-3 1.6-5.8 1.7-3 1.6 3 1.7 5.8 1.7 2.9 1.6-2.8 1.7-5.7 1.6-2.8 1.7 2.8 1.6 5.7 1.7 3.1 1.7-2.9 1.6-5.8 1.7-2.9 1.6 2.9 1.7 5.8 1.7 2.9 1.6-2.9 1.7-5.7 1.6-2.9 1.7 2.9 1.7 5.7 1.6 2.8 1.7-2.9 1.6-5.8 1.7-3 1.7 3 1.4 5" fill="none" stroke="#ef843c" stroke-width="1.3" stroke-linejoin="round"/></g>
<text x="814.2" y="120.9" font-size="13" text-anchor="end" fill="#2a5bd7" font-weight="400" letter-spacing="0.45" stroke="#2a5bd7" stroke-width="0.3">Last *</text>
<line x1="635.4" y1="129.5" x2="822" y2="129.5" stroke="#dfe1e4" stroke-width="1"/>
<rect x="643.8" y="139.8" width="14.8" height="4" rx="1" fill="#56a64b"/>
<text x="667.5" y="146.4" font-size="13" text-anchor="start" fill="#24292e" font-weight="400" letter-spacing="0.2">na drive 01 02</text>
<text x="813.3" y="146.4" font-size="13" text-anchor="end" fill="#24292e" font-weight="400" letter-spacing="0.2">3.4 %</text>
<line x1="635.4" y1="154.5" x2="822" y2="154.5" stroke="#dfe1e4" stroke-width="1"/>
<rect x="643.8" y="164.8" width="14.8" height="4" rx="1" fill="#e0b400"/>
<text x="667.5" y="171.4" font-size="13" text-anchor="start" fill="#24292e" font-weight="400" letter-spacing="0.2">na drive 01 03</text>
<text x="813.3" y="171.4" font-size="13" text-anchor="end" fill="#24292e" font-weight="400" letter-spacing="0.2">9.9 %</text>
<line x1="635.4" y1="179.5" x2="822" y2="179.5" stroke="#dfe1e4" stroke-width="1"/>
<rect x="643.8" y="189.8" width="14.8" height="4" rx="1" fill="#5794f2"/>
<text x="667.5" y="196.4" font-size="13" text-anchor="start" fill="#24292e" font-weight="400" letter-spacing="0.2">na drive 01 04</text>
<text x="813.3" y="196.4" font-size="13" text-anchor="end" fill="#24292e" font-weight="400" letter-spacing="0.2">5.4 %</text>
<line x1="635.4" y1="204.5" x2="822" y2="204.5" stroke="#dfe1e4" stroke-width="1"/>
<rect x="643.8" y="214.8" width="14.8" height="4" rx="1" fill="#ee6a24"/>
<text x="667.5" y="221.4" font-size="13" text-anchor="start" fill="#24292e" font-weight="400" letter-spacing="0.2">na work 01 01</text>
<text x="813.3" y="221.4" font-size="13" text-anchor="end" fill="#24292e" font-weight="400" letter-spacing="0.2">3.1 %</text>
<line x1="635.4" y1="229.5" x2="822" y2="229.5" stroke="#dfe1e4" stroke-width="1"/>
<rect x="643.8" y="239.8" width="14.8" height="4" rx="1" fill="#e02f44"/>
<text x="667.5" y="246.4" font-size="13" text-anchor="start" fill="#24292e" font-weight="400" letter-spacing="0.2">na work 01 02</text>
<text x="813.3" y="246.4" font-size="13" text-anchor="end" fill="#24292e" font-weight="400" letter-spacing="0.2">15.4 %</text>
<line x1="635.4" y1="254.5" x2="822" y2="254.5" stroke="#dfe1e4" stroke-width="1"/>
<rect x="643.8" y="264.8" width="14.8" height="4" rx="1" fill="#3274d9"/>
<text x="667.5" y="271.4" font-size="13" text-anchor="start" fill="#24292e" font-weight="400" letter-spacing="0.2">na work 01 03</text>
<text x="813.3" y="271.4" font-size="13" text-anchor="end" fill="#24292e" font-weight="400" letter-spacing="0.2">5.7 %</text>
<line x1="635.4" y1="279.5" x2="822" y2="279.5" stroke="#dfe1e4" stroke-width="1"/>
<rect x="643.8" y="289.8" width="14.8" height="4" rx="1" fill="#a352cc"/>
<text x="667.5" y="296.4" font-size="13" text-anchor="start" fill="#24292e" font-weight="400" letter-spacing="0.2">na work 01 04</text>
<text x="813.3" y="296.4" font-size="13" text-anchor="end" fill="#24292e" font-weight="400" letter-spacing="0.2">4.7 %</text>
<line x1="635.4" y1="304.5" x2="822" y2="304.5" stroke="#dfe1e4" stroke-width="1"/>
<rect x="643.8" y="314.8" width="14.8" height="4" rx="1" fill="#705da0"/>
<text x="667.5" y="321.4" font-size="13" text-anchor="start" fill="#24292e" font-weight="400" letter-spacing="0.2">na drive 02 03</text>
<text x="813.3" y="321.4" font-size="13" text-anchor="end" fill="#24292e" font-weight="400" letter-spacing="0.2">2.1 %</text>
<line x1="635.4" y1="329.5" x2="822" y2="329.5" stroke="#dfe1e4" stroke-width="1"/>
<rect x="814.4" y="107.2" width="7.600000000000023" height="89.10000000000001" rx="4" fill="#e3e4e7"/>
<text x="1632.8" y="120.9" font-size="13" text-anchor="end" fill="#2a5bd7" font-weight="400" letter-spacing="0.45" stroke="#2a5bd7" stroke-width="0.3">Last *</text>
<line x1="1404.7" y1="129.5" x2="1640.4" y2="129.5" stroke="#dfe1e4" stroke-width="1"/>
<rect x="1412.9" y="139.8" width="14.8" height="4" rx="1" fill="#56a64b"/>
<text x="1436.4" y="146.4" font-size="13" text-anchor="start" fill="#24292e" font-weight="400" letter-spacing="0.2">gas dp - na drive 01 01</text>
<text x="1631.9" y="146.4" font-size="13" text-anchor="end" fill="#24292e" font-weight="400" letter-spacing="0.2">5.5</text>
<line x1="1404.7" y1="154.5" x2="1640.4" y2="154.5" stroke="#dfe1e4" stroke-width="1"/>
<rect x="1412.9" y="164.8" width="14.8" height="4" rx="1" fill="#e0b400"/>
<text x="1436.4" y="171.4" font-size="13" text-anchor="start" fill="#24292e" font-weight="400" letter-spacing="0.2">gas dp - na drive 01 02</text>
<text x="1631.9" y="171.4" font-size="13" text-anchor="end" fill="#24292e" font-weight="400" letter-spacing="0.2">4.9</text>
<line x1="1404.7" y1="179.5" x2="1640.4" y2="179.5" stroke="#dfe1e4" stroke-width="1"/>
<rect x="1412.9" y="189.8" width="14.8" height="4" rx="1" fill="#5794f2"/>
<text x="1436.4" y="196.4" font-size="13" text-anchor="start" fill="#24292e" font-weight="400" letter-spacing="0.2">gas dp - na drive 01 03</text>
<text x="1631.9" y="196.4" font-size="13" text-anchor="end" fill="#24292e" font-weight="400" letter-spacing="0.2">2.3</text>
<line x1="1404.7" y1="204.5" x2="1640.4" y2="204.5" stroke="#dfe1e4" stroke-width="1"/>
<rect x="1412.9" y="214.8" width="14.8" height="4" rx="1" fill="#ee6a24"/>
<text x="1436.4" y="221.4" font-size="13" text-anchor="start" fill="#24292e" font-weight="400" letter-spacing="0.2">gas dp - na drive 01 04</text>
<text x="1631.9" y="221.4" font-size="13" text-anchor="end" fill="#24292e" font-weight="400" letter-spacing="0.2">5.2</text>
<line x1="1404.7" y1="229.5" x2="1640.4" y2="229.5" stroke="#dfe1e4" stroke-width="1"/>
<rect x="1412.9" y="239.8" width="14.8" height="4" rx="1" fill="#e02f44"/>
<text x="1436.4" y="246.4" font-size="13" text-anchor="start" fill="#24292e" font-weight="400" letter-spacing="0.2">gas dp - na work 01 01</text>
<text x="1631.9" y="246.4" font-size="13" text-anchor="end" fill="#24292e" font-weight="400" letter-spacing="0.2">0.4</text>
<line x1="1404.7" y1="254.5" x2="1640.4" y2="254.5" stroke="#dfe1e4" stroke-width="1"/>
<rect x="1412.9" y="264.8" width="14.8" height="4" rx="1" fill="#3274d9"/>
<text x="1436.4" y="271.4" font-size="13" text-anchor="start" fill="#24292e" font-weight="400" letter-spacing="0.2">gas dp - na work 01 02</text>
<text x="1631.9" y="271.4" font-size="13" text-anchor="end" fill="#24292e" font-weight="400" letter-spacing="0.2">4.3</text>
<line x1="1404.7" y1="279.5" x2="1640.4" y2="279.5" stroke="#dfe1e4" stroke-width="1"/>
<rect x="1412.9" y="289.8" width="14.8" height="4" rx="1" fill="#a352cc"/>
<text x="1436.4" y="296.4" font-size="13" text-anchor="start" fill="#24292e" font-weight="400" letter-spacing="0.2">gas dp - na work 01 03</text>
<text x="1631.9" y="296.4" font-size="13" text-anchor="end" fill="#24292e" font-weight="400" letter-spacing="0.2">5.6</text>
<line x1="1404.7" y1="304.5" x2="1640.4" y2="304.5" stroke="#dfe1e4" stroke-width="1"/>
<rect x="1412.9" y="314.8" width="14.8" height="4" rx="1" fill="#705da0"/>
<text x="1436.4" y="321.4" font-size="13" text-anchor="start" fill="#24292e" font-weight="400" letter-spacing="0.2">gas dp - na work 01 04</text>
<text x="1631.9" y="321.4" font-size="13" text-anchor="end" fill="#24292e" font-weight="400" letter-spacing="0.2">4.7</text>
<line x1="1404.7" y1="329.5" x2="1640.4" y2="329.5" stroke="#dfe1e4" stroke-width="1"/>
<rect x="1632.3" y="107" width="7.7000000000000455" height="78" rx="4" fill="#e3e4e7"/>
<text x="814.1" y="400.9" font-size="13" text-anchor="end" fill="#2a5bd7" font-weight="400" letter-spacing="0.45" stroke="#2a5bd7" stroke-width="0.3">Last *</text>
<line x1="624.1" y1="409.5" x2="822" y2="409.5" stroke="#dfe1e4" stroke-width="1"/>
<rect x="632.5" y="419.8" width="14.8" height="4" rx="1" fill="#56a64b"/>
<text x="656.1" y="426.4" font-size="13" text-anchor="start" fill="#24292e" font-weight="400" letter-spacing="0.2">na drive 01 02</text>
<text x="813.2" y="426.4" font-size="13" text-anchor="end" fill="#24292e" font-weight="400" letter-spacing="0.2">0 ppm</text>
<line x1="624.1" y1="434.5" x2="822" y2="434.5" stroke="#dfe1e4" stroke-width="1"/>
<rect x="632.5" y="444.8" width="14.8" height="4" rx="1" fill="#e0b400"/>
<text x="656.1" y="451.4" font-size="13" text-anchor="start" fill="#24292e" font-weight="400" letter-spacing="0.2">na drive 01 03</text>
<text x="813.2" y="451.4" font-size="13" text-anchor="end" fill="#24292e" font-weight="400" letter-spacing="0.2">133 ppm</text>
<line x1="624.1" y1="459.5" x2="822" y2="459.5" stroke="#dfe1e4" stroke-width="1"/>
<rect x="632.5" y="469.8" width="14.8" height="4" rx="1" fill="#5794f2"/>
<text x="656.1" y="476.4" font-size="13" text-anchor="start" fill="#24292e" font-weight="400" letter-spacing="0.2">na drive 01 04</text>
<text x="813.2" y="476.4" font-size="13" text-anchor="end" fill="#24292e" font-weight="400" letter-spacing="0.2">0 ppm</text>
<line x1="624.1" y1="484.5" x2="822" y2="484.5" stroke="#dfe1e4" stroke-width="1"/>
<rect x="632.5" y="494.8" width="14.8" height="4" rx="1" fill="#ee6a24"/>
<text x="656.1" y="501.4" font-size="13" text-anchor="start" fill="#24292e" font-weight="400" letter-spacing="0.2">na work 01 01</text>
<text x="813.2" y="501.4" font-size="13" text-anchor="end" fill="#24292e" font-weight="400" letter-spacing="0.2">0 ppm</text>
<line x1="624.1" y1="509.5" x2="822" y2="509.5" stroke="#dfe1e4" stroke-width="1"/>
<rect x="632.5" y="519.8" width="14.8" height="4" rx="1" fill="#e02f44"/>
<text x="656.1" y="526.4" font-size="13" text-anchor="start" fill="#24292e" font-weight="400" letter-spacing="0.2">na work 01 02</text>
<text x="813.2" y="526.4" font-size="13" text-anchor="end" fill="#24292e" font-weight="400" letter-spacing="0.2">0 ppm</text>
<line x1="624.1" y1="534.5" x2="822" y2="534.5" stroke="#dfe1e4" stroke-width="1"/>
<rect x="632.5" y="544.8" width="14.8" height="4" rx="1" fill="#3274d9"/>
<text x="656.1" y="551.4" font-size="13" text-anchor="start" fill="#24292e" font-weight="400" letter-spacing="0.2">na work 01 03</text>
<text x="813.2" y="551.4" font-size="13" text-anchor="end" fill="#24292e" font-weight="400" letter-spacing="0.2">0 ppm</text>
<line x1="624.1" y1="559.5" x2="822" y2="559.5" stroke="#dfe1e4" stroke-width="1"/>
<rect x="632.5" y="569.8" width="14.8" height="4" rx="1" fill="#a352cc"/>
<text x="656.1" y="576.4" font-size="13" text-anchor="start" fill="#24292e" font-weight="400" letter-spacing="0.2">na work 01 04</text>
<text x="813.2" y="576.4" font-size="13" text-anchor="end" fill="#24292e" font-weight="400" letter-spacing="0.2">0 ppm</text>
<line x1="624.1" y1="584.5" x2="822" y2="584.5" stroke="#dfe1e4" stroke-width="1"/>
<rect x="632.5" y="594.8" width="14.8" height="4" rx="1" fill="#705da0"/>
<text x="656.1" y="601.4" font-size="13" text-anchor="start" fill="#24292e" font-weight="400" letter-spacing="0.2">na drive 02 03</text>
<text x="813.2" y="601.4" font-size="13" text-anchor="end" fill="#24292e" font-weight="400" letter-spacing="0.2">0 ppm</text>
<line x1="624.1" y1="609.5" x2="822" y2="609.5" stroke="#dfe1e4" stroke-width="1"/>
<rect x="814.3" y="387" width="7.7000000000000455" height="89.69999999999999" rx="4" fill="#e3e4e7"/>
<text x="1632.9" y="400.9" font-size="13" text-anchor="end" fill="#2a5bd7" font-weight="400" letter-spacing="0.45" stroke="#2a5bd7" stroke-width="0.3">Last *</text>
<line x1="1440.8" y1="409.5" x2="1640" y2="409.5" stroke="#dfe1e4" stroke-width="1"/>
<rect x="1448.8" y="419.8" width="14.8" height="4" rx="1" fill="#56a64b"/>
<text x="1472.9" y="426.4" font-size="13" text-anchor="start" fill="#24292e" font-weight="400" letter-spacing="0.2">na drive 01 02</text>
<text x="1632.0" y="426.4" font-size="13" text-anchor="end" fill="#24292e" font-weight="400" letter-spacing="0.2">684 ppm</text>
<line x1="1440.8" y1="434.5" x2="1640" y2="434.5" stroke="#dfe1e4" stroke-width="1"/>
<rect x="1448.8" y="444.8" width="14.8" height="4" rx="1" fill="#e0b400"/>
<text x="1472.9" y="451.4" font-size="13" text-anchor="start" fill="#24292e" font-weight="400" letter-spacing="0.2">na drive 01 03</text>
<text x="1632.0" y="451.4" font-size="13" text-anchor="end" fill="#24292e" font-weight="400" letter-spacing="0.2">62 ppm</text>
<line x1="1440.8" y1="459.5" x2="1640" y2="459.5" stroke="#dfe1e4" stroke-width="1"/>
<rect x="1448.8" y="469.8" width="14.8" height="4" rx="1" fill="#5794f2"/>
<text x="1472.9" y="476.4" font-size="13" text-anchor="start" fill="#24292e" font-weight="400" letter-spacing="0.2">na drive 01 04</text>
<text x="1632.0" y="476.4" font-size="13" text-anchor="end" fill="#24292e" font-weight="400" letter-spacing="0.2">254 ppm</text>
<line x1="1440.8" y1="484.5" x2="1640" y2="484.5" stroke="#dfe1e4" stroke-width="1"/>
<rect x="1448.8" y="494.8" width="14.8" height="4" rx="1" fill="#ee6a24"/>
<text x="1472.9" y="501.4" font-size="13" text-anchor="start" fill="#24292e" font-weight="400" letter-spacing="0.2">na work 01 01</text>
<text x="1632.0" y="501.4" font-size="13" text-anchor="end" fill="#24292e" font-weight="400" letter-spacing="0.2">198 ppm</text>
<line x1="1440.8" y1="509.5" x2="1640" y2="509.5" stroke="#dfe1e4" stroke-width="1"/>
<rect x="1448.8" y="519.8" width="14.8" height="4" rx="1" fill="#e02f44"/>
<text x="1472.9" y="526.4" font-size="13" text-anchor="start" fill="#24292e" font-weight="400" letter-spacing="0.2">na work 01 02</text>
<text x="1632.0" y="526.4" font-size="13" text-anchor="end" fill="#24292e" font-weight="400" letter-spacing="0.2">208 ppm</text>
<line x1="1440.8" y1="534.5" x2="1640" y2="534.5" stroke="#dfe1e4" stroke-width="1"/>
<rect x="1448.8" y="544.8" width="14.8" height="4" rx="1" fill="#3274d9"/>
<text x="1472.9" y="551.4" font-size="13" text-anchor="start" fill="#24292e" font-weight="400" letter-spacing="0.2">na work 01 03</text>
<text x="1632.0" y="551.4" font-size="13" text-anchor="end" fill="#24292e" font-weight="400" letter-spacing="0.2">233 ppm</text>
<line x1="1440.8" y1="559.5" x2="1640" y2="559.5" stroke="#dfe1e4" stroke-width="1"/>
<rect x="1448.8" y="569.8" width="14.8" height="4" rx="1" fill="#a352cc"/>
<text x="1472.9" y="576.4" font-size="13" text-anchor="start" fill="#24292e" font-weight="400" letter-spacing="0.2">na work 01 04</text>
<text x="1632.0" y="576.4" font-size="13" text-anchor="end" fill="#24292e" font-weight="400" letter-spacing="0.2">537 ppm</text>
<line x1="1440.8" y1="584.5" x2="1640" y2="584.5" stroke="#dfe1e4" stroke-width="1"/>
<rect x="1448.8" y="594.8" width="14.8" height="4" rx="1" fill="#705da0"/>
<text x="1472.9" y="601.4" font-size="13" text-anchor="start" fill="#24292e" font-weight="400" letter-spacing="0.2">na drive 02 03</text>
<text x="1632.0" y="601.4" font-size="13" text-anchor="end" fill="#24292e" font-weight="400" letter-spacing="0.2">632 ppm</text>
<line x1="1440.8" y1="609.5" x2="1640" y2="609.5" stroke="#dfe1e4" stroke-width="1"/>
<rect x="1632.6" y="387.5" width="7.400000000000091" height="88.80000000000001" rx="4" fill="#e3e4e7"/>
<text x="1633.1" y="680.9" font-size="13" text-anchor="end" fill="#2a5bd7" font-weight="400" letter-spacing="0.45" stroke="#2a5bd7" stroke-width="0.3">Last *</text>
<line x1="1410" y1="689.5" x2="1641" y2="689.5" stroke="#dfe1e4" stroke-width="1"/>
<rect x="1418.7" y="699.8" width="14.8" height="4" rx="1" fill="#56a64b"/>
<text x="1441.6" y="706.4" font-size="13" text-anchor="start" fill="#24292e" font-weight="400" letter-spacing="0.36">air static - na na 02 na</text>
<text x="1632.2" y="706.4" font-size="13" text-anchor="end" fill="#24292e" font-weight="400" letter-spacing="0.2">22.2</text>
<line x1="1410" y1="714.5" x2="1641" y2="714.5" stroke="#dfe1e4" stroke-width="1"/>
<rect x="1418.7" y="724.8" width="14.8" height="4" rx="1" fill="#e0b400"/>
<text x="1441.6" y="731.4" font-size="13" text-anchor="start" fill="#24292e" font-weight="400" letter-spacing="0.36">air static - na na 03 na</text>
<text x="1632.2" y="731.4" font-size="13" text-anchor="end" fill="#24292e" font-weight="400" letter-spacing="0.2">29.2</text>
<line x1="1410" y1="739.5" x2="1641" y2="739.5" stroke="#dfe1e4" stroke-width="1"/>
<rect x="1418.7" y="749.8" width="14.8" height="4" rx="1" fill="#5794f2"/>
<text x="1441.6" y="756.4" font-size="13" text-anchor="start" fill="#24292e" font-weight="400" letter-spacing="0.36">air static - na na 04 na</text>
<text x="1632.2" y="756.4" font-size="13" text-anchor="end" fill="#24292e" font-weight="400" letter-spacing="0.2">23.3</text>
<line x1="1410" y1="764.5" x2="1641" y2="764.5" stroke="#dfe1e4" stroke-width="1"/>
<rect x="1418.7" y="774.8" width="14.8" height="4" rx="1" fill="#ee6a24"/>
<text x="1441.6" y="781.4" font-size="13" text-anchor="start" fill="#24292e" font-weight="400" letter-spacing="0.36">air static - na na 05 na</text>
<text x="1632.2" y="781.4" font-size="13" text-anchor="end" fill="#24292e" font-weight="400" letter-spacing="0.2">19.0</text>
<line x1="1410" y1="789.5" x2="1641" y2="789.5" stroke="#dfe1e4" stroke-width="1"/>
<line x1="635.4" y1="329.5" x2="822" y2="329.5" stroke="#fff" stroke-width="1.2"/>
<line x1="1404.7" y1="329.5" x2="1640.4" y2="329.5" stroke="#fff" stroke-width="1.2"/>
<line x1="624.1" y1="609.5" x2="822" y2="609.5" stroke="#fff" stroke-width="1.2"/>
<line x1="1440.8" y1="609.5" x2="1640" y2="609.5" stroke="#fff" stroke-width="1.2"/>
</svg></body></html>
